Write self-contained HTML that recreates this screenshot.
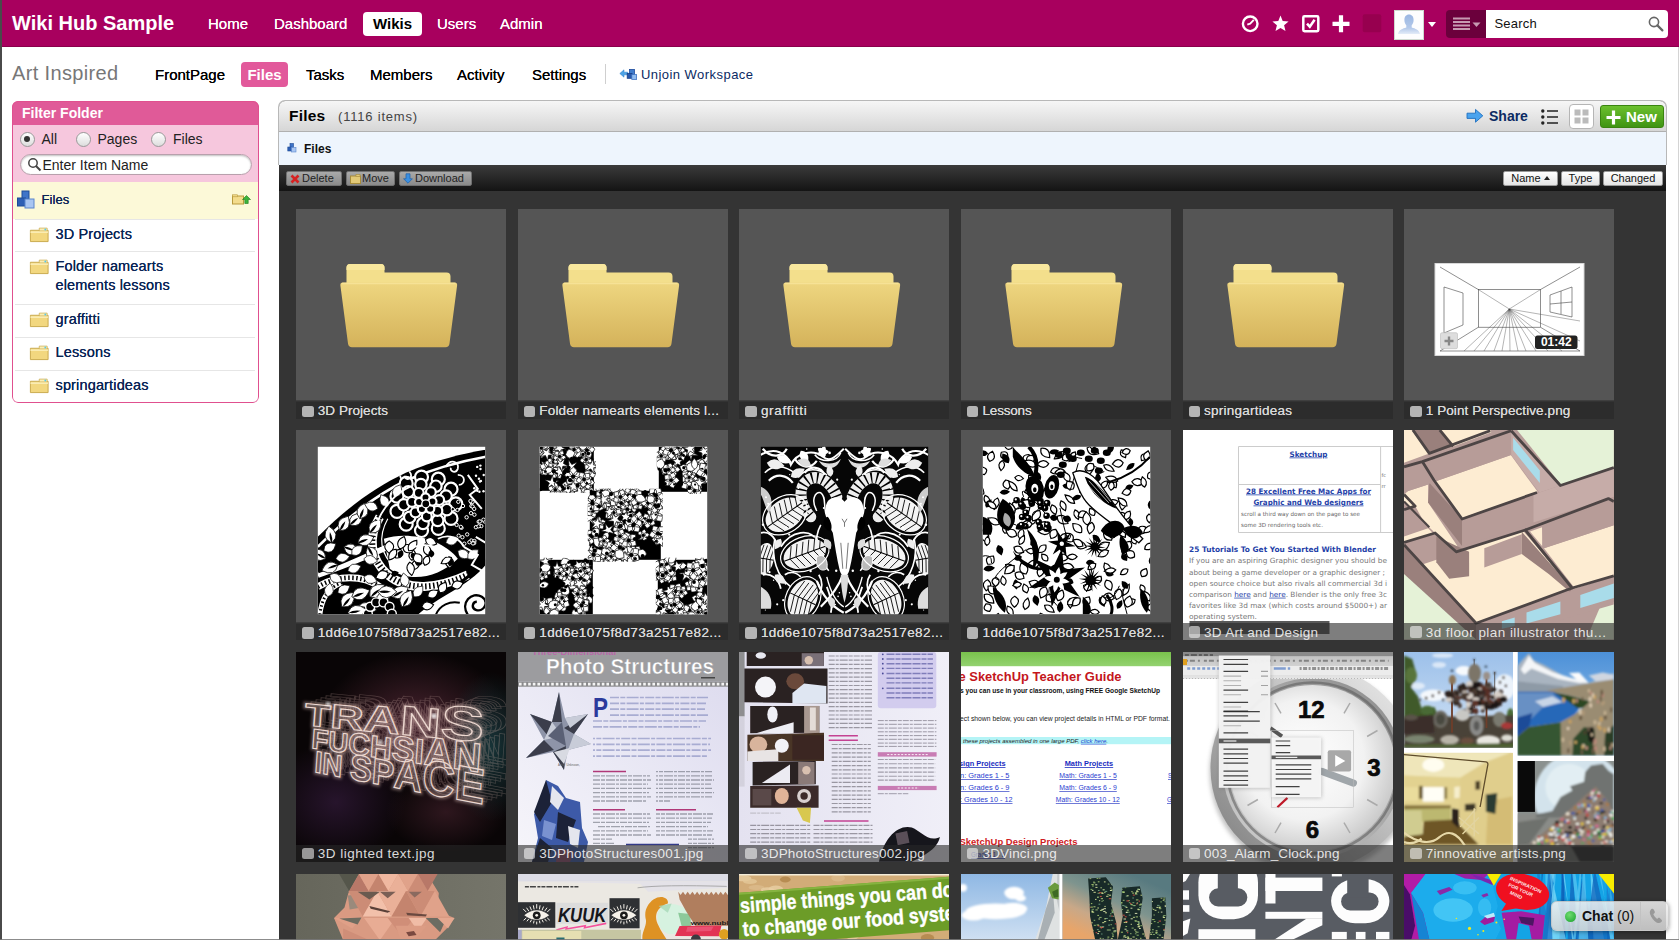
<!DOCTYPE html>
<html lang="en"><head><meta charset="utf-8"><title>Wiki Hub Sample - Files</title>
<style>
*{box-sizing:border-box;margin:0;padding:0}
html,body{width:1679px;height:940px;overflow:hidden;background:#fff}
body{font-family:"Liberation Sans",sans-serif;color:#000;position:relative}
.abs{position:absolute}
#edge{left:0;top:0;width:2px;height:940px;background:#4a4a4a;z-index:50}
#top{left:0;top:0;width:1679px;height:47px;background:#a8005e;border-bottom:1px solid #8a004c}
#brand{left:12px;top:11px;font-size:20px;font-weight:bold;color:#fff;line-height:24px;white-space:nowrap}
.tn{top:14px;font-size:15px;color:#fff;line-height:20px;white-space:nowrap;text-shadow:0 0 .4px #fff}
#wikis{left:363px;top:12px;width:59px;height:24px;background:#fff;border-radius:4px;color:#000;font-weight:bold;font-size:15px;line-height:24px;text-align:center}
#sub .sn{top:65px;font-size:15px;line-height:20px;color:#000;white-space:nowrap;text-shadow:0 0 .3px #000}
#ws{left:12px;top:61px;font-size:20px;line-height:24px;color:#777;white-space:nowrap;letter-spacing:.35px}
#filestab{left:241px;top:62px;width:47px;height:25px;background:#e2599b;border-radius:4px;color:#fff;font-weight:bold;font-size:15px;line-height:25px;text-align:center}
#sep{left:604.8px;top:64px;width:1.6px;height:20px;background:#cfcfcf}
#unjoin{left:641px;top:66px;font-size:13px;line-height:18px;color:#0b2a63;white-space:nowrap;letter-spacing:.45px}
/* sidebar */
#side{left:12px;top:101px;width:247px;height:302px;border-radius:6px;background:#fff;overflow:hidden}
#side:after{content:"";position:absolute;left:0;top:0;right:0;bottom:0;border:1.5px solid #e0508f;border-radius:6px}
#side .hd{left:0;top:0;width:248px;height:24px;background:#e05a98;color:#fff;font-weight:bold;font-size:14px;line-height:25.5px;padding-left:10px}
#side .flt{left:0;top:24px;width:248px;height:57px;background:#f6c7dd}
.radio{width:15px;height:15px;border-radius:50%;border:1px solid #999;background:linear-gradient(#fff,#ddd);top:30.5px}
.rl{top:29px;font-size:14px;line-height:18px;color:#222}
#fin{left:7.5px;top:52.5px;width:232px;height:21.5px;border:1px solid #b8a0ac;border-radius:12px;background:#fff;box-shadow:inset 0 1px 2px rgba(0,0,0,.25)}
#fin span{position:absolute;left:22px;top:1px;font-size:14px;line-height:18px;color:#222;white-space:nowrap}
#side .root{left:0;top:81px;width:248px;height:37px;background:#fcf9d8}
.fr{left:3px;width:240px;border-top:1px solid #e6e6e6}
.fr span{position:absolute;left:40.5px;font-size:14.5px;line-height:19.4px;color:#0a2455;white-space:nowrap;letter-spacing:.15px;text-shadow:0 0 .3px #0a2455}
.fi{position:absolute;left:14px}
/* main panel */
#panel{left:279px;top:101px;width:1387.3px;height:845px;border-radius:6px 6px 0 0;overflow:hidden;background:#343434}
#pbord{left:278px;top:100px;width:1389.3px;height:65px;border:1px solid #b8b8b8;border-bottom:none;border-radius:7px 7px 0 0;z-index:5;pointer-events:none}
#bedge{left:0;top:939px;width:1679px;height:1px;background:rgba(120,120,120,.85);z-index:60}
#redge{left:1678px;top:47px;width:1px;height:893px;background:#d4d4d4}
#ph{left:0;top:0;width:1389px;height:31px;background:linear-gradient(#f6f6f6,#d6d6d6);border-bottom:1px solid #b0b0b0}
#ph b{position:absolute;left:10px;top:5px;font-size:15.5px;letter-spacing:.2px;line-height:20px}
#ph i{position:absolute;left:59px;top:7px;font-style:normal;font-size:13px;line-height:18px;color:#444;letter-spacing:.8px}
#bc{left:0;top:31px;width:1389px;height:33px;background:#eef5fd}
#bc b{position:absolute;left:25px;top:8px;font-size:12px;line-height:18px;color:#111}
#tb{left:0;top:64px;width:1389px;height:26px;background:linear-gradient(#3b3b3b,#141414)}
.gb{position:absolute;top:6px;height:15px;border-radius:2px;background:linear-gradient(#aaa,#8a8a8a);border:1px solid #707070;color:#222;font-size:11px;line-height:13px;white-space:nowrap}
.wb{position:absolute;top:6px;height:15px;border-radius:2px;background:linear-gradient(#fff,#e4e4e4);border:1px solid #999;color:#111;font-size:11px;line-height:13px;text-align:center;white-space:nowrap}
.tile{position:absolute;width:210px;height:210px;background:#555;overflow:hidden}
.tile svg{position:absolute;left:0;top:0}
.lb{position:absolute;left:0;bottom:0;width:210px;height:16.5px;background:#2c2c2c;color:#d8d8d8;font-size:13.5px;line-height:16.5px;box-shadow:0 -1.6px 0 #333;white-space:nowrap;overflow:hidden;text-shadow:0 0 .3px #ddd}
.lb.ov{background:rgba(40,40,40,.6);color:rgba(255,255,255,.85);text-shadow:none;box-shadow:none;height:17.5px;line-height:17.5px}
.lb em{position:absolute;left:6px;top:3.5px;width:11.4px;height:11.4px;border-radius:2.5px;background:#b4b4b4}
.lb.ov em{background:rgba(255,255,255,.55)}
.lb span{position:absolute;left:21.5px;top:.8px}
#chat{left:1551px;top:901px;width:118px;height:29.5px;border-radius:6px;background:linear-gradient(rgba(240,240,240,.86),rgba(214,214,214,.86));border:1px solid rgba(190,190,190,.55);box-shadow:0 1px 4px rgba(0,0,0,.4);z-index:20}
</style></head><body>
<div id="edge" class="abs"></div>
<div id="top" class="abs">
 <div id="brand" class="abs">Wiki Hub Sample</div>
 <div class="tn abs" style="left:208px">Home</div>
 <div class="tn abs" style="left:274px">Dashboard</div>
 <div id="wikis" class="abs">Wikis</div>
 <div class="tn abs" style="left:437px">Users</div>
 <div class="tn abs" style="left:500px">Admin</div>
 <svg class="abs" style="left:1236px;top:8px" width="150" height="32" viewBox="0 0 150 32">
  <circle cx="14.200" cy="15.800" r="7.300" fill="none" stroke="#fff" stroke-width="2.400"/>
  <path d="M11.300 16.600L14.200 15.600L17.800 11.800" stroke="#fff" stroke-width="1.900" fill="none" stroke-linejoin="round"/>
  <path d="M44.500 7.600l2.200 5.500 5.900.4-4.500 3.800 1.400 5.700-5-3.100-5 3.100 1.400-5.700-4.500-3.800 5.900-.4z" fill="#fff"/>
  <rect x="67.300" y="8.300" width="15" height="15" rx="1.200" fill="none" stroke="#fff" stroke-width="2.500"/>
  <path d="M71 15.600l2.800 3.100 4.800-7" stroke="#fff" stroke-width="2.500" fill="none"/>
  <path d="M105 7.300v17M96.500 15.800h17" stroke="#fff" stroke-width="4.200" fill="none"/>
  <rect x="126.700" y="6.200" width="18.600" height="18" rx="2" fill="#97004f"/>
 </svg>
 <div class="abs" style="left:1393.5px;top:9.5px;width:30px;height:30px;background:#fff;border:1px solid #cfd8cf;overflow:hidden">
  <svg width="28" height="28" viewBox="0 0 28 28"><defs><linearGradient id="avg" x1="0" y1="0" x2="0" y2="1"><stop offset="0" stop-color="#9ab6e2"/><stop offset=".7" stop-color="#b4c9ea"/><stop offset="1" stop-color="#e4ecf8"/></linearGradient></defs><rect width="28" height="28" fill="#fdfdfe"/><path d="M14 3.500c3 0 4.600 2.300 4.600 5.500 0 2.300-.8 4.200-1.900 5.300v2.200c3.500 1 7.300 2.300 8.300 6.500H3c1-4.200 4.800-5.500 8.300-6.500v-2.200C10.200 13.200 9.400 11.300 9.400 9c0-3.200 1.600-5.500 4.600-5.500z" fill="url(#avg)"/></svg>
 </div>
 <div class="abs" style="left:1428px;top:22px;border-left:4.5px solid transparent;border-right:4.5px solid transparent;border-top:5px solid #fff"></div>
 <div class="abs" style="left:1446px;top:9.5px;width:40px;height:28px;background:#6b003c;border-radius:4px 0 0 4px">
  <svg width="40" height="28" viewBox="0 0 40 28"><path d="M7 8.5h17M7 12h17M7 15.5h17M7 19h17" stroke="#c79bb2" stroke-width="1.8"/><path d="M26.5 12.5h8l-4 4.4z" fill="#c79bb2"/></svg>
 </div>
 <div class="abs" style="left:1485.5px;top:9.5px;width:182px;height:28px;background:#fff;border-radius:0 4px 4px 0">
  <span class="abs" style="left:9px;top:5px;font-size:13px;line-height:18px;color:#111;letter-spacing:.2px">Search</span>
  <svg class="abs" style="left:161px;top:5px" width="18" height="18" viewBox="0 0 18 18"><circle cx="7" cy="7" r="4.6" fill="none" stroke="#666" stroke-width="1.6"/><path d="M10.4 10.4l5 5" stroke="#666" stroke-width="2.2" stroke-linecap="round"/></svg>
 </div>
</div>
<div id="sub">
 <div id="ws" class="abs">Art Inspired</div>
 <div class="sn abs" style="left:155px">FrontPage</div>
 <div id="filestab" class="abs">Files</div>
 <div class="sn abs" style="left:306px">Tasks</div>
 <div class="sn abs" style="left:370px">Members</div>
 <div class="sn abs" style="left:457px">Activity</div>
 <div class="sn abs" style="left:532px">Settings</div>
 <div id="sep" class="abs"></div>
 <svg class="abs" style="left:619px;top:67px" width="19" height="14" viewBox="0 0 19 14"><path d="M.8 6.500L5 2.800V5.200H8.800V7.800H5V10.200z" fill="#4ea4e6" stroke="#2a7cc8" stroke-width=".5"/><rect x="10.500" y="2.400" width="5" height="5" fill="#3f7ccc" stroke="#1f4c9c" stroke-width=".8"/><rect x="8.200" y="6.500" width="4.800" height="4.800" fill="#2558ac" stroke="#173f88" stroke-width=".8"/><rect x="12.800" y="7.600" width="4.800" height="4.800" fill="#8fbcf0" stroke="#3f74c4" stroke-width=".8"/></svg>
 <div id="unjoin" class="abs">Unjoin Workspace</div>
</div>
<div id="side" class="abs">
 <div class="hd abs">Filter Folder</div>
 <div class="flt abs"></div>
 <div class="radio abs" style="left:7.500px"><i style="position:absolute;left:3.5px;top:3.5px;width:6px;height:6px;border-radius:50%;background:#333"></i></div>
 <div class="rl abs" style="left:29.5px">All</div>
 <div class="radio abs" style="left:63.500px"></div>
 <div class="rl abs" style="left:85.500px">Pages</div>
 <div class="radio abs" style="left:139px"></div>
 <div class="rl abs" style="left:161px">Files</div>
 <div id="fin" class="abs"><svg style="position:absolute;left:6px;top:2.500px" width="15" height="15" viewBox="0 0 15 15"><circle cx="6" cy="6" r="4.2" fill="none" stroke="#444" stroke-width="1.5"/><path d="M9 9l4.5 4.5" stroke="#444" stroke-width="2"/></svg><span>Enter Item Name</span></div>
 <div class="root abs">
  <svg class="abs" style="left:4px;top:8px" width="20" height="20" viewBox="0 0 20 20"><rect x="6" y="1" width="7" height="8" fill="#3f74c8" stroke="#1e4c98"/><rect x="1.5" y="8" width="8" height="8" fill="#2d5fb4" stroke="#1e4c98"/><rect x="9" y="9" width="9" height="9" fill="#a9c6f2" stroke="#5a86cc"/></svg>
  <span class="abs" style="left:29.500px;top:8px;font-size:13px;line-height:20px;color:#0a2455;letter-spacing:.1px;text-shadow:0 0 .3px #0a2455">Files</span>
  <svg class="abs" style="left:220px;top:12px" width="19" height="12" viewBox="0 0 19 12"><rect x=".5" y="2" width="11" height="8" fill="#f3dc8c" stroke="#b89a3c"/><rect x=".5" y=".8" width="5" height="2" fill="#f3dc8c" stroke="#b89a3c" stroke-width=".6"/><path d="M14.5 1.5l4 4h-2.3v4h-3.4v-4h-2.3z" fill="#3cb43c" stroke="#1c7c1c" stroke-width=".6"/></svg>
 </div>
<div class="fr abs" style="top:118px;height:32.5px"><svg class="fi" style="top:6px" width="20.500" height="17" viewBox="0 0 22 18" preserveAspectRatio="none"><path d="M1.500 4.500h19v12h-19z" fill="#f2d77f" stroke="#c8a84a"/><path d="M11 2.200h8.500v3h-8.500z" fill="#fbeeb5" stroke="#c8a84a" stroke-width=".7"/><path d="M1.500 6.500h19" stroke="#fdf3c4" stroke-width="1.400"/><circle cx="17.500" cy="3.700" r="1" fill="#5ac8e8"/></svg><span style="top:5px">3D Projects</span></div>
<div class="fr abs" style="top:150px;height:53px"><svg class="fi" style="top:6px" width="20.500" height="17" viewBox="0 0 22 18" preserveAspectRatio="none"><path d="M1.500 4.500h19v12h-19z" fill="#f2d77f" stroke="#c8a84a"/><path d="M11 2.200h8.500v3h-8.500z" fill="#fbeeb5" stroke="#c8a84a" stroke-width=".7"/><path d="M1.500 6.500h19" stroke="#fdf3c4" stroke-width="1.400"/><circle cx="17.500" cy="3.700" r="1" fill="#5ac8e8"/></svg><span style="top:5px">Folder namearts<br>elements lessons</span></div>
<div class="fr abs" style="top:203px;height:33px"><svg class="fi" style="top:6px" width="20.500" height="17" viewBox="0 0 22 18" preserveAspectRatio="none"><path d="M1.500 4.500h19v12h-19z" fill="#f2d77f" stroke="#c8a84a"/><path d="M11 2.200h8.500v3h-8.500z" fill="#fbeeb5" stroke="#c8a84a" stroke-width=".7"/><path d="M1.500 6.500h19" stroke="#fdf3c4" stroke-width="1.400"/><circle cx="17.500" cy="3.700" r="1" fill="#5ac8e8"/></svg><span style="top:5px">graffitti</span></div>
<div class="fr abs" style="top:236px;height:32.5px"><svg class="fi" style="top:6px" width="20.500" height="17" viewBox="0 0 22 18" preserveAspectRatio="none"><path d="M1.500 4.500h19v12h-19z" fill="#f2d77f" stroke="#c8a84a"/><path d="M11 2.200h8.500v3h-8.500z" fill="#fbeeb5" stroke="#c8a84a" stroke-width=".7"/><path d="M1.500 6.500h19" stroke="#fdf3c4" stroke-width="1.400"/><circle cx="17.500" cy="3.700" r="1" fill="#5ac8e8"/></svg><span style="top:5px">Lessons</span></div>
<div class="fr abs" style="top:268.5px;height:33px"><svg class="fi" style="top:6px" width="20.500" height="17" viewBox="0 0 22 18" preserveAspectRatio="none"><path d="M1.500 4.500h19v12h-19z" fill="#f2d77f" stroke="#c8a84a"/><path d="M11 2.200h8.500v3h-8.500z" fill="#fbeeb5" stroke="#c8a84a" stroke-width=".7"/><path d="M1.500 6.500h19" stroke="#fdf3c4" stroke-width="1.400"/><circle cx="17.500" cy="3.700" r="1" fill="#5ac8e8"/></svg><span style="top:5px">springartideas</span></div>

</div>
<div id="pbord" class="abs"></div><div id="redge" class="abs"></div><div id="bedge" class="abs"></div>
<div id="panel" class="abs">
 <div id="ph" class="abs"><b>Files</b><i>(1116 items)</i>
  <svg class="abs" style="left:1187px;top:6px" width="18" height="18" viewBox="0 0 18 18"><path d="M1 6.2h8.5V2.4l7.3 6.4-7.3 6.4v-3.8H1z" fill="#4aa3ee" stroke="#1f6fc0" stroke-width=".9"/></svg>
  <span class="abs" style="left:1210px;top:5px;font-size:14px;font-weight:bold;line-height:20px;color:#0b2a63">Share</span>
  <svg class="abs" style="left:1261px;top:7px" width="20" height="18" viewBox="0 0 20 18"><circle cx="2.8" cy="3" r="1.7" fill="#222"/><circle cx="2.8" cy="9" r="1.7" fill="#222"/><circle cx="2.8" cy="15" r="1.7" fill="#222"/><path d="M7 3h11M7 9h11M7 15h11" stroke="#222" stroke-width="1.5"/></svg>
  <div class="abs" style="left:1290px;top:3px;width:25px;height:25px;border:1px solid #b5b5b5;border-radius:4px;background:#fff">
   <svg width="23" height="23" viewBox="0 0 23 23"><rect x="4.5" y="4.5" width="6" height="6" fill="#bbb"/><rect x="12.5" y="4.5" width="6" height="6" fill="#bbb"/><rect x="4.5" y="12.5" width="6" height="6" fill="#bbb"/><rect x="12.5" y="12.5" width="6" height="6" fill="#bbb"/></svg></div>
  <div class="abs" style="left:1321px;top:4px;width:64px;height:23px;border-radius:3px;background:linear-gradient(#6cc02e,#3f9412);border:1px solid #3a8410">
   <svg class="abs" style="left:4px;top:3px" width="17" height="17" viewBox="0 0 17 17"><path d="M8.5 1.5v14M1.5 8.5h14" stroke="#fff" stroke-width="3.2"/></svg>
   <span class="abs" style="left:25px;top:1px;font-size:15px;font-weight:bold;line-height:20px;color:#fff">New</span></div>
 </div>
 <div id="bc" class="abs">
  <svg class="abs" style="left:8px;top:11px" width="10" height="10" viewBox="0 0 10 10"><rect x="3" y=".5" width="3.5" height="4" fill="#3f74c8" stroke="#1e4c98" stroke-width=".6"/><rect x=".8" y="4" width="4" height="4" fill="#2d5fb4" stroke="#1e4c98" stroke-width=".6"/><rect x="4.5" y="4.5" width="4.5" height="4.5" fill="#a9c6f2" stroke="#5a86cc" stroke-width=".6"/></svg>
  <b>Files</b></div>
 <div id="tb" class="abs">
  <div class="gb" style="left:7px;width:56px"><svg style="position:absolute;left:3px;top:2px" width="10" height="10" viewBox="0 0 10 10"><path d="M1.5 1.5l7 7M8.500 1.5l-7 7" stroke="#d62222" stroke-width="2.6"/></svg><span style="position:absolute;left:15px;top:0">Delete</span></div>
  <div class="gb" style="left:67px;width:49px"><svg style="position:absolute;left:3px;top:2px" width="11" height="10" viewBox="0 0 11 10"><rect x=".5" y="2" width="10" height="7.500" fill="#e2c977" stroke="#a78c3a"/><rect x="6" y=".6" width="4" height="2" fill="#e2c977" stroke="#a78c3a" stroke-width=".6"/></svg><span style="position:absolute;left:15px;top:0">Move</span></div>
  <div class="gb" style="left:120px;width:73px"><svg style="position:absolute;left:3px;top:1px" width="10" height="11" viewBox="0 0 10 11"><path d="M3 .8h4v5h2.400L5 10.200.6 5.800H3z" fill="#3b8fe0" stroke="#1c5ea8" stroke-width=".7"/></svg><span style="position:absolute;left:15px;top:0">Download</span></div>
  <div class="wb" style="left:1224px;width:55px">Name <i style="display:inline-block;border-left:3.5px solid transparent;border-right:3.5px solid transparent;border-bottom:4.5px solid #222;margin-bottom:2px"></i></div>
  <div class="wb" style="left:1282px;width:39px">Type</div>
  <div class="wb" style="left:1324px;width:60px">Changed</div>
 </div>
<div class="tile" style="left:17.2px;top:107.8px"><svg width="210" height="191" viewBox="0 0 210 191"><defs><linearGradient id="fg0" x1="0" y1="0" x2="0" y2="1"><stop offset="0" stop-color="#eed680"/><stop offset="1" stop-color="#d4b25a"/></linearGradient></defs>
<path d="M50.500 58.500q0-3.500 3.500-3.500h31q3.500 0 3.500 3.500v5h62q4 0 4 4v12h-104z" fill="#f3df8c"/>
<path d="M50.500 59q0-4 3.500-4h31q3.500 0 3.500 4v2h-38z" fill="#f9e89e"/>
<path d="M47 73.500h111.500q3 0 2.600 3l-7.600 58q-.5 3.800-4 3.800h-93.500q-3.500 0-4-3.800l-7.600-58q-.4-3 2.600-3z" fill="url(#fg0)"/>
<path d="M46 74.500h113.500" stroke="#f6e296" stroke-width="1.600"/>
</svg>
<div class="lb"><em></em><span style="letter-spacing:0.06px">3D Projects</span></div></div>
<div class="tile" style="left:238.8px;top:107.8px"><svg width="210" height="191" viewBox="0 0 210 191"><defs><linearGradient id="fg1" x1="0" y1="0" x2="0" y2="1"><stop offset="0" stop-color="#eed680"/><stop offset="1" stop-color="#d4b25a"/></linearGradient></defs>
<path d="M50.500 58.500q0-3.500 3.500-3.500h31q3.500 0 3.500 3.500v5h62q4 0 4 4v12h-104z" fill="#f3df8c"/>
<path d="M50.500 59q0-4 3.500-4h31q3.500 0 3.500 4v2h-38z" fill="#f9e89e"/>
<path d="M47 73.500h111.500q3 0 2.600 3l-7.600 58q-.5 3.800-4 3.800h-93.500q-3.500 0-4-3.800l-7.600-58q-.4-3 2.600-3z" fill="url(#fg1)"/>
<path d="M46 74.500h113.500" stroke="#f6e296" stroke-width="1.600"/>
</svg>
<div class="lb"><em></em><span style="letter-spacing:0.17px">Folder namearts elements l...</span></div></div>
<div class="tile" style="left:460.4px;top:107.8px"><svg width="210" height="191" viewBox="0 0 210 191"><defs><linearGradient id="fg2" x1="0" y1="0" x2="0" y2="1"><stop offset="0" stop-color="#eed680"/><stop offset="1" stop-color="#d4b25a"/></linearGradient></defs>
<path d="M50.500 58.500q0-3.500 3.500-3.500h31q3.500 0 3.500 3.500v5h62q4 0 4 4v12h-104z" fill="#f3df8c"/>
<path d="M50.500 59q0-4 3.500-4h31q3.500 0 3.500 4v2h-38z" fill="#f9e89e"/>
<path d="M47 73.500h111.500q3 0 2.600 3l-7.600 58q-.5 3.800-4 3.800h-93.500q-3.500 0-4-3.800l-7.600-58q-.4-3 2.600-3z" fill="url(#fg2)"/>
<path d="M46 74.500h113.500" stroke="#f6e296" stroke-width="1.600"/>
</svg>
<div class="lb"><em></em><span style="letter-spacing:0.69px">graffitti</span></div></div>
<div class="tile" style="left:682.0px;top:107.8px"><svg width="210" height="191" viewBox="0 0 210 191"><defs><linearGradient id="fg3" x1="0" y1="0" x2="0" y2="1"><stop offset="0" stop-color="#eed680"/><stop offset="1" stop-color="#d4b25a"/></linearGradient></defs>
<path d="M50.500 58.500q0-3.500 3.500-3.500h31q3.500 0 3.500 3.500v5h62q4 0 4 4v12h-104z" fill="#f3df8c"/>
<path d="M50.500 59q0-4 3.500-4h31q3.500 0 3.500 4v2h-38z" fill="#f9e89e"/>
<path d="M47 73.500h111.500q3 0 2.600 3l-7.600 58q-.5 3.800-4 3.800h-93.500q-3.500 0-4-3.800l-7.600-58q-.4-3 2.600-3z" fill="url(#fg3)"/>
<path d="M46 74.500h113.500" stroke="#f6e296" stroke-width="1.600"/>
</svg>
<div class="lb"><em></em><span style="letter-spacing:-0.18px">Lessons</span></div></div>
<div class="tile" style="left:903.6px;top:107.8px"><svg width="210" height="191" viewBox="0 0 210 191"><defs><linearGradient id="fg4" x1="0" y1="0" x2="0" y2="1"><stop offset="0" stop-color="#eed680"/><stop offset="1" stop-color="#d4b25a"/></linearGradient></defs>
<path d="M50.500 58.500q0-3.500 3.500-3.500h31q3.500 0 3.500 3.500v5h62q4 0 4 4v12h-104z" fill="#f3df8c"/>
<path d="M50.500 59q0-4 3.500-4h31q3.500 0 3.500 4v2h-38z" fill="#f9e89e"/>
<path d="M47 73.500h111.500q3 0 2.600 3l-7.600 58q-.5 3.800-4 3.800h-93.500q-3.500 0-4-3.800l-7.600-58q-.4-3 2.600-3z" fill="url(#fg4)"/>
<path d="M46 74.500h113.500" stroke="#f6e296" stroke-width="1.600"/>
</svg>
<div class="lb"><em></em><span style="letter-spacing:0.24px">springartideas</span></div></div>
<div class="tile" style="left:1125.2px;top:107.8px"><svg width="210" height="191" viewBox="0 0 210 191">
<rect x="31" y="54.500" width="149" height="92" fill="#fff" stroke="#d8d8d8" stroke-width="1"/>
<g stroke="#444" stroke-width=".6" fill="none">
<rect x="74.400" y="80.600" width="62" height="37.600"/>
<path d="M36 58l38.400 22.600M176 58l-39.600 22.600M36 142h140M36 142l38.400-23.800M176 142l-39.600-23.800"/>
<path d="M105.300 100L60 142M105.300 100L70 142M105.300 100L80 142M105.300 100L90 142M105.300 100L98 142M105.300 100L106 142M105.300 100L114 142M105.300 100L122 142M105.300 100L132 142M105.300 100L144 142M105.300 100L158 142M105.300 100L176 132M105.300 100L74.400 80.600M105.300 100L136.400 80.600M105.300 100L176 112" stroke-width=".4"/>
<path d="M40 78v46l19 -8v-32zM146 86l22-8v30l-22-5zM157 82v23M146 95l22-2M148 128h20v10h-20z"/>
</g>
<rect x="36.500" y="123.700" width="17" height="16" rx="1.500" fill="#ddd" stroke="#bbb" stroke-width=".6"/>
<path d="M45 127.500v9M40.500 132h9" stroke="#888" stroke-width="2.400"/>
<rect x="131" y="126.600" width="42.500" height="13.400" rx="2.500" fill="#222"/>
<text x="152.300" y="137.400" font-family="Liberation Sans, sans-serif" font-size="12" font-weight="bold" fill="#fff" text-anchor="middle">01:42</text>
</svg>
<div class="lb"><em></em><span style="letter-spacing:0.09px">1 Point Perspective.png</span></div></div>
<div class="tile" style="left:17.2px;top:329.4px"><svg width="210" height="193" viewBox="0 0 210 193"><defs><clipPath id="bwa"><path d="M0 90C30 60 58 40 88 26C118 13 145 7 167.4 3V167.4H0z"/></clipPath><clipPath id="bwa0"><rect width="167.4" height="167.4"/></clipPath></defs><g transform="translate(21.8 16.8)"><rect width="167.4" height="167.4" fill="#fff"/><g clip-path="url(#bwa0)"><g clip-path="url(#bwa)"><rect width="168" height="168" fill="#000"/><path d="M0 100C32 68 60 47 90 33C120 20 146 14 168 10" fill="none" stroke="#fff" stroke-width="2.6"/><path d="M0 128C30 118 52 108 70 100" fill="none" stroke="#fff" stroke-width="6"/><path d="M0 124C30 113 52 102 68 95" fill="none" stroke="#000" stroke-width="5"/><circle cx="138" cy="57" r="6.5" fill="#000" stroke="#fff" stroke-width="2.2"/><circle cx="133.2" cy="71.6" r="6.5" fill="#000" stroke="#fff" stroke-width="2.2"/><circle cx="120.5" cy="81.6" r="6.5" fill="#000" stroke="#fff" stroke-width="2.2"/><circle cx="103.7" cy="83.7" r="6.5" fill="#000" stroke="#fff" stroke-width="2.2"/><circle cx="88.4" cy="77.4" r="6.5" fill="#000" stroke="#fff" stroke-width="2.2"/><circle cx="79.2" cy="64.6" r="6.5" fill="#000" stroke="#fff" stroke-width="2.2"/><circle cx="79.2" cy="49.4" r="6.5" fill="#000" stroke="#fff" stroke-width="2.2"/><circle cx="88.4" cy="36.6" r="6.5" fill="#000" stroke="#fff" stroke-width="2.2"/><circle cx="103.7" cy="30.3" r="6.5" fill="#000" stroke="#fff" stroke-width="2.2"/><circle cx="120.5" cy="32.4" r="6.5" fill="#000" stroke="#fff" stroke-width="2.2"/><circle cx="133.2" cy="42.4" r="6.5" fill="#000" stroke="#fff" stroke-width="2.2"/><circle cx="129" cy="62.9" r="5.7" fill="#000" stroke="#fff" stroke-width="2.2"/><circle cx="119.9" cy="73.6" r="5.7" fill="#000" stroke="#fff" stroke-width="2.2"/><circle cx="105.2" cy="76.6" r="5.7" fill="#000" stroke="#fff" stroke-width="2.2"/><circle cx="91.9" cy="70.5" r="5.7" fill="#000" stroke="#fff" stroke-width="2.2"/><circle cx="86" cy="58" r="5.7" fill="#000" stroke="#fff" stroke-width="2.2"/><circle cx="90.5" cy="45" r="5.7" fill="#000" stroke="#fff" stroke-width="2.2"/><circle cx="103.1" cy="37.7" r="5.7" fill="#000" stroke="#fff" stroke-width="2.2"/><circle cx="118.1" cy="39.4" r="5.7" fill="#000" stroke="#fff" stroke-width="2.2"/><circle cx="128.3" cy="49.3" r="5.7" fill="#000" stroke="#fff" stroke-width="2.2"/><circle cx="119.6" cy="64.1" r="4.9" fill="#000" stroke="#fff" stroke-width="2.2"/><circle cx="109" cy="69.6" r="4.9" fill="#000" stroke="#fff" stroke-width="2.2"/><circle cx="97.7" cy="65.6" r="4.9" fill="#000" stroke="#fff" stroke-width="2.2"/><circle cx="94.2" cy="55.1" r="4.9" fill="#000" stroke="#fff" stroke-width="2.2"/><circle cx="101" cy="46.1" r="4.9" fill="#000" stroke="#fff" stroke-width="2.2"/><circle cx="113.1" cy="45.3" r="4.9" fill="#000" stroke="#fff" stroke-width="2.2"/><circle cx="121.4" cy="53.3" r="4.9" fill="#000" stroke="#fff" stroke-width="2.2"/><circle cx="112.4" cy="61.9" r="4.1" fill="#000" stroke="#fff" stroke-width="2.2"/><circle cx="104.1" cy="62.2" r="4.1" fill="#000" stroke="#fff" stroke-width="2.2"/><circle cx="101.3" cy="55.3" r="4.1" fill="#000" stroke="#fff" stroke-width="2.2"/><circle cx="107.7" cy="50.7" r="4.1" fill="#000" stroke="#fff" stroke-width="2.2"/><circle cx="114.6" cy="54.8" r="4.1" fill="#000" stroke="#fff" stroke-width="2.2"/><circle cx="108" cy="57" r="4" fill="#000" stroke="#fff" stroke-width="1.3"/><path d="M84 33c-6-8 6-14 9-6c2 6-6 7-6 2" fill="none" stroke="#fff" stroke-width="1.8"/><path d="M128 20c4-8 14-6 12 2c-2 5-8 3-7-1M140 28c8 0 8 10 1 10" fill="none" stroke="#fff" stroke-width="1.8"/><circle cx="138.8" cy="78.1" r="1.7" fill="#000" stroke="#fff" stroke-width="1"/><circle cx="143.7" cy="81" r="1.7" fill="#000" stroke="#fff" stroke-width="1"/><circle cx="153.2" cy="55.1" r="1.7" fill="#000" stroke="#fff" stroke-width="1"/><circle cx="139.6" cy="63.2" r="1.7" fill="#000" stroke="#fff" stroke-width="1"/><circle cx="166.8" cy="74.6" r="1.7" fill="#000" stroke="#fff" stroke-width="1"/><circle cx="160.9" cy="74.9" r="1.7" fill="#000" stroke="#fff" stroke-width="1"/><circle cx="153.6" cy="59.2" r="1.7" fill="#000" stroke="#fff" stroke-width="1"/><circle cx="153.5" cy="93.7" r="1.7" fill="#000" stroke="#fff" stroke-width="1"/><circle cx="149.4" cy="87.6" r="1.7" fill="#000" stroke="#fff" stroke-width="1"/><circle cx="154.8" cy="55.1" r="1.7" fill="#000" stroke="#fff" stroke-width="1"/><circle cx="158.1" cy="80.4" r="1.7" fill="#000" stroke="#fff" stroke-width="1"/><circle cx="162" cy="74.7" r="1.7" fill="#000" stroke="#fff" stroke-width="1"/><circle cx="156.6" cy="94.2" r="1.7" fill="#000" stroke="#fff" stroke-width="1"/><circle cx="156.4" cy="96.2" r="1.7" fill="#000" stroke="#fff" stroke-width="1"/><circle cx="144.6" cy="90.4" r="1.7" fill="#000" stroke="#fff" stroke-width="1"/><circle cx="146.5" cy="96.9" r="1.7" fill="#000" stroke="#fff" stroke-width="1"/><circle cx="135" cy="62.4" r="1.7" fill="#000" stroke="#fff" stroke-width="1"/><circle cx="165.7" cy="72.9" r="1.7" fill="#000" stroke="#fff" stroke-width="1"/><circle cx="153.2" cy="66.4" r="1.7" fill="#000" stroke="#fff" stroke-width="1"/><circle cx="148.8" cy="70.5" r="1.7" fill="#000" stroke="#fff" stroke-width="1"/><circle cx="143" cy="80.1" r="1.7" fill="#000" stroke="#fff" stroke-width="1"/><circle cx="151.6" cy="95.4" r="1.7" fill="#000" stroke="#fff" stroke-width="1"/><circle cx="155.2" cy="96.6" r="1.7" fill="#000" stroke="#fff" stroke-width="1"/><circle cx="154.8" cy="59.8" r="1.7" fill="#000" stroke="#fff" stroke-width="1"/><circle cx="163.5" cy="79.3" r="1.7" fill="#000" stroke="#fff" stroke-width="1"/><circle cx="156.4" cy="62.1" r="1.7" fill="#000" stroke="#fff" stroke-width="1"/><circle cx="160.8" cy="79.5" r="1.7" fill="#000" stroke="#fff" stroke-width="1"/><circle cx="140.5" cy="55" r="1.7" fill="#000" stroke="#fff" stroke-width="1"/><circle cx="145.2" cy="59.2" r="1.7" fill="#000" stroke="#fff" stroke-width="1"/><circle cx="140.9" cy="88.9" r="1.7" fill="#000" stroke="#fff" stroke-width="1"/><circle cx="152.7" cy="54.2" r="1.7" fill="#000" stroke="#fff" stroke-width="1"/><circle cx="156.6" cy="67.9" r="1.7" fill="#000" stroke="#fff" stroke-width="1"/><circle cx="165.7" cy="44.5" r="1.2" fill="#fff"/><circle cx="161.6" cy="45" r="1.2" fill="#fff"/><circle cx="159.4" cy="20.1" r="1.2" fill="#fff"/><circle cx="162.6" cy="18.8" r="1.2" fill="#fff"/><circle cx="158.2" cy="29" r="1.2" fill="#fff"/><circle cx="162.7" cy="22.2" r="1.2" fill="#fff"/><circle cx="156.5" cy="41.4" r="1.2" fill="#fff"/><circle cx="159.5" cy="43.9" r="1.2" fill="#fff"/><circle cx="165.9" cy="28.2" r="1.2" fill="#fff"/><circle cx="161.1" cy="32" r="1.2" fill="#fff"/><circle cx="163.1" cy="34.1" r="1.2" fill="#fff"/><circle cx="162.2" cy="34.7" r="1.2" fill="#fff"/><path d="M62 70C50 90 52 112 70 128C90 145 120 142 150 128" fill="none" stroke="#fff" stroke-width="9"/><path d="M62 70C50 90 52 112 70 128C90 145 120 142 150 128" fill="none" stroke="#000" stroke-width="6" stroke-dasharray="1.5 2.5"/><path d="M70 72C60 90 62 108 78 121" fill="none" stroke="#fff" stroke-width="1.2"/><path d="M66 92C90 84 125 92 140 112C120 132 90 136 72 122z" fill="#fff"/><path d="M131.1 110.3Q123.4 115.3 132 121.4Q139.6 114.1 131.1 110.3z" fill="#fff" stroke="#000" stroke-width="1.1"/><path d="M134.1 112.3Q127.4 113.4 131.6 119.8Q138.8 117.2 134.1 112.3z" fill="#000"/><path d="M133.6 110.8Q126.4 107.9 123.4 116.7Q132.6 118.3 133.6 110.8z" fill="#fff" stroke="#000" stroke-width="1.1"/><path d="M107.7 92.7Q109.3 101.8 118.9 97.2Q115.1 87.2 107.7 92.7z" fill="#fff" stroke="#000" stroke-width="1.1"/><path d="M110.8 108.8Q116.3 102.1 107.5 96.8Q102.7 105.9 110.8 108.8z" fill="#fff" stroke="#000" stroke-width="1.1"/><path d="M113.8 110.8Q119.5 107.1 113.2 102.8Q107.6 108 113.8 110.8z" fill="#000"/><path d="M71.4 94.2Q62.5 99.1 71.4 106.6Q80.3 99.2 71.4 94.2z" fill="#fff" stroke="#000" stroke-width="1.1"/><path d="M99.7 113.3Q91.5 114.5 95.6 123.1Q104.6 120 99.7 113.3z" fill="#fff" stroke="#000" stroke-width="1.1"/><path d="M94 113.4Q101.6 110.3 95.5 103Q87.5 108.3 94 113.4z" fill="#fff" stroke="#000" stroke-width="1.1"/><path d="M97 115.4Q99.1 121.9 104.9 116.8Q101.2 110.1 97 115.4z" fill="#000"/><path d="M107 118.5Q114.7 116.7 110.5 108.5Q102.1 112.3 107 118.5z" fill="#fff" stroke="#000" stroke-width="1.1"/><path d="M85.5 98.7Q84.3 107.9 94.5 105.4Q93.9 94.9 85.5 98.7z" fill="#fff" stroke="#000" stroke-width="1.1"/><path d="M90.9 104Q99.9 104.4 99 93.6Q88.4 95.4 90.9 104z" fill="#fff" stroke="#000" stroke-width="1.1"/><path d="M93.9 106Q90.2 111.7 97.8 113Q100.7 105.9 93.9 106z" fill="#000"/><path d="M91.9 115.4Q85.5 121.9 94 128.7Q100 119.6 91.9 115.4z" fill="#fff" stroke="#000" stroke-width="1.1"/><path d="M77.9 111.1Q87.1 112.1 83.1 102.6Q72.8 103.2 77.9 111.1z" fill="#fff" stroke="#000" stroke-width="1.1"/><path d="M81.9 102Q91.2 99.9 86.4 89.8Q76.3 94.4 81.9 102z" fill="#fff" stroke="#000" stroke-width="1.1"/><path d="M84.9 104Q78.2 103.3 80.4 110.6Q88.1 110.1 84.9 104z" fill="#000"/><path d="M78.4 102.5Q69.9 102.9 71 113.2Q81.1 110.7 78.4 102.5z" fill="#fff" stroke="#000" stroke-width="1.1"/><path d="M97.1 107.1Q92.3 115.7 103.3 116.3Q106.8 105.9 97.1 107.1z" fill="#fff" stroke="#000" stroke-width="1.1"/><path d="M70.3 126Q61.8 119.9 58 131.3Q69 136.3 70.3 126z" fill="#fff" stroke="#000" stroke-width="1.1"/><path d="M73.3 128Q78.2 132.7 80.9 125.5Q74.5 121.3 73.3 128z" fill="#000"/><path d="M22 84Q34.9 83.6 30.5 69.3Q15.9 72.6 22 84z" fill="#fff" stroke="#000" stroke-width=".8"/><path d="M22 84Q26.3 81.4 27.5 74.5Q22.1 79 22 84z" fill="#000"/><path d="M32 78Q44.3 82.1 45 67.1Q30.1 65.2 32 78z" fill="#fff" stroke="#000" stroke-width=".8"/><path d="M32 78Q36.9 77 40.4 70.9Q33.8 73.3 32 78z" fill="#000"/><path d="M42 72Q54.7 69.4 47.8 56Q34 61.8 42 72z" fill="#fff" stroke="#000" stroke-width=".8"/><path d="M42 72Q45.8 68.7 45.8 61.7Q41.2 67 42 72z" fill="#000"/><path d="M14 96Q23.7 87.4 11 79.3Q2 91.2 14 96z" fill="#fff" stroke="#000" stroke-width=".8"/><path d="M14 96Q15.6 91.3 12.1 85.2Q10.9 92.1 14 96z" fill="#000"/><path d="M26 100Q28.6 112.7 42 105.8Q36.2 92 26 100z" fill="#fff" stroke="#000" stroke-width=".8"/><path d="M26 100Q29.3 103.8 36.3 103.8Q31 99.2 26 100z" fill="#000"/><path d="M40 96Q50.2 104 56 90.2Q42.6 83.3 40 96z" fill="#fff" stroke="#000" stroke-width=".8"/><path d="M40 96Q45 96.8 50.3 92.2Q43.3 92.2 40 96z" fill="#000"/><path d="M52 86Q64.8 87.9 62.9 73Q47.9 73.7 52 86z" fill="#fff" stroke="#000" stroke-width=".8"/><path d="M52 86Q56.7 84.2 59.1 77.6Q53 81.1 52 86z" fill="#000"/><path d="M8 112Q7.6 99.1 -6.7 103.5Q-3.4 118.1 8 112z" fill="#fff" stroke="#000" stroke-width=".8"/><path d="M8 112Q5.4 107.7 -1.5 106.5Q3 111.9 8 112z" fill="#000"/><path d="M20 118Q9.8 110 4 123.8Q17.4 130.7 20 118z" fill="#fff" stroke="#000" stroke-width=".8"/><path d="M20 118Q15 117.2 9.7 121.8Q16.7 121.8 20 118z" fill="#000"/><path d="M50 100Q43.9 111.4 58.5 114.7Q62.9 100.4 50 100z" fill="#fff" stroke="#000" stroke-width=".8"/><path d="M50 100Q50.1 105 55.5 109.5Q54.3 102.6 50 100z" fill="#000"/><path d="M0 140C20 128 45 128 62 140" fill="none" stroke="#fff" stroke-width="7"/><path d="M0 140C20 128 45 128 62 140" fill="none" stroke="#000" stroke-width="4.500" stroke-dasharray="1.5 2.5"/><path d="M2 168C4 150 12 140 24 136" fill="none" stroke="#fff" stroke-width="5"/><path d="M2 168C4 150 12 140 24 136" fill="none" stroke="#000" stroke-width="3" stroke-dasharray="1.5 2.5"/><path d="M24 160Q38.1 161.9 36.2 145.4Q19.7 146.5 24 160z" fill="#fff" stroke="#000" stroke-width=".8"/><path d="M25 160Q29.9 157.9 32.7 150.8Q26.2 154.8 25 160z" fill="#000"/><path d="M34 150Q45.2 158.7 51.9 143.5Q37 136.1 34 150z" fill="#fff" stroke="#000" stroke-width=".8"/><path d="M35 150Q40.3 150.6 46.3 145.9Q38.7 146.1 35 150z" fill="#000"/><path d="M40 160Q45.4 173.1 58.7 163.3Q49.6 149.5 40 160z" fill="#fff" stroke="#000" stroke-width=".8"/><path d="M41 160Q45.3 163.2 52.8 162.1Q46.1 158.5 41 160z" fill="#000"/><path d="M52 150Q65.5 154.3 66.6 137.8Q50.1 135.9 52 150z" fill="#fff" stroke="#000" stroke-width=".8"/><path d="M53 150Q58.2 148.8 62.2 142.3Q55.1 145.1 53 150z" fill="#000"/><path d="M62 160Q75.9 157 68.5 142.1Q53.3 148.8 62 160z" fill="#fff" stroke="#000" stroke-width=".8"/><path d="M63 160Q66.9 156.3 67.1 148.7Q62.4 154.7 63 160z" fill="#000"/><path d="M30 166Q39.6 176.5 48.7 162.7Q35.4 152.9 30 166z" fill="#fff" stroke="#000" stroke-width=".8"/><path d="M31 166Q36.1 167.5 42.8 163.9Q35.3 162.8 31 166z" fill="#000"/><path d="M74 150Q86.6 156.6 90.5 140.5Q74.6 135.8 74 150z" fill="#fff" stroke="#000" stroke-width=".8"/><path d="M75 150Q80.4 149.7 85.4 144Q78 145.5 75 150z" fill="#000"/><path d="M84 160Q98.2 159.4 93.5 143.5Q77.4 147.4 84 160z" fill="#fff" stroke="#000" stroke-width=".8"/><path d="M85 160Q89.5 157 91 149.6Q85.3 154.6 85 160z" fill="#000"/><path d="M60 145Q67.6 157 79 145Q67.6 133 60 145z" fill="#fff" stroke="#000" stroke-width=".8"/><path d="M61 145Q65.8 147.4 73 145Q65.8 142.6 61 145z" fill="#000"/><circle cx="50" cy="167" r="4.5" fill="#000" stroke="#fff" stroke-width="1.4"/><circle cx="52.3" cy="159.9" r="4.5" fill="#000" stroke="#fff" stroke-width="1.4"/><circle cx="58.3" cy="155.6" r="4.5" fill="#000" stroke="#fff" stroke-width="1.4"/><circle cx="65.7" cy="155.6" r="4.5" fill="#000" stroke="#fff" stroke-width="1.4"/><circle cx="71.7" cy="159.9" r="4.5" fill="#000" stroke="#fff" stroke-width="1.4"/><circle cx="74" cy="167" r="4.5" fill="#000" stroke="#fff" stroke-width="1.4"/><path d="M100 168C120 150 150 140 168 118V168z" fill="#fff"/><path d="M168 112C150 136 120 148 96 166" fill="none" stroke="#000" stroke-width="3"/><path d="M150 168c-8-12 4-24 14-18c8 5 2 16-6 13c-5-2-3-8 1-8" fill="none" stroke="#000" stroke-width="2.4"/><path d="M118 168c4-10 14-14 24-12" fill="none" stroke="#000" stroke-width="2"/><path d="M110 150Q118.2 154.5 120.4 144Q110.2 140.7 110 150z" fill="#fff" stroke="#000" stroke-width="1.1"/><path d="M122 146Q131.3 145.8 128 135.6Q117.5 137.8 122 146z" fill="#fff" stroke="#000" stroke-width="1.1"/><path d="M134 140Q141.2 145.9 145.3 135.9Q135.8 130.8 134 140z" fill="#fff" stroke="#000" stroke-width="1.1"/><path d="M104 160Q110.1 167 115.8 157.9Q107.3 151.3 104 160z" fill="#fff" stroke="#000" stroke-width="1.1"/><path d="M6 104Q15.3 109 18.1 97Q6.3 93.4 6 104z" fill="#fff" stroke="#000" stroke-width=".7"/><path d="M18 112Q25.1 119.9 31.8 109.6Q22 102.2 18 112z" fill="#fff" stroke="#000" stroke-width=".7"/><path d="M34 108Q44.1 111.3 44.7 99Q32.5 97.5 34 108z" fill="#fff" stroke="#000" stroke-width=".7"/><path d="M46 112Q50 121.8 59.8 114.4Q53.1 104.1 46 112z" fill="#fff" stroke="#000" stroke-width=".7"/><path d="M10 150Q19.8 146 12.4 136.2Q2.1 142.9 10 150z" fill="#fff" stroke="#000" stroke-width=".7"/><path d="M20 146Q29.3 151 32.1 139Q20.3 135.4 20 146z" fill="#fff" stroke="#000" stroke-width=".7"/><path d="M70 60Q75 50.7 63 47.9Q59.4 59.7 70 60z" fill="#fff" stroke="#000" stroke-width=".7"/><path d="M60 62Q57.8 51.6 46.8 57.2Q51.7 68.5 60 62z" fill="#fff" stroke="#000" stroke-width=".7"/><path d="M76 50Q86.6 49.7 83 37.9Q71 40.7 76 50z" fill="#fff" stroke="#000" stroke-width=".7"/><path d="M128 96Q136.3 102.5 141.2 91.2Q130.2 85.6 128 96z" fill="#fff" stroke="#000" stroke-width=".7"/><path d="M140 104Q140.3 114.6 152.1 111Q149.3 99 140 104z" fill="#fff" stroke="#000" stroke-width=".7"/><path d="M150 112Q160.1 115.3 160.7 103Q148.5 101.5 150 112z" fill="#fff" stroke="#000" stroke-width=".7"/><path d="M96 150Q106.5 151.5 105 139.3Q92.7 139.9 96 150z" fill="#fff" stroke="#000" stroke-width=".7"/><path d="M88 140Q95.9 132.9 85.6 126.2Q78.2 136 88 140z" fill="#fff" stroke="#000" stroke-width=".7"/><path d="M12 128Q12.3 138.6 24.1 135Q21.3 123 12 128z" fill="#fff" stroke="#000" stroke-width=".7"/><path d="M30 124Q38.3 130.5 43.2 119.2Q32.2 113.6 30 124z" fill="#fff" stroke="#000" stroke-width=".7"/><path d="M46 130Q48.2 140.4 59.2 134.8Q54.3 123.5 46 130z" fill="#fff" stroke="#000" stroke-width=".7"/><path d="M60 74C66 60 78 46 92 40M120 92C132 86 142 92 146 100M96 100C110 96 122 100 130 110" fill="none" stroke="#fff" stroke-width="1.800"/><path d="M146 100l14 8l-6 10l14 8M168 96l-10 -6" fill="none" stroke="#fff" stroke-width="2"/><path d="M150 28l10 14l-8 6l12 14" fill="none" stroke="#fff" stroke-width="2"/></g></g></g></svg><div class="lb"><em></em><span style="letter-spacing:0.39px">1dd6e1075f8d73a2517e82...</span></div></div>
<div class="tile" style="left:238.8px;top:329.4px"><svg width="210" height="193" viewBox="0 0 210 193"><defs><clipPath id="bwb0"><rect width="167.4" height="167.4"/></clipPath><clipPath id="bwb1"><rect x="-2" y="-2" width="58" height="48"/></clipPath><clipPath id="bwb2"><rect x="117" y="-2" width="52.4" height="49"/></clipPath><clipPath id="bwb3"><rect x="48" y="42" width="75" height="73"/></clipPath><clipPath id="bwb4"><rect x="-2" y="111" width="57" height="58.4"/></clipPath><clipPath id="bwb5"><rect x="116" y="111" width="53.4" height="58.4"/></clipPath></defs><g transform="translate(21.8 16.8)"><rect width="167.4" height="167.4" fill="#fff"/><g clip-path="url(#bwb0)"><g clip-path="url(#bwb1)"><rect x="0" y="0" width="54" height="44" fill="#000"/><path d="M17.5 6.6Q9.2 3.7 11.9 12.9Q21.3 14.5 17.5 6.6z" fill="#fff" stroke="#000" stroke-width=".7"/><path d="M3.1 22.3Q5.6 29.1 10.8 23Q6.8 16.1 3.1 22.3zM3.1 22.3Q-2.5 26.8 4.9 29.9Q10.2 23.9 3.1 22.3zM3.1 22.3Q-2.9 18.3 -3.5 26.3Q3.8 29.5 3.1 22.3zM3.1 22.3Q5.1 15.4 -2.7 17.2Q-3.5 25.2 3.1 22.3zM3.1 22.3Q10.3 22 6.2 15.2Q-1.6 16.9 3.1 22.3z" fill="#fff" stroke="#000" stroke-width=".7"/><circle cx="3.1" cy="22.3" r="1.7" fill="#000"/><path d="M10.1 20.2L6.4 20.7L5.1 24L3.5 20.7L-0.2 20.5L2.5 18L1.6 14.4L4.8 16.2L7.9 14.2L7.2 17.8z" fill="#fff" stroke="#000" stroke-width=".7"/><path d="M33.9 41.7Q34.8 52.3 43.4 44.6Q40.6 33.4 33.9 41.7z" fill="#fff" stroke="#000" stroke-width=".7"/><path d="M46.4 12.7Q46.7 18.8 52.3 15.2Q50.8 8.7 46.4 12.7zM46.4 12.7Q40.7 14.9 45.9 19.2Q51.6 15.7 46.4 12.7zM46.4 12.7Q42.5 8.1 40.1 14.3Q45.1 18.6 46.4 12.7zM46.4 12.7Q49.6 7.7 42.9 7.2Q40.4 13.4 46.4 12.7zM46.4 12.7Q52.2 14.3 50.5 7.8Q43.9 7.3 46.4 12.7z" fill="#fff" stroke="#000" stroke-width=".7"/><circle cx="46.4" cy="12.7" r="1.4" fill="#000"/><path d="M44.1 8Q42 -0.5 33.4 4.6Q37.6 13.8 44.1 8z" fill="#fff" stroke="#000" stroke-width=".7"/><path d="M3.4 2.6Q2.6 10.7 10.9 7.1Q10.1 -1.9 3.4 2.6zM3.4 2.6Q-4.5 4.4 1.5 11.1Q9.8 7.6 3.4 2.6zM3.4 2.6Q-0.7 -4.4 -5.3 3.4Q0.6 10.2 3.4 2.6zM3.4 2.6Q8.7 -3.5 -0 -5.4Q-4.7 2.3 3.4 2.6zM3.4 2.6Q10.8 5.8 10 -3.1Q1.2 -5.2 3.4 2.6z" fill="#fff" stroke="#000" stroke-width=".7"/><circle cx="3.4" cy="2.6" r="1.9" fill="#000"/><path d="M17 25.8Q13.4 31.5 20.9 31.8Q23.6 24.9 17 25.8zM17 25.8Q10.5 24.2 12.4 31.3Q19.8 31.8 17 25.8zM17 25.8Q16.5 19.1 10.3 23.2Q12.1 30.4 17 25.8zM17 25.8Q23.2 23.2 17.4 18.6Q11.1 22.6 17 25.8zM17 25.8Q21.3 30.9 23.9 23.9Q18.2 19.2 17 25.8z" fill="#fff" stroke="#000" stroke-width=".7"/><circle cx="17" cy="25.8" r="1.6" fill="#000"/><path d="M37.7 10.7Q46.6 5.3 36.4 0.2Q27.8 7.7 37.7 10.7z" fill="#fff" stroke="#000" stroke-width=".7"/><path d="M15.5 43.1Q12.1 49.4 20 49.4Q22.6 41.9 15.5 43.1zM15.5 43.1Q8.5 41.8 11 49.3Q18.9 49.4 15.5 43.1zM15.5 43.1Q14.7 36 8.3 40.7Q10.6 48.3 15.5 43.1zM15.5 43.1Q22 40.1 15.6 35.5Q9.1 40 15.5 43.1zM15.5 43.1Q20.4 48.4 22.9 40.8Q16.5 36.1 15.5 43.1z" fill="#fff" stroke="#000" stroke-width=".7"/><circle cx="15.5" cy="43.1" r="1.7" fill="#000"/><path d="M8.2 21.5Q4.2 28.5 13.2 28.6Q16.2 20.2 8.2 21.5zM8.2 21.5Q0.3 19.9 3 28.4Q11.9 28.7 8.2 21.5zM8.2 21.5Q7.3 13.5 0 18.7Q2.6 27.3 8.2 21.5zM8.2 21.5Q15.6 18.2 8.4 12.8Q1 17.9 8.2 21.5zM8.2 21.5Q13.6 27.5 16.5 19Q9.4 13.5 8.2 21.5z" fill="#fff" stroke="#000" stroke-width=".7"/><circle cx="8.2" cy="21.5" r="1.9" fill="#000"/><path d="M30.9 38.5Q28.5 46.3 37.4 44.5Q38.5 35.5 30.9 38.5zM30.9 38.5Q22.8 38.6 27.3 46.5Q36.2 44.8 30.9 38.5zM30.9 38.5Q28.3 30.8 22.2 37.5Q26.6 45.4 30.9 38.5zM30.9 38.5Q37.5 33.6 29.2 29.9Q23 36.5 30.9 38.5zM30.9 38.5Q37.6 43.2 38.6 34.2Q30.4 30.4 30.9 38.5z" fill="#fff" stroke="#000" stroke-width=".7"/><circle cx="30.9" cy="38.5" r="1.9" fill="#000"/><path d="M37.8 24.5L32.2 22.4L29.1 27.6L29.3 21.6L23.5 20.3L29.2 18.7L28.7 12.7L32 17.7L37.5 15.3L33.8 20z" fill="#fff" stroke="#000" stroke-width=".7"/><path d="M35.9 2.7Q46.8 3 40.8 -7.4Q28.9 -5.7 35.9 2.7z" fill="#fff" stroke="#000" stroke-width=".7"/><path d="M15.4 17Q10.1 23.7 19.4 24Q23.8 15.9 15.4 17z" fill="#fff" stroke="#000" stroke-width=".7"/><path d="M6.3 2.6Q-0.8 -0.6 -0.4 8.1Q8.1 10.2 6.3 2.6z" fill="#fff" stroke="#000" stroke-width=".7"/><path d="M47.1 3.5Q42.3 9.5 50.7 10.9Q54.7 3.4 47.1 3.5zM47.1 3.5Q39.9 0.9 41.2 9.3Q49.5 10.8 47.1 3.5zM47.1 3.5Q47.3 -4.1 39.8 -0.3Q41 8.1 47.1 3.5zM47.1 3.5Q54.4 1.5 48.4 -4.5Q40.8 -0.8 47.1 3.5zM47.1 3.5Q51.3 9.9 55.2 2.3Q49.3 -3.7 47.1 3.5z" fill="#fff" stroke="#000" stroke-width=".7"/><circle cx="47.1" cy="3.5" r="1.8" fill="#000"/><path d="M44.2 38Q44.2 45.1 51.1 41.4Q49.8 33.6 44.2 38zM44.2 38Q37.4 40.2 43.2 45.6Q50.2 41.9 44.2 38zM44.2 38Q40.1 32.2 36.7 39.4Q42.4 44.9 44.2 38zM44.2 38Q48.5 32.3 40.6 31.3Q37.1 38.4 44.2 38zM44.2 38Q51 40.3 49.5 32.5Q41.7 31.3 44.2 38z" fill="#fff" stroke="#000" stroke-width=".7"/><circle cx="44.2" cy="38" r="1.7" fill="#000"/><path d="M47.7 42.1Q48.7 48.3 54.2 44.1Q51.9 37.5 47.7 42.1zM47.7 42.1Q42.2 44.9 47.9 48.8Q53.4 44.7 47.7 42.1zM47.7 42.1Q43.4 37.7 41.4 44.4Q47.1 48.3 47.7 42.1zM47.7 42.1Q50.6 36.6 43.7 36.8Q41.6 43.4 47.7 42.1zM47.7 42.1Q53.9 43.1 51.6 36.6Q44.6 36.7 47.7 42.1z" fill="#fff" stroke="#000" stroke-width=".7"/><circle cx="47.7" cy="42.1" r="1.5" fill="#000"/><path d="M12.6 21.3Q6.4 17.9 4.5 25.9Q12.3 28.4 12.6 21.3z" fill="#fff" stroke="#000" stroke-width=".7"/><path d="M25.6 29.2L20.7 27.3L17.6 31.6L17.9 26.3L12.9 24.8L17.9 23.4L17.9 18.2L20.8 22.6L25.7 20.9L22.4 25z" fill="#fff" stroke="#000" stroke-width=".7"/><path d="M33.4 29.8Q28.8 37.4 38.7 37.7Q42.2 28.5 33.4 29.8zM33.4 29.8Q24.6 27.8 27.4 37.3Q37.3 37.8 33.4 29.8zM33.4 29.8Q32.5 20.9 24.3 26.4Q27 36 33.4 29.8zM33.4 29.8Q41.6 26.2 33.7 20.2Q25.4 25.6 33.4 29.8zM33.4 29.8Q39.2 36.5 42.6 27.1Q34.8 20.9 33.4 29.8z" fill="#fff" stroke="#000" stroke-width=".7"/><circle cx="33.4" cy="29.8" r="2.1" fill="#000"/><path d="M47.2 35.1Q49.4 41.8 54.8 36.1Q51.1 29.2 47.2 35.1zM47.2 35.1Q41.5 39.3 48.6 42.6Q54.1 36.9 47.2 35.1zM47.2 35.1Q41.5 31 40.6 38.7Q47.6 42.2 47.2 35.1zM47.2 35.1Q49.4 28.4 41.7 29.9Q40.6 37.6 47.2 35.1zM47.2 35.1Q54.3 35.1 50.5 28.2Q42.8 29.6 47.2 35.1z" fill="#fff" stroke="#000" stroke-width=".7"/><circle cx="47.2" cy="35.1" r="1.7" fill="#000"/><path d="M34.3 2.7Q35.8 8.9 40.9 4.1Q38.1 -2.3 34.3 2.7zM34.3 2.7Q28.8 6.1 35 9.5Q40.3 4.8 34.3 2.7zM34.3 2.7Q29.4 -1.4 28 5.6Q34.1 9.1 34.3 2.7zM34.3 2.7Q36.7 -3.1 29.7 -2.3Q28.2 4.6 34.3 2.7zM34.3 2.7Q40.6 3.2 37.6 -3.2Q30.6 -2.5 34.3 2.7z" fill="#fff" stroke="#000" stroke-width=".7"/><circle cx="34.3" cy="2.7" r="1.5" fill="#000"/><path d="M18.4 2.3Q20.3 8.2 24.9 3.2Q21.7 -2.9 18.4 2.3zM18.4 2.3Q13.4 5.9 19.6 8.8Q24.3 3.9 18.4 2.3zM18.4 2.3Q13.4 -1.3 12.6 5.5Q18.7 8.4 18.4 2.3zM18.4 2.3Q20.2 -3.5 13.6 -2.2Q12.6 4.5 18.4 2.3zM18.4 2.3Q24.5 2.3 21.2 -3.7Q14.5 -2.4 18.4 2.3z" fill="#fff" stroke="#000" stroke-width=".7"/><circle cx="18.4" cy="2.3" r="1.5" fill="#000"/><path d="M26.4 2.4L21.3 2.9L20.5 7.9L18.4 3.3L13.4 4L17.2 0.7L14.9 -3.9L19.3 -1.4L22.9 -4.9L21.9 0.1z" fill="#fff" stroke="#000" stroke-width=".7"/><path d="M13.6 15.3Q10.1 20.2 16.8 21Q19.7 14.9 13.6 15.3zM13.6 15.3Q7.9 13.5 9.2 20Q15.8 20.9 13.6 15.3zM13.6 15.3Q13.6 9.2 7.7 12.5Q9 19.1 13.6 15.3zM13.6 15.3Q19.4 13.4 14.4 8.8Q8.5 12 13.6 15.3zM13.6 15.3Q17.2 20.1 20 14.1Q15.1 9.4 13.6 15.3z" fill="#fff" stroke="#000" stroke-width=".7"/><circle cx="13.6" cy="15.3" r="1.4" fill="#000"/><path d="M53.6 20.5Q55.5 26.1 59.9 21.3Q56.8 15.5 53.6 20.5zM53.6 20.5Q48.9 24 54.8 26.7Q59.3 22 53.6 20.5zM53.6 20.5Q48.8 17 48.1 23.5Q54 26.4 53.6 20.5zM53.6 20.5Q55.4 14.9 49 16.1Q48.1 22.6 53.6 20.5zM53.6 20.5Q59.5 20.5 56.3 14.8Q49.9 15.9 53.6 20.5z" fill="#fff" stroke="#000" stroke-width=".7"/><circle cx="53.6" cy="20.5" r="1.4" fill="#000"/><path d="M24 11.8L20.5 13.2L20 16.9L17.7 14L14 14.7L16 11.6L14.2 8.3L17.8 9.3L20.3 6.5L20.6 10.2z" fill="#fff" stroke="#000" stroke-width=".7"/><path d="M51.4 23.2Q54.4 30.2 59.5 23.5Q54.9 16.5 51.4 23.2zM51.4 23.2Q45.7 28.3 53.6 31.1Q58.9 24.5 51.4 23.2zM51.4 23.2Q44.8 19.4 44.6 27.8Q52.5 30.8 51.4 23.2zM51.4 23.2Q53 15.8 44.9 18.2Q44.6 26.6 51.4 23.2zM51.4 23.2Q58.9 22.5 54.1 15.6Q46 17.8 51.4 23.2z" fill="#fff" stroke="#000" stroke-width=".7"/><circle cx="51.4" cy="23.2" r="1.8" fill="#000"/><path d="M35.2 45.3L30 45.1L28.4 50.1L27 45.1L21.7 45.2L26.2 42.2L24.4 37.3L28.6 40.6L32.8 37.4L30.9 42.3z" fill="#fff" stroke="#000" stroke-width=".7"/><path d="M19.8 7.3Q9.8 6.7 14.7 16.7Q25.8 15.5 19.8 7.3z" fill="#fff" stroke="#000" stroke-width=".7"/><path d="M16 42.1L11.9 38.2L7.2 41.5L9.6 36.3L5 32.9L10.7 33.6L12.6 28.2L13.7 33.8L19.4 33.9L14.4 36.6z" fill="#fff" stroke="#000" stroke-width=".7"/><path d="M44.2 32.6Q44.2 40.1 51.5 36Q50 27.8 44.2 32.6zM44.2 32.6Q37 34.9 43.1 40.6Q50.5 36.7 44.2 32.6zM44.2 32.6Q39.8 26.5 36.3 34Q42.2 39.8 44.2 32.6zM44.2 32.6Q48.6 26.5 40.4 25.5Q36.7 32.9 44.2 32.6zM44.2 32.6Q51.3 34.9 49.8 26.7Q41.5 25.5 44.2 32.6z" fill="#fff" stroke="#000" stroke-width=".7"/><circle cx="44.2" cy="32.6" r="1.8" fill="#000"/><path d="M1.6 1.2Q-1.1 7.2 6.1 6.6Q7.9 -0.4 1.6 1.2zM1.6 1.2Q-4.9 0.5 -2.1 7.2Q5.1 6.7 1.6 1.2zM1.6 1.2Q0.2 -5.2 -5.3 -0.5Q-2.6 6.3 1.6 1.2zM1.6 1.2Q7.3 -2 1.1 -5.8Q-4.5 -1.2 1.6 1.2zM1.6 1.2Q6.4 5.6 8.1 -1.4Q1.9 -5.3 1.6 1.2z" fill="#fff" stroke="#000" stroke-width=".7"/><circle cx="1.6" cy="1.2" r="1.5" fill="#000"/><path d="M54.5 27.1L51 22.1L45.5 24.7L49.2 19.8L45 15.4L50.7 17.3L53.7 12L53.6 18.1L59.6 19.2L53.8 21z" fill="#fff" stroke="#000" stroke-width=".7"/><path d="M19.7 9.7Q20.9 15.9 26.3 11.4Q23.8 4.9 19.7 9.7zM19.7 9.7Q14.2 12.7 20.1 16.5Q25.5 12.1 19.7 9.7zM19.7 9.7Q15.1 5.4 13.4 12.2Q19.2 16 19.7 9.7zM19.7 9.7Q22.4 4 15.4 4.4Q13.6 11.2 19.7 9.7zM19.7 9.7Q26 10.5 23.4 4Q16.4 4.3 19.7 9.7z" fill="#fff" stroke="#000" stroke-width=".7"/><circle cx="19.7" cy="9.7" r="1.5" fill="#000"/><path d="M38.1 44.3L34 42.1L30.6 45.2L31.4 40.7L27.4 38.4L32 37.8L32.9 33.2L34.9 37.4L39.5 36.9L36.2 40.1z" fill="#fff" stroke="#000" stroke-width=".7"/><path d="M43.2 3.7Q52.3 -1.3 43.2 -8.8Q34.1 -1.3 43.2 3.7z" fill="#fff" stroke="#000" stroke-width=".7"/><path d="M25.8 7.9Q31.2 16.2 35.3 6.1Q28 -1.9 25.8 7.9z" fill="#fff" stroke="#000" stroke-width=".7"/><path d="M28.4 19.2L23 19.5L22.1 24.8L20.1 19.8L14.8 20.6L18.9 17.1L16.6 12.3L21.1 15.2L25 11.5L23.7 16.7z" fill="#fff" stroke="#000" stroke-width=".7"/><path d="M14.2 8L8.6 8.5L7.8 14L5.7 8.8L0.2 9.8L4.4 6.2L1.8 1.3L6.5 4.2L10.4 0.1L9.1 5.6z" fill="#fff" stroke="#000" stroke-width=".7"/><path d="M44.6 43.1Q41.3 51.6 51.3 50.3Q53.3 40.4 44.6 43.1z" fill="#fff" stroke="#000" stroke-width=".7"/><circle cx="0.8" cy="42.7" r="1.8" fill="#000"/><circle cx="28.4" cy="41.1" r="1.5" fill="#000"/><circle cx="47.1" cy="36.4" r="1.3" fill="#000"/><circle cx="13.6" cy="12.9" r="1.3" fill="#000"/><circle cx="31.7" cy="11.4" r="1.5" fill="#000"/><circle cx="7.1" cy="40" r="1.4" fill="#000"/><circle cx="24.7" cy="25.7" r="2.1" fill="#000"/><circle cx="22.7" cy="40.4" r="1.6" fill="#000"/><circle cx="28.7" cy="23" r="1" fill="#000"/><circle cx="23.8" cy="8.1" r="1" fill="#000"/><circle cx="43.2" cy="7.6" r="1.6" fill="#000"/><circle cx="39.2" cy="24.5" r="1.4" fill="#000"/><circle cx="28" cy="24.4" r="1.9" fill="#000"/><circle cx="5.7" cy="24.7" r="1.3" fill="#000"/><circle cx="15" cy="34" r="1.6" fill="#000"/><circle cx="30.3" cy="33.4" r="2.1" fill="#000"/><circle cx="23.9" cy="27" r="1.6" fill="#000"/><circle cx="27.7" cy="30.5" r="1.5" fill="#000"/><circle cx="28.8" cy="21" r="2.1" fill="#000"/><circle cx="37.8" cy="38.6" r="2.1" fill="#000"/><circle cx="14" cy="24.6" r="2.1" fill="#000"/><circle cx="45.4" cy="6" r="1.1" fill="#000"/><circle cx="23.9" cy="3.2" r="1.3" fill="#000"/><circle cx="3.9" cy="29.5" r="1.9" fill="#000"/><circle cx="48.4" cy="6.8" r="1.9" fill="#000"/></g><g clip-path="url(#bwb2)"><rect x="119" y="0" width="48.4" height="45" fill="#000"/><path d="M158.6 8.6L152.5 8.4L151.3 14.3L149.6 8.5L143.5 9.2L148.6 5.8L146.1 0.2L150.9 3.9L155.4 -0.1L153.3 5.6z" fill="#fff" stroke="#000" stroke-width=".7"/><path d="M165.1 17.9Q159.9 25.6 170.1 26.5Q174.3 17.2 165.1 17.9zM165.1 17.9Q156.2 15.3 158.4 25.3Q168.7 26.5 165.1 17.9zM165.1 17.9Q164.9 8.7 156 13.9Q158.1 24 165.1 17.9zM165.1 17.9Q173.8 14.8 166.1 8Q157.2 13.1 165.1 17.9zM165.1 17.9Q170.7 25.3 174.8 15.8Q167.2 8.9 165.1 17.9z" fill="#fff" stroke="#000" stroke-width=".7"/><circle cx="165.1" cy="17.9" r="2.2" fill="#000"/><path d="M126.8 19.4Q119 20.1 122.8 28.2Q131.4 25.8 126.8 19.4z" fill="#fff" stroke="#000" stroke-width=".7"/><path d="M154 0.9Q146.7 1.5 149 9.8Q157.2 7.4 154 0.9z" fill="#fff" stroke="#000" stroke-width=".7"/><path d="M149.2 23.1Q144.4 31 154.6 31.4Q158.4 21.8 149.2 23.1zM149.2 23.1Q140.2 20.9 143 30.8Q153.2 31.4 149.2 23.1zM149.2 23.1Q148.4 13.8 139.9 19.5Q142.5 29.4 149.2 23.1zM149.2 23.1Q157.7 19.5 149.7 13.1Q141 18.7 149.2 23.1zM149.2 23.1Q155.2 30.1 158.8 20.4Q150.8 14 149.2 23.1z" fill="#fff" stroke="#000" stroke-width=".7"/><circle cx="149.2" cy="23.1" r="2.2" fill="#000"/><path d="M166 4.7Q163.1 9.6 169.5 9.8Q171.7 3.9 166 4.7zM166 4.7Q160.4 3.5 162.2 9.6Q168.6 9.8 166 4.7zM166 4.7Q165.5 -1 160.2 2.6Q161.9 8.7 166 4.7zM166 4.7Q171.3 2.4 166.3 -1.4Q161 2.1 166 4.7zM166 4.7Q169.8 9 172 3Q167 -0.9 166 4.7z" fill="#fff" stroke="#000" stroke-width=".7"/><circle cx="166" cy="4.7" r="1.4" fill="#000"/><path d="M132.1 5.8Q127.1 13.3 137.1 14.1Q141 5 132.1 5.8zM132.1 5.8Q123.4 3.4 125.8 13.1Q135.7 14.1 132.1 5.8zM132.1 5.8Q131.7 -3.1 123.2 2.1Q125.4 11.8 132.1 5.8zM132.1 5.8Q140.5 2.7 132.9 -3.8Q124.4 1.3 132.1 5.8zM132.1 5.8Q137.7 12.9 141.5 3.7Q134 -2.9 132.1 5.8z" fill="#fff" stroke="#000" stroke-width=".7"/><circle cx="132.1" cy="5.8" r="2.1" fill="#000"/><path d="M135.8 11.9L131.7 9.2L127.9 12.4L129.2 7.6L125 5L129.9 4.8L131.1 0L132.9 4.6L137.8 4.3L133.9 7.3z" fill="#fff" stroke="#000" stroke-width=".7"/><path d="M123.3 2.6Q129.5 6.9 132.7 -1.2Q124.7 -4.8 123.3 2.6z" fill="#fff" stroke="#000" stroke-width=".7"/><path d="M149.7 36.1Q152.8 44.3 159.1 36.9Q154.1 28.5 149.7 36.1zM149.7 36.1Q142.9 41.6 151.9 45.2Q158.3 37.9 149.7 36.1zM149.7 36.1Q142.4 31.3 141.6 41Q150.6 44.8 149.7 36.1zM149.7 36.1Q152 27.6 142.6 29.9Q141.7 39.6 149.7 36.1zM149.7 36.1Q158.5 35.7 153.4 27.4Q143.9 29.5 149.7 36.1z" fill="#fff" stroke="#000" stroke-width=".7"/><circle cx="149.7" cy="36.1" r="2.1" fill="#000"/><path d="M160.8 20.4Q155.7 26.2 164 28Q168.4 20.7 160.8 20.4zM160.8 20.4Q153.7 17.4 154.6 25.8Q162.8 27.8 160.8 20.4zM160.8 20.4Q161.5 12.8 153.7 16.2Q154.4 24.7 160.8 20.4zM160.8 20.4Q168.2 18.7 162.6 12.4Q154.8 15.7 160.8 20.4zM160.8 20.4Q164.7 27 168.9 19.7Q163.4 13.2 160.8 20.4z" fill="#fff" stroke="#000" stroke-width=".7"/><circle cx="160.8" cy="20.4" r="1.8" fill="#000"/><path d="M132 5.8Q128.4 12.3 136.8 13.6Q139.4 5.5 132 5.8z" fill="#fff" stroke="#000" stroke-width=".7"/><path d="M121.4 9.1Q118.2 14.9 125.6 15Q128.1 7.9 121.4 9.1zM121.4 9.1Q114.8 7.8 117.1 14.9Q124.6 15 121.4 9.1zM121.4 9.1Q120.6 2.4 114.6 6.8Q116.8 13.9 121.4 9.1zM121.4 9.1Q127.5 6.3 121.5 1.9Q115.4 6.1 121.4 9.1zM121.4 9.1Q126 14 128.3 6.9Q122.4 2.4 121.4 9.1z" fill="#fff" stroke="#000" stroke-width=".7"/><circle cx="121.4" cy="9.1" r="1.6" fill="#000"/><path d="M133 22.5Q135.8 28.8 140.4 22.7Q136.1 16.4 133 22.5zM133 22.5Q127.9 27.1 135.2 29.6Q139.8 23.6 133 22.5zM133 22.5Q127.1 19.1 127 26.7Q134.1 29.3 133 22.5zM133 22.5Q134.4 15.8 127.2 18Q126.9 25.6 133 22.5zM133 22.5Q139.9 21.8 135.5 15.5Q128.2 17.7 133 22.5z" fill="#fff" stroke="#000" stroke-width=".7"/><circle cx="133" cy="22.5" r="1.6" fill="#000"/><path d="M131.1 0.7Q125.8 -5.3 120.5 2.4Q127.9 8 131.1 0.7z" fill="#fff" stroke="#000" stroke-width=".7"/><path d="M169.4 8.5L165 7.2L162.3 10.8L162.2 6.3L157.9 4.8L162.2 3.3L162.3 -1.2L165 2.4L169.3 1L166.7 4.8z" fill="#fff" stroke="#000" stroke-width=".7"/><path d="M159.4 17.7Q148.6 16 153.1 27.2Q165.2 27 159.4 17.7z" fill="#fff" stroke="#000" stroke-width=".7"/><path d="M159.3 31.8Q160.6 40.1 168.7 35.2Q165.5 26.2 159.3 31.8z" fill="#fff" stroke="#000" stroke-width=".7"/><path d="M125.3 3.2Q125.1 10.8 133.3 7.9Q131.9 -0.7 125.3 3.2z" fill="#fff" stroke="#000" stroke-width=".7"/><path d="M159.7 39.2Q152 40.9 157.2 48.2Q165.4 44.7 159.7 39.2z" fill="#fff" stroke="#000" stroke-width=".7"/><path d="M141.2 7.1Q136.7 11.8 143.7 13.7Q147.8 7.6 141.2 7.1zM141.2 7.1Q135.3 4.2 135.7 11.5Q142.7 13.5 141.2 7.1zM141.2 7.1Q142.1 0.6 135.3 3.2Q135.6 10.5 141.2 7.1zM141.2 7.1Q147.7 5.9 143.1 0.3Q136.3 2.8 141.2 7.1zM141.2 7.1Q144.3 12.9 148.3 6.8Q143.8 1 141.2 7.1z" fill="#fff" stroke="#000" stroke-width=".7"/><circle cx="141.2" cy="7.1" r="1.6" fill="#000"/><path d="M166.1 24.6Q166.6 33.8 175.2 28.4Q172.9 18.4 166.1 24.6zM166.1 24.6Q157.5 27.9 165.3 34.5Q174 29.2 166.1 24.6zM166.1 24.6Q160.3 17.5 156.5 27Q164.2 33.6 166.1 24.6zM166.1 24.6Q171 16.9 160.9 16.2Q157 25.6 166.1 24.6zM166.1 24.6Q174.9 27 172.5 17.1Q162.3 16.3 166.1 24.6z" fill="#fff" stroke="#000" stroke-width=".7"/><circle cx="166.1" cy="24.6" r="2.2" fill="#000"/><path d="M136.3 0Q134.9 7.3 142.6 4.7Q142.7 -3.4 136.3 0zM136.3 0Q129 1 133.8 7.6Q141.6 5.1 136.3 0zM136.3 0Q133.1 -6.6 128.4 0Q133.1 6.7 136.3 0zM136.3 0Q141.6 -5 133.8 -7.5Q129 -0.9 136.3 0zM136.3 0Q142.7 3.6 142.7 -4.6Q134.9 -7.2 136.3 0z" fill="#fff" stroke="#000" stroke-width=".7"/><circle cx="136.3" cy="0" r="1.7" fill="#000"/><path d="M128.7 22.7Q130.9 28.9 135.7 23.5Q132.2 17.1 128.7 22.7zM128.7 22.7Q123.5 26.7 130.1 29.6Q135.1 24.3 128.7 22.7zM128.7 22.7Q123.3 18.9 122.6 26.2Q129.2 29.3 128.7 22.7zM128.7 22.7Q130.6 16.4 123.5 17.9Q122.6 25.2 128.7 22.7zM128.7 22.7Q135.3 22.6 131.6 16.3Q124.5 17.7 128.7 22.7z" fill="#fff" stroke="#000" stroke-width=".7"/><circle cx="128.7" cy="22.7" r="1.6" fill="#000"/><path d="M138.3 1.9Q139.4 8.5 145.2 4Q142.8 -3.1 138.3 1.9zM138.3 1.9Q132.3 4.9 138.5 9.1Q144.5 4.6 138.3 1.9zM138.3 1.9Q133.6 -2.9 131.5 4.3Q137.6 8.5 138.3 1.9zM138.3 1.9Q141.4 -4.1 134 -3.9Q131.8 3.2 138.3 1.9zM138.3 1.9Q145 3 142.5 -4.1Q135 -4 138.3 1.9z" fill="#fff" stroke="#000" stroke-width=".7"/><circle cx="138.3" cy="1.9" r="1.6" fill="#000"/><path d="M147.3 23.8Q156.7 27.1 155.5 16Q144.5 14.3 147.3 23.8z" fill="#fff" stroke="#000" stroke-width=".7"/><path d="M141.2 19L137.9 17.2L134.8 19.2L135.5 15.5L132.6 13.2L136.3 12.7L137.7 9.2L139.3 12.6L143 12.8L140.3 15.4z" fill="#fff" stroke="#000" stroke-width=".7"/><path d="M155.5 7.4L150.5 4.4L146.6 8.8L147.9 3.1L142.6 0.7L148.4 0.2L149 -5.6L151.3 -0.3L157 -1.5L152.6 2.4z" fill="#fff" stroke="#000" stroke-width=".7"/><path d="M154.5 36.5Q153.1 43.9 161 41.3Q161.2 33 154.5 36.5zM154.5 36.5Q147 37.5 152 44.2Q160 41.8 154.5 36.5zM154.5 36.5Q151.3 29.7 146.4 36.5Q151.2 43.3 154.5 36.5zM154.5 36.5Q160 31.4 152.1 28.8Q147.1 35.5 154.5 36.5zM154.5 36.5Q161.1 40.2 161.1 31.8Q153.2 29.1 154.5 36.5z" fill="#fff" stroke="#000" stroke-width=".7"/><circle cx="154.5" cy="36.5" r="1.8" fill="#000"/><path d="M162.3 42.3L159 38.7L154.5 40.9L156.9 36.5L153.5 33L158.3 34L160.6 29.6L161.2 34.5L166.1 35.3L161.6 37.4z" fill="#fff" stroke="#000" stroke-width=".7"/><path d="M152.1 31.2Q153.6 36.7 158.1 32.2Q155.3 26.5 152.1 31.2zM152.1 31.2Q147.3 34.4 152.9 37.3Q157.5 32.9 152.1 31.2zM152.1 31.2Q147.6 27.7 146.6 33.9Q152.1 36.9 152.1 31.2zM152.1 31.2Q154 25.8 147.8 26.8Q146.7 33.1 152.1 31.2zM152.1 31.2Q157.7 31.4 154.9 25.8Q148.6 26.6 152.1 31.2z" fill="#fff" stroke="#000" stroke-width=".7"/><circle cx="152.1" cy="31.2" r="1.3" fill="#000"/><path d="M141.2 9.5L136.8 7.2L133.4 10.7L134.2 5.8L129.9 3.7L134.7 2.9L135.4 -1.9L137.6 2.5L142.4 1.7L138.9 5.1z" fill="#fff" stroke="#000" stroke-width=".7"/><path d="M149.3 30.6Q146.3 35.4 152.5 35.7Q154.9 29.9 149.3 30.6zM149.3 30.6Q143.9 29.3 145.5 35.3Q151.7 35.7 149.3 30.6zM149.3 30.6Q148.9 25 143.7 28.4Q145.2 34.5 149.3 30.6zM149.3 30.6Q154.5 28.5 149.7 24.6Q144.4 27.9 149.3 30.6zM149.3 30.6Q152.9 34.9 155.1 29.1Q150.4 25.1 149.3 30.6z" fill="#fff" stroke="#000" stroke-width=".7"/><circle cx="149.3" cy="30.6" r="1.3" fill="#000"/><path d="M155.2 22.6Q161.1 17.6 154.3 11.4Q148.6 18.7 155.2 22.6z" fill="#fff" stroke="#000" stroke-width=".7"/><path d="M131.2 3.4Q132.7 11.5 139.8 5.6Q136.6 -3 131.2 3.4zM131.2 3.4Q123.9 7.3 131.7 12.3Q138.9 6.5 131.2 3.4zM131.2 3.4Q125.2 -2.3 122.9 6.6Q130.6 11.6 131.2 3.4zM131.2 3.4Q134.8 -4.1 125.6 -3.6Q123.1 5.3 131.2 3.4zM131.2 3.4Q139.4 4.4 136 -4.1Q126.8 -3.7 131.2 3.4z" fill="#fff" stroke="#000" stroke-width=".7"/><circle cx="131.2" cy="3.4" r="2" fill="#000"/><path d="M154.8 43.9Q153.7 50.8 161 48.2Q160.9 40.4 154.8 43.9zM154.8 43.9Q147.9 45 152.7 51.1Q160 48.6 154.8 43.9zM154.8 43.9Q151.6 37.7 147.3 44.1Q152 50.3 154.8 43.9zM154.8 43.9Q159.8 39 152.3 36.8Q147.8 43.2 154.8 43.9zM154.8 43.9Q161 47.1 160.8 39.3Q153.3 37.1 154.8 43.9z" fill="#fff" stroke="#000" stroke-width=".7"/><circle cx="154.8" cy="43.9" r="1.7" fill="#000"/><path d="M152.1 34.5Q149.7 41.9 158.8 43.5Q159.8 34.3 152.1 34.5z" fill="#fff" stroke="#000" stroke-width=".7"/><path d="M131.3 33.4Q134.5 40.4 139.6 33.6Q134.7 26.5 131.3 33.4zM131.3 33.4Q125.6 38.7 133.7 41.4Q138.9 34.6 131.3 33.4zM131.3 33.4Q124.6 29.7 124.5 38.2Q132.6 41 131.3 33.4zM131.3 33.4Q132.8 25.9 124.7 28.5Q124.5 37 131.3 33.4zM131.3 33.4Q138.9 32.6 134 25.6Q125.8 28.1 131.3 33.4z" fill="#fff" stroke="#000" stroke-width=".7"/><circle cx="131.3" cy="33.4" r="1.8" fill="#000"/><path d="M121.9 12.1Q112.4 14.3 119 23.2Q129.2 18.7 121.9 12.1z" fill="#fff" stroke="#000" stroke-width=".7"/><circle cx="144" cy="20.9" r="1.6" fill="#000"/><circle cx="124.7" cy="40.2" r="1.2" fill="#000"/><circle cx="166.3" cy="42.1" r="1" fill="#000"/><circle cx="141.2" cy="36.9" r="2.2" fill="#000"/><circle cx="140.8" cy="12.1" r="1.3" fill="#000"/><circle cx="164.8" cy="9.5" r="1.7" fill="#000"/><circle cx="125.9" cy="23.6" r="2.1" fill="#000"/><circle cx="125.4" cy="36.9" r="1.6" fill="#000"/><circle cx="161.9" cy="31.7" r="1.3" fill="#000"/><circle cx="162.4" cy="21.9" r="1" fill="#000"/><circle cx="119.2" cy="22.1" r="1.5" fill="#000"/><circle cx="133.6" cy="6.3" r="1.4" fill="#000"/><circle cx="134.3" cy="37.8" r="1" fill="#000"/><circle cx="155.3" cy="37.8" r="1.1" fill="#000"/><circle cx="163.8" cy="32.1" r="2.1" fill="#000"/><circle cx="133" cy="16.7" r="1.5" fill="#000"/><circle cx="167.3" cy="26.5" r="1.4" fill="#000"/><circle cx="139.7" cy="12.4" r="1.1" fill="#000"/><circle cx="123.9" cy="37.6" r="1.3" fill="#000"/><circle cx="164.3" cy="11.2" r="1.3" fill="#000"/><circle cx="143.7" cy="8.5" r="1.4" fill="#000"/><circle cx="165.3" cy="39.8" r="2" fill="#000"/><circle cx="149.5" cy="41.1" r="2.1" fill="#000"/></g><g clip-path="url(#bwb3)"><rect x="50" y="44" width="71" height="69" fill="#000"/><path d="M89 93.7Q88 101.9 96.5 98.4Q96 89.2 89 93.7zM89 93.7Q80.8 95.2 86.8 102.3Q95.4 99 89 93.7zM89 93.7Q85 86.4 80.1 94.2Q85.9 101.4 89 93.7zM89 93.7Q94.7 87.6 85.7 85.3Q80.7 93.1 89 93.7zM89 93.7Q96.5 97.2 95.9 88Q87 85.6 89 93.7z" fill="#fff" stroke="#000" stroke-width=".7"/><circle cx="89" cy="93.7" r="2" fill="#000"/><path d="M103.4 88.5Q99.6 92.8 105.9 94.2Q109.2 88.7 103.4 88.5zM103.4 88.5Q98.1 86.2 98.8 92.6Q105 94 103.4 88.5zM103.4 88.5Q104 82.7 98.1 85.3Q98.6 91.7 103.4 88.5zM103.4 88.5Q109.1 87.2 104.8 82.4Q98.9 84.9 103.4 88.5zM103.4 88.5Q106.4 93.4 109.6 87.9Q105.4 83.1 103.4 88.5z" fill="#fff" stroke="#000" stroke-width=".7"/><circle cx="103.4" cy="88.5" r="1.4" fill="#000"/><path d="M59 76.6Q55.9 82.5 63.3 82.3Q65.6 75.3 59 76.6zM59 76.6Q52.4 75.4 54.9 82.5Q62.3 82.4 59 76.6zM59 76.6Q58.1 70 52.2 74.5Q54.5 81.5 59 76.6zM59 76.6Q65 73.6 58.9 69.4Q53 73.8 59 76.6zM59 76.6Q63.7 81.4 65.8 74.3Q59.8 69.9 59 76.6z" fill="#fff" stroke="#000" stroke-width=".7"/><circle cx="59" cy="76.6" r="1.6" fill="#000"/><path d="M119.3 62Q111.3 57.8 111.8 67.8Q121.4 70.8 119.3 62z" fill="#fff" stroke="#000" stroke-width=".7"/><path d="M61.9 55.2Q60.3 64 69.7 60.8Q69.7 50.8 61.9 55.2zM61.9 55.2Q53 56.3 58.9 64.3Q68.4 61.3 61.9 55.2zM61.9 55.2Q58 47.1 52.3 55.2Q58.1 63.3 61.9 55.2zM61.9 55.2Q68.4 49 58.9 46Q53 54 61.9 55.2zM61.9 55.2Q69.8 59.4 69.6 49.5Q60.2 46.4 61.9 55.2z" fill="#fff" stroke="#000" stroke-width=".7"/><circle cx="61.9" cy="55.2" r="2.1" fill="#000"/><path d="M71.9 107.6L67.4 108.3L66.5 112.8L64.4 108.7L59.9 109.3L63.2 106.1L61.2 102L65.3 104.1L68.6 100.9L67.9 105.4z" fill="#fff" stroke="#000" stroke-width=".7"/><path d="M63.7 50.3Q64.5 56.1 69.7 52.1Q67.7 45.9 63.7 50.3zM63.7 50.3Q58.4 52.9 63.7 56.6Q69 52.7 63.7 50.3zM63.7 50.3Q59.5 46 57.6 52.3Q63 56.1 63.7 50.3zM63.7 50.3Q66.4 45 59.9 45.2Q57.9 51.4 63.7 50.3zM63.7 50.3Q69.5 51.3 67.3 45.1Q60.8 45.1 63.7 50.3z" fill="#fff" stroke="#000" stroke-width=".7"/><circle cx="63.7" cy="50.3" r="1.4" fill="#000"/><path d="M74.6 86.9L69.4 85.6L66.9 90.4L66.5 85L61.1 84.1L66.2 82.1L65.4 76.7L68.9 80.9L73.7 78.4L70.8 83z" fill="#fff" stroke="#000" stroke-width=".7"/><path d="M79.4 80.2Q81.8 86.6 86.7 80.7Q82.8 74.2 79.4 80.2zM79.4 80.2Q74.1 84.5 81.1 87.3Q86.1 81.6 79.4 80.2zM79.4 80.2Q73.6 76.4 73.1 84Q80.1 87 79.4 80.2zM79.4 80.2Q81.2 73.6 73.8 75.4Q73.1 83 79.4 80.2zM79.4 80.2Q86.2 79.8 82.2 73.4Q74.8 75.1 79.4 80.2z" fill="#fff" stroke="#000" stroke-width=".7"/><circle cx="79.4" cy="80.2" r="1.6" fill="#000"/><path d="M69.7 110.8Q67.2 117.8 75.3 116.5Q76.7 108.3 69.7 110.8zM69.7 110.8Q62.3 110.5 66 117.9Q74.2 116.7 69.7 110.8zM69.7 110.8Q67.6 103.6 61.8 109.5Q65.4 116.9 69.7 110.8zM69.7 110.8Q75.9 106.6 68.5 102.8Q62.6 108.6 69.7 110.8zM69.7 110.8Q75.6 115.3 76.9 107.2Q69.5 103.3 69.7 110.8z" fill="#fff" stroke="#000" stroke-width=".7"/><circle cx="69.7" cy="110.8" r="1.8" fill="#000"/><path d="M111.3 58.9Q110.9 65.4 117.4 62.3Q116.5 55.1 111.3 58.9zM111.3 58.9Q105 60.6 110 65.8Q116.5 62.7 111.3 58.9zM111.3 58.9Q107.7 53.4 104.3 59.8Q109.2 65.1 111.3 58.9zM111.3 58.9Q115.4 53.9 108.3 52.6Q104.8 58.9 111.3 58.9zM111.3 58.9Q117.3 61.3 116.4 54.1Q109.3 52.7 111.3 58.9z" fill="#fff" stroke="#000" stroke-width=".7"/><circle cx="111.3" cy="58.9" r="1.5" fill="#000"/><path d="M89.3 110L83.6 111.3L83.8 117.1L80.8 112.2L75.4 114.1L79.2 109.8L75.6 105.2L80.9 107.4L84.2 102.6L83.7 108.4z" fill="#fff" stroke="#000" stroke-width=".7"/><path d="M57 97.3L52.8 95.4L49.6 98.8L50.1 94.2L45.9 92.3L50.4 91.3L51 86.7L53.3 90.7L57.9 89.8L54.8 93.2z" fill="#fff" stroke="#000" stroke-width=".7"/><path d="M53.6 77.6L49.7 73.5L44.9 76.4L47.6 71.5L43.3 67.8L48.8 68.8L51 63.6L51.7 69.2L57.4 69.7L52.3 72.1z" fill="#fff" stroke="#000" stroke-width=".7"/><path d="M119 61.1Q117.7 67.2 124.3 65.2Q124.5 58.4 119 61.1zM119 61.1Q112.9 61.8 116.8 67.4Q123.4 65.5 119 61.1zM119 61.1Q116.5 55.5 112.4 61Q116.2 66.6 119 61.1zM119 61.1Q123.6 57 117.2 54.8Q112.9 60.2 119 61.1zM119 61.1Q124.4 64.2 124.5 57.4Q118.1 55.1 119 61.1z" fill="#fff" stroke="#000" stroke-width=".7"/><circle cx="119" cy="61.1" r="1.5" fill="#000"/><path d="M98.4 109Q91.7 101.4 87.6 111.9Q96.5 118.9 98.4 109z" fill="#fff" stroke="#000" stroke-width=".7"/><path d="M89.2 46.7Q94.6 37.9 83.6 39.5Q79.3 49.7 89.2 46.7z" fill="#fff" stroke="#000" stroke-width=".7"/><path d="M71.6 52.8Q68.2 60 77 59.4Q79.3 50.9 71.6 52.8zM71.6 52.8Q63.7 51.9 67 60.1Q75.8 59.6 71.6 52.8zM71.6 52.8Q70 45 63.3 50.7Q66.5 58.9 71.6 52.8zM71.6 52.8Q78.5 49 71 44.3Q64.2 49.9 71.6 52.8zM71.6 52.8Q77.4 58.2 79.5 49.7Q72.1 44.9 71.6 52.8z" fill="#fff" stroke="#000" stroke-width=".7"/><circle cx="71.6" cy="52.8" r="1.9" fill="#000"/><path d="M58 48.9Q51.2 54.4 59.8 59.6Q66.1 51.9 58 48.9z" fill="#fff" stroke="#000" stroke-width=".7"/><path d="M92.7 44.7Q87.6 50 95.5 52Q99.9 45.3 92.7 44.7zM92.7 44.7Q86.1 41.6 86.6 49.7Q94.4 51.8 92.7 44.7zM92.7 44.7Q93.6 37.5 86.1 40.4Q86.5 48.5 92.7 44.7zM92.7 44.7Q99.9 43.4 94.7 37.1Q87.1 40 92.7 44.7zM92.7 44.7Q96.1 51.1 100.5 44.3Q95.5 38 92.7 44.7z" fill="#fff" stroke="#000" stroke-width=".7"/><circle cx="92.7" cy="44.7" r="1.7" fill="#000"/><path d="M95.8 105Q96.6 111.4 102.4 107.1Q100.2 100.3 95.8 105zM95.8 105Q89.9 107.8 95.8 111.9Q101.6 107.7 95.8 105zM95.8 105Q91.3 100.3 89.2 107.1Q94.9 111.4 95.8 105zM95.8 105Q98.8 99.3 91.7 99.4Q89.4 106.2 95.8 105zM95.8 105Q102.1 106.1 99.8 99.4Q92.7 99.3 95.8 105z" fill="#fff" stroke="#000" stroke-width=".7"/><circle cx="95.8" cy="105" r="1.5" fill="#000"/><path d="M118.2 92.6Q117.2 98.2 123.1 96.2Q123.2 89.9 118.2 92.6zM118.2 92.6Q112.6 93.4 116.3 98.4Q122.3 96.5 118.2 92.6zM118.2 92.6Q115.8 87.5 112.1 92.6Q115.8 97.7 118.2 92.6zM118.2 92.6Q122.3 88.7 116.3 86.8Q112.6 91.9 118.2 92.6zM118.2 92.6Q123.2 95.3 123.1 89Q117.2 87.1 118.2 92.6z" fill="#fff" stroke="#000" stroke-width=".7"/><circle cx="118.2" cy="92.6" r="1.3" fill="#000"/><path d="M97.9 73Q92.6 79.1 101.3 80.9Q105.9 73.3 97.9 73zM97.9 73Q90.5 69.8 91.4 78.7Q100.1 80.7 97.9 73zM97.9 73Q98.6 64.9 90.4 68.6Q91.2 77.5 97.9 73zM97.9 73Q105.8 71.2 99.8 64.5Q91.5 68 97.9 73zM97.9 73Q102 79.9 106.5 72.2Q100.7 65.4 97.9 73z" fill="#fff" stroke="#000" stroke-width=".7"/><circle cx="97.9" cy="73" r="1.9" fill="#000"/><path d="M66.1 46.4Q63.2 52.9 71.1 52.2Q73 44.5 66.1 46.4zM66.1 46.4Q59 45.6 62.1 52.9Q70 52.3 66.1 46.4zM66.1 46.4Q64.6 39.4 58.6 44.6Q61.6 51.9 66.1 46.4zM66.1 46.4Q72.3 42.7 65.5 38.7Q59.4 43.8 66.1 46.4zM66.1 46.4Q71.4 51.1 73.2 43.4Q66.4 39.2 66.1 46.4z" fill="#fff" stroke="#000" stroke-width=".7"/><circle cx="66.1" cy="46.4" r="1.7" fill="#000"/><path d="M64.1 99Q69.5 104.9 74.4 97Q66.9 91.5 64.1 99z" fill="#fff" stroke="#000" stroke-width=".7"/><path d="M72.1 100.6Q69 106.2 76.1 106.2Q78.4 99.5 72.1 100.6zM72.1 100.6Q65.8 99.3 68 106.1Q75.1 106.2 72.1 100.6zM72.1 100.6Q71.4 94.2 65.6 98.4Q67.7 105.2 72.1 100.6zM72.1 100.6Q78 97.9 72.2 93.7Q66.4 97.8 72.1 100.6zM72.1 100.6Q76.5 105.3 78.7 98.5Q73 94.2 72.1 100.6z" fill="#fff" stroke="#000" stroke-width=".7"/><circle cx="72.1" cy="100.6" r="1.5" fill="#000"/><path d="M70.9 109.7Q72 115.9 77.4 111.6Q75.1 105 70.9 109.7zM70.9 109.7Q65.4 112.6 71.2 116.4Q76.7 112.2 70.9 109.7zM70.9 109.7Q66.5 105.3 64.6 112Q70.3 115.9 70.9 109.7zM70.9 109.7Q73.8 104.1 66.8 104.4Q64.8 111 70.9 109.7zM70.9 109.7Q77.1 110.6 74.7 104.1Q67.8 104.3 70.9 109.7z" fill="#fff" stroke="#000" stroke-width=".7"/><circle cx="70.9" cy="109.7" r="1.5" fill="#000"/><path d="M84.4 92.5L80.7 92.2L78.6 95.3L77.8 91.6L74.2 90.6L77.4 88.7L77.3 85L80.1 87.4L83.5 86.1L82.1 89.6z" fill="#fff" stroke="#000" stroke-width=".7"/><path d="M65.1 111.2Q67.2 116.6 71.3 111.7Q68 106.2 65.1 111.2zM65.1 111.2Q60.6 114.9 66.6 117.2Q70.8 112.4 65.1 111.2zM65.1 111.2Q60.3 108.1 59.8 114.5Q65.7 117 65.1 111.2zM65.1 111.2Q66.6 105.6 60.4 107.2Q59.9 113.6 65.1 111.2zM65.1 111.2Q70.9 110.9 67.5 105.5Q61.2 106.9 65.1 111.2z" fill="#fff" stroke="#000" stroke-width=".7"/><circle cx="65.1" cy="111.2" r="1.4" fill="#000"/><path d="M80.2 112.8L77.2 108.4L72.1 110.2L75.4 106L72.1 101.8L77.1 103.6L80.1 99.1L79.9 104.5L85.1 106L80 107.4z" fill="#fff" stroke="#000" stroke-width=".7"/><path d="M116.1 66.7Q111.8 74.7 121.9 74.6Q125 65 116.1 66.7zM116.1 66.7Q107.2 65.1 110.5 74.6Q120.5 74.7 116.1 66.7zM116.1 66.7Q114.9 57.7 106.9 63.7Q109.9 73.3 116.1 66.7zM116.1 66.7Q124.3 62.8 116.1 57Q107.9 62.9 116.1 66.7zM116.1 66.7Q122.4 73.3 125.4 63.7Q117.3 57.7 116.1 66.7z" fill="#fff" stroke="#000" stroke-width=".7"/><circle cx="116.1" cy="66.7" r="2.1" fill="#000"/><path d="M52.3 89.8Q52.5 96.8 59.1 92.9Q57.6 85.3 52.3 89.8zM52.3 89.8Q45.7 92.2 51.5 97.3Q58.2 93.5 52.3 89.8zM52.3 89.8Q48 84.3 44.9 91.4Q50.7 96.6 52.3 89.8zM52.3 89.8Q56.2 84.1 48.5 83.4Q45.3 90.4 52.3 89.8zM52.3 89.8Q59 91.8 57.3 84.3Q49.6 83.4 52.3 89.8z" fill="#fff" stroke="#000" stroke-width=".7"/><circle cx="52.3" cy="89.8" r="1.6" fill="#000"/><path d="M62 44.2Q57.3 49.2 64.7 51.1Q68.9 44.7 62 44.2zM62 44.2Q55.8 41.2 56.3 48.9Q63.7 50.9 62 44.2zM62 44.2Q62.9 37.4 55.8 40.2Q56.2 47.8 62 44.2zM62 44.2Q68.8 42.9 63.9 37Q56.8 39.7 62 44.2zM62 44.2Q65.3 50.2 69.4 43.8Q64.6 37.8 62 44.2z" fill="#fff" stroke="#000" stroke-width=".7"/><circle cx="62" cy="44.2" r="1.6" fill="#000"/><path d="M58.8 110.5Q55 116.3 62.6 116.9Q65.7 109.9 58.8 110.5zM58.8 110.5Q52.1 108.7 53.9 116.1Q61.5 116.9 58.8 110.5zM58.8 110.5Q58.5 103.6 52 107.6Q53.6 115.1 58.8 110.5zM58.8 110.5Q65.3 108.1 59.5 103.1Q52.8 107 58.8 110.5zM58.8 110.5Q63.1 116 66 108.9Q60.3 103.8 58.8 110.5z" fill="#fff" stroke="#000" stroke-width=".7"/><circle cx="58.8" cy="110.5" r="1.6" fill="#000"/><path d="M108.4 73.8Q108.2 81.2 115.4 77.4Q114.2 69.3 108.4 73.8zM108.4 73.8Q101.3 75.9 107.2 81.6Q114.4 78 108.4 73.8zM108.4 73.8Q104.2 67.8 100.6 75.1Q106.3 80.9 108.4 73.8zM108.4 73.8Q112.8 68 104.8 66.8Q101 74.1 108.4 73.8zM108.4 73.8Q115.3 76.3 113.9 68.2Q105.9 66.9 108.4 73.8z" fill="#fff" stroke="#000" stroke-width=".7"/><circle cx="108.4" cy="73.8" r="1.7" fill="#000"/><path d="M115.3 57.3Q118.8 65.5 124.9 57.7Q119.4 49.4 115.3 57.3zM115.3 57.3Q108.6 63.2 117.9 66.5Q124.1 58.8 115.3 57.3zM115.3 57.3Q107.6 52.8 107.3 62.7Q116.6 66.1 115.3 57.3zM115.3 57.3Q117.2 48.6 107.7 51.4Q107.3 61.3 115.3 57.3zM115.3 57.3Q124.2 56.5 118.6 48.3Q109 50.9 115.3 57.3z" fill="#fff" stroke="#000" stroke-width=".7"/><circle cx="115.3" cy="57.3" r="2.1" fill="#000"/><path d="M79.2 100Q79.8 106.9 86.7 103.2Q84.6 95.6 79.2 100z" fill="#fff" stroke="#000" stroke-width=".7"/><path d="M115.3 61.7Q107.3 65.7 113.6 74.1Q121.9 67.7 115.3 61.7z" fill="#fff" stroke="#000" stroke-width=".7"/><path d="M118 86.6Q118.4 94.8 126.2 90Q124.2 81.1 118 86.6zM118 86.6Q110.3 89.5 117.3 95.4Q125.1 90.7 118 86.6zM118 86.6Q112.8 80.1 109.4 88.6Q116.2 94.6 118 86.6zM118 86.6Q122.5 79.7 113.4 79Q109.8 87.4 118 86.6zM118 86.6Q126 88.8 123.8 79.9Q114.7 79 118 86.6z" fill="#fff" stroke="#000" stroke-width=".7"/><circle cx="118" cy="86.6" r="2" fill="#000"/><path d="M69.6 44.3Q77.3 50.5 81.4 39.9Q71.3 34.5 69.6 44.3z" fill="#fff" stroke="#000" stroke-width=".7"/><path d="M51.7 60.1Q45.5 66.8 55.3 69.3Q60.8 60.8 51.7 60.1zM51.7 60.1Q43.5 56.2 44.1 66.4Q53.9 69 51.7 60.1zM51.7 60.1Q52.9 51.1 43.5 54.8Q44 65 51.7 60.1zM51.7 60.1Q60.7 58.4 54.2 50.6Q44.7 54.2 51.7 60.1zM51.7 60.1Q56.1 68.2 61.5 59.6Q55.2 51.7 51.7 60.1z" fill="#fff" stroke="#000" stroke-width=".7"/><circle cx="51.7" cy="60.1" r="2.2" fill="#000"/><path d="M77.4 61.3Q72.5 66.9 80.6 68.7Q84.9 61.6 77.4 61.3zM77.4 61.3Q70.6 58.4 71.4 66.6Q79.5 68.5 77.4 61.3zM77.4 61.3Q78.1 53.9 70.6 57.2Q71.3 65.4 77.4 61.3zM77.4 61.3Q84.7 59.7 79.2 53.5Q71.6 56.7 77.4 61.3zM77.4 61.3Q81.2 67.7 85.4 60.6Q80 54.4 77.4 61.3z" fill="#fff" stroke="#000" stroke-width=".7"/><circle cx="77.4" cy="61.3" r="1.8" fill="#000"/><path d="M63 99.4Q64.9 89.2 53.5 91.8Q53.5 103.5 63 99.4z" fill="#fff" stroke="#000" stroke-width=".7"/><path d="M73.3 66Q76.1 74 82.4 67Q77.7 58.8 73.3 66zM73.3 66Q66.6 71.3 75.2 75Q81.5 68 73.3 66zM73.3 66Q66.3 61.3 65.4 70.7Q74 74.5 73.3 66zM73.3 66Q75.6 57.9 66.5 60Q65.4 69.3 73.3 66zM73.3 66Q81.8 65.8 76.9 57.7Q67.7 59.6 73.3 66z" fill="#fff" stroke="#000" stroke-width=".7"/><circle cx="73.3" cy="66" r="2" fill="#000"/><path d="M64 95.9Q66.3 101.3 70.3 96.2Q66.7 90.8 64 95.9zM64 95.9Q59.6 99.8 65.7 102Q69.7 97 64 95.9zM64 95.9Q59 93 58.8 99.4Q64.8 101.7 64 95.9zM64 95.9Q65.3 90.3 59.1 92.1Q58.8 98.5 64 95.9zM64 95.9Q69.8 95.4 66.2 90.1Q60 91.8 64 95.9z" fill="#fff" stroke="#000" stroke-width=".7"/><circle cx="64" cy="95.9" r="1.4" fill="#000"/><path d="M91.7 73.7L88.5 68.9L83.1 71.1L86.7 66.5L83 62.1L88.4 64.1L91.5 59.2L91.2 65L96.9 66.4L91.3 67.9z" fill="#fff" stroke="#000" stroke-width=".7"/><path d="M68.8 49.8Q65.6 56.5 73.8 56Q76 48.1 68.8 49.8zM68.8 49.8Q61.4 48.8 64.4 56.5Q72.7 56.1 68.8 49.8zM68.8 49.8Q67.5 42.5 61.1 47.7Q64 55.5 68.8 49.8zM68.8 49.8Q75.4 46.3 68.4 41.8Q61.9 46.9 68.8 49.8zM68.8 49.8Q74.2 54.9 76.3 47Q69.4 42.4 68.8 49.8z" fill="#fff" stroke="#000" stroke-width=".7"/><circle cx="68.8" cy="49.8" r="1.8" fill="#000"/><path d="M81.7 60.2Q78.6 67.4 87.4 66.5Q89.3 58 81.7 60.2zM81.7 60.2Q73.9 59.5 77.4 67.5Q86.1 66.7 81.7 60.2zM81.7 60.2Q80 52.5 73.5 58.3Q76.9 66.4 81.7 60.2zM81.7 60.2Q88.5 56.1 80.9 51.7Q74.3 57.5 81.7 60.2zM81.7 60.2Q87.7 65.3 89.5 56.8Q82 52.3 81.7 60.2z" fill="#fff" stroke="#000" stroke-width=".7"/><circle cx="81.7" cy="60.2" r="1.9" fill="#000"/><path d="M103.1 102.4Q93.2 103.2 100.8 110.7Q111.2 108.3 103.1 102.4z" fill="#fff" stroke="#000" stroke-width=".7"/><path d="M90.2 69.7Q83.4 73.5 90.5 78.7Q97.3 73.1 90.2 69.7z" fill="#fff" stroke="#000" stroke-width=".7"/><path d="M60.9 105Q65.1 112.4 70.5 104.6Q64.4 97.2 60.9 105z" fill="#fff" stroke="#000" stroke-width=".7"/><path d="M88.2 66.6L85.3 62.4L80.4 64.1L83.5 60L80.3 55.9L85.2 57.6L88.1 53.3L88 58.5L93 59.9L88.1 61.4z" fill="#fff" stroke="#000" stroke-width=".7"/><path d="M60.3 83.6L56.8 79.2L51.7 81.8L54.8 77L50.7 73L56.2 74.5L58.8 69.4L59.1 75.1L64.7 76L59.4 78z" fill="#fff" stroke="#000" stroke-width=".7"/><path d="M52.9 64.3Q48.5 68.7 55.2 70.6Q59.1 64.9 52.9 64.3zM52.9 64.3Q47.2 61.4 47.5 68.4Q54.2 70.4 52.9 64.3zM52.9 64.3Q53.8 58 47.3 60.5Q47.4 67.5 52.9 64.3zM52.9 64.3Q59.1 63.2 54.7 57.8Q48.2 60.1 52.9 64.3zM52.9 64.3Q55.8 69.8 59.6 64Q55.4 58.5 52.9 64.3z" fill="#fff" stroke="#000" stroke-width=".7"/><circle cx="52.9" cy="64.3" r="1.5" fill="#000"/><path d="M91.4 108.2Q90.4 116.9 99.4 113.2Q98.9 103.5 91.4 108.2zM91.4 108.2Q82.8 109.9 89.1 117.4Q98.2 113.8 91.4 108.2zM91.4 108.2Q87.1 100.5 82 108.8Q88.1 116.4 91.4 108.2zM91.4 108.2Q97.4 101.7 87.9 99.4Q82.6 107.6 91.4 108.2zM91.4 108.2Q99.4 111.9 98.7 102.1Q89.2 99.6 91.4 108.2z" fill="#fff" stroke="#000" stroke-width=".7"/><circle cx="91.4" cy="108.2" r="2.1" fill="#000"/><path d="M72.4 101.3L68.9 100.1L66.2 102.5L66.3 98.9L63.2 97L66.6 96L67.4 92.4L69.5 95.4L73.1 95.1L70.9 98z" fill="#fff" stroke="#000" stroke-width=".7"/><path d="M94 59Q95.2 65 100.4 60.7Q98 54.3 94 59zM94 59Q88.7 62 94.4 65.6Q99.7 61.3 94 59zM94 59Q89.6 54.8 87.9 61.4Q93.6 65.1 94 59zM94 59Q96.6 53.5 89.9 53.9Q88.1 60.5 94 59zM94 59Q100.1 59.8 97.6 53.5Q90.8 53.8 94 59z" fill="#fff" stroke="#000" stroke-width=".7"/><circle cx="94" cy="59" r="1.4" fill="#000"/><path d="M68.1 85.4Q61.1 85.7 63.9 93.3Q71.8 91.4 68.1 85.4z" fill="#fff" stroke="#000" stroke-width=".7"/><path d="M98.2 56.8Q94.8 62.2 101.8 62.5Q104.4 56 98.2 56.8zM98.2 56.8Q92 55.3 93.8 62.1Q100.9 62.5 98.2 56.8zM98.2 56.8Q97.7 50.5 91.8 54.3Q93.5 61.1 98.2 56.8zM98.2 56.8Q104 54.4 98.5 50Q92.6 53.7 98.2 56.8zM98.2 56.8Q102.3 61.6 104.8 55Q99.3 50.5 98.2 56.8z" fill="#fff" stroke="#000" stroke-width=".7"/><circle cx="98.2" cy="56.8" r="1.5" fill="#000"/><path d="M88.9 48.4Q87.2 55.2 94.8 53.2Q95.3 45.4 88.9 48.4zM88.9 48.4Q81.9 48.8 86.1 55.4Q93.7 53.5 88.9 48.4zM88.9 48.4Q86.3 41.8 81.3 47.9Q85.5 54.5 88.9 48.4zM88.9 48.4Q94.3 43.8 87 41Q82 47 88.9 48.4zM88.9 48.4Q94.9 52.1 95.3 44.3Q88.1 41.4 88.9 48.4z" fill="#fff" stroke="#000" stroke-width=".7"/><circle cx="88.9" cy="48.4" r="1.7" fill="#000"/><path d="M95.4 50.3Q94.8 58.4 103 54.6Q102.1 45.6 95.4 50.3zM95.4 50.3Q87.5 52.3 93.6 58.9Q101.9 55.2 95.4 50.3zM95.4 50.3Q91.1 43.4 86.7 51.3Q92.7 58 95.4 50.3zM95.4 50.3Q100.6 44 91.7 42.3Q87.2 50.2 95.4 50.3zM95.4 50.3Q103 53.4 101.9 44.4Q93 42.5 95.4 50.3z" fill="#fff" stroke="#000" stroke-width=".7"/><circle cx="95.4" cy="50.3" r="1.9" fill="#000"/><path d="M74.6 69.1L70.7 67.7L67.8 70.7L68 66.5L64.2 64.7L68.2 63.6L68.8 59.4L71.1 62.9L75.2 62.1L72.6 65.4z" fill="#fff" stroke="#000" stroke-width=".7"/><path d="M82.5 76.3L76.5 74.9L74.2 80.6L73.6 74.5L67.5 74.1L73.1 71.6L71.6 65.7L75.7 70.3L80.9 67L77.8 72.3z" fill="#fff" stroke="#000" stroke-width=".7"/><path d="M64 94.2Q60.4 98.6 66.6 99.7Q69.6 94.3 64 94.2zM64 94.2Q58.8 92.2 59.6 98.3Q65.7 99.6 64 94.2zM64 94.2Q64.3 88.6 58.7 91.3Q59.4 97.5 64 94.2zM64 94.2Q69.4 92.8 65.1 88.3Q59.5 90.9 64 94.2zM64 94.2Q67 99 70 93.5Q65.8 88.9 64 94.2z" fill="#fff" stroke="#000" stroke-width=".7"/><circle cx="64" cy="94.2" r="1.3" fill="#000"/><path d="M80.1 100.6Q78.9 109.4 88.1 105.8Q87.7 96 80.1 100.6zM80.1 100.6Q71.4 102.2 77.6 109.8Q86.8 106.4 80.1 100.6zM80.1 100.6Q75.9 92.8 70.6 101.1Q76.7 108.8 80.1 100.6zM80.1 100.6Q86.2 94.2 76.7 91.7Q71.2 99.9 80.1 100.6zM80.1 100.6Q88.1 104.5 87.5 94.6Q78 92 80.1 100.6z" fill="#fff" stroke="#000" stroke-width=".7"/><circle cx="80.1" cy="100.6" r="2.1" fill="#000"/><path d="M61.5 45Q60.2 55.6 71 51Q70.5 39.2 61.5 45z" fill="#fff" stroke="#000" stroke-width=".7"/><path d="M94.2 69.6Q91.7 62.1 85.5 68.4Q89.8 76.2 94.2 69.6z" fill="#fff" stroke="#000" stroke-width=".7"/><path d="M115.7 51.5Q109.7 57.7 118.9 60.1Q124.3 52.3 115.7 51.5zM115.7 51.5Q108 47.7 108.5 57.2Q117.6 59.9 115.7 51.5zM115.7 51.5Q116.9 43 108 46.4Q108.4 55.9 115.7 51.5zM115.7 51.5Q124.2 50 118.2 42.6Q109.2 45.9 115.7 51.5zM115.7 51.5Q119.7 59.1 124.9 51.1Q119.1 43.6 115.7 51.5z" fill="#fff" stroke="#000" stroke-width=".7"/><circle cx="115.7" cy="51.5" r="2" fill="#000"/><path d="M70.5 57.3L64.8 55.1L61.7 60.3L62 54.3L56.1 52.9L62 51.3L61.4 45.3L64.7 50.3L70.3 47.9L66.5 52.7z" fill="#fff" stroke="#000" stroke-width=".7"/><path d="M53.8 107.9Q50.8 116.4 60.6 114.7Q62.2 104.9 53.8 107.9zM53.8 107.9Q44.8 107.7 49.5 116.5Q59.3 115 53.8 107.9zM53.8 107.9Q51.2 99.3 44.3 106.5Q48.8 115.3 53.8 107.9zM53.8 107.9Q61.1 102.8 52.2 98.4Q45.2 105.4 53.8 107.9zM53.8 107.9Q60.9 113.3 62.3 103.5Q53.5 99 53.8 107.9z" fill="#fff" stroke="#000" stroke-width=".7"/><circle cx="53.8" cy="107.9" r="2.1" fill="#000"/><path d="M108.5 55.1Q116.9 56.4 113.7 47.6Q104.4 47.7 108.5 55.1z" fill="#fff" stroke="#000" stroke-width=".7"/><path d="M108.9 56.6Q107.4 63.5 114.9 61.2Q115.2 53.4 108.9 56.6zM108.9 56.6Q101.8 57.4 106.4 63.8Q113.9 61.6 108.9 56.6zM108.9 56.6Q106 50.2 101.3 56.5Q105.7 62.9 108.9 56.6zM108.9 56.6Q114.1 51.9 106.7 49.3Q101.9 55.5 108.9 56.6zM108.9 56.6Q115 60.1 115.1 52.3Q107.7 49.6 108.9 56.6z" fill="#fff" stroke="#000" stroke-width=".7"/><circle cx="108.9" cy="56.6" r="1.7" fill="#000"/><path d="M77.2 52.5Q72 58.9 81.1 60.5Q85.5 52.5 77.2 52.5zM77.2 52.5Q69.5 49.5 70.8 58.6Q79.8 60.4 77.2 52.5zM77.2 52.5Q77.7 44.2 69.4 48.2Q70.5 57.3 77.2 52.5zM77.2 52.5Q85.2 50.4 78.9 43.7Q70.5 47.6 77.2 52.5zM77.2 52.5Q81.7 59.4 86.1 51.3Q79.8 44.6 77.2 52.5z" fill="#fff" stroke="#000" stroke-width=".7"/><circle cx="77.2" cy="52.5" r="2" fill="#000"/><path d="M52.9 82.8Q49 91.9 59 88.3Q61.6 78.1 52.9 82.8z" fill="#fff" stroke="#000" stroke-width=".7"/><path d="M92.6 82Q93.1 73.4 84.3 77.2Q85.4 86.7 92.6 82z" fill="#fff" stroke="#000" stroke-width=".7"/><path d="M80.2 89.5Q83.1 96.1 88 89.7Q83.5 83 80.2 89.5zM80.2 89.5Q74.8 94.3 82.4 96.9Q87.3 90.6 80.2 89.5zM80.2 89.5Q74 85.8 73.8 93.8Q81.3 96.6 80.2 89.5zM80.2 89.5Q81.8 82.4 74.1 84.7Q73.8 92.7 80.2 89.5zM80.2 89.5Q87.4 88.7 82.8 82.2Q75.1 84.3 80.2 89.5z" fill="#fff" stroke="#000" stroke-width=".7"/><circle cx="80.2" cy="89.5" r="1.7" fill="#000"/><path d="M93.9 77.8Q89.6 85 99 85.3Q102.3 76.5 93.9 77.8zM93.9 77.8Q85.7 75.9 88.3 84.9Q97.7 85.3 93.9 77.8zM93.9 77.8Q93.2 69.4 85.4 74.7Q87.9 83.7 93.9 77.8zM93.9 77.8Q101.7 74.4 94.3 68.7Q86.5 73.9 93.9 77.8zM93.9 77.8Q99.5 84.1 102.7 75.3Q95.3 69.5 93.9 77.8z" fill="#fff" stroke="#000" stroke-width=".7"/><circle cx="93.9" cy="77.8" r="2" fill="#000"/><path d="M82.5 56.4Q84.2 62.1 88.9 57.4Q85.9 51.5 82.5 56.4zM82.5 56.4Q77.6 59.8 83.5 62.7Q88.3 58.1 82.5 56.4zM82.5 56.4Q77.8 52.7 76.8 59.3Q82.7 62.4 82.5 56.4zM82.5 56.4Q84.6 50.8 78 51.8Q76.9 58.4 82.5 56.4zM82.5 56.4Q88.5 56.6 85.5 50.7Q78.9 51.6 82.5 56.4z" fill="#fff" stroke="#000" stroke-width=".7"/><circle cx="82.5" cy="56.4" r="1.4" fill="#000"/><path d="M80.6 50.3Q83.4 57.2 88.6 50.7Q84.1 43.7 80.6 50.3zM80.6 50.3Q74.9 55.2 82.7 58.1Q87.9 51.7 80.6 50.3zM80.6 50.3Q74.2 46.4 73.8 54.7Q81.6 57.7 80.6 50.3zM80.6 50.3Q82.3 43.1 74.3 45.3Q73.8 53.6 80.6 50.3zM80.6 50.3Q88 49.7 83.4 42.8Q75.4 44.9 80.6 50.3z" fill="#fff" stroke="#000" stroke-width=".7"/><circle cx="80.6" cy="50.3" r="1.8" fill="#000"/><path d="M95.2 49.7Q97 58.8 106.4 53.6Q102.4 43.7 95.2 49.7z" fill="#fff" stroke="#000" stroke-width=".7"/><path d="M88.3 74.8L85.4 72.5L82 74L83.3 70.5L80.9 67.7L84.6 67.9L86.5 64.7L87.5 68.3L91.1 69.1L88 71.2z" fill="#fff" stroke="#000" stroke-width=".7"/><path d="M122.6 99.8L120 96.9L116.3 97.9L118.2 94.6L116.1 91.3L119.9 92.2L122.3 89.2L122.7 93L126.3 94.4L122.8 95.9z" fill="#fff" stroke="#000" stroke-width=".7"/><path d="M87.9 114.6L84.8 112.5L81.5 114.3L82.5 110.7L79.8 108.1L83.6 107.9L85.2 104.5L86.5 108.1L90.2 108.6L87.3 110.9z" fill="#fff" stroke="#000" stroke-width=".7"/><path d="M116.1 48.5Q118.1 56.7 124.9 50.3Q121.1 41.8 116.1 48.5zM116.1 48.5Q109 53 117.1 57.5Q124 51.2 116.1 48.5zM116.1 48.5Q109.6 43.1 107.9 52.3Q115.9 56.9 116.1 48.5zM116.1 48.5Q119.2 40.7 110 41.9Q108 51 116.1 48.5zM116.1 48.5Q124.4 49.1 120.5 40.7Q111.2 41.7 116.1 48.5z" fill="#fff" stroke="#000" stroke-width=".7"/><circle cx="116.1" cy="48.5" r="2" fill="#000"/><path d="M118 66.2L114.4 65.4L112 68.1L111.6 64.4L108.2 63L111.6 61.5L112 57.8L114.4 60.6L118.1 59.8L116.2 63z" fill="#fff" stroke="#000" stroke-width=".7"/><path d="M115.3 58.4Q115.6 65.8 122.7 61.5Q120.9 53.4 115.3 58.4zM115.3 58.4Q108.3 61 114.6 66.4Q121.7 62.2 115.3 58.4zM115.3 58.4Q110.7 52.5 107.5 60.2Q113.7 65.7 115.3 58.4zM115.3 58.4Q119.4 52.1 111.2 51.5Q107.9 59.1 115.3 58.4zM115.3 58.4Q122.5 60.4 120.6 52.3Q112.3 51.5 115.3 58.4z" fill="#fff" stroke="#000" stroke-width=".7"/><circle cx="115.3" cy="58.4" r="1.8" fill="#000"/><path d="M52.6 56.6Q49 64.9 59 63.9Q61.3 54.1 52.6 56.6zM52.6 56.6Q43.6 55.7 47.6 64.9Q57.6 64.1 52.6 56.6zM52.6 56.6Q50.6 47.7 43.1 54.4Q47 63.7 52.6 56.6zM52.6 56.6Q60.4 52 51.8 46.9Q44.1 53.4 52.6 56.6zM52.6 56.6Q59.4 62.6 61.6 52.7Q53 47.5 52.6 56.6z" fill="#fff" stroke="#000" stroke-width=".7"/><circle cx="52.6" cy="56.6" r="2.1" fill="#000"/><path d="M113.6 55.6Q117.5 47.7 108 49.2Q105.2 58.4 113.6 55.6z" fill="#fff" stroke="#000" stroke-width=".7"/><path d="M75.5 104.2Q73.2 114.4 84.2 110.9Q84.8 99.4 75.5 104.2z" fill="#fff" stroke="#000" stroke-width=".7"/><circle cx="120.5" cy="87.5" r="1.5" fill="#000"/><circle cx="106.6" cy="62.3" r="2.2" fill="#000"/><circle cx="91" cy="68.9" r="1.9" fill="#000"/><circle cx="81.4" cy="56.2" r="1.9" fill="#000"/><circle cx="53.4" cy="100.6" r="1.3" fill="#000"/><circle cx="95.4" cy="111.9" r="1.7" fill="#000"/><circle cx="97.1" cy="65.6" r="1" fill="#000"/><circle cx="52.4" cy="54.3" r="1.7" fill="#000"/><circle cx="80.7" cy="79.4" r="2.1" fill="#000"/><circle cx="59.4" cy="59.7" r="1.8" fill="#000"/><circle cx="51.6" cy="44.2" r="1.4" fill="#000"/><circle cx="57.6" cy="68.6" r="1.3" fill="#000"/><circle cx="91.4" cy="84.6" r="1.2" fill="#000"/><circle cx="94.3" cy="76.8" r="1.2" fill="#000"/><circle cx="116.5" cy="60.8" r="1.2" fill="#000"/><circle cx="56.8" cy="88" r="2" fill="#000"/><circle cx="105.5" cy="71.7" r="1.3" fill="#000"/><circle cx="50.8" cy="88.5" r="1.7" fill="#000"/><circle cx="74.9" cy="88.5" r="1.5" fill="#000"/><circle cx="116.5" cy="94.6" r="1.3" fill="#000"/><circle cx="114.1" cy="47" r="1.6" fill="#000"/><circle cx="78.8" cy="60.4" r="1.1" fill="#000"/><circle cx="105.3" cy="44.9" r="1.7" fill="#000"/><circle cx="116.8" cy="53.8" r="1.2" fill="#000"/><circle cx="93.2" cy="79" r="1.8" fill="#000"/><circle cx="107.8" cy="56.1" r="1.4" fill="#000"/><circle cx="71.3" cy="47.3" r="2.1" fill="#000"/><circle cx="105.6" cy="93.4" r="1" fill="#000"/><circle cx="110" cy="95.4" r="1.6" fill="#000"/><circle cx="102.7" cy="75.2" r="1.3" fill="#000"/><circle cx="57.5" cy="60" r="1" fill="#000"/><circle cx="73.8" cy="95.7" r="1.8" fill="#000"/><circle cx="110" cy="93.1" r="1.3" fill="#000"/><circle cx="89.3" cy="74.1" r="1.9" fill="#000"/><circle cx="87.2" cy="62.3" r="1.8" fill="#000"/><circle cx="118.5" cy="59" r="2.1" fill="#000"/><circle cx="51.1" cy="62" r="1.3" fill="#000"/><circle cx="102.8" cy="109.2" r="1.9" fill="#000"/><circle cx="73.2" cy="104.7" r="1.4" fill="#000"/><circle cx="67" cy="106.6" r="1.8" fill="#000"/><circle cx="99.2" cy="89.9" r="2.2" fill="#000"/><circle cx="83.3" cy="101.9" r="1.8" fill="#000"/><circle cx="110.9" cy="74.2" r="1.9" fill="#000"/><circle cx="90.5" cy="65.2" r="1.3" fill="#000"/><circle cx="94.2" cy="49.4" r="2.1" fill="#000"/><circle cx="60.3" cy="45.9" r="1.1" fill="#000"/><circle cx="116" cy="67.8" r="1.2" fill="#000"/><circle cx="52" cy="46.9" r="1.8" fill="#000"/><circle cx="95" cy="92.1" r="1.9" fill="#000"/><circle cx="54.7" cy="84.7" r="1.4" fill="#000"/><circle cx="108" cy="100.5" r="2.1" fill="#000"/><circle cx="54.7" cy="103.9" r="2.1" fill="#000"/><circle cx="117" cy="51.4" r="1.2" fill="#000"/></g><g clip-path="url(#bwb4)"><rect x="0" y="113" width="53" height="54.4" fill="#000"/><path d="M11.1 120.2L6.3 117.3L2.5 121.5L3.7 116L-1.4 113.6L4.2 113.1L4.9 107.5L7.1 112.7L12.6 111.6L8.4 115.3z" fill="#fff" stroke="#000" stroke-width=".7"/><path d="M43.7 147.4Q45.6 153 50.1 148.1Q46.9 142.3 43.7 147.4zM43.7 147.4Q38.9 150.9 44.9 153.6Q49.5 148.8 43.7 147.4zM43.7 147.4Q38.9 143.9 38.1 150.5Q44.1 153.3 43.7 147.4zM43.7 147.4Q45.5 141.7 39.1 143Q38.2 149.5 43.7 147.4zM43.7 147.4Q49.7 147.3 46.4 141.6Q39.9 142.8 43.7 147.4z" fill="#fff" stroke="#000" stroke-width=".7"/><circle cx="43.7" cy="147.4" r="1.4" fill="#000"/><path d="M40.1 124.2Q43 130.7 47.8 124.4Q43.4 117.8 40.1 124.2zM40.1 124.2Q34.8 128.9 42.3 131.5Q47.2 125.3 40.1 124.2zM40.1 124.2Q33.9 120.6 33.8 128.5Q41.3 131.2 40.1 124.2zM40.1 124.2Q41.6 117.1 34 119.5Q33.8 127.4 40.1 124.2zM40.1 124.2Q47.3 123.4 42.7 116.9Q35.1 119.1 40.1 124.2z" fill="#fff" stroke="#000" stroke-width=".7"/><circle cx="40.1" cy="124.2" r="1.7" fill="#000"/><path d="M13.6 128.4Q19.1 134.6 23.2 126.2Q15.8 120.4 13.6 128.4z" fill="#fff" stroke="#000" stroke-width=".7"/><path d="M26.7 159.3Q20.7 153.5 19.2 162.5Q26.7 167.6 26.7 159.3z" fill="#fff" stroke="#000" stroke-width=".7"/><path d="M41 131.9Q49 133.1 47.9 123.7Q38.5 124.2 41 131.9z" fill="#fff" stroke="#000" stroke-width=".7"/><path d="M4.8 157.6Q5.9 163.1 10.6 159.1Q8.4 153.3 4.8 157.6zM4.8 157.6Q-0.1 160.3 5.2 163.6Q10 159.7 4.8 157.6zM4.8 157.6Q0.7 153.8 -0.8 159.8Q4.4 163.2 4.8 157.6zM4.8 157.6Q7.2 152.5 1 153Q-0.6 158.9 4.8 157.6zM4.8 157.6Q10.4 158.3 8 152.5Q1.9 152.9 4.8 157.6z" fill="#fff" stroke="#000" stroke-width=".7"/><circle cx="4.8" cy="157.6" r="1.3" fill="#000"/><path d="M40.4 166.2Q39.1 173.5 46.9 170.8Q46.9 162.6 40.4 166.2zM40.4 166.2Q33.1 167.2 38 173.8Q45.8 171.2 40.4 166.2zM40.4 166.2Q37.1 159.5 32.4 166.3Q37.3 172.9 40.4 166.2zM40.4 166.2Q45.7 161 37.9 158.6Q33 165.3 40.4 166.2zM40.4 166.2Q46.9 169.7 46.8 161.4Q39 158.9 40.4 166.2z" fill="#fff" stroke="#000" stroke-width=".7"/><circle cx="40.4" cy="166.2" r="1.8" fill="#000"/><path d="M42.2 123Q38.3 128.7 45.9 129.4Q49.1 122.5 42.2 123zM42.2 123Q35.6 121.1 37.3 128.5Q44.9 129.4 42.2 123zM42.2 123Q42 116.2 35.5 120Q37 127.5 42.2 123zM42.2 123Q48.7 120.7 43 115.7Q36.4 119.5 42.2 123zM42.2 123Q46.4 128.5 49.5 121.5Q43.8 116.3 42.2 123z" fill="#fff" stroke="#000" stroke-width=".7"/><circle cx="42.2" cy="123" r="1.6" fill="#000"/><path d="M13.8 164.3Q11.1 170.1 18.2 169.6Q20 162.8 13.8 164.3zM13.8 164.3Q7.5 163.6 10.1 170.1Q17.2 169.7 13.8 164.3zM13.8 164.3Q12.6 158.1 7.2 162.6Q9.7 169.2 13.8 164.3zM13.8 164.3Q19.4 161.2 13.4 157.5Q7.9 162 13.8 164.3zM13.8 164.3Q18.5 168.7 20.2 161.8Q14.2 158 13.8 164.3z" fill="#fff" stroke="#000" stroke-width=".7"/><circle cx="13.8" cy="164.3" r="1.5" fill="#000"/><path d="M26.4 119Q34 112.8 23.7 111Q16.7 118.8 26.4 119z" fill="#fff" stroke="#000" stroke-width=".7"/><path d="M41.7 147.2Q41.3 154.2 48.4 150.8Q47.4 143 41.7 147.2zM41.7 147.2Q34.9 149 40.3 154.6Q47.4 151.3 41.7 147.2zM41.7 147.2Q37.8 141.2 34.2 148.2Q39.5 153.9 41.7 147.2zM41.7 147.2Q46.2 141.7 38.4 140.3Q34.6 147.2 41.7 147.2zM41.7 147.2Q48.3 149.7 47.2 141.9Q39.5 140.4 41.7 147.2z" fill="#fff" stroke="#000" stroke-width=".7"/><circle cx="41.7" cy="147.2" r="1.7" fill="#000"/><path d="M52.1 119L48.8 119.6L47.5 122.8L45.8 119.8L42.5 119.5L44.8 117L44 113.8L47.1 115.2L49.9 113.4L49.5 116.8z" fill="#fff" stroke="#000" stroke-width=".7"/><path d="M13.9 162Q4.9 166.9 15 171.9Q23.8 165 13.9 162z" fill="#fff" stroke="#000" stroke-width=".7"/><path d="M24.4 141.9Q14.7 140.8 17.6 151.5Q28.7 150.7 24.4 141.9z" fill="#fff" stroke="#000" stroke-width=".7"/><path d="M21.5 127.1L17.3 123.9L13.3 127.1L14.9 122.2L10.6 119.4L15.8 119.4L17.2 114.5L18.8 119.4L23.9 119.2L19.7 122.2z" fill="#fff" stroke="#000" stroke-width=".7"/><path d="M9 136.9Q3.2 131.6 -1.6 139.4Q6.3 144.2 9 136.9z" fill="#fff" stroke="#000" stroke-width=".7"/><path d="M46.9 125.9Q44.1 132 51.5 131.5Q53.4 124.3 46.9 125.9zM46.9 125.9Q40.3 125.1 43 132Q50.5 131.6 46.9 125.9zM46.9 125.9Q45.7 119.4 39.9 124.1Q42.6 131.1 46.9 125.9zM46.9 125.9Q52.8 122.7 46.5 118.8Q40.7 123.4 46.9 125.9zM46.9 125.9Q51.8 130.5 53.6 123.3Q47.4 119.3 46.9 125.9z" fill="#fff" stroke="#000" stroke-width=".7"/><circle cx="46.9" cy="125.9" r="1.6" fill="#000"/><path d="M44.7 121.4Q44.9 127.9 51.1 124.2Q49.6 117.1 44.7 121.4zM44.7 121.4Q38.6 123.6 44 128.4Q50.3 124.8 44.7 121.4zM44.7 121.4Q40.7 116.3 37.9 122.9Q43.3 127.7 44.7 121.4zM44.7 121.4Q48.4 116 41.2 115.4Q38.2 122 44.7 121.4zM44.7 121.4Q51 123.2 49.3 116.2Q42.2 115.4 44.7 121.4z" fill="#fff" stroke="#000" stroke-width=".7"/><circle cx="44.7" cy="121.4" r="1.5" fill="#000"/><path d="M27.7 121.8Q23.2 126.2 30 128.1Q33.9 122.4 27.7 121.8zM27.7 121.8Q22.1 118.9 22.3 125.9Q29 127.9 27.7 121.8zM27.7 121.8Q28.6 115.5 22.1 118Q22.2 124.9 27.7 121.8zM27.7 121.8Q33.9 120.7 29.6 115.3Q23 117.6 27.7 121.8zM27.7 121.8Q30.6 127.3 34.4 121.5Q30.2 116 27.7 121.8z" fill="#fff" stroke="#000" stroke-width=".7"/><circle cx="27.7" cy="121.8" r="1.5" fill="#000"/><path d="M43.3 121L39.7 120.8L37.7 123.8L36.8 120.3L33.4 119.3L36.4 117.4L36.3 113.8L39 116.1L42.4 114.8L41.1 118.2z" fill="#fff" stroke="#000" stroke-width=".7"/><path d="M52.1 156.2Q54.7 148.7 45.6 148.5Q44.3 157.5 52.1 156.2z" fill="#fff" stroke="#000" stroke-width=".7"/><path d="M5.7 124.2Q5.3 129.9 11 127.2Q10.3 120.9 5.7 124.2zM5.7 124.2Q0.1 125.7 4.5 130.3Q10.3 127.6 5.7 124.2zM5.7 124.2Q2.6 119.4 -0.4 125Q3.9 129.7 5.7 124.2zM5.7 124.2Q9.3 119.8 3 118.7Q-0 124.2 5.7 124.2zM5.7 124.2Q11 126.3 10.1 120Q3.9 118.8 5.7 124.2z" fill="#fff" stroke="#000" stroke-width=".7"/><circle cx="5.7" cy="124.2" r="1.3" fill="#000"/><path d="M41.9 150.7Q38.6 159.1 48.9 159.4Q50.8 149.3 41.9 150.7z" fill="#fff" stroke="#000" stroke-width=".7"/><path d="M32 135Q31 125.9 20.8 129.4Q24.1 139.7 32 135z" fill="#fff" stroke="#000" stroke-width=".7"/><path d="M39.7 135.9Q34.6 142.4 43.7 143.9Q48 135.7 39.7 135.9zM39.7 135.9Q31.9 133.1 33.4 142.2Q42.4 143.7 39.7 135.9zM39.7 135.9Q40 127.6 31.8 131.8Q33.1 140.9 39.7 135.9zM39.7 135.9Q47.6 133.6 41.1 127.1Q32.9 131.2 39.7 135.9zM39.7 135.9Q44.3 142.8 48.5 134.6Q42.1 128 39.7 135.9z" fill="#fff" stroke="#000" stroke-width=".7"/><circle cx="39.7" cy="135.9" r="2" fill="#000"/><path d="M45.9 156.2L41.4 153.6L37.7 157.3L38.8 152.2L34.1 149.8L39.3 149.3L40.1 144.1L42.2 148.9L47.4 148L43.5 151.5z" fill="#fff" stroke="#000" stroke-width=".7"/><path d="M24.1 130Q32.3 128.3 25.8 121.7Q17.2 125.2 24.1 130z" fill="#fff" stroke="#000" stroke-width=".7"/><path d="M37.8 147.3Q36.9 154.4 44.3 151.4Q43.9 143.5 37.8 147.3zM37.8 147.3Q30.8 148.6 35.8 154.7Q43.3 151.9 37.8 147.3zM37.8 147.3Q34.4 141 30.1 147.7Q35.1 153.9 37.8 147.3zM37.8 147.3Q42.7 142 35 140.1Q30.7 146.7 37.8 147.3zM37.8 147.3Q44.3 150.3 43.8 142.4Q36.1 140.3 37.8 147.3z" fill="#fff" stroke="#000" stroke-width=".7"/><circle cx="37.8" cy="147.3" r="1.7" fill="#000"/><path d="M32.9 135.3Q35.6 127.3 25.8 124.8Q24.5 134.9 32.9 135.3z" fill="#fff" stroke="#000" stroke-width=".7"/><path d="M41.2 134.1Q44.8 142.6 51.1 134.6Q45.6 126 41.2 134.1zM41.2 134.1Q34.3 140.2 43.8 143.7Q50.3 135.8 41.2 134.1zM41.2 134.1Q33.4 129.4 33 139.6Q42.5 143.3 41.2 134.1zM41.2 134.1Q43.4 125.2 33.5 128Q33 138.2 41.2 134.1zM41.2 134.1Q50.4 133.4 44.7 124.9Q34.9 127.5 41.2 134.1z" fill="#fff" stroke="#000" stroke-width=".7"/><circle cx="41.2" cy="134.1" r="2.2" fill="#000"/><path d="M28.8 121.7Q28.1 131.3 39 129.3Q37.7 118.3 28.8 121.7z" fill="#fff" stroke="#000" stroke-width=".7"/><path d="M30.5 142.4Q40 142.8 35.5 133.1Q24.9 134.6 30.5 142.4z" fill="#fff" stroke="#000" stroke-width=".7"/><path d="M31.3 139.6L27.9 137.8L24.7 140.1L25.3 136.3L22.2 134L26 133.4L27.2 129.7L28.9 133.2L32.8 133.1L30.1 135.9z" fill="#fff" stroke="#000" stroke-width=".7"/><path d="M20.8 154.5Q20.8 163.7 29.8 158.8Q28 148.7 20.8 154.5zM20.8 154.5Q12 157.3 19.5 164.3Q28.6 159.5 20.8 154.5zM20.8 154.5Q15.4 147 11 156.3Q18.4 163.4 20.8 154.5zM20.8 154.5Q26.3 147 16.1 145.7Q11.6 155 20.8 154.5zM20.8 154.5Q29.6 157.4 27.7 147.3Q17.5 145.9 20.8 154.5z" fill="#fff" stroke="#000" stroke-width=".7"/><circle cx="20.8" cy="154.5" r="2.2" fill="#000"/><path d="M3 127.9Q2.5 133.5 8.2 131Q7.6 124.7 3 127.9zM3 127.9Q-2.5 129.2 1.7 133.8Q7.5 131.4 3 127.9zM3 127.9Q0.1 123.1 -3 128.5Q1.1 133.2 3 127.9zM3 127.9Q6.7 123.7 0.6 122.4Q-2.6 127.8 3 127.9zM3 127.9Q8.2 130.1 7.5 123.9Q1.4 122.5 3 127.9z" fill="#fff" stroke="#000" stroke-width=".7"/><circle cx="3" cy="127.9" r="1.3" fill="#000"/><path d="M22.3 151Q23.4 157.5 29.1 152.9Q26.7 146.1 22.3 151zM22.3 151Q16.5 154 22.5 158Q28.3 153.6 22.3 151zM22.3 151Q17.6 146.4 15.6 153.4Q21.6 157.5 22.3 151zM22.3 151Q25.2 145.1 18 145.4Q15.9 152.4 22.3 151zM22.3 151Q28.8 152 26.3 145.1Q19 145.3 22.3 151z" fill="#fff" stroke="#000" stroke-width=".7"/><circle cx="22.3" cy="151" r="1.6" fill="#000"/><path d="M39.3 164.1Q30.7 159.3 32.2 169.8Q42.2 173.6 39.3 164.1z" fill="#fff" stroke="#000" stroke-width=".7"/><path d="M11.2 120Q4.9 112.6 -0.6 122.4Q8.2 129.3 11.2 120z" fill="#fff" stroke="#000" stroke-width=".7"/><path d="M34 129.7L30.1 127.8L26.9 130.6L27.5 126.4L23.8 124.2L28.1 123.5L28.9 119.3L31 123.1L35.2 122.6L32.3 125.7z" fill="#fff" stroke="#000" stroke-width=".7"/><path d="M43.4 157.4Q41.8 163.9 48.9 162Q49.4 154.6 43.4 157.4zM43.4 157.4Q36.7 157.9 40.8 164.1Q48 162.3 43.4 157.4zM43.4 157.4Q40.9 151.2 36.2 157Q40.2 163.2 43.4 157.4zM43.4 157.4Q48.5 153.1 41.6 150.5Q36.8 156.1 43.4 157.4zM43.4 157.4Q49.1 160.9 49.4 153.5Q42.6 150.8 43.4 157.4z" fill="#fff" stroke="#000" stroke-width=".7"/><circle cx="43.4" cy="157.4" r="1.6" fill="#000"/><path d="M6.6 158.4Q7.6 167.1 15.5 161.5Q12.8 152.1 6.6 158.4zM6.6 158.4Q-1.3 161.9 6.4 167.8Q14.4 162.3 6.6 158.4zM6.6 158.4Q0.8 151.9 -2.4 161.1Q5.3 167 6.6 158.4zM6.6 158.4Q11 150.8 1.3 150.6Q-2 159.8 6.6 158.4zM6.6 158.4Q15.2 160.1 12.3 150.9Q2.6 150.6 6.6 158.4z" fill="#fff" stroke="#000" stroke-width=".7"/><circle cx="6.6" cy="158.4" r="2.1" fill="#000"/><path d="M19.9 126.8Q22.6 132.5 26.7 126.8Q22.7 121.1 19.9 126.8zM19.9 126.8Q15.4 131.1 22 133.2Q26.2 127.6 19.9 126.8zM19.9 126.8Q14.4 123.8 14.5 130.7Q21.1 133 19.9 126.8zM19.9 126.8Q21.1 120.6 14.5 122.8Q14.4 129.8 19.9 126.8zM19.9 126.8Q26.2 126 22 120.4Q15.4 122.5 19.9 126.8z" fill="#fff" stroke="#000" stroke-width=".7"/><circle cx="19.9" cy="126.8" r="1.5" fill="#000"/><path d="M38.3 128.3Q37.2 134.9 44.2 132.4Q44.1 124.9 38.3 128.3zM38.3 128.3Q31.6 129.3 36.2 135.2Q43.2 132.8 38.3 128.3zM38.3 128.3Q35.2 122.3 31 128.5Q35.5 134.4 38.3 128.3zM38.3 128.3Q43 123.6 35.9 121.5Q31.6 127.6 38.3 128.3zM38.3 128.3Q44.2 131.3 44 123.9Q36.9 121.7 38.3 128.3z" fill="#fff" stroke="#000" stroke-width=".7"/><circle cx="38.3" cy="128.3" r="1.6" fill="#000"/><path d="M22.7 147.7Q32.8 150.5 28.7 139.9Q17.4 138.6 22.7 147.7z" fill="#fff" stroke="#000" stroke-width=".7"/><path d="M10.3 159.3L4.8 159.8L4 165.3L1.8 160.2L-3.6 161.2L0.6 157.6L-2.1 152.7L2.7 155.6L6.5 151.6L5.3 156.9z" fill="#fff" stroke="#000" stroke-width=".7"/><path d="M44.1 147.4Q40.2 151.6 46.3 153.1Q49.7 147.8 44.1 147.4zM44.1 147.4Q39 145.1 39.4 151.3Q45.4 152.9 44.1 147.4zM44.1 147.4Q44.8 141.9 39 144.2Q39.3 150.4 44.1 147.4zM44.1 147.4Q49.6 146.4 45.6 141.6Q39.8 143.8 44.1 147.4zM44.1 147.4Q46.8 152.4 50.1 147.1Q46.2 142.2 44.1 147.4z" fill="#fff" stroke="#000" stroke-width=".7"/><circle cx="44.1" cy="147.4" r="1.3" fill="#000"/><path d="M34.8 126.6Q35.7 132.6 41.1 128.5Q38.9 122.1 34.8 126.6zM34.8 126.6Q29.3 129.3 34.9 133.2Q40.3 129.1 34.8 126.6zM34.8 126.6Q30.5 122.3 28.6 128.8Q34.1 132.7 34.8 126.6zM34.8 126.6Q37.6 121.2 30.8 121.4Q28.8 127.8 34.8 126.6zM34.8 126.6Q40.8 127.6 38.5 121.2Q31.7 121.3 34.8 126.6z" fill="#fff" stroke="#000" stroke-width=".7"/><circle cx="34.8" cy="126.6" r="1.4" fill="#000"/><path d="M41.1 131.8Q36.5 139.5 46.4 139.9Q50 130.7 41.1 131.8zM41.1 131.8Q32.4 129.8 35.1 139.3Q45 139.9 41.1 131.8zM41.1 131.8Q40.4 122.9 32.2 128.4Q34.7 138 41.1 131.8zM41.1 131.8Q49.4 128.4 41.6 122.2Q33.3 127.6 41.1 131.8zM41.1 131.8Q47 138.7 50.4 129.4Q42.8 123 41.1 131.8z" fill="#fff" stroke="#000" stroke-width=".7"/><circle cx="41.1" cy="131.8" r="2.1" fill="#000"/><path d="M8.9 161.5Q18 165.4 18.3 154.1Q7.3 151.7 8.9 161.5z" fill="#fff" stroke="#000" stroke-width=".7"/><path d="M41.8 158.6Q40 166.6 48.7 164.1Q49.1 155 41.8 158.6zM41.8 158.6Q33.6 159.4 38.7 166.9Q47.5 164.5 41.8 158.6zM41.8 158.6Q38.5 151.1 33 158.3Q38 165.9 41.8 158.6zM41.8 158.6Q47.9 153.3 39.4 150.2Q33.7 157.3 41.8 158.6zM41.8 158.6Q48.8 162.8 49.1 153.8Q40.6 150.6 41.8 158.6z" fill="#fff" stroke="#000" stroke-width=".7"/><circle cx="41.8" cy="158.6" r="1.9" fill="#000"/><path d="M45.6 139L40.8 138.9L39.2 143.5L37.8 138.9L32.9 138.8L37 136L35.5 131.4L39.4 134.4L43.3 131.5L41.7 136.1z" fill="#fff" stroke="#000" stroke-width=".7"/><circle cx="12.4" cy="120.6" r="1.6" fill="#000"/><circle cx="3.1" cy="138.4" r="1.2" fill="#000"/><circle cx="26" cy="140.1" r="1.6" fill="#000"/><circle cx="45.7" cy="113.4" r="2" fill="#000"/><circle cx="24.8" cy="143.6" r="1.8" fill="#000"/><circle cx="44.5" cy="133.4" r="1.5" fill="#000"/><circle cx="50.9" cy="117.1" r="1.8" fill="#000"/><circle cx="33.7" cy="114.6" r="1.7" fill="#000"/><circle cx="36.2" cy="163.7" r="1.4" fill="#000"/><circle cx="52" cy="140.8" r="1.6" fill="#000"/><circle cx="47.6" cy="114.8" r="1.9" fill="#000"/><circle cx="33.1" cy="131.4" r="2" fill="#000"/><circle cx="19.4" cy="138.8" r="1.6" fill="#000"/><circle cx="40.8" cy="124.5" r="1.5" fill="#000"/><circle cx="22.4" cy="143.1" r="2" fill="#000"/><circle cx="15.5" cy="158" r="1.5" fill="#000"/><circle cx="26.7" cy="127.8" r="1.6" fill="#000"/><circle cx="51.7" cy="148.6" r="2" fill="#000"/><circle cx="17.5" cy="130.2" r="1.4" fill="#000"/><circle cx="31.1" cy="147.5" r="1.9" fill="#000"/><circle cx="2.1" cy="152.3" r="2.1" fill="#000"/><circle cx="28.9" cy="115.7" r="1.4" fill="#000"/><circle cx="0.3" cy="123.3" r="2.1" fill="#000"/><circle cx="32.3" cy="148.8" r="1.9" fill="#000"/><circle cx="48.2" cy="146.3" r="1.7" fill="#000"/><circle cx="33.2" cy="150.9" r="1.7" fill="#000"/><circle cx="36.1" cy="124.6" r="1.8" fill="#000"/><circle cx="24.3" cy="154.5" r="1.1" fill="#000"/><circle cx="9.6" cy="115" r="1.9" fill="#000"/><circle cx="48.4" cy="148.7" r="1.4" fill="#000"/><circle cx="43.6" cy="155.8" r="1.7" fill="#000"/></g><g clip-path="url(#bwb5)"><rect x="118" y="113" width="49.4" height="54.4" fill="#000"/><path d="M130.7 129.4Q130.1 136.2 137 133.2Q136.4 125.7 130.7 129.4zM130.7 129.4Q124.1 130.9 129.1 136.5Q136 133.6 130.7 129.4zM130.7 129.4Q127.3 123.6 123.5 130.1Q128.4 135.8 130.7 129.4zM130.7 129.4Q135.2 124.4 127.9 122.7Q124 129.1 130.7 129.4zM130.7 129.4Q136.9 132.1 136.2 124.7Q128.9 122.9 130.7 129.4z" fill="#fff" stroke="#000" stroke-width=".7"/><circle cx="130.7" cy="129.4" r="1.6" fill="#000"/><path d="M149.7 163.8Q152.7 170.9 158 164.2Q153.4 157 149.7 163.8zM149.7 163.8Q143.9 168.8 151.9 171.8Q157.3 165.2 149.7 163.8zM149.7 163.8Q143.1 159.8 142.8 168.3Q150.7 171.4 149.7 163.8zM149.7 163.8Q151.5 156.3 143.3 158.6Q142.8 167.1 149.7 163.8zM149.7 163.8Q157.4 163.2 152.6 156.1Q144.4 158.2 149.7 163.8z" fill="#fff" stroke="#000" stroke-width=".7"/><circle cx="149.7" cy="163.8" r="1.8" fill="#000"/><path d="M123.9 157.1Q128.2 165.3 136.4 158.2Q129.6 149.8 123.9 157.1z" fill="#fff" stroke="#000" stroke-width=".7"/><path d="M143.7 149.7L138 147.6L134.9 152.8L135.1 146.7L129.2 145.4L135.1 143.8L134.4 137.7L137.8 142.8L143.4 140.3L139.6 145.1z" fill="#fff" stroke="#000" stroke-width=".7"/><path d="M138.4 118.6Q141.3 125.5 147.4 119.4Q142.6 112.3 138.4 118.6z" fill="#fff" stroke="#000" stroke-width=".7"/><path d="M118.2 150.2Q121.2 158.9 128 151.3Q123.1 142.4 118.2 150.2zM118.2 150.2Q110.9 155.7 120.2 159.9Q127.1 152.4 118.2 150.2zM118.2 150.2Q110.7 144.9 109.7 155.1Q118.9 159.4 118.2 150.2zM118.2 150.2Q120.9 141.4 110.9 143.6Q109.7 153.7 118.2 150.2zM118.2 150.2Q127.4 150 122.3 141.2Q112.3 143.2 118.2 150.2z" fill="#fff" stroke="#000" stroke-width=".7"/><circle cx="118.2" cy="150.2" r="2.2" fill="#000"/><path d="M161 120Q162.1 128.2 169.4 122.7Q166.6 114 161 120zM161 120Q153.5 123.6 161 128.9Q168.4 123.5 161 120zM161 120Q155.2 114.1 152.5 122.8Q160 128.2 161 120zM161 120Q164.8 112.7 155.7 112.9Q152.9 121.6 161 120zM161 120Q169.1 121.4 166.1 112.8Q156.9 112.8 161 120z" fill="#fff" stroke="#000" stroke-width=".7"/><circle cx="161" cy="120" r="2" fill="#000"/><path d="M154.2 123.2Q150.5 130.8 159.9 130.3Q162.5 121.3 154.2 123.2zM154.2 123.2Q145.9 122 149.2 130.8Q158.6 130.4 154.2 123.2zM154.2 123.2Q152.8 114.9 145.5 120.8Q148.7 129.6 154.2 123.2zM154.2 123.2Q161.7 119.2 153.8 114.1Q146.4 119.9 154.2 123.2zM154.2 123.2Q160.3 129.1 162.8 120Q155 114.8 154.2 123.2z" fill="#fff" stroke="#000" stroke-width=".7"/><circle cx="154.2" cy="123.2" r="2" fill="#000"/><path d="M160.3 152.7Q156.8 159.8 165.6 159.3Q168 150.9 160.3 152.7zM160.3 152.7Q152.4 151.6 155.6 159.8Q164.4 159.5 160.3 152.7zM160.3 152.7Q158.8 144.9 152 150.5Q155.1 158.7 160.3 152.7zM160.3 152.7Q167.2 148.9 159.8 144.2Q152.9 149.7 160.3 152.7zM160.3 152.7Q166 158.2 168.2 149.7Q160.9 144.8 160.3 152.7z" fill="#fff" stroke="#000" stroke-width=".7"/><circle cx="160.3" cy="152.7" r="1.9" fill="#000"/><path d="M140.8 163.7Q136.7 172 146.9 171.4Q149.7 161.7 140.8 163.7zM140.8 163.7Q131.7 162.4 135.3 171.9Q145.5 171.6 140.8 163.7zM140.8 163.7Q139.2 154.7 131.3 161.1Q134.7 170.6 140.8 163.7zM140.8 163.7Q148.9 159.4 140.3 153.9Q132.3 160.1 140.8 163.7zM140.8 163.7Q147.3 170.1 150 160.3Q141.6 154.6 140.8 163.7z" fill="#fff" stroke="#000" stroke-width=".7"/><circle cx="140.8" cy="163.7" r="2.2" fill="#000"/><path d="M118.6 113.8Q110.9 115.9 114 125Q122.6 120.6 118.6 113.8z" fill="#fff" stroke="#000" stroke-width=".7"/><path d="M160.5 122.5L155.9 123.6L155.6 128.3L153.1 124.3L148.5 125.4L151.5 121.8L149.1 117.9L153.4 119.6L156.5 116.1L156.2 120.7z" fill="#fff" stroke="#000" stroke-width=".7"/><path d="M136.2 144.3Q138.3 152.1 144.7 145.9Q140.9 137.7 136.2 144.3zM136.2 144.3Q129.4 148.7 137.3 152.9Q143.9 146.8 136.2 144.3zM136.2 144.3Q129.9 139.2 128.3 148Q136.2 152.4 136.2 144.3zM136.2 144.3Q139.1 136.7 130.2 138Q128.5 146.8 136.2 144.3zM136.2 144.3Q144.2 144.7 140.3 136.6Q131.4 137.7 136.2 144.3z" fill="#fff" stroke="#000" stroke-width=".7"/><circle cx="136.2" cy="144.3" r="1.9" fill="#000"/><path d="M157.4 132.8Q149 129.9 149 140.1Q159.1 141.5 157.4 132.8z" fill="#fff" stroke="#000" stroke-width=".7"/><path d="M156.8 164.4Q158.2 172.7 166.9 168.4Q163.5 159.4 156.8 164.4z" fill="#fff" stroke="#000" stroke-width=".7"/><path d="M170.5 155.4L166.6 153.7L163.5 156.7L163.9 152.4L160.2 150.5L164.3 149.5L165 145.4L167.2 149L171.4 148.4L168.6 151.6z" fill="#fff" stroke="#000" stroke-width=".7"/><path d="M166.3 158.2Q174.2 161.6 173.6 152.1Q164.2 149.9 166.3 158.2z" fill="#fff" stroke="#000" stroke-width=".7"/><path d="M136.6 150.3Q126.5 153.2 134 162.5Q144.6 157.1 136.6 150.3z" fill="#fff" stroke="#000" stroke-width=".7"/><path d="M118.1 127.3Q113.8 133.8 122.4 134.4Q125.8 126.5 118.1 127.3zM118.1 127.3Q110.6 125.3 112.6 133.6Q121.2 134.4 118.1 127.3zM118.1 127.3Q117.7 119.6 110.4 124.1Q112.3 132.5 118.1 127.3zM118.1 127.3Q125.3 124.6 118.8 119Q111.4 123.4 118.1 127.3zM118.1 127.3Q122.9 133.4 126.2 125.4Q119.7 119.7 118.1 127.3z" fill="#fff" stroke="#000" stroke-width=".7"/><circle cx="118.1" cy="127.3" r="1.8" fill="#000"/><path d="M165.3 121.9L161.5 117.8L156.6 120.6L159.4 115.7L155.2 112L160.7 113.1L162.9 107.9L163.6 113.5L169.2 114.1L164.1 116.4z" fill="#fff" stroke="#000" stroke-width=".7"/><path d="M151.1 133.5L146.5 130.4L142.4 134.2L143.9 128.9L139 126.2L144.6 126L145.6 120.5L147.6 125.8L153.1 125L148.7 128.5z" fill="#fff" stroke="#000" stroke-width=".7"/><path d="M163.1 131.9Q159.1 138.4 167.6 138.8Q170.7 130.9 163.1 131.9zM163.1 131.9Q155.7 130 157.9 138.2Q166.4 138.8 163.1 131.9zM163.1 131.9Q162.6 124.2 155.5 128.9Q157.6 137.1 163.1 131.9zM163.1 131.9Q170.2 129 163.6 123.7Q156.4 128.2 163.1 131.9zM163.1 131.9Q168.1 137.7 171.1 129.8Q164.6 124.4 163.1 131.9z" fill="#fff" stroke="#000" stroke-width=".7"/><circle cx="163.1" cy="131.9" r="1.8" fill="#000"/><path d="M132 157.7L128.3 156.3L125.4 158.9L125.7 155L122.3 153L126.1 152.1L126.9 148.2L129 151.6L132.9 151.1L130.4 154.1z" fill="#fff" stroke="#000" stroke-width=".7"/><path d="M151.5 138.3Q148.3 144 155.6 144Q157.9 137.1 151.5 138.3zM151.5 138.3Q145.1 137.1 147.3 144Q154.6 144.1 151.5 138.3zM151.5 138.3Q150.6 131.8 144.8 136.1Q147 143 151.5 138.3zM151.5 138.3Q157.4 135.5 151.5 131.3Q145.6 135.5 151.5 138.3zM151.5 138.3Q156 143.1 158.2 136.2Q152.3 131.8 151.5 138.3z" fill="#fff" stroke="#000" stroke-width=".7"/><circle cx="151.5" cy="138.3" r="1.5" fill="#000"/><path d="M157.1 138Q152.8 145.4 162.3 145.6Q165.6 136.7 157.1 138zM157.1 138Q148.7 136.2 151.5 145.3Q161 145.7 157.1 138zM157.1 138Q156.2 129.5 148.4 134.9Q151 144.1 157.1 138zM157.1 138Q165 134.5 157.4 128.8Q149.5 134.1 157.1 138zM157.1 138Q162.8 144.4 166 135.4Q158.5 129.5 157.1 138z" fill="#fff" stroke="#000" stroke-width=".7"/><circle cx="157.1" cy="138" r="2" fill="#000"/><path d="M135.6 149.2L130.2 146.9L126.9 151.7L127.4 145.9L121.9 144.3L127.5 143L127.3 137.2L130.3 142.2L135.8 140.2L132 144.6z" fill="#fff" stroke="#000" stroke-width=".7"/><path d="M141.5 145.1Q142.9 151.2 148.1 146.6Q145.5 140.1 141.5 145.1zM141.5 145.1Q136.1 148.3 142.1 151.8Q147.4 147.3 141.5 145.1zM141.5 145.1Q136.8 140.9 135.3 147.7Q141.3 151.4 141.5 145.1zM141.5 145.1Q144.1 139.3 137.1 139.9Q135.5 146.7 141.5 145.1zM141.5 145.1Q147.8 145.7 145 139.3Q138.1 139.8 141.5 145.1z" fill="#fff" stroke="#000" stroke-width=".7"/><circle cx="141.5" cy="145.1" r="1.5" fill="#000"/><path d="M152.6 132.7Q148.5 140.7 158.6 140.8Q161.5 131.2 152.6 132.7z" fill="#fff" stroke="#000" stroke-width=".7"/><path d="M120.2 167.2Q118.1 172.9 124.7 171.8Q125.9 165.3 120.2 167.2zM120.2 167.2Q114.2 167 117.2 172.9Q123.8 172 120.2 167.2zM120.2 167.2Q118.6 161.5 113.9 166.2Q116.8 172.1 120.2 167.2zM120.2 167.2Q125.2 163.9 119.3 160.9Q114.5 165.5 120.2 167.2zM120.2 167.2Q124.9 170.9 126 164.4Q120.1 161.3 120.2 167.2z" fill="#fff" stroke="#000" stroke-width=".7"/><circle cx="120.2" cy="167.2" r="1.4" fill="#000"/><path d="M156.9 121.5Q159.7 130 166.5 122.7Q161.8 114 156.9 121.5z" fill="#fff" stroke="#000" stroke-width=".7"/><path d="M124.5 171.1L120.2 169.3L117.2 172.8L117.5 168.2L113.2 166.3L117.8 165.2L118.2 160.6L120.6 164.6L125.2 163.5L122.1 167.1z" fill="#fff" stroke="#000" stroke-width=".7"/><path d="M130.9 155.4Q126.4 163.3 136.5 163.4Q139.9 153.9 130.9 155.4zM130.9 155.4Q122 153.5 125 163.2Q135.1 163.5 130.9 155.4zM130.9 155.4Q129.9 146.3 121.7 152.2Q124.5 161.9 130.9 155.4zM130.9 155.4Q139.2 151.7 131.1 145.6Q122.8 151.3 130.9 155.4zM130.9 155.4Q137 162.1 140.3 152.6Q132.3 146.4 130.9 155.4z" fill="#fff" stroke="#000" stroke-width=".7"/><circle cx="130.9" cy="155.4" r="2.2" fill="#000"/><path d="M158.5 165.4Q159.5 171 164.4 166.9Q162.1 161 158.5 165.4zM158.5 165.4Q153.4 168.2 158.8 171.6Q163.8 167.6 158.5 165.4zM158.5 165.4Q154.3 161.5 152.7 167.7Q158.1 171.1 158.5 165.4zM158.5 165.4Q160.9 160.2 154.5 160.7Q152.9 166.8 158.5 165.4zM158.5 165.4Q164.1 166.1 161.8 160.2Q155.4 160.6 158.5 165.4z" fill="#fff" stroke="#000" stroke-width=".7"/><circle cx="158.5" cy="165.4" r="1.4" fill="#000"/><path d="M126.9 117.6Q122.3 123.6 130.7 124.9Q134.6 117.3 126.9 117.6zM126.9 117.6Q119.7 115 121.1 123.4Q129.5 124.8 126.9 117.6zM126.9 117.6Q127.1 109.9 119.6 113.9Q120.9 122.2 126.9 117.6zM126.9 117.6Q134.3 115.3 128.2 109.4Q120.6 113.3 126.9 117.6zM126.9 117.6Q131.3 123.8 135 116.2Q129.1 110.2 126.9 117.6z" fill="#fff" stroke="#000" stroke-width=".7"/><circle cx="126.9" cy="117.6" r="1.8" fill="#000"/><path d="M144.4 168.1L141.1 167L138.4 169.2L138.5 165.7L135.5 163.9L138.8 162.8L139.7 159.4L141.7 162.3L145.2 162L143.1 164.8z" fill="#fff" stroke="#000" stroke-width=".7"/><path d="M142 123.3L138.2 122L135.4 124.9L135.5 120.8L131.9 119.1L135.7 117.9L136.3 113.9L138.6 117.2L142.6 116.5L140.1 119.7z" fill="#fff" stroke="#000" stroke-width=".7"/><path d="M149.6 165Q145.2 172.6 155 173.4Q158.4 164.2 149.6 165z" fill="#fff" stroke="#000" stroke-width=".7"/><path d="M165.7 166.9Q166.4 172.6 171.5 168.9Q169.7 162.8 165.7 166.9zM165.7 166.9Q160.5 169.4 165.7 173.1Q170.9 169.4 165.7 166.9zM165.7 166.9Q161.8 162.8 159.8 168.8Q164.9 172.6 165.7 166.9zM165.7 166.9Q168.5 161.9 162.1 161.9Q160.1 168 165.7 166.9zM165.7 166.9Q171.3 168 169.4 162Q163 161.9 165.7 166.9z" fill="#fff" stroke="#000" stroke-width=".7"/><circle cx="165.7" cy="166.9" r="1.4" fill="#000"/><path d="M142.9 162.6L137.3 163.7L137.3 169.4L134.5 164.4L129.1 166.2L132.9 162L129.6 157.3L134.8 159.7L138.1 155.1L137.5 160.8z" fill="#fff" stroke="#000" stroke-width=".7"/><path d="M156.8 151.6Q155.1 159.5 164.8 161.8Q164.9 151.9 156.8 151.6z" fill="#fff" stroke="#000" stroke-width=".7"/><path d="M155.3 164.1Q163.8 160.7 155.8 154.6Q147.1 159.9 155.3 164.1z" fill="#fff" stroke="#000" stroke-width=".7"/><path d="M123.2 130.6Q122.2 136.6 128.6 134.3Q128.4 127.6 123.2 130.6zM123.2 130.6Q117.2 131.5 121.3 136.8Q127.7 134.7 123.2 130.6zM123.2 130.6Q120.5 125.2 116.7 130.8Q120.7 136.1 123.2 130.6zM123.2 130.6Q127.5 126.4 121.1 124.5Q117.2 130 123.2 130.6zM123.2 130.6Q128.6 133.4 128.4 126.7Q122 124.7 123.2 130.6z" fill="#fff" stroke="#000" stroke-width=".7"/><circle cx="123.2" cy="130.6" r="1.4" fill="#000"/><path d="M126.3 126Q129.7 133.3 135 126.1Q129.9 118.7 126.3 126zM126.3 126Q120.4 131.5 128.9 134.3Q134.3 127.2 126.3 126zM126.3 126Q119.3 122 119.2 131Q127.7 134 126.3 126zM126.3 126Q127.9 118 119.4 120.7Q119.1 129.7 126.3 126zM126.3 126Q134.4 125 129.2 117.7Q120.5 120.3 126.3 126z" fill="#fff" stroke="#000" stroke-width=".7"/><circle cx="126.3" cy="126" r="1.9" fill="#000"/><path d="M153.4 123.6Q154.9 132.5 162.8 126.3Q159.4 116.8 153.4 123.6zM153.4 123.6Q145.4 127.8 153.8 133.3Q161.7 127.2 153.4 123.6zM153.4 123.6Q147 117.3 144.3 127Q152.6 132.6 153.4 123.6zM153.4 123.6Q157.5 115.5 147.4 116Q144.6 125.6 153.4 123.6zM153.4 123.6Q162.4 124.9 158.8 115.6Q148.8 115.8 153.4 123.6z" fill="#fff" stroke="#000" stroke-width=".7"/><circle cx="153.4" cy="123.6" r="2.1" fill="#000"/><path d="M168.7 163L165.1 162.5L162.8 165.4L162.2 161.8L158.7 160.5L162 158.8L162.1 155.1L164.8 157.7L168.3 156.7L166.6 160z" fill="#fff" stroke="#000" stroke-width=".7"/><path d="M128.6 167.2L123.7 165.9L121.1 170.2L120.9 165.1L115.9 163.9L120.7 162.2L120.3 157.1L123.4 161.1L128.1 159.2L125.3 163.4z" fill="#fff" stroke="#000" stroke-width=".7"/><path d="M134.8 157.8Q136.9 165.4 143.2 159.3Q139.4 151.3 134.8 157.8zM134.8 157.8Q128.2 162.1 135.9 166.2Q142.3 160.2 134.8 157.8zM134.8 157.8Q128.6 152.8 127.1 161.5Q134.8 165.7 134.8 157.8zM134.8 157.8Q137.6 150.4 128.9 151.6Q127.3 160.3 134.8 157.8zM134.8 157.8Q142.7 158.2 138.8 150.3Q130.1 151.4 134.8 157.8z" fill="#fff" stroke="#000" stroke-width=".7"/><circle cx="134.8" cy="157.8" r="1.9" fill="#000"/><path d="M128.9 116.1Q136.7 117.5 136.4 108.3Q127.1 108.4 128.9 116.1z" fill="#fff" stroke="#000" stroke-width=".7"/><circle cx="131.2" cy="135.4" r="1.2" fill="#000"/><circle cx="131.4" cy="158.7" r="1.4" fill="#000"/><circle cx="126.3" cy="139.7" r="1.4" fill="#000"/><circle cx="162.6" cy="119.2" r="2.2" fill="#000"/><circle cx="120.8" cy="161.7" r="1.8" fill="#000"/><circle cx="128.4" cy="139" r="1.3" fill="#000"/><circle cx="130.7" cy="124" r="1.4" fill="#000"/><circle cx="167" cy="167.3" r="2.1" fill="#000"/><circle cx="122.8" cy="128.7" r="2.1" fill="#000"/><circle cx="120.8" cy="152.5" r="1.4" fill="#000"/><circle cx="166.3" cy="113.9" r="2" fill="#000"/><circle cx="134.8" cy="120.6" r="1" fill="#000"/><circle cx="159.1" cy="141.6" r="1.2" fill="#000"/><circle cx="139.5" cy="162.6" r="1.3" fill="#000"/><circle cx="146.2" cy="120.5" r="1.2" fill="#000"/><circle cx="156.1" cy="151.7" r="1.2" fill="#000"/><circle cx="121.9" cy="117.8" r="1.7" fill="#000"/><circle cx="142.5" cy="127.9" r="1.2" fill="#000"/><circle cx="148.3" cy="151.5" r="2" fill="#000"/><circle cx="146.8" cy="124" r="1.1" fill="#000"/><circle cx="154.2" cy="135.2" r="1.9" fill="#000"/><circle cx="120.7" cy="157.1" r="1.4" fill="#000"/><circle cx="159.6" cy="160" r="1.6" fill="#000"/><circle cx="118.8" cy="162.5" r="1.6" fill="#000"/><circle cx="161.1" cy="127.5" r="1.2" fill="#000"/><circle cx="159.1" cy="133" r="1.2" fill="#000"/><circle cx="136.3" cy="145.4" r="1" fill="#000"/><circle cx="143.7" cy="137.2" r="1.6" fill="#000"/></g></g></g></svg><div class="lb"><em></em><span style="letter-spacing:0.39px">1dd6e1075f8d73a2517e82...</span></div></div>
<div class="tile" style="left:460.4px;top:329.4px"><svg width="210" height="193" viewBox="0 0 210 193"><defs><clipPath id="bwc0"><rect width="167.4" height="167.4"/></clipPath></defs><g transform="translate(21.8 16.8)"><rect width="167.4" height="167.4" fill="#060606"/><g clip-path="url(#bwc0)"><path d="M0 8C14 0 26 6 30 18C36 6 52 2 62 10C70 16 74 10 83 2" fill="none" stroke="#fff" stroke-width="2"/><path d="M4 26C16 14 30 22 38 30C46 20 58 22 66 28" fill="none" stroke="#fff" stroke-width="1.600"/><path d="M16 10Q19.3 19.7 31 15.5Q24.8 4.7 16 10z" fill="#fff"/><path d="M40 4Q35.9 12.8 47 16.1Q49.7 4.8 40 4z" fill="#fff"/><path d="M58 14C64 24 76 24 80 12C74 18 66 18 58 14z" fill="#ddd"/><path d="M54 8c6 8 22 8 26-2" fill="none" stroke="#fff" stroke-width="1.500"/><path d="M62 5Q64.4 9.8 68 5Q64.4 0.2 62 5zM62 5Q58.2 8.8 63.9 10.7Q67.3 5.8 62 5zM62 5Q57.2 2.5 57.1 8.5Q62.9 10.3 62 5zM62 5Q62.9 -0.3 57.1 1.5Q57.2 7.5 62 5zM62 5Q67.3 4.2 63.9 -0.7Q58.2 1.2 62 5z" fill="#fff"/><path d="M76 50C70 34 56 26 46 34C36 42 40 60 50 70" fill="none" stroke="#eee" stroke-width="11" stroke-linecap="round"/><path d="M76 50C70 34 56 26 46 34C36 42 40 60 50 70" fill="none" stroke="#000" stroke-width="11" stroke-dasharray="1.5 4"/><path d="M56 64C50 54 54 44 60 46C66 50 62 60 66 70" fill="none" stroke="#fff" stroke-width="1.500"/><g transform="rotate(-35 24 68)"><ellipse cx="24" cy="68" rx="21" ry="15" fill="#f4f4f4"/><path d="M3 68H45" stroke="#000" stroke-width="1"/><path d="M9 68l5.2 -12.8M9 68l5.2 12.8" stroke="#000" stroke-width=".8" fill="none"/><path d="M15 68l5.2 -12.8M15 68l5.2 12.8" stroke="#000" stroke-width=".8" fill="none"/><path d="M21 68l5.2 -12.8M21 68l5.2 12.8" stroke="#000" stroke-width=".8" fill="none"/><path d="M27 68l5.2 -12.8M27 68l5.2 12.8" stroke="#000" stroke-width=".8" fill="none"/><path d="M33 68l5.2 -12.8M33 68l5.2 12.8" stroke="#000" stroke-width=".8" fill="none"/><path d="M39 68l5.2 -12.8M39 68l5.2 12.8" stroke="#000" stroke-width=".8" fill="none"/></g><path d="M0 40C10 44 14 56 8 66C4 60 2 50 0 48z" fill="#ccc"/><g transform="rotate(10 4 112)"><ellipse cx="4" cy="112" rx="9" ry="16" fill="#f4f4f4"/><path d="M-5 112H13" stroke="#000" stroke-width="1"/><path d="M-1.4 112l2.2 -13.6M-1.4 112l2.2 13.6" stroke="#000" stroke-width=".8" fill="none"/><path d="M2.2 112l2.2 -13.6M2.2 112l2.2 13.6" stroke="#000" stroke-width=".8" fill="none"/><path d="M5.8 112l2.2 -13.6M5.8 112l2.2 13.6" stroke="#000" stroke-width=".8" fill="none"/><path d="M9.4 112l2.2 -13.6M9.4 112l2.2 13.6" stroke="#000" stroke-width=".8" fill="none"/></g><path d="M0 140C8 144 12 152 10 162H0z" fill="#ddd"/><path d="M20 100C30 84 50 80 58 96C62 108 50 118 40 112" fill="none" stroke="#fff" stroke-width="1.800"/><path d="M14 92C10 110 16 130 30 140" fill="none" stroke="#fff" stroke-width="1.600"/><path d="M60 78C52 92 56 110 68 124" fill="none" stroke="#fff" stroke-width="1.600"/><g transform="rotate(-20 44 107)"><ellipse cx="44" cy="107" rx="22" ry="14" fill="#f4f4f4"/><path d="M22 107H66" stroke="#000" stroke-width="1"/><path d="M28.3 107l5.5 -11.9M28.3 107l5.5 11.9" stroke="#000" stroke-width=".8" fill="none"/><path d="M34.6 107l5.5 -11.9M34.6 107l5.5 11.9" stroke="#000" stroke-width=".8" fill="none"/><path d="M40.9 107l5.5 -11.9M40.9 107l5.5 11.9" stroke="#000" stroke-width=".8" fill="none"/><path d="M47.1 107l5.5 -11.9M47.1 107l5.5 11.9" stroke="#000" stroke-width=".8" fill="none"/><path d="M53.4 107l5.5 -11.9M53.4 107l5.5 11.9" stroke="#000" stroke-width=".8" fill="none"/><path d="M59.7 107l5.5 -11.9M59.7 107l5.5 11.9" stroke="#000" stroke-width=".8" fill="none"/></g><path d="M56 110C62 106 68 112 66 122C60 126 54 120 56 110z" fill="#bbb" stroke="#fff" stroke-width="1"/><g transform="rotate(25 42 152)"><ellipse cx="42" cy="152" rx="14" ry="20" fill="#f4f4f4"/><path d="M28 152H56" stroke="#000" stroke-width="1"/><path d="M32.7 152l3.5 -17M32.7 152l3.5 17" stroke="#000" stroke-width=".8" fill="none"/><path d="M37.3 152l3.5 -17M37.3 152l3.5 17" stroke="#000" stroke-width=".8" fill="none"/><path d="M42 152l3.5 -17M42 152l3.5 17" stroke="#000" stroke-width=".8" fill="none"/><path d="M46.7 152l3.5 -17M46.7 152l3.5 17" stroke="#000" stroke-width=".8" fill="none"/><path d="M51.3 152l3.5 -17M51.3 152l3.5 17" stroke="#000" stroke-width=".8" fill="none"/></g><path d="M56 134C62 150 72 160 83 166M60 160C70 150 78 140 82 128" fill="none" stroke="#fff" stroke-width="2.200"/><path d="M66 130C70 146 76 156 83 160" fill="none" stroke="#fff" stroke-width="1.400"/><path d="M2 2C10 12 22 10 26 2M34 12C40 22 50 22 56 14M8 34C16 26 26 28 32 36M44 26C50 18 60 20 64 28" fill="none" stroke="#fff" stroke-width="2.200"/><path d="M6 16Q11.4 27.1 23.7 19.1Q14.8 7.4 6 16z" fill="#eee"/><path d="M30 30Q40 34.6 43.9 22Q31 19 30 30z" fill="#eee"/><path d="M50 18Q47.5 8.6 36.8 13.2Q42 23.6 50 18z" fill="#ddd"/><path d="M70 30Q76.1 24.1 67.9 18.2Q62.3 26.5 70 30z" fill="#eee"/><ellipse cx="24" cy="68" rx="24" ry="18" fill="none" stroke="#fff" stroke-width="1.200" transform="rotate(-35 24 68)"/><ellipse cx="44" cy="107" rx="25" ry="17" fill="none" stroke="#fff" stroke-width="1.200" transform="rotate(-20 44 107)"/><ellipse cx="42" cy="152" rx="17" ry="23" fill="none" stroke="#fff" stroke-width="1.200" transform="rotate(25 42 152)"/><path d="M0 86C8 84 14 90 16 98M2 128C10 126 18 132 20 142M66 140C70 150 72 158 70 166M24 128C30 124 36 126 40 130M58 128C62 134 62 142 58 148" fill="none" stroke="#fff" stroke-width="1.800"/><path d="M14 128Q13.1 137.7 24.7 137Q23.4 125.5 14 128z" fill="#eee"/><path d="M70 150Q63.9 155.9 72.1 161.8Q77.7 153.5 70 150z" fill="#ddd"/><path d="M20 92Q11.5 92.7 14 102.4Q23.7 99.7 20 92z" fill="#eee"/><path d="M64 92Q60.3 99.7 70 102.4Q72.5 92.7 64 92z" fill="#ddd"/><circle cx="49.8" cy="124.2" r="1.2" fill="#fff"/><circle cx="75.4" cy="123.9" r="1.2" fill="#fff"/><circle cx="2.3" cy="77.9" r="1.3" fill="#fff"/><circle cx="51.9" cy="150.8" r="0.7" fill="#fff"/><circle cx="37.5" cy="41.3" r="1" fill="#fff"/><circle cx="45.9" cy="2.2" r="0.8" fill="#fff"/><circle cx="22.4" cy="153.4" r="1.1" fill="#fff"/><circle cx="12.8" cy="133.4" r="0.7" fill="#fff"/><circle cx="49.4" cy="21.2" r="0.6" fill="#fff"/><circle cx="69.7" cy="35.1" r="0.8" fill="#fff"/><circle cx="78.6" cy="146" r="0.8" fill="#fff"/><circle cx="76.9" cy="90.3" r="1.1" fill="#fff"/><circle cx="16.4" cy="157.5" r="1.1" fill="#fff"/><circle cx="77.3" cy="149.6" r="0.8" fill="#fff"/><circle cx="28.9" cy="27.8" r="0.7" fill="#fff"/><circle cx="5.2" cy="50.4" r="1" fill="#fff"/><circle cx="0.3" cy="113.5" r="0.8" fill="#fff"/><circle cx="24.8" cy="137" r="0.9" fill="#fff"/><circle cx="25.3" cy="80.6" r="1.1" fill="#fff"/><circle cx="4.6" cy="163.2" r="0.6" fill="#fff"/><circle cx="60" cy="141.4" r="0.6" fill="#fff"/><circle cx="63" cy="61.3" r="1" fill="#fff"/><circle cx="0.7" cy="7.8" r="0.7" fill="#fff"/><circle cx="76.4" cy="32.9" r="1.1" fill="#fff"/><circle cx="74.4" cy="157.7" r="0.8" fill="#fff"/><circle cx="28.4" cy="87.8" r="1.1" fill="#fff"/><circle cx="8.6" cy="125.3" r="1.2" fill="#fff"/><circle cx="68.8" cy="6.1" r="1.3" fill="#fff"/><circle cx="7.3" cy="57" r="1" fill="#fff"/><circle cx="73.4" cy="56.9" r="1.2" fill="#fff"/><g transform="translate(167.4 0) scale(-1 1)"><path d="M0 8C14 0 26 6 30 18C36 6 52 2 62 10C70 16 74 10 83 2" fill="none" stroke="#fff" stroke-width="2"/><path d="M4 26C16 14 30 22 38 30C46 20 58 22 66 28" fill="none" stroke="#fff" stroke-width="1.600"/><path d="M16 10Q19.3 19.7 31 15.5Q24.8 4.7 16 10z" fill="#fff"/><path d="M40 4Q35.9 12.8 47 16.1Q49.7 4.8 40 4z" fill="#fff"/><path d="M58 14C64 24 76 24 80 12C74 18 66 18 58 14z" fill="#ddd"/><path d="M54 8c6 8 22 8 26-2" fill="none" stroke="#fff" stroke-width="1.500"/><path d="M62 5Q64.4 9.8 68 5Q64.4 0.2 62 5zM62 5Q58.2 8.8 63.9 10.7Q67.3 5.8 62 5zM62 5Q57.2 2.5 57.1 8.5Q62.9 10.3 62 5zM62 5Q62.9 -0.3 57.1 1.5Q57.2 7.5 62 5zM62 5Q67.3 4.2 63.9 -0.7Q58.2 1.2 62 5z" fill="#fff"/><path d="M76 50C70 34 56 26 46 34C36 42 40 60 50 70" fill="none" stroke="#eee" stroke-width="11" stroke-linecap="round"/><path d="M76 50C70 34 56 26 46 34C36 42 40 60 50 70" fill="none" stroke="#000" stroke-width="11" stroke-dasharray="1.5 4"/><path d="M56 64C50 54 54 44 60 46C66 50 62 60 66 70" fill="none" stroke="#fff" stroke-width="1.500"/><g transform="rotate(-35 24 68)"><ellipse cx="24" cy="68" rx="21" ry="15" fill="#f4f4f4"/><path d="M3 68H45" stroke="#000" stroke-width="1"/><path d="M9 68l5.2 -12.8M9 68l5.2 12.8" stroke="#000" stroke-width=".8" fill="none"/><path d="M15 68l5.2 -12.8M15 68l5.2 12.8" stroke="#000" stroke-width=".8" fill="none"/><path d="M21 68l5.2 -12.8M21 68l5.2 12.8" stroke="#000" stroke-width=".8" fill="none"/><path d="M27 68l5.2 -12.8M27 68l5.2 12.8" stroke="#000" stroke-width=".8" fill="none"/><path d="M33 68l5.2 -12.8M33 68l5.2 12.8" stroke="#000" stroke-width=".8" fill="none"/><path d="M39 68l5.2 -12.8M39 68l5.2 12.8" stroke="#000" stroke-width=".8" fill="none"/></g><path d="M0 40C10 44 14 56 8 66C4 60 2 50 0 48z" fill="#ccc"/><g transform="rotate(10 4 112)"><ellipse cx="4" cy="112" rx="9" ry="16" fill="#f4f4f4"/><path d="M-5 112H13" stroke="#000" stroke-width="1"/><path d="M-1.4 112l2.2 -13.6M-1.4 112l2.2 13.6" stroke="#000" stroke-width=".8" fill="none"/><path d="M2.2 112l2.2 -13.6M2.2 112l2.2 13.6" stroke="#000" stroke-width=".8" fill="none"/><path d="M5.8 112l2.2 -13.6M5.8 112l2.2 13.6" stroke="#000" stroke-width=".8" fill="none"/><path d="M9.4 112l2.2 -13.6M9.4 112l2.2 13.6" stroke="#000" stroke-width=".8" fill="none"/></g><path d="M0 140C8 144 12 152 10 162H0z" fill="#ddd"/><path d="M20 100C30 84 50 80 58 96C62 108 50 118 40 112" fill="none" stroke="#fff" stroke-width="1.800"/><path d="M14 92C10 110 16 130 30 140" fill="none" stroke="#fff" stroke-width="1.600"/><path d="M60 78C52 92 56 110 68 124" fill="none" stroke="#fff" stroke-width="1.600"/><g transform="rotate(-20 44 107)"><ellipse cx="44" cy="107" rx="22" ry="14" fill="#f4f4f4"/><path d="M22 107H66" stroke="#000" stroke-width="1"/><path d="M28.3 107l5.5 -11.9M28.3 107l5.5 11.9" stroke="#000" stroke-width=".8" fill="none"/><path d="M34.6 107l5.5 -11.9M34.6 107l5.5 11.9" stroke="#000" stroke-width=".8" fill="none"/><path d="M40.9 107l5.5 -11.9M40.9 107l5.5 11.9" stroke="#000" stroke-width=".8" fill="none"/><path d="M47.1 107l5.5 -11.9M47.1 107l5.5 11.9" stroke="#000" stroke-width=".8" fill="none"/><path d="M53.4 107l5.5 -11.9M53.4 107l5.5 11.9" stroke="#000" stroke-width=".8" fill="none"/><path d="M59.7 107l5.5 -11.9M59.7 107l5.5 11.9" stroke="#000" stroke-width=".8" fill="none"/></g><path d="M56 110C62 106 68 112 66 122C60 126 54 120 56 110z" fill="#bbb" stroke="#fff" stroke-width="1"/><g transform="rotate(25 42 152)"><ellipse cx="42" cy="152" rx="14" ry="20" fill="#f4f4f4"/><path d="M28 152H56" stroke="#000" stroke-width="1"/><path d="M32.7 152l3.5 -17M32.7 152l3.5 17" stroke="#000" stroke-width=".8" fill="none"/><path d="M37.3 152l3.5 -17M37.3 152l3.5 17" stroke="#000" stroke-width=".8" fill="none"/><path d="M42 152l3.5 -17M42 152l3.5 17" stroke="#000" stroke-width=".8" fill="none"/><path d="M46.7 152l3.5 -17M46.7 152l3.5 17" stroke="#000" stroke-width=".8" fill="none"/><path d="M51.3 152l3.5 -17M51.3 152l3.5 17" stroke="#000" stroke-width=".8" fill="none"/></g><path d="M56 134C62 150 72 160 83 166M60 160C70 150 78 140 82 128" fill="none" stroke="#fff" stroke-width="2.200"/><path d="M66 130C70 146 76 156 83 160" fill="none" stroke="#fff" stroke-width="1.400"/><path d="M2 2C10 12 22 10 26 2M34 12C40 22 50 22 56 14M8 34C16 26 26 28 32 36M44 26C50 18 60 20 64 28" fill="none" stroke="#fff" stroke-width="2.200"/><path d="M6 16Q11.4 27.1 23.7 19.1Q14.8 7.4 6 16z" fill="#eee"/><path d="M30 30Q40 34.6 43.9 22Q31 19 30 30z" fill="#eee"/><path d="M50 18Q47.5 8.6 36.8 13.2Q42 23.6 50 18z" fill="#ddd"/><path d="M70 30Q76.1 24.1 67.9 18.2Q62.3 26.5 70 30z" fill="#eee"/><ellipse cx="24" cy="68" rx="24" ry="18" fill="none" stroke="#fff" stroke-width="1.200" transform="rotate(-35 24 68)"/><ellipse cx="44" cy="107" rx="25" ry="17" fill="none" stroke="#fff" stroke-width="1.200" transform="rotate(-20 44 107)"/><ellipse cx="42" cy="152" rx="17" ry="23" fill="none" stroke="#fff" stroke-width="1.200" transform="rotate(25 42 152)"/><path d="M0 86C8 84 14 90 16 98M2 128C10 126 18 132 20 142M66 140C70 150 72 158 70 166M24 128C30 124 36 126 40 130M58 128C62 134 62 142 58 148" fill="none" stroke="#fff" stroke-width="1.800"/><path d="M14 128Q13.1 137.7 24.7 137Q23.4 125.5 14 128z" fill="#eee"/><path d="M70 150Q63.9 155.9 72.1 161.8Q77.7 153.5 70 150z" fill="#ddd"/><path d="M20 92Q11.5 92.7 14 102.4Q23.7 99.7 20 92z" fill="#eee"/><path d="M64 92Q60.3 99.7 70 102.4Q72.5 92.7 64 92z" fill="#ddd"/><circle cx="49.8" cy="124.2" r="1.2" fill="#fff"/><circle cx="75.4" cy="123.9" r="1.2" fill="#fff"/><circle cx="2.3" cy="77.9" r="1.3" fill="#fff"/><circle cx="51.9" cy="150.8" r="0.7" fill="#fff"/><circle cx="37.5" cy="41.3" r="1" fill="#fff"/><circle cx="45.9" cy="2.2" r="0.8" fill="#fff"/><circle cx="22.4" cy="153.4" r="1.1" fill="#fff"/><circle cx="12.8" cy="133.4" r="0.7" fill="#fff"/><circle cx="49.4" cy="21.2" r="0.6" fill="#fff"/><circle cx="69.7" cy="35.1" r="0.8" fill="#fff"/><circle cx="78.6" cy="146" r="0.8" fill="#fff"/><circle cx="76.9" cy="90.3" r="1.1" fill="#fff"/><circle cx="16.4" cy="157.5" r="1.1" fill="#fff"/><circle cx="77.3" cy="149.6" r="0.8" fill="#fff"/><circle cx="28.9" cy="27.8" r="0.7" fill="#fff"/><circle cx="5.2" cy="50.4" r="1" fill="#fff"/><circle cx="0.3" cy="113.5" r="0.8" fill="#fff"/><circle cx="24.8" cy="137" r="0.9" fill="#fff"/><circle cx="25.3" cy="80.6" r="1.1" fill="#fff"/><circle cx="4.6" cy="163.2" r="0.6" fill="#fff"/><circle cx="60" cy="141.4" r="0.6" fill="#fff"/><circle cx="63" cy="61.3" r="1" fill="#fff"/><circle cx="0.7" cy="7.8" r="0.7" fill="#fff"/><circle cx="76.4" cy="32.9" r="1.1" fill="#fff"/><circle cx="74.4" cy="157.7" r="0.8" fill="#fff"/><circle cx="28.4" cy="87.8" r="1.1" fill="#fff"/><circle cx="8.6" cy="125.3" r="1.2" fill="#fff"/><circle cx="68.8" cy="6.1" r="1.3" fill="#fff"/><circle cx="7.3" cy="57" r="1" fill="#fff"/><circle cx="73.4" cy="56.9" r="1.2" fill="#fff"/></g><path d="M83.700 55C78 47 66 50 65 60C64 70 68 78 72 86C74 98 76 112 79 124C81 131 86.400 131 88.400 124C91.400 112 93.400 98 95.400 86C99.400 78 103.400 70 102.400 60C101.400 50 89.400 47 83.700 55z" fill="#fff"/><path d="M67 70C60 72 62 84 70 84C72 80 70 74 67 70zM100.400 70C107.400 72 105.400 84 97.400 84C95.400 80 97.400 74 100.400 70z" fill="#000"/><path d="M83.700 76l-2.500-4M83.700 76l2.500-4M83.700 76v4M80 96L82 122M87.400 96L85.400 122" stroke="#555" stroke-width=".8" fill="none"/><path d="M80 128C80 140 82 150 83.700 156C85.400 150 87.400 140 87.400 128z" fill="#ddd"/></g></g></svg><div class="lb"><em></em><span style="letter-spacing:0.39px">1dd6e1075f8d73a2517e82...</span></div></div>
<div class="tile" style="left:682.0px;top:329.4px"><svg width="210" height="193" viewBox="0 0 210 193"><defs><clipPath id="bwd0"><rect width="167.4" height="167.4"/></clipPath></defs><g transform="translate(21.8 16.8)"><rect width="167.4" height="167.4" fill="#fff"/><g clip-path="url(#bwd0)"><path d="M5.5 6.6Q1.1 0.5 -6.2 6Q0.5 12.3 5.5 6.6z" fill="#000"/><path d="M6.9 14.5Q14.7 12.3 9.7 4.4Q1.4 8.6 6.9 14.5z" fill="#fff" stroke="#000" stroke-width="1.2"/><path d="M1.6 27.8Q7.4 22 -1.3 19.9Q-6.5 27.2 1.6 27.8z" fill="#fff" stroke="#000" stroke-width="1.2"/><path d="M1 47Q1.8 38.4 -8.5 38.5Q-7.4 48.8 1 47z" fill="#fff" stroke="#000" stroke-width="1.2"/><path d="M2.3 48.6Q-1 54.4 6.2 58.5Q8.7 50.6 2.3 48.6z" fill="#fff" stroke="#000" stroke-width="1.2"/><path d="M3.2 60.7Q10.3 60.6 8.6 52.5Q0.4 54.2 3.2 60.7z" fill="#000"/><path d="M6.2 79.2Q0.3 73.6 -3.9 82Q4 87.1 6.2 79.2z" fill="#fff" stroke="#000" stroke-width="1.2"/><path d="M3.6 95Q9.5 88.1 0.2 82.5Q-5 92 3.6 95z" fill="#fff" stroke="#000" stroke-width="1.2"/><path d="M4 98.7Q9.6 95.5 5 89.3Q-0.8 94.4 4 98.7z" fill="#fff" stroke="#000" stroke-width="1.2"/><path d="M4.9 117.3Q13.6 118.6 10.6 109.2Q0.7 109.5 4.9 117.3z" fill="#fff" stroke="#000" stroke-width="1.2"/><path d="M0.6 122.4Q6 127.7 12.2 121Q4.5 116 0.6 122.4z" fill="#000"/><path d="M4.9 132.9Q-3 136.4 3.5 144Q11.6 138.2 4.9 132.9z" fill="#fff" stroke="#000" stroke-width="1.2"/><path d="M1.5 147.7Q0.4 156.5 11 156.3Q10.2 145.8 1.5 147.7z" fill="#fff" stroke="#000" stroke-width="1.2"/><path d="M3.2 157.1Q-1.9 163.4 6.9 164.6Q11.3 156.9 3.2 157.1z" fill="#fff" stroke="#000" stroke-width="1.2"/><path d="M18.6 5.4Q15.7 12.9 24.7 12Q26.3 3.1 18.6 5.4z" fill="#fff" stroke="#000" stroke-width="1.2"/><path d="M19.5 13.8Q13.4 17.1 18.2 23.8Q24.6 18.5 19.5 13.8z" fill="#fff" stroke="#000" stroke-width="1.2"/><path d="M23 33.2Q16.5 38.7 25.3 42.4Q31.4 35 23 33.2z" fill="#fff" stroke="#000" stroke-width="1.2"/><path d="M16.8 45.7Q21.4 50.6 27.3 45Q20.7 40.2 16.8 45.7z" fill="#000"/><path d="M14.8 51.2Q7.8 54 11.4 62.6Q19.2 57.5 14.8 51.2z" fill="#fff" stroke="#000" stroke-width="1.2"/><path d="M13.3 61.4Q13.2 54.2 4.6 54.9Q6.4 63.4 13.3 61.4z" fill="#fff" stroke="#000" stroke-width="1.2"/><path d="M16.6 77.2Q14.9 69.2 5.1 71.4Q9.1 80.7 16.6 77.2z" fill="#fff" stroke="#000" stroke-width="1.2"/><path d="M21.9 86.3Q30.4 86.3 25.5 78.3Q16.3 79.9 21.9 86.3z" fill="#fff" stroke="#000" stroke-width="1.2"/><path d="M15.2 98.3Q10.2 104.7 18.8 108.6Q23.2 100.2 15.2 98.3z" fill="#000"/><path d="M22.8 117.7Q22.5 125.4 31.5 124.4Q30.1 115.4 22.8 117.7z" fill="#fff" stroke="#000" stroke-width="1.2"/><path d="M13 130.5Q5.7 133.9 12.6 139.7Q19.9 134.5 13 130.5z" fill="#fff" stroke="#000" stroke-width="1.2"/><path d="M21.4 138.5Q26.1 133.8 19.7 129.2Q15.3 135.8 21.4 138.5z" fill="#fff" stroke="#000" stroke-width="1.2"/><path d="M13.3 146.5Q15 138 5.2 139.4Q5.1 149.4 13.3 146.5z" fill="#fff" stroke="#000" stroke-width="1.2"/><path d="M15.6 165.9Q10.1 168.8 14.5 174.7Q20.1 170 15.6 165.9z" fill="#000"/><path d="M29.3 1.2Q28.8 -5.8 21.3 -2.6Q23.4 5.2 29.3 1.2z" fill="#fff" stroke="#000" stroke-width="1.2"/><path d="M25.9 16.5Q29.2 8.8 19.5 6.8Q17.6 16.4 25.9 16.5z" fill="#000"/><path d="M32 30.8Q34.8 36.3 40.6 31.8Q36 26.1 32 30.8z" fill="#fff" stroke="#000" stroke-width="1.2"/><path d="M34.3 44Q34.8 36.8 25.9 34.3Q27.1 43.5 34.3 44z" fill="#fff" stroke="#000" stroke-width="1.2"/><path d="M29.7 56.3Q29.5 65.2 38.2 60.7Q36.8 50.9 29.7 56.3z" fill="#fff" stroke="#000" stroke-width="1.2"/><path d="M30.4 68.3Q35.9 61.5 26.8 56.3Q22 65.6 30.4 68.3z" fill="#fff" stroke="#000" stroke-width="1.2"/><path d="M33 82.2Q39.8 85.2 40.7 76.7Q32.4 74.8 33 82.2z" fill="#000"/><path d="M33.9 88.8Q32.9 79.9 23.2 83.5Q26.2 93.5 33.9 88.8z" fill="#fff" stroke="#000" stroke-width="1.2"/><path d="M31.2 100.4Q31.8 108.5 40.8 105.6Q38.4 96.5 31.2 100.4z" fill="#fff" stroke="#000" stroke-width="1.2"/><path d="M31.4 118.9Q23 116.6 21.9 126.9Q32.2 127.6 31.4 118.9z" fill="#fff" stroke="#000" stroke-width="1.2"/><path d="M32.4 126.4Q32.2 135 41.2 131.5Q39.7 122 32.4 126.4z" fill="#fff" stroke="#000" stroke-width="1.2"/><path d="M32.6 132.4Q27.2 137.3 33.9 142.8Q39 135.8 32.6 132.4z" fill="#000"/><path d="M32 149.4Q24.1 153.6 31.6 160.5Q39.6 154.1 32 149.4z" fill="#fff" stroke="#000" stroke-width="1.2"/><path d="M24.6 159.3Q21.9 166 30.1 169.2Q31.7 160.6 24.6 159.3z" fill="#fff" stroke="#000" stroke-width="1.2"/><path d="M46.2 7.7Q37.5 7.7 41.5 16.7Q51.1 14.9 46.2 7.7z" fill="#fff" stroke="#000" stroke-width="1.2"/><path d="M43.6 14.7Q50.9 19 52.4 9.5Q43.3 6.2 43.6 14.7z" fill="#fff" stroke="#000" stroke-width="1.2"/><path d="M45.9 28.6Q44.3 35.8 53.1 36.9Q53.3 28 45.9 28.6z" fill="#fff" stroke="#000" stroke-width="1.2"/><path d="M41.8 45.5Q48.7 50.7 53.5 41.7Q44.3 37.2 41.8 45.5z" fill="#fff" stroke="#000" stroke-width="1.2"/><path d="M39.4 50.2Q34.9 55.3 41.6 59.8Q45.7 52.8 39.4 50.2z" fill="#000"/><path d="M40.9 67.1Q48.2 66.7 46.5 58.2Q38.1 60.4 40.9 67.1z" fill="#fff" stroke="#000" stroke-width="1.2"/><path d="M47 77.2Q53 78.4 52.9 71.2Q45.7 71.3 47 77.2z" fill="#fff" stroke="#000" stroke-width="1.2"/><path d="M36.9 91.9Q43.8 89.3 39.7 81.4Q32.3 86.2 36.9 91.9z" fill="#fff" stroke="#000" stroke-width="1.2"/><path d="M36.7 97.7Q43.1 96.5 41.6 88.7Q34.2 91.7 36.7 97.7z" fill="#fff" stroke="#000" stroke-width="1.2"/><path d="M39 109.7Q33.9 104.9 31.3 112.4Q38 116.7 39 109.7z" fill="#000"/><path d="M43.2 127.2Q48.5 119.7 38.4 116.2Q34.1 126 43.2 127.2z" fill="#fff" stroke="#000" stroke-width="1.2"/><path d="M38.6 137.2Q34.2 132.9 29.9 138.8Q36 142.8 38.6 137.2z" fill="#fff" stroke="#000" stroke-width="1.2"/><path d="M44.2 146Q48.6 140.5 41.1 137.2Q37.2 144.4 44.2 146z" fill="#fff" stroke="#000" stroke-width="1.2"/><path d="M42.1 162.7Q49.3 159.7 45.1 151.3Q37.3 156.5 42.1 162.7z" fill="#fff" stroke="#000" stroke-width="1.2"/><path d="M58.2 1.5Q56.4 10.1 66.9 10.8Q66.9 0.3 58.2 1.5z" fill="#fff" stroke="#000" stroke-width="1.2"/><path d="M53.3 19.3Q51.3 11.6 41.9 14Q46.2 22.7 53.3 19.3z" fill="#fff" stroke="#000" stroke-width="1.2"/><path d="M57.9 33.1Q60 25.8 51 23.5Q50.3 32.7 57.9 33.1z" fill="#000"/><path d="M50.6 44.2Q56.4 38.1 48.2 32.4Q42.9 40.9 50.6 44.2z" fill="#fff" stroke="#000" stroke-width="1.2"/><path d="M50.7 58.1Q47.5 49.2 38.2 55.1Q43.9 64.6 50.7 58.1z" fill="#fff" stroke="#000" stroke-width="1.2"/><path d="M56.9 63.8Q47.9 63.5 49.7 74.1Q60.2 72.3 56.9 63.8z" fill="#fff" stroke="#000" stroke-width="1.2"/><path d="M49.3 77.1Q44.5 70.1 38.6 77.9Q45.6 84.7 49.3 77.1z" fill="#fff" stroke="#000" stroke-width="1.2"/><path d="M48.7 93Q44.4 99 52.6 100.3Q56.1 92.9 48.7 93z" fill="#000"/><path d="M52 104.7Q49.1 99 43.4 103.8Q48 109.8 52 104.7z" fill="#fff" stroke="#000" stroke-width="1.2"/><path d="M56.2 117.3Q51.3 109.6 44.8 117.8Q52 125.3 56.2 117.3z" fill="#fff" stroke="#000" stroke-width="1.2"/><path d="M58.6 121.1Q51.4 123 56.4 129.9Q64.1 126.3 58.6 121.1z" fill="#fff" stroke="#000" stroke-width="1.2"/><path d="M56.3 139Q55.1 130.4 46.4 135.1Q49.6 144.4 56.3 139z" fill="#fff" stroke="#000" stroke-width="1.2"/><path d="M51.8 148.2Q46.4 154.3 54.7 159.2Q59.5 150.8 51.8 148.2z" fill="#000"/><path d="M57.6 166.5Q52.5 172.5 60.8 176.6Q65.3 168.5 57.6 166.5z" fill="#fff" stroke="#000" stroke-width="1.2"/><path d="M66.2 6Q71.2 10.2 76.4 4Q69.3 0.3 66.2 6z" fill="#000"/><path d="M65.9 16.9Q60.8 10.5 54 17.5Q61.5 23.8 65.9 16.9z" fill="#fff" stroke="#000" stroke-width="1.2"/><path d="M67.8 25.2Q73.6 30.1 78.1 22.4Q70.3 18.1 67.8 25.2z" fill="#fff" stroke="#000" stroke-width="1.2"/><path d="M70.3 39.4Q64.4 36.1 60.8 43.6Q68.7 46 70.3 39.4z" fill="#fff" stroke="#000" stroke-width="1.2"/><path d="M69.2 58.1Q65.1 64.1 72.9 67.8Q76.2 59.9 69.2 58.1z" fill="#fff" stroke="#000" stroke-width="1.2"/><path d="M67 70.3Q69.5 77.3 75.5 71.6Q71.3 64.3 67 70.3z" fill="#000"/><path d="M62.5 74.8Q55 74.7 55.4 83.8Q64.4 82.1 62.5 74.8z" fill="#fff" stroke="#000" stroke-width="1.2"/><path d="M67.1 85.4Q62.8 79.8 55.4 84.7Q62 90.5 67.1 85.4z" fill="#fff" stroke="#000" stroke-width="1.2"/><path d="M63.1 98.4Q55.6 96.9 55.5 105.9Q64.5 105.9 63.1 98.4z" fill="#fff" stroke="#000" stroke-width="1.2"/><path d="M64.8 113.9Q66.6 107.5 58.9 107.4Q58.3 115.1 64.8 113.9z" fill="#fff" stroke="#000" stroke-width="1.2"/><path d="M67.3 125.9Q75 126.2 74.3 116.9Q65.2 118.4 67.3 125.9z" fill="#000"/><path d="M62.9 140.1Q53.9 141.4 58 151.1Q68 147.6 62.9 140.1z" fill="#fff" stroke="#000" stroke-width="1.2"/><path d="M63.8 154Q71.7 157.7 70.7 148.1Q61.3 145.6 63.8 154z" fill="#fff" stroke="#000" stroke-width="1.2"/><path d="M61.8 158.6Q62.3 166 71.4 165.3Q68.9 156.5 61.8 158.6z" fill="#fff" stroke="#000" stroke-width="1.2"/><path d="M81.3 5.1Q74.3 3.5 71.5 12Q80.5 12.3 81.3 5.1z" fill="#fff" stroke="#000" stroke-width="1.2"/><path d="M79.7 12.7Q86.5 16.8 87.4 8Q79 4.9 79.7 12.7z" fill="#fff" stroke="#000" stroke-width="1.2"/><path d="M82.8 25.8Q78.7 18.4 72.2 25.6Q78.4 33 82.8 25.8z" fill="#fff" stroke="#000" stroke-width="1.2"/><path d="M79.7 38.5Q81.7 44.3 87.8 40.4Q84.2 34.2 79.7 38.5z" fill="#000"/><path d="M78.3 54Q75 60.1 82.6 63.9Q85 55.8 78.3 54z" fill="#fff" stroke="#000" stroke-width="1.2"/><path d="M74.5 69.4Q74.4 78.8 85.2 76.7Q83.2 65.9 74.5 69.4z" fill="#fff" stroke="#000" stroke-width="1.2"/><path d="M73 82.6Q64.6 82.8 68.2 91.7Q77.6 89.6 73 82.6z" fill="#fff" stroke="#000" stroke-width="1.2"/><path d="M77.4 89.8Q80.8 97 87.5 90.7Q82 83.4 77.4 89.8z" fill="#fff" stroke="#000" stroke-width="1.2"/><path d="M79.9 105.3Q85.5 101.5 79.3 96.6Q73.8 102.3 79.9 105.3z" fill="#000"/><path d="M76.7 110.3Q79.6 117.2 85.5 111.2Q80.8 104.1 76.7 110.3z" fill="#fff" stroke="#000" stroke-width="1.2"/><path d="M82 128.8Q84.3 120.2 74 120.4Q73.3 130.7 82 128.8z" fill="#fff" stroke="#000" stroke-width="1.2"/><path d="M76.7 138.6Q85.6 137.3 80.2 128.7Q70.6 131.9 76.7 138.6z" fill="#fff" stroke="#000" stroke-width="1.2"/><path d="M75.1 153.9Q83.7 152.5 79.8 143.1Q70.2 146.7 75.1 153.9z" fill="#fff" stroke="#000" stroke-width="1.2"/><path d="M76.7 165.7Q83.6 161.8 78 154.2Q70.9 160.4 76.7 165.7z" fill="#000"/><path d="M92.5 5Q85.6 6 86.2 14.7Q94.4 11.7 92.5 5z" fill="#fff" stroke="#000" stroke-width="1.2"/><path d="M89.3 12.7Q91.1 5.6 82.6 6Q82.3 14.5 89.3 12.7z" fill="#000"/><path d="M86.8 34.7Q89.4 27.6 80.7 25.1Q79.3 34.1 86.8 34.7z" fill="#fff" stroke="#000" stroke-width="1.2"/><path d="M90.4 42.2Q94.2 34.1 84.2 34.5Q81.7 44.1 90.4 42.2z" fill="#fff" stroke="#000" stroke-width="1.2"/><path d="M91.8 56.6Q91.3 49.4 82.2 48.1Q84.6 57 91.8 56.6z" fill="#fff" stroke="#000" stroke-width="1.2"/><path d="M92.2 63.1Q88.7 68.6 95.6 72.6Q98.4 65.2 92.2 63.1z" fill="#fff" stroke="#000" stroke-width="1.2"/><path d="M88.3 73.4Q87 65.8 79.8 70.6Q82.8 78.8 88.3 73.4z" fill="#000"/><path d="M89.8 94.7Q93 86.2 82.7 86.4Q80.9 96.6 89.8 94.7z" fill="#fff" stroke="#000" stroke-width="1.2"/><path d="M93 97.1Q95.2 105.3 103.6 100.1Q99.3 91.3 93 97.1z" fill="#fff" stroke="#000" stroke-width="1.2"/><path d="M94.3 109.9Q90 104.5 84 110.2Q90.3 115.6 94.3 109.9z" fill="#fff" stroke="#000" stroke-width="1.2"/><path d="M90.9 120.8Q86.9 113.8 78.3 118.7Q84.8 126.1 90.9 120.8z" fill="#fff" stroke="#000" stroke-width="1.2"/><path d="M90.7 136.1Q89.7 128.8 82.2 132.7Q85 140.6 90.7 136.1z" fill="#000"/><path d="M87.3 151.8Q82.4 155.7 87.6 161.3Q92.5 155.4 87.3 151.8z" fill="#fff" stroke="#000" stroke-width="1.2"/><path d="M84.8 157.7Q92.2 159.8 94.2 150.7Q84.8 150 84.8 157.7z" fill="#fff" stroke="#000" stroke-width="1.2"/><path d="M104.3 1.1Q105.5 10.5 115.9 6.9Q112.4 -3.6 104.3 1.1z" fill="#fff" stroke="#000" stroke-width="1.2"/><path d="M106 17.2Q98.3 21.6 106.4 27.6Q114.1 21 106 17.2z" fill="#fff" stroke="#000" stroke-width="1.2"/><path d="M101.9 34.6Q107.3 40.3 113.4 33.1Q105.6 27.6 101.9 34.6z" fill="#fff" stroke="#000" stroke-width="1.2"/><path d="M105 43Q99.9 37.3 96.8 45.3Q103.6 50.5 105 43z" fill="#fff" stroke="#000" stroke-width="1.2"/><path d="M98.4 49Q92.8 45.5 89 52.5Q96.5 55.3 98.4 49z" fill="#000"/><path d="M103.4 65.3Q96.9 61.2 95.3 69.8Q103.5 73 103.4 65.3z" fill="#fff" stroke="#000" stroke-width="1.2"/><path d="M104.6 78.1Q111.9 72.1 103.3 65.1Q96.3 73.7 104.6 78.1z" fill="#fff" stroke="#000" stroke-width="1.2"/><path d="M98.8 85.5Q100.5 76.8 90 76.7Q90.1 87.2 98.8 85.5z" fill="#fff" stroke="#000" stroke-width="1.2"/><path d="M100.1 99.2Q99.9 91.1 90.5 93Q92.6 102.3 100.1 99.2z" fill="#fff" stroke="#000" stroke-width="1.2"/><path d="M103.1 116.3Q107.2 121.3 111.8 115.2Q105.8 110.4 103.1 116.3z" fill="#000"/><path d="M106.1 129.6Q100.5 132.2 105 137.8Q110.8 133.6 106.1 129.6z" fill="#fff" stroke="#000" stroke-width="1.2"/><path d="M100.8 138.8Q101 146.3 108.5 142.6Q106.8 134.4 100.8 138.8z" fill="#fff" stroke="#000" stroke-width="1.2"/><path d="M97.2 151.4Q89.2 149.6 89.7 159.1Q99.1 159.3 97.2 151.4z" fill="#fff" stroke="#000" stroke-width="1.2"/><path d="M101.4 158.3Q109.6 158.8 106.5 150.1Q97.3 151.2 101.4 158.3z" fill="#fff" stroke="#000" stroke-width="1.2"/><path d="M109 1.9Q116.4 -2.1 110.4 -10.1Q102.8 -3.7 109 1.9z" fill="#fff" stroke="#000" stroke-width="1.2"/><path d="M110.5 17.1Q102.5 14.8 104.2 23.9Q113.4 24.9 110.5 17.1z" fill="#fff" stroke="#000" stroke-width="1.2"/><path d="M115.2 35.2Q121.3 31.3 115 25.9Q109.1 31.6 115.2 35.2z" fill="#000"/><path d="M118.1 41.1Q124.6 42 125.1 34.1Q117.2 34.5 118.1 41.1z" fill="#fff" stroke="#000" stroke-width="1.2"/><path d="M109.1 49.3Q113.3 42.8 104.8 39.4Q101.4 47.9 109.1 49.3z" fill="#fff" stroke="#000" stroke-width="1.2"/><path d="M111.4 68.7Q114.5 62.9 107 61.6Q104.9 68.8 111.4 68.7z" fill="#fff" stroke="#000" stroke-width="1.2"/><path d="M109.1 75.6Q101.2 78.7 106.7 87Q115.1 81.6 109.1 75.6z" fill="#fff" stroke="#000" stroke-width="1.2"/><path d="M109.8 88.1Q109.1 95.3 117.8 95.5Q116.8 86.8 109.8 88.1z" fill="#000"/><path d="M115.8 102.4Q124.2 106.5 126.6 95.9Q116.1 93.1 115.8 102.4z" fill="#fff" stroke="#000" stroke-width="1.2"/><path d="M112.9 116.9Q106.3 114.3 105.2 122.5Q113.4 123.9 112.9 116.9z" fill="#fff" stroke="#000" stroke-width="1.2"/><path d="M118.3 129.8Q111.3 128.5 112.1 136.7Q120.4 136.6 118.3 129.8z" fill="#fff" stroke="#000" stroke-width="1.2"/><path d="M112.1 136.4Q110.6 129.7 103 132.5Q106.3 140 112.1 136.4z" fill="#fff" stroke="#000" stroke-width="1.2"/><path d="M116.8 149.9Q113.3 156.7 121.8 160.1Q124.3 151.2 116.8 149.9z" fill="#000"/><path d="M116.4 165.5Q113.1 160.1 107 164.6Q112.1 170.2 116.4 165.5z" fill="#fff" stroke="#000" stroke-width="1.2"/><path d="M126 6.7Q133.6 4.3 130 -4.5Q121.7 0.1 126 6.7z" fill="#000"/><path d="M120.9 18.4Q122.4 25.4 131.3 24.3Q127.6 16.2 120.9 18.4z" fill="#fff" stroke="#000" stroke-width="1.2"/><path d="M128.1 34.2Q124.8 41.1 133.3 40.8Q135.6 32.6 128.1 34.2z" fill="#fff" stroke="#000" stroke-width="1.2"/><path d="M128.2 43.5Q134.2 40.3 129.1 34.3Q122.9 39.2 128.2 43.5z" fill="#fff" stroke="#000" stroke-width="1.2"/><path d="M125.8 56.7Q130.9 61.8 135.6 54.7Q128.5 50 125.8 56.7z" fill="#fff" stroke="#000" stroke-width="1.2"/><path d="M127.4 65.7Q132.6 60.1 124.8 55.9Q120.1 63.5 127.4 65.7z" fill="#000"/><path d="M130 76.8Q138.5 77.1 137.4 67.1Q127.4 68.7 130 76.8z" fill="#fff" stroke="#000" stroke-width="1.2"/><path d="M128.8 93.3Q131.8 84.4 120.9 83.7Q119.6 94.4 128.8 93.3z" fill="#fff" stroke="#000" stroke-width="1.2"/><path d="M125.8 103.9Q118.6 100.7 115.3 109.7Q124.6 111.7 125.8 103.9z" fill="#fff" stroke="#000" stroke-width="1.2"/><path d="M121.7 116.2Q119 123.7 128.2 127.4Q129.6 117.7 121.7 116.2z" fill="#fff" stroke="#000" stroke-width="1.2"/><path d="M122.4 124.7Q123.3 132.5 130.9 128.1Q128.3 119.6 122.4 124.7z" fill="#000"/><path d="M123.5 133.4Q118.8 140.6 128.3 143.5Q132 134.3 123.5 133.4z" fill="#fff" stroke="#000" stroke-width="1.2"/><path d="M120.8 149Q123.3 157.5 131.5 151.5Q126.8 142.5 120.8 149z" fill="#fff" stroke="#000" stroke-width="1.2"/><path d="M121.3 158Q126.2 153.3 119.5 149.1Q115 155.6 121.3 158z" fill="#fff" stroke="#000" stroke-width="1.2"/><path d="M138.5 3Q135 8.9 142.7 10.9Q145.4 3.4 138.5 3z" fill="#fff" stroke="#000" stroke-width="1.2"/><path d="M140.3 15.9Q135.1 9.1 129.6 17.3Q137 23.9 140.3 15.9z" fill="#fff" stroke="#000" stroke-width="1.2"/><path d="M134.9 34.1Q131.9 26.8 122.9 30.4Q128.4 38.3 134.9 34.1z" fill="#fff" stroke="#000" stroke-width="1.2"/><path d="M142.4 41.7Q147.4 45.3 150.8 38.8Q144.1 35.7 142.4 41.7z" fill="#000"/><path d="M140.8 52.6Q133.6 55.8 139.1 63.1Q146.6 57.8 140.8 52.6z" fill="#fff" stroke="#000" stroke-width="1.2"/><path d="M142.8 67.5Q138.3 63.1 133.7 69Q140 73 142.8 67.5z" fill="#fff" stroke="#000" stroke-width="1.2"/><path d="M136.1 80.9Q133 88.5 142.5 90.6Q144.4 81 136.1 80.9z" fill="#fff" stroke="#000" stroke-width="1.2"/><path d="M133.8 87.8Q130.9 79.8 124.6 86.8Q129.3 95 133.8 87.8z" fill="#fff" stroke="#000" stroke-width="1.2"/><path d="M139 106.9Q136.2 113.4 144.3 114.3Q146 106.3 139 106.9z" fill="#000"/><path d="M140.4 108.2Q149.3 107.2 145.7 97.3Q135.8 100.6 140.4 108.2z" fill="#fff" stroke="#000" stroke-width="1.2"/><path d="M133 123.1Q127.8 118.4 121.5 124.5Q129.1 128.9 133 123.1z" fill="#fff" stroke="#000" stroke-width="1.2"/><path d="M137.2 142.4Q128.6 144 133.6 152.7Q142.9 149 137.2 142.4z" fill="#fff" stroke="#000" stroke-width="1.2"/><path d="M140.6 148.6Q147.6 146.5 146.4 137.4Q138.3 141.7 140.6 148.6z" fill="#fff" stroke="#000" stroke-width="1.2"/><path d="M134.4 161.9Q141 161 139.3 153.1Q131.7 155.8 134.4 161.9z" fill="#000"/><path d="M147.4 3.9Q142.9 -1.2 139.2 5.7Q145.4 10.4 147.4 3.9z" fill="#fff" stroke="#000" stroke-width="1.2"/><path d="M151.8 16.4Q145.2 15 143.3 23.1Q151.6 23.2 151.8 16.4z" fill="#000"/><path d="M149.1 34.9Q153.4 42.2 161.2 35.9Q154.4 28.4 149.1 34.9z" fill="#fff" stroke="#000" stroke-width="1.2"/><path d="M148.1 44.1Q142.9 38.6 139.3 46.5Q146.3 51.5 148.1 44.1z" fill="#fff" stroke="#000" stroke-width="1.2"/><path d="M144.2 59.1Q144.4 51.7 135.3 51.1Q136.9 60.1 144.2 59.1z" fill="#fff" stroke="#000" stroke-width="1.2"/><path d="M147.2 64.4Q139.9 65 141.6 73.6Q150 71.2 147.2 64.4z" fill="#fff" stroke="#000" stroke-width="1.2"/><path d="M148.3 79.5Q153.2 75.3 147.3 70.6Q142.5 76.6 148.3 79.5z" fill="#000"/><path d="M147.6 94.5Q139.3 94.7 142.3 103.9Q151.8 101.8 147.6 94.5z" fill="#fff" stroke="#000" stroke-width="1.2"/><path d="M153 97.2Q156.2 91.8 149.2 89.4Q146.7 96.4 153 97.2z" fill="#fff" stroke="#000" stroke-width="1.2"/><path d="M151.7 110.1Q152.5 101.7 143.3 104.6Q144.2 114.2 151.7 110.1z" fill="#fff" stroke="#000" stroke-width="1.2"/><path d="M145.1 122.6Q139.2 120.1 137.7 127.5Q145.1 129 145.1 122.6z" fill="#fff" stroke="#000" stroke-width="1.2"/><path d="M144.9 142Q147.3 135.3 139 134.3Q137.7 142.6 144.9 142z" fill="#000"/><path d="M152.3 152.9Q145.8 149.9 143.9 158.1Q152.1 160.1 152.3 152.9z" fill="#fff" stroke="#000" stroke-width="1.2"/><path d="M144.2 160.4Q153.1 157.9 147.1 149.2Q137.7 153.9 144.2 160.4z" fill="#fff" stroke="#000" stroke-width="1.2"/><path d="M163.1 7.1Q156.4 6.6 158.7 13.9Q166.4 13.1 163.1 7.1z" fill="#fff" stroke="#000" stroke-width="1.2"/><path d="M163 13.7Q170.3 11.4 165.4 4.1Q157.7 8.3 163 13.7z" fill="#fff" stroke="#000" stroke-width="1.2"/><path d="M164.9 31.1Q172 35.1 172.1 26.1Q163.6 23.1 164.9 31.1z" fill="#fff" stroke="#000" stroke-width="1.2"/><path d="M161.9 40.3Q166.3 34.9 159.5 30Q155.7 37.4 161.9 40.3z" fill="#fff" stroke="#000" stroke-width="1.2"/><path d="M166.7 54Q161.8 60.3 170.2 64.2Q174.4 55.9 166.7 54z" fill="#000"/><path d="M166.2 67.1Q161.1 70.9 166.5 76.1Q171.6 70.5 166.2 67.1z" fill="#fff" stroke="#000" stroke-width="1.2"/><path d="M162.2 79.8Q153.8 77.8 156 87.2Q165.7 87.8 162.2 79.8z" fill="#fff" stroke="#000" stroke-width="1.2"/><path d="M161 85.6Q168.3 87.2 171.6 78.3Q162.2 78.3 161 85.6z" fill="#fff" stroke="#000" stroke-width="1.2"/><path d="M161.9 102.3Q168.7 104.8 171 96.5Q162.4 95.1 161.9 102.3z" fill="#fff" stroke="#000" stroke-width="1.2"/><path d="M166.7 117Q173.3 115.7 171.4 107.7Q163.9 110.9 166.7 117z" fill="#000"/><path d="M159.1 129.8Q166.8 129.9 163.6 121.8Q155.1 123.3 159.1 129.8z" fill="#fff" stroke="#000" stroke-width="1.2"/><path d="M158 138Q154.9 143.2 161.6 145.6Q164.1 138.9 158 138z" fill="#fff" stroke="#000" stroke-width="1.2"/><path d="M166.7 154.2Q169.7 147.4 161.3 144.3Q159.3 153 166.7 154.2z" fill="#fff" stroke="#000" stroke-width="1.2"/><path d="M164 160.1Q167.6 168 174.9 161.3Q169.1 153.2 164 160.1z" fill="#fff" stroke="#000" stroke-width="1.2"/><path d="M33.4 78.3q-14.3 -4.5 4.2 -19.6" fill="none" stroke="#000" stroke-width="1"/><path d="M87 44.1q2.7 -6.7 8.5 -27.7" fill="none" stroke="#000" stroke-width="1"/><path d="M112.3 24.2q18.4 4 -1.8 -5.3" fill="none" stroke="#000" stroke-width="1"/><path d="M104.4 115.4q10.3 10.1 -0.9 29.7" fill="none" stroke="#000" stroke-width="1"/><path d="M140.3 143.1q-3.6 -2.6 4 24.3" fill="none" stroke="#000" stroke-width="1"/><path d="M88 87.9q-2.7 16.2 -10.8 -26.7" fill="none" stroke="#000" stroke-width="1"/><path d="M121.5 150.7q9.3 3.9 15.1 -11.7" fill="none" stroke="#000" stroke-width="1"/><path d="M99.3 11.7q-15 -2.1 0.2 -6.2" fill="none" stroke="#000" stroke-width="1"/><path d="M8.7 116.3q1 -10.4 -11.6 -6.3" fill="none" stroke="#000" stroke-width="1"/><path d="M39.5 11.5q16.5 18.7 9.9 22" fill="none" stroke="#000" stroke-width="1"/><path d="M70.5 134.8q-11.1 9.9 4 24.2" fill="none" stroke="#000" stroke-width="1"/><path d="M16.5 132.6q-15 1.5 27.1 -30" fill="none" stroke="#000" stroke-width="1"/><path d="M40.8 50.1q-7 -17.5 23.7 18.9" fill="none" stroke="#000" stroke-width="1"/><path d="M66.5 59.7q3.4 -18.2 -28.1 23.9" fill="none" stroke="#000" stroke-width="1"/><path d="M102.2 120.7L84.8 132.9L97 150.3L77.8 141.3L68.8 160.5L66.9 139.4L45.8 141.3L63.2 129.1L51 111.7L70.2 120.7L79.2 101.5L81.1 122.6z" fill="#000"/><path d="M74 133Q78.2 139 86.8 135.3Q80 128.8 74 133zM74 133Q72.7 140.2 81.5 143.6Q81.2 134.3 74 133zM74 133Q68 137.2 71.7 145.8Q78.2 139 74 133zM74 133Q66.8 131.7 63.4 140.5Q72.7 140.2 74 133zM74 133Q69.8 127 61.2 130.7Q68 137.2 74 133zM74 133Q75.3 125.8 66.5 122.4Q66.8 131.7 74 133zM74 133Q80 128.8 76.3 120.2Q69.8 127 74 133zM74 133Q81.2 134.3 84.6 125.5Q75.3 125.8 74 133z" fill="#fff"/><circle cx="74" cy="133" r="3" fill="#000"/><path d="M92.8 99.4L82.8 100.2L83.8 110.2L78.1 101.9L70 107.7L74.3 98.7L65.2 94.6L75.2 93.8L74.2 83.8L79.9 92.1L88 86.3L83.7 95.3z" fill="#000"/><circle cx="79" cy="97" r="2.2" fill="#fff"/><path d="M123 101L115.7 101.2L121.5 105.6L114.8 102.7L118.1 109.2L113.4 103.6L113.5 110.9L111.7 103.8L108.6 110.5L110 103.3L104.4 108L108.8 102.1L101.7 103.9L108.2 100.5L101 99L108.3 98.8L102.5 94.4L109.2 97.3L105.9 90.8L110.6 96.4L110.5 89.1L112.3 96.2L115.4 89.5L114 96.7L119.6 92L115.2 97.9L122.3 96.1L115.8 99.5z" fill="#000"/><path d="M120 134L112 134.3L118.3 139.1L111 135.9L114.6 143L109.5 136.9L109.6 144.9L107.6 137.2L104.3 144.4L105.9 136.6L99.7 141.7L104.5 135.3L96.8 137.2L103.8 133.6L96 132L104 131.7L97.7 126.9L105 130.1L101.4 123L106.5 129.1L106.4 121.1L108.4 128.8L111.7 121.6L110.1 129.4L116.3 124.3L111.5 130.7L119.2 128.8L112.2 132.4z" fill="#000"/><circle cx="43.1" cy="65.9" r="3.300" fill="#000"/><circle cx="42.3" cy="65.1" r="1.100" fill="#fff"/><circle cx="65.6" cy="81.3" r="3.300" fill="#000"/><circle cx="64.8" cy="80.5" r="1.100" fill="#fff"/><circle cx="49" cy="56.6" r="3.300" fill="#000"/><circle cx="48.2" cy="55.8" r="1.100" fill="#fff"/><circle cx="42.6" cy="79.5" r="3.300" fill="#000"/><circle cx="41.8" cy="78.7" r="1.100" fill="#fff"/><circle cx="64.3" cy="56.3" r="3.300" fill="#000"/><circle cx="63.5" cy="55.5" r="1.100" fill="#fff"/><circle cx="62.2" cy="61.3" r="3.300" fill="#000"/><circle cx="61.4" cy="60.5" r="1.100" fill="#fff"/><circle cx="49" cy="55.5" r="3.300" fill="#000"/><circle cx="48.2" cy="54.7" r="1.100" fill="#fff"/><circle cx="63.7" cy="81.9" r="3.300" fill="#000"/><circle cx="62.9" cy="81.1" r="1.100" fill="#fff"/><circle cx="39.3" cy="70.2" r="3.300" fill="#000"/><circle cx="38.5" cy="69.4" r="1.100" fill="#fff"/><circle cx="38.9" cy="78.2" r="3.300" fill="#000"/><circle cx="38.1" cy="77.4" r="1.100" fill="#fff"/><circle cx="33.8" cy="53.4" r="3.300" fill="#000"/><circle cx="33" cy="52.6" r="1.100" fill="#fff"/><circle cx="58.1" cy="60" r="3.300" fill="#000"/><circle cx="57.3" cy="59.2" r="1.100" fill="#fff"/><circle cx="64.4" cy="77.8" r="3.300" fill="#000"/><circle cx="63.6" cy="77" r="1.100" fill="#fff"/><circle cx="57.7" cy="54.3" r="3.300" fill="#000"/><circle cx="56.9" cy="53.5" r="1.100" fill="#fff"/><circle cx="57.1" cy="80" r="3.300" fill="#000"/><circle cx="56.3" cy="79.2" r="1.100" fill="#fff"/><circle cx="48" cy="52.5" r="3.300" fill="#000"/><circle cx="47.2" cy="51.7" r="1.100" fill="#fff"/><circle cx="40" cy="59.8" r="3.300" fill="#000"/><circle cx="39.2" cy="59" r="1.100" fill="#fff"/><circle cx="57.6" cy="56.3" r="3.300" fill="#000"/><circle cx="56.8" cy="55.5" r="1.100" fill="#fff"/><circle cx="38.5" cy="57.5" r="3.300" fill="#000"/><circle cx="37.7" cy="56.7" r="1.100" fill="#fff"/><circle cx="55.9" cy="75.3" r="3.300" fill="#000"/><circle cx="55.1" cy="74.5" r="1.100" fill="#fff"/><circle cx="45.4" cy="71.2" r="3.300" fill="#000"/><circle cx="44.6" cy="70.4" r="1.100" fill="#fff"/><circle cx="63.8" cy="68.9" r="3.300" fill="#000"/><circle cx="63" cy="68.1" r="1.100" fill="#fff"/><ellipse cx="52" cy="42" rx="9" ry="13" fill="#000" transform="rotate(-15 52 42)"/><ellipse cx="52" cy="42" rx="3.500" ry="5" fill="#fff"/><ellipse cx="52" cy="43" rx="1.800" ry="2.500" fill="#000"/><ellipse cx="69" cy="40" rx="7" ry="12" fill="#000" transform="rotate(15 69 40)"/><ellipse cx="69" cy="39" rx="3" ry="4.500" fill="#fff"/><ellipse cx="69" cy="40" rx="1.500" ry="2.200" fill="#000"/><path d="M30 0C36 8 48 16 52 30C44 28 34 22 30 10z" fill="#000"/><path d="M46 0C52 6 56 16 52 30" fill="none" stroke="#000" stroke-width="4"/><path d="M20 52C34 60 36 76 26 84C14 82 10 66 20 52z" fill="#000"/><path d="M22 66C28 68 30 76 26 80C20 78 19 72 22 66z" fill="#aaa"/><path d="M0 70C8 72 12 80 8 88H0z" fill="#000"/><path d="M44 82C60 96 58 116 50 122C52 106 48 94 44 82z" fill="#000"/><path d="M30 104C40 116 54 122 66 122C54 126 38 122 30 104z" fill="#000"/><ellipse cx="76" cy="8" rx="4" ry="3.200" fill="#000"/><ellipse cx="84" cy="4" rx="4" ry="3.200" fill="#000"/><ellipse cx="90" cy="12" rx="4" ry="3.200" fill="#000"/><ellipse cx="80" cy="18" rx="4" ry="3.200" fill="#000"/><ellipse cx="98" cy="6" rx="4" ry="3.200" fill="#000"/><ellipse cx="106" cy="12" rx="4" ry="3.200" fill="#000"/><ellipse cx="112" cy="4" rx="4" ry="3.200" fill="#000"/><ellipse cx="118" cy="14" rx="4" ry="3.200" fill="#000"/><ellipse cx="124" cy="6" rx="4" ry="3.200" fill="#000"/><ellipse cx="116" cy="24" rx="4" ry="3.200" fill="#000"/><ellipse cx="78" cy="28" rx="4" ry="3.200" fill="#000"/><path d="M90 26C100 20 112 28 122 44C134 62 150 82 160 92L156 96C140 84 120 72 106 58C98 50 94 38 90 26z" fill="#fff" stroke="#000" stroke-width="1.300"/><path d="M102 30C112 32 126 50 134 62C122 58 108 48 102 30z" fill="#000"/><path d="M106 34l20 22M110 33l18 22M103 36l18 20" stroke="#fff" stroke-width=".7"/><path d="M118 84C126 70 140 72 142 82C136 92 126 94 118 84z" fill="#000"/><path d="M140 82C150 76 158 80 160 86C152 96 146 92 140 82z" fill="#000"/><path d="M138 88C146 96 150 104 140 108C136 100 136 94 138 88z" fill="#000"/><path d="M167 10C150 30 130 34 124 36" fill="none" stroke="#000" stroke-width="2"/><path d="M10 140C20 146 26 156 22 166C14 160 10 150 10 140z" fill="#000"/><path d="M100 150C108 156 110 164 106 168H100z" fill="#000"/><path d="M124 148C130 156 130 164 128 168" fill="none" stroke="#000" stroke-width="3"/><path d="M158 142C166 148 168 160 164 166C158 160 156 150 158 142z" fill="#000"/></g></g></svg><div class="lb"><em></em><span style="letter-spacing:0.39px">1dd6e1075f8d73a2517e82...</span></div></div>
<div class="tile" style="left:903.6px;top:329.4px"><svg width="210" height="210" viewBox="0 0 210 210" font-family="DejaVu Sans, Liberation Sans, sans-serif">
<rect width="210" height="210" fill="#fff"/>
<path d="M55.500 16.500H210M55.500 54.500H198M55.500 102.500H210M55.500 16.500V102.500M197.600 16.500V102.500" stroke="#ccc" stroke-width="1" fill="none"/>
<g fill="#1f3fa8" font-weight="bold" font-size="7.500" text-anchor="middle" text-decoration="underline">
<text x="125.500" y="26.500" textLength="38" lengthAdjust="spacingAndGlyphs">Sketchup</text>
<text x="125.500" y="63.500" textLength="125" lengthAdjust="spacingAndGlyphs">28 Excellent Free Mac Apps for</text>
<text x="125.500" y="74.500" textLength="110" lengthAdjust="spacingAndGlyphs">Graphic and Web designers</text>
</g>
<g fill="#666" font-size="5.600">
<text x="58" y="85.500" textLength="119" lengthAdjust="spacingAndGlyphs">scroll a third way down on the page to see</text>
<text x="58" y="96.500" textLength="82" lengthAdjust="spacingAndGlyphs">some 3D rendering tools etc.</text>
<text x="198.500" y="47" font-size="5">fc</text><text x="198.500" y="58" font-size="5">rr</text>
</g>
<text x="6" y="121.700" fill="#1f3fa8" font-weight="bold" font-size="7.500" textLength="187" lengthAdjust="spacingAndGlyphs">25 Tutorials To Get You Started With Blender</text>
<g fill="#777" font-size="7.200">
<text x="6" y="133.300" textLength="198" lengthAdjust="spacingAndGlyphs">If you are an aspiring Graphic designer you should be</text>
<text x="6" y="144.500" textLength="196" lengthAdjust="spacingAndGlyphs">about being a game developer or a graphic designer ;</text>
<text x="6" y="155.700" textLength="198" lengthAdjust="spacingAndGlyphs">open source choice but also rivals all commercial 3d i</text>
<text x="6" y="166.700" textLength="198" lengthAdjust="spacingAndGlyphs">comparison <tspan fill="#1f3fa8" text-decoration="underline">here</tspan> and <tspan fill="#1f3fa8" text-decoration="underline">here</tspan>. Blender is the only free 3c</text>
<text x="6" y="177.700" textLength="198" lengthAdjust="spacingAndGlyphs">favorites like 3d max (which costs around $5000+) ar</text>
<text x="6" y="188.700" textLength="68" lengthAdjust="spacingAndGlyphs">operating system.</text>
</g>
<rect x="6.500" y="191" width="140" height="13" fill="#222" opacity=".75"/>
</svg>
<div class="lb ov"><em></em><span style="letter-spacing:0.27px">3D Art and Design</span></div></div>
<div class="tile" style="left:1125.2px;top:329.4px"><svg width="210" height="210" viewBox="0 0 210 210"><rect width="210" height="210" fill="#b79c98"/><polygon points="113.1,0.0 209.8,0.0 209.8,37.5 157.6,55.5" fill="#e5f2d7"/><polygon points="0.0,139.3 0.0,209.6 72.1,209.6 65.1,195.5" fill="#e5f2d7"/><polygon points="196.2,176.8 209.8,172.1 209.8,209.6 182.2,209.6" fill="#e5f2d7"/><polygon points="0.0,0.0 7.7,0.0 25.3,23.4 0.0,32.8" fill="#fdecd2"/><polygon points="35.8,0.0 86.2,0.0 87.3,2.3 49.2,16.4" fill="#fdecd2"/><polygon points="31.1,51.5 106.8,25.1 133.5,61.6 57.6,88.3" fill="#fdecd2"/><polygon points="4.2,60.9 24.1,54.6 24.1,72.6 53.4,115.9 51.0,122.5 0.0,72.6 0.0,64.4" fill="#fdecd2"/><polygon points="0.0,106.5 24.1,98.3 30.0,104.2 0.0,113.1" fill="#fdecd2"/><polygon points="18.3,134.6 118.9,100.7 168.1,158.0 72.1,193.2" fill="#fdecd2"/><polygon points="140.0,118.2 209.8,95.3 209.8,146.3 170.9,158.5" fill="#fdecd2"/><polygon points="126.0,101.4 138.1,97.2 138.1,115.9" fill="#fdecd2"/><polygon points="18.3,32.8 107.2,1.2 107.2,25.1 31.1,51.5 30.0,50.3" fill="#b79c98"/><polygon points="107.2,1.2 156.4,55.5 135.3,62.5 107.2,25.1" fill="#c6aca8"/><polygon points="25.3,52.7 58.1,89.0 58.1,115.9 24.1,72.6" fill="#9a807c"/><polygon points="58.1,89.0 129.5,64.4 129.5,92.5 58.1,115.9" fill="#b79c98"/><polygon points="129.5,64.4 209.8,37.5 209.8,66.7 129.5,92.5" fill="#c6aca8"/><polygon points="32.3,106.5 65.1,121.8 65.1,146.3 45.2,148.7 32.3,132.3" fill="#9a807c"/><polygon points="80.3,118.2 117.8,104.2 117.8,124.1 80.3,137.4" fill="#b79c98"/><polygon points="117.8,101.8 166.9,156.9 166.9,162.7 144.7,144.0 117.8,124.1" fill="#9a807c"/><polygon points="138.1,97.2 205.6,71.4 209.8,71.4 209.8,95.3 140.0,118.2" fill="#b79c98"/><polygon points="0.0,115.9 72.1,193.2 72.1,209.6 0.0,144.0" fill="#9a807c"/><polygon points="72.1,193.2 209.8,146.3 209.8,174.4 88.5,209.6 72.1,209.6" fill="#b79c98"/><polygon points="0.0,36.3 18.3,31.6 30.0,50.3 24.1,54.6 4.2,60.9 0.0,62.0" fill="#b79c98"/><polygon points="8.9,0.0 35.8,0.0 49.2,16.4 25.3,23.4" fill="#9a807c"/><polygon points="0.0,78.4 11.2,76.1 22.9,97.2 0.0,105.4" fill="#b79c98"/><polygon points="109.1,7.7 135.8,40.5 135.8,53.1 109.1,19.9" fill="#a9dcea"/><polygon points="122.5,182.6 156.4,171.4 156.4,184.3 122.5,193.6" fill="#a9dcea"/><polygon points="176.3,165.1 209.8,153.4 209.8,167.9 176.3,177.9" fill="#a9dcea"/><polygon points="97.9,191.3 110.7,187.5 110.7,196.0 97.9,198.8" fill="#a9dcea"/><polyline points="0.0,36.8 18.3,31.6 107.2,0.7" fill="none" stroke="#4d4545" stroke-width="2.8" stroke-linejoin="round"/><polyline points="107.2,0.7 156.4,55.5 209.8,37.5" fill="none" stroke="#4d4545" stroke-width="2.8" stroke-linejoin="round"/><polyline points="18.3,31.6 30.0,50.3 58.1,89.0 133.0,62.5" fill="none" stroke="#4d4545" stroke-width="2.8" stroke-linejoin="round"/><polyline points="121.3,100.0 204.4,68.6 209.8,71.4" fill="none" stroke="#4d4545" stroke-width="2.8" stroke-linejoin="round"/><polyline points="0.0,112.4 31.1,103.0 52.2,121.8 121.3,100.0 168.1,158.0 209.8,145.9" fill="none" stroke="#4d4545" stroke-width="2.8" stroke-linejoin="round"/><polyline points="0.0,114.7 72.1,193.2 168.1,158.0" fill="none" stroke="#4d4545" stroke-width="2.8" stroke-linejoin="round"/><polyline points="0.0,64.4 11.2,76.1 0.0,79.6" fill="none" stroke="#4d4545" stroke-width="2.8" stroke-linejoin="round"/><polyline points="8.9,0.0 25.3,23.4 86.2,0.7" fill="none" stroke="#4d4545" stroke-width="2.8" stroke-linejoin="round"/><polyline points="35.8,0.0 49.2,16.4" fill="none" stroke="#4d4545" stroke-width="2.8" stroke-linejoin="round"/><polyline points="0.0,71.4 25.3,97.2" fill="none" stroke="#4d4545" stroke-width="2.2" stroke-linejoin="round"/></svg><div class="lb ov"><em></em><span style="letter-spacing:0.44px">3d floor plan illustrator thu...</span></div></div>
<div class="tile" style="left:17.2px;top:551.0px"><svg width="210" height="210" viewBox="0 0 210 210" font-family="Liberation Sans, sans-serif" font-weight="bold">
<defs>
<radialGradient id="lt1" cx=".5" cy=".5" r=".5"><stop offset="0" stop-color="#4a2430" stop-opacity=".95"/><stop offset="1" stop-color="#4a2430" stop-opacity="0"/></radialGradient>
<radialGradient id="lt2" cx=".5" cy=".5" r=".5"><stop offset="0" stop-color="#17383c" stop-opacity=".9"/><stop offset="1" stop-color="#17383c" stop-opacity="0"/></radialGradient>
<radialGradient id="lt3" cx=".5" cy=".5" r=".5"><stop offset="0" stop-color="#2a1630" stop-opacity=".9"/><stop offset="1" stop-color="#2a1630" stop-opacity="0"/></radialGradient>
<filter id="ltb" x="-10%" y="-10%" width="120%" height="120%"><feGaussianBlur stdDeviation="1.600"/></filter>
<g id="ltt" fill="none">
<text transform="matrix(1.04 .1 -.1 1.3 8 73)" font-size="27" textLength="172" lengthAdjust="spacingAndGlyphs"><tspan font-size="24">T</tspan><tspan font-size="26">R</tspan><tspan font-size="29">A</tspan><tspan font-size="32">N</tspan><tspan font-size="37">S</tspan></text>
<text transform="matrix(1.04 .15 -.1 1.4 15 96)" font-size="22" textLength="163" lengthAdjust="spacingAndGlyphs"><tspan font-size="20">FU</tspan><tspan font-size="22">CH</tspan><tspan font-size="25">SI</tspan><tspan font-size="29">AN</tspan></text>
<text transform="matrix(1.04 .2 -.1 1.45 18 120)" font-size="23" textLength="163" lengthAdjust="spacingAndGlyphs"><tspan font-size="21">IN </tspan><tspan font-size="25">SP</tspan><tspan font-size="30">A</tspan><tspan font-size="34">CE</tspan></text>
</g>
</defs>
<rect width="210" height="210" fill="#090506"/>
<ellipse cx="120" cy="70" rx="95" ry="70" fill="url(#lt1)"/>
<ellipse cx="195" cy="95" rx="45" ry="75" fill="url(#lt2)"/>
<ellipse cx="40" cy="150" rx="70" ry="60" fill="url(#lt3)"/>
<ellipse cx="150" cy="160" rx="60" ry="40" fill="url(#lt1)" opacity=".6"/>
<g stroke="#c8a8a0" stroke-width=".5" opacity=".28">
<use href="#ltt" transform="translate(5 -2)"/><use href="#ltt" transform="translate(10 -4)"/><use href="#ltt" transform="translate(15 -6)"/><use href="#ltt" transform="translate(20 -8)"/><use href="#ltt" transform="translate(25 -10)"/>
</g>
<use href="#ltt" stroke="#e8c8c0" stroke-width="3" opacity=".42" filter="url(#ltb)"/>
<use href="#ltt" stroke="#ecd8d0" stroke-width=".8"/>
<circle cx="32" cy="52" r="2" fill="#fff" filter="url(#ltb)"/><circle cx="138" cy="64" r="2.500" fill="#fff" filter="url(#ltb)"/><circle cx="84" cy="90" r="2" fill="#fff" filter="url(#ltb)"/>
</svg>
<div class="lb ov"><em></em><span style="letter-spacing:0.49px">3D lighted text.jpg</span></div></div>
<div class="tile" style="left:238.8px;top:551.0px"><svg width="210" height="210" viewBox="0 0 210 210" font-family="Liberation Sans, sans-serif">
<defs><linearGradient id="ps1" x1="1" y1="0" x2="0" y2="1"><stop offset="0" stop-color="#dcdaee"/><stop offset=".6" stop-color="#ecebf6"/><stop offset="1" stop-color="#f6f5fa"/></linearGradient>
<filter id="psb"><feGaussianBlur stdDeviation=".5"/></filter></defs>
<rect width="210" height="210" fill="url(#ps1)"/>
<rect width="210" height="29.500" fill="#9c9c9f"/>
<text x="14" y="2.500" font-size="9" font-weight="bold" fill="#b868a8" textLength="84" lengthAdjust="spacingAndGlyphs">Three-Dimensional</text>
<text x="28" y="21.800" font-size="21.500" font-weight="bold" fill="#fff" textLength="168" lengthAdjust="spacingAndGlyphs" stroke="#9c9c9f" stroke-width=".5">Photo Structures</text>
<rect x="183" y="25" width="14" height="1.500" fill="#444"/>
<rect y="29.500" width="210" height="5.200" fill="#8a8a8c"/>
<path d="M1 32.100H210" stroke="#f4f4f4" stroke-width="2.600" stroke-dasharray="2.600 2"/>
<text x="75" y="64.500" font-size="28" font-weight="bold" fill="#2b3a9c" textLength="15" lengthAdjust="spacingAndGlyphs">P</text>
<g stroke="#7880b8" stroke-width="1.700" stroke-dasharray="9 1.300 5 1.300 12 1.300 4 1.300" opacity=".55">
<path d="M92 45.500H190M92 51.400H188M92 57.200H187M92 63.100H190M75 69H188M75 74.800H182"/>
<path d="M75 86.500H193M75 92.400H192M75 98.200H193M75 104.100H190" stroke-dashoffset="7"/>
</g>
<g stroke="#b03878" stroke-width="1.500"><path d="M75 119.500H108M75 157.800H107M138 157.800H178"/></g>
<g stroke="#555a66" stroke-width="1.300" stroke-dasharray="7 1 4 1 9 1 3 1" opacity=".5">
<path d="M75 123.800H132M75 128H133M75 132.200H130M75 136.400H133M75 140.600H131M75 144.800H133M75 149H128"/>
<path d="M138 119.600H195M138 123.800H194M138 128H196M138 132.200H193M138 136.400H195M138 140.600H196M138 144.800H194M138 149H152" stroke-dashoffset="5"/>
<path d="M75 162H132M75 166.200H133M75 170.400H131M80 174.600H132M75 178.800H130M75 183H133M75 187.200H94M75 191.400H96"/>
<path d="M138 162H195M138 166.200H194M138 170.400H193M138 174.600H190M138 178.800H195M138 183H194M170 187.200H196M170 191.400H196M170 195.600H196" stroke-dashoffset="3"/>
</g>
<path d="M108 192.500H161" stroke="#333a88" stroke-width="1.500"/>
<!-- star sculpture -->
<g filter="url(#psb)">
<path d="M41 40L47 66L70 62L56 82L73 92L50 98L46 118L35 100L8 106L26 88L12 62L34 70z" fill="#8e94a8"/>
<path d="M41 40L44 70L34 70zM12 62L34 70L30 84zM70 62L56 82L46 76zM8 106L26 88L36 98zM46 118L35 100L48 94z" fill="#3a3e4c"/>
<path d="M47 66L70 62L52 76zM56 82L73 92L50 98zM26 88L34 70L44 84z" fill="#c8ccd8"/>
<path d="M30 84L48 94L44 70z" fill="#5a6074"/>
<path d="M36 100L52 96L46 112z" fill="#d8dae2"/>
<!-- lower sculpture -->
<path d="M28 128L40 134L48 146L62 150L64 176L70 190L66 210H14L20 186L16 162L26 150z" fill="#3c5aa8"/>
<path d="M28 128L34 150L22 170L16 160zM40 160L58 168L50 190L38 186zM22 186L34 196L30 210H14z" fill="#1c2238"/>
<path d="M34 134L46 146L40 158L32 150zM50 174L62 178L60 196L52 192z" fill="#e4e6ee"/>
<path d="M26 168L38 172L34 188L24 184z" fill="#7a92d0"/>
<path d="M40 196L56 200L52 210H38z" fill="#c84848" opacity=".6"/>
</g>
<text x="40" y="114" font-size="3" fill="#666">Artist: Unknown,</text>
</svg>
<div class="lb ov"><em></em><span style="letter-spacing:0.24px">3DPhotoStructures001.jpg</span></div></div>
<div class="tile" style="left:460.4px;top:551.0px"><svg width="210" height="210" viewBox="0 0 210 210"><defs><filter id="p2b"><feGaussianBlur stdDeviation=".6"/></filter><linearGradient id="p2g" x1="0" y1="0" x2="1" y2="0"><stop offset="0" stop-color="#e4e2f0"/><stop offset="1" stop-color="#f0eff8"/></linearGradient></defs><rect width="210" height="210" fill="url(#p2g)"/><rect x="0.0" y="0.0" width="5.6" height="64.4" fill="#8e8e90"/><rect x="0.0" y="64.4" width="5.6" height="70.2" fill="#c8c6d0" opacity=".6"/><g filter="url(#p2b)"><rect x="7.7" y="0.0" width="77.3" height="14.0" fill="#2a2022"/><ellipse cx="21.8" cy="3.5" rx="5.2" ry="3.3" fill="#e8e8f0"/><rect x="62.7" y="1.2" width="22.2" height="12.9" fill="#7a7078"/><ellipse cx="69.8" cy="8.2" rx="4.2" ry="4.2" fill="#d8c0b0"/><polygon points="5.4,16.4 88.5,16.4 88.5,51.5 5.4,50.3" fill="#2a2022"/><ellipse cx="26.5" cy="35.1" rx="10.5" ry="10.5" fill="#f4f4f8"/><ellipse cx="56.2" cy="29.3" rx="8.9" ry="8.0" fill="#6a4a3a"/><polygon points="53.4,41.0 65.1,31.6 87.3,33.9 87.3,51.5 53.4,51.5" fill="#dfe6f2"/><polygon points="11.2,53.9 80.3,53.9 80.3,80.8 11.2,81.2" fill="#2a2022"/><ellipse cx="33.5" cy="62.5" rx="5.2" ry="8.0" fill="#f0f0f6"/><polygon points="17.1,81.2 54.6,70.2 54.6,81.2" fill="#eeeef4"/><rect x="65.1" y="53.9" width="15.2" height="27.4" fill="#a89890"/><rect x="70.9" y="55.5" width="5.9" height="22.9" fill="#e4dcd8"/><polygon points="8.4,82.7 85.0,80.8 85.0,108.9 8.4,108.9" fill="#4a3428"/><ellipse cx="19.4" cy="92.5" rx="8.9" ry="8.0" fill="#d8b49c"/><polygon points="8.4,99.5 39.3,97.2 39.3,108.9 8.4,108.9" fill="#e8e4e4"/><ellipse cx="42.8" cy="93.7" rx="7.0" ry="7.0" fill="#f2f2f6"/><rect x="53.4" y="83.1" width="31.6" height="24.6" fill="#3a2820"/><polygon points="13.6,110.0 76.8,108.9 76.8,132.3 13.6,133.5" fill="#2a2022"/><polygon points="22.9,131.1 51.0,112.4 51.0,131.1" fill="#ecebf2"/><rect x="59.2" y="110.0" width="16.4" height="22.2" fill="#8a7a78"/><ellipse cx="67.4" cy="118.2" rx="4.2" ry="4.2" fill="#d8c0b0"/><polygon points="11.2,133.9 79.6,133.5 79.6,155.7 11.2,155.7" fill="#3a2c2a"/><ellipse cx="42.8" cy="144.0" rx="7.0" ry="8.0" fill="#e0b498"/><ellipse cx="65.1" cy="144.0" rx="7.0" ry="7.0" fill="#d8d0d0"/><ellipse cx="65.1" cy="144.0" rx="3.7" ry="3.7" fill="#3a2c2a"/><rect x="13.6" y="137.0" width="18.7" height="16.4" fill="#5a4a48"/><polygon points="57.6,155.7 72.1,155.7 70.9,170.9 63.9,168.6" fill="#d8c850"/><path d="M140.0 209.8C144.7 186.1 158.7 172.1 172.8 175.6C182.2 179.1 189.2 190.8 200.9 185.0C198.5 197.8 182.2 204.9 172.8 209.8z" fill="#15141a"/><polygon points="156.4,181.5 168.1,179.1 170.5,190.8 158.7,193.2" fill="#5a5058"/></g><rect x="138.8" y="0" width="58.5" height="56.2" rx="3" fill="#d2ccee"/><path d="M147.5 2.3H193.9M147.5 7.0H193.9M147.5 11.7H193.9M147.5 16.4H193.9M147.5 21.5H193.9M147.5 26.2H193.9M147.5 30.9H193.9M147.5 36.3H193.9M147.5 41.0H193.9M147.5 45.7H193.9" stroke="#4a4a98" stroke-width="1.4" stroke-dasharray="8 1 5 1 10 1" opacity="0.6" fill="none"/><ellipse cx="143.8" cy="2.3" rx="0.9" ry="0.9" fill="#4a4a98"/><ellipse cx="143.8" cy="7.0" rx="0.9" ry="0.9" fill="#4a4a98"/><ellipse cx="143.8" cy="11.7" rx="0.9" ry="0.9" fill="#4a4a98"/><ellipse cx="143.8" cy="16.4" rx="0.9" ry="0.9" fill="#4a4a98"/><ellipse cx="143.8" cy="21.5" rx="0.9" ry="0.9" fill="#4a4a98"/><ellipse cx="143.8" cy="36.3" rx="0.9" ry="0.9" fill="#4a4a98"/><path d="M89.7 4.0H133.0M89.7 8.2H133.0M89.7 12.4H133.0M89.7 16.6H133.0M89.7 20.8H133.0M89.7 25.1H133.0M89.7 29.3H133.0M89.7 33.5H133.0M89.7 37.7H133.0M89.7 41.9H133.0M89.7 46.1H133.0M89.7 50.3H133.0M89.7 54.6H133.0M89.7 58.8H133.0M89.7 63.0H133.0M89.7 67.2H133.0M89.7 71.4H133.0M89.7 75.6H133.0" stroke="#4a4650" stroke-width="1.2" stroke-dasharray="6 1 3 1 8 1 4 1" opacity="0.5" fill="none"/><path d="M89.7 83.8H118.9M89.7 88.3H118.9" stroke="#c03088" stroke-width="1.5" stroke-dasharray="30 0" opacity="0.9" fill="none"/><path d="M92.7 92.5H131.8M92.7 96.7H131.8M92.7 100.9H131.8M92.7 105.1H131.8M92.7 109.3H131.8M92.7 113.6H131.8M92.7 117.8H131.8M92.7 122.0H131.8M92.7 126.2H131.8M92.7 130.4H131.8M92.7 134.6H131.8M92.7 138.8H131.8M92.7 143.1H131.8M92.7 147.3H131.8M92.7 151.5H131.8M92.7 155.7H131.8M92.7 159.9H131.8" stroke="#4a4650" stroke-width="1.2" stroke-dasharray="6 1 3 1 8 1 4 1" opacity="0.5" fill="none"/><path d="M85.0 169.0H129.5" stroke="#c03088" stroke-width="1.5" stroke-dasharray="50 0" opacity="0.9" fill="none"/><path d="M74.5 173.3H133.5M74.5 177.5H133.5M74.5 181.7H133.5M74.5 185.9H133.5M74.5 190.1H133.5" stroke="#4a4650" stroke-width="1.2" stroke-dasharray="6 1 3 1 8 1 4 1" opacity="0.5" fill="none"/><path d="M11.2 173.3H72.1M11.2 177.5H72.1M11.2 181.7H72.1M11.2 185.9H72.1M11.2 190.1H72.1" stroke="#4a4650" stroke-width="1.2" stroke-dasharray="6 1 3 1 8 1 4 1" opacity="0.5" fill="none"/><path d="M11.2 161.1H41.7" stroke="#777" stroke-width="0.8" stroke-dasharray="6 1 3 1 8 1 4 1" opacity="0.5" fill="none"/><path d="M138.8 68.6H197.4M138.8 72.3H197.4M138.8 76.1H197.4M138.8 79.8H197.4M138.8 83.6H197.4M138.8 87.3H197.4M138.8 91.1H197.4M138.8 94.4H197.4" stroke="#666070" stroke-width="1" stroke-dasharray="6 1 3 1 8 1 4 1" opacity="0.6" fill="none"/><rect x="138.8" y="100.2" width="58.8" height="4.4" fill="#c87cb4"/><rect x="138.8" y="133.9" width="58.8" height="4.2" fill="#c87cb4"/><path d="M148.2 102.6H189.2" stroke="#fff" stroke-width="1" stroke-dasharray="2 1.5" opacity="0.9" fill="none"/><path d="M158.7 136.0H179.8" stroke="#fff" stroke-width="1" stroke-dasharray="2 1.5" opacity="0.9" fill="none"/><path d="M138.8 107.5H196.2M138.8 111.7H196.2M138.8 115.9H196.2M138.8 120.1H196.2M138.8 124.3H196.2M138.8 128.1H196.2" stroke="#555060" stroke-width="1.1" stroke-dasharray="6 1 3 1 8 1 4 1" opacity="0.5" fill="none"/><path d="M138.8 141.7H169.3" stroke="#555060" stroke-width="1" stroke-dasharray="6 1 3 1 8 1 4 1" opacity="0.5" fill="none"/></svg><div class="lb ov"><em></em><span style="letter-spacing:0.24px">3DPhotoStructures002.jpg</span></div></div>
<div class="tile" style="left:682.0px;top:551.0px"><svg width="210" height="210" viewBox="0 0 210 210" font-family="Liberation Sans, sans-serif">
<defs><linearGradient id="v3g" x1="0" y1="0" x2="0" y2="1"><stop offset="0" stop-color="#79c24c"/><stop offset="1" stop-color="#93d270"/></linearGradient></defs>
<rect width="210" height="210" fill="#fff"/>
<rect width="210" height="14.200" fill="url(#v3g)"/>
<text x="-2.500" y="29.300" font-size="13.500" font-weight="bold" fill="#c4161c" textLength="163" lengthAdjust="spacingAndGlyphs">e SketchUp Teacher Guide</text>
<text x="-1" y="40.500" font-size="6.300" font-weight="bold" fill="#111" textLength="200" lengthAdjust="spacingAndGlyphs">s you can use in your classroom, using FREE Google SketchUp</text>
<text x="-1" y="69.200" font-size="6.300" fill="#222" textLength="210" lengthAdjust="spacingAndGlyphs">ect shown below, you can view project details in HTML or PDF format.</text>
<rect y="85" width="210" height="7.200" fill="#b4f4f6"/>
<text x="2" y="90.800" font-size="6" font-style="italic" fill="#222" textLength="145" lengthAdjust="spacingAndGlyphs">these projects assembled in one large PDF, <tspan fill="#1a3ad0" text-decoration="underline">click here</tspan>.</text>
<g fill="#1a2cc0" text-decoration="underline">
<text x="-2" y="114" font-size="7.800" font-weight="bold" textLength="46.500" lengthAdjust="spacingAndGlyphs">sign Projects</text>
<text x="103.700" y="114" font-size="7.800" font-weight="bold" textLength="48.500" lengthAdjust="spacingAndGlyphs">Math Projects</text>
<g font-size="6.300" fill="#2a3cd0">
<text x="-1" y="126" textLength="49.500" lengthAdjust="spacingAndGlyphs">n: Grades 1 - 5</text>
<text x="98.300" y="126" textLength="57.500" lengthAdjust="spacingAndGlyphs">Math: Grades 1 - 5</text>
<text x="-1" y="138" textLength="49.500" lengthAdjust="spacingAndGlyphs">n: Grades 6 - 9</text>
<text x="98.300" y="138" textLength="57.500" lengthAdjust="spacingAndGlyphs">Math: Grades 6 - 9</text>
<text x="-1" y="150" textLength="52.500" lengthAdjust="spacingAndGlyphs">: Grades 10 - 12</text>
<text x="94.800" y="150" textLength="64" lengthAdjust="spacingAndGlyphs">Math: Grades 10 - 12</text>
<text x="207" y="126">S</text><text x="206" y="150">G</text>
<text x="10" y="205" textLength="34" lengthAdjust="spacingAndGlyphs">Grades 1 - 5</text>
</g></g>
<text x="-1.500" y="192.700" font-size="8.600" font-weight="bold" fill="#d01c24" textLength="118" lengthAdjust="spacingAndGlyphs">SketchUp Design Projects</text>
</svg>
<div class="lb ov"><em></em><span style="letter-spacing:0.16px">3DVinci.png</span></div></div>
<div class="tile" style="left:903.6px;top:551.0px"><svg width="210" height="210" viewBox="0 0 210 210" font-family="Liberation Sans, sans-serif"><defs><radialGradient id="ck1" cx=".45" cy=".45" r=".6"><stop offset="0" stop-color="#fff"/><stop offset=".6" stop-color="#f2f2f2"/><stop offset="1" stop-color="#c4c4c4"/></radialGradient><linearGradient id="ck2" x1="1" y1="0" x2="0" y2="1"><stop offset="0" stop-color="#f0f0f0"/><stop offset=".5" stop-color="#b8b8b8"/><stop offset="1" stop-color="#7a7a7a"/></linearGradient><linearGradient id="ck3" x1="1" y1="0" x2="0" y2="1"><stop offset="0" stop-color="#8a8a8a"/><stop offset="1" stop-color="#d0d0d0"/></linearGradient><linearGradient id="ck4" x1="0" y1="0" x2="0" y2="1"><stop offset="0" stop-color="#8c8c8c"/><stop offset=".2" stop-color="#c4c4c4"/><stop offset="1" stop-color="#e6e6e6"/></linearGradient><filter id="ckb" x="-20%" y="-20%" width="140%" height="140%"><feGaussianBlur stdDeviation="2"/></filter></defs><rect width="210" height="210" fill="#fff"/><circle cx="129.5" cy="120" r="103" fill="#888" opacity=".5" filter="url(#ckb)"/><circle cx="129.5" cy="116" r="102" fill="url(#ck2)"/><circle cx="129.5" cy="116" r="90" fill="url(#ck3)"/><circle cx="129.5" cy="116" r="83" fill="url(#ck1)"/><circle cx="129.5" cy="116" r="85.500" fill="none" stroke="#5a5a5a" stroke-width="2.600" opacity=".55"/><path d="M161.0 61.4L167.0 51.0" stroke="#aaa" stroke-width="1.500"/><path d="M184.1 84.5L194.5 78.5" stroke="#aaa" stroke-width="1.500"/><path d="M184.1 147.5L194.5 153.5" stroke="#aaa" stroke-width="1.500"/><path d="M161.0 170.6L167.0 181.0" stroke="#aaa" stroke-width="1.500"/><path d="M98.0 170.6L92.0 181.0" stroke="#aaa" stroke-width="1.500"/><path d="M74.9 147.5L64.5 153.5" stroke="#aaa" stroke-width="1.500"/><path d="M74.9 84.5L64.5 78.5" stroke="#aaa" stroke-width="1.500"/><path d="M98.0 61.4L92.0 51.0" stroke="#aaa" stroke-width="1.500"/><text x="128.300" y="66" font-size="24" font-weight="bold" text-anchor="middle" fill="#0a0a0a" stroke="#0a0a0a" stroke-width=".7">12</text><text x="191" y="123.500" font-size="24" font-weight="bold" text-anchor="middle" fill="#0a0a0a" stroke="#0a0a0a" stroke-width=".7">3</text><text x="129.500" y="185.500" font-size="24" font-weight="bold" text-anchor="middle" fill="#0a0a0a" stroke="#0a0a0a" stroke-width=".7">6</text><path d="M138.8 119.4L170.5 131.1" stroke="#a0a6aa" stroke-width="7" stroke-linecap="round"/><path d="M94.4 155.2L104.4 145.9" stroke="#c01828" stroke-width="2.200"/><path d="M87.3 76.1L99.0 84.3" stroke="#555" stroke-width="4"/><rect x="88.5" y="78.4" width="81.9" height="77.3" fill="none" stroke="#bbb" stroke-width=".5"/><rect x="144.7" y="98.3" width="23.4" height="21.1" rx="2" fill="#a8a8a8"/><path d="M152.2 103.0L162.3 108.9L152.2 114.7z" fill="#fff"/><rect width="210" height="27" fill="url(#ck4)"/><rect width="210" height="4" fill="#8a8a8a"/><rect y="14" width="210" height="9" fill="#ececec"/><path d="M0 26.500H210" stroke="#999" stroke-width=".6" stroke-dasharray="1 2"/><path d="M1.9 3.0H30.0" stroke="#333" stroke-width="1.6" stroke-dasharray="4 2 6 2 3 2" opacity="0.7" fill="none"/><path d="M1.9 8.7H205.6" stroke="#555" stroke-width="2" stroke-dasharray="3 2 5 3 2 4" opacity="0.6" fill="none"/><path d="M4.2 16.4H65.1" stroke="#3a6ac0" stroke-width="2.5" stroke-dasharray="3 2" opacity="0.6" fill="none"/><path d="M90.8 16.4H107.2" stroke="#3a6ac0" stroke-width="2.5" stroke-dasharray="12 2" opacity="0.6" fill="none"/><path d="M116.6 16.4H205.6" stroke="#555" stroke-width="3" stroke-dasharray="2 1.5 4 1.5" opacity="0.6" fill="none"/><rect x="0" y="7" width="4" height="6" fill="#e0a020"/><rect x="36.3" y="4.0" width="51.5" height="132.5" fill="#555" opacity=".35" filter="url(#ckb)"/><rect x="35.8" y="3.5" width="51.5" height="132.3" fill="#f4f4f4" opacity=".96"/><path d="M40.5 7.5H65.1M40.5 12.4H65.1M40.5 19.4H65.1M40.5 38.2H65.1M40.5 50.3H65.1M40.5 59.2H65.1M40.5 63.9H65.1M40.5 80.8H65.1M40.5 97.2H65.1M40.5 101.8H65.1M40.5 106.5H65.1M40.5 111.2H65.1M40.5 119.2H65.1M40.5 123.9H65.1M40.5 128.5H65.1M40.5 133.2H65.1" stroke="#222" stroke-width="1.2" stroke-dasharray="100 0" opacity="0.85" fill="none"/><path d="M40.5 59.7H76.8M40.5 69.1H76.8" stroke="#222" stroke-width="1.2" stroke-dasharray="100 0" opacity="0.85" fill="none"/><path d="M40.5 24.1H58.1M40.5 28.8H58.1M40.5 33.5H58.1M40.5 42.8H58.1M40.5 55.0H58.1M40.5 73.8H58.1" stroke="#aaa" stroke-width="1.1" stroke-dasharray="100 0" opacity="0.9" fill="none"/><path d="M78.0 19.4H85.0M78.0 24.1H85.0M78.0 33.5H85.0M78.0 42.8H85.0" stroke="#999" stroke-width="1.1" stroke-dasharray="100 0" opacity="0.9" fill="none"/><rect x="35.8" y="86.6" width="51.5" height="4.7" fill="#5a5a5a"/><path d="M40.5 89.0H53.4" stroke="#fff" stroke-width="1.2" stroke-dasharray="100 0" opacity="0.9" fill="none"/><rect x="89.0" y="85.9" width="49.6" height="59.9" fill="#555" opacity=".35" filter="url(#ckb)"/><rect x="88.5" y="85.5" width="49.6" height="59.7" fill="#f6f6f6" opacity=".97"/><path d="M92.7 89.0H107.2M92.7 93.7H107.2M92.7 100.7H107.2" stroke="#222" stroke-width="1.2" stroke-dasharray="100 0" opacity="0.85" fill="none"/><path d="M92.7 112.9H128.3M92.7 117.5H128.3M92.7 122.2H128.3M92.7 126.9H128.3" stroke="#222" stroke-width="1.2" stroke-dasharray="100 0" opacity="0.85" fill="none"/><path d="M92.7 134.6H116.6M92.7 142.4H116.6" stroke="#222" stroke-width="1.2" stroke-dasharray="100 0" opacity="0.85" fill="none"/><rect x="88.5" y="103.5" width="49.6" height="3.7" fill="#5a5a5a"/><path d="M92.7 105.4H114.3" stroke="#fff" stroke-width="1.2" stroke-dasharray="100 0" opacity="0.9" fill="none"/></svg><div class="lb ov"><em></em><span style="letter-spacing:0.14px">003_Alarm_Clock.png</span></div></div>
<div class="tile" style="left:1125.2px;top:551.0px"><svg width="210" height="210" viewBox="0 0 210 210"><defs><linearGradient id="a1" x1="0" y1="0" x2="0" y2="1"><stop offset="0" stop-color="#9cc0ea"/><stop offset="1" stop-color="#d4e4f4"/></linearGradient><linearGradient id="a2" x1="0" y1="0" x2="0" y2="1"><stop offset="0" stop-color="#4c90d8"/><stop offset="1" stop-color="#a8cdec"/></linearGradient><linearGradient id="a3" x1="0" y1="0" x2="0" y2="1"><stop offset="0" stop-color="#e8d898"/><stop offset=".5" stop-color="#d8c078"/><stop offset="1" stop-color="#7a5a28"/></linearGradient><radialGradient id="a4" cx=".45" cy=".3" r=".55"><stop offset="0" stop-color="#e4f0f6"/><stop offset=".75" stop-color="#cfe0ea"/><stop offset="1" stop-color="#8e9294"/></radialGradient><filter id="ab"><feGaussianBlur stdDeviation=".8"/></filter><clipPath id="ac1"><rect x="0" y="0" width="109" height="96"/></clipPath><clipPath id="ac2"><rect x="113.500" y="0" width="96.500" height="103.700"/></clipPath><clipPath id="ac3"><rect x="0" y="100.700" width="109" height="109.300"/></clipPath><clipPath id="ac4"><rect x="113.500" y="108.900" width="96.500" height="101.100"/></clipPath></defs><rect width="210" height="210" fill="#fff"/><g clip-path="url(#ac1)"><rect width="109" height="96" fill="url(#a1)"/><g filter="url(#ab)"><ellipse cx="59.7" cy="18.7" rx="8.2" ry="4.7" fill="#fff" opacity=".9"/><ellipse cx="29.3" cy="43.3" rx="12.9" ry="5.9" fill="#fff" opacity=".85"/><ellipse cx="100.6" cy="35.1" rx="10.5" ry="12.9" fill="#fff" opacity=".75"/><ellipse cx="35.1" cy="12.9" rx="7.0" ry="2.9" fill="#fff" opacity=".6"/><ellipse cx="38.6" cy="3.5" rx="10.5" ry="2.3" fill="#fff" opacity=".6"/><ellipse cx="14.0" cy="33.9" rx="7.0" ry="3.5" fill="#fff" opacity=".6"/><polygon points="0.0,3.5 8.2,7.0 12.9,23.4 7.0,35.1 14.0,44.5 17.6,56.2 30.4,55.0 35.1,65.5 0.0,67.9" fill="#3f5a2c"/><ellipse cx="7.0" cy="23.4" rx="5.9" ry="8.2" fill="#58743a"/><ellipse cx="23.4" cy="58.5" rx="7.0" ry="4.7" fill="#4a6a34"/><ellipse cx="106.5" cy="63.2" rx="3.5" ry="7.0" fill="#4a6a34"/><polygon points="0.0,65.5 110.0,63.2 110.0,95.4 0.0,95.4" fill="#4a4238"/></g><path d="M48.0 29.3V80.7M82.5 26.3V76.1" stroke="#6e3e2a" stroke-width="1.800"/><path d="M70.2 7.0V56.2M90.7 19.9V46.8" stroke="#4a4038" stroke-width=".8"/><g filter="url(#ab)"><ellipse cx="70.6" cy="21.1" rx="6.4" ry="9.4" fill="#7c7468"/><ellipse cx="48.4" cy="27.9" rx="3.5" ry="4.9" fill="#8a7458"/><ellipse cx="82.6" cy="24.0" rx="3.5" ry="4.2" fill="#9a9088"/><ellipse cx="70.2" cy="7.6" rx="0.9" ry="1.2" fill="#3a4a5a"/><ellipse cx="48.0" cy="18.7" rx="1.4" ry="1.2" fill="#3a4a5a"/><ellipse cx="81.9" cy="14.6" rx="1.4" ry="1.2" fill="#3a4a5a"/><ellipse cx="52.6" cy="51.0" rx="3.2" ry="2.4" fill="#3a2c26"/><ellipse cx="98.9" cy="44.9" rx="3.9" ry="1.9" fill="#d8d0c8"/><ellipse cx="64.1" cy="48.0" rx="2.0" ry="2.9" fill="#3a2c26"/><ellipse cx="95.1" cy="51.1" rx="2.8" ry="3.3" fill="#2a201c"/><ellipse cx="92.5" cy="48.9" rx="1.9" ry="2.2" fill="#4a3a30"/><ellipse cx="82.3" cy="49.8" rx="3.8" ry="1.7" fill="#5a3028"/><ellipse cx="95.4" cy="44.3" rx="3.0" ry="2.2" fill="#4a3a30"/><ellipse cx="51.8" cy="50.3" rx="2.9" ry="3.0" fill="#2a201c"/><ellipse cx="87.1" cy="37.5" rx="3.9" ry="3.1" fill="#2a201c"/><ellipse cx="74.8" cy="47.3" rx="2.7" ry="2.2" fill="#3a2c26"/><ellipse cx="93.2" cy="43.1" rx="2.6" ry="2.4" fill="#4a3a30"/><ellipse cx="61.2" cy="45.2" rx="2.4" ry="3.0" fill="#3a2c26"/><ellipse cx="71.2" cy="45.4" rx="3.0" ry="2.9" fill="#3a2c26"/><ellipse cx="75.4" cy="40.5" rx="3.9" ry="1.8" fill="#5a3028"/><ellipse cx="52.9" cy="41.4" rx="3.8" ry="2.2" fill="#d8d0c8"/><ellipse cx="53.1" cy="43.6" rx="2.2" ry="1.7" fill="#d8d0c8"/><ellipse cx="66.2" cy="59.4" rx="3.9" ry="2.6" fill="#1c1614"/><ellipse cx="70.9" cy="42.1" rx="2.4" ry="3.1" fill="#3a2c26"/><ellipse cx="74.9" cy="43.9" rx="2.7" ry="2.9" fill="#2a201c"/><ellipse cx="57.8" cy="39.7" rx="2.8" ry="1.9" fill="#2a201c"/><ellipse cx="92.2" cy="49.7" rx="2.2" ry="1.9" fill="#5a3028"/><ellipse cx="70.2" cy="38.7" rx="3.9" ry="2.5" fill="#5a3028"/><ellipse cx="70.2" cy="58.4" rx="3.8" ry="2.2" fill="#3a2c26"/><ellipse cx="92.8" cy="48.5" rx="2.8" ry="2.6" fill="#2a201c"/><ellipse cx="70.1" cy="35.5" rx="3.1" ry="1.9" fill="#5a3028"/><ellipse cx="76.6" cy="49.7" rx="3.7" ry="2.6" fill="#1c1614"/><ellipse cx="81.7" cy="52.7" rx="3.6" ry="1.9" fill="#3a2c26"/><ellipse cx="44.7" cy="44.1" rx="2.2" ry="3.1" fill="#5a3028"/><ellipse cx="59.1" cy="40.1" rx="3.9" ry="2.3" fill="#3a2c26"/><ellipse cx="78.2" cy="36.7" rx="3.7" ry="2.0" fill="#5a3028"/><ellipse cx="74.2" cy="32.9" rx="3.4" ry="3.1" fill="#2a201c"/><ellipse cx="65.1" cy="55.9" rx="2.7" ry="2.6" fill="#2a201c"/><ellipse cx="83.3" cy="38.7" rx="3.3" ry="2.2" fill="#2a201c"/><ellipse cx="57.0" cy="36.0" rx="3.4" ry="3.3" fill="#2a201c"/><ellipse cx="71.6" cy="47.0" rx="3.9" ry="1.8" fill="#d8d0c8"/><ellipse cx="46.7" cy="48.3" rx="2.6" ry="2.5" fill="#1c1614"/><ellipse cx="82.6" cy="46.4" rx="3.1" ry="1.7" fill="#2a201c"/><ellipse cx="61.6" cy="37.3" rx="2.0" ry="2.7" fill="#4a3a30"/><ellipse cx="86.0" cy="44.2" rx="3.2" ry="1.7" fill="#5a3028"/><ellipse cx="82.9" cy="44.8" rx="3.0" ry="3.1" fill="#2a201c"/><ellipse cx="67.7" cy="38.5" rx="3.4" ry="3.0" fill="#5a3028"/><ellipse cx="67.3" cy="54.0" rx="2.7" ry="2.2" fill="#3a2c26"/><ellipse cx="78.8" cy="58.6" rx="2.1" ry="2.4" fill="#4a3a30"/><ellipse cx="64.3" cy="48.6" rx="2.3" ry="2.4" fill="#5a3028"/><ellipse cx="85.9" cy="50.4" rx="3.7" ry="2.8" fill="#5a3028"/><ellipse cx="58.0" cy="45.1" rx="2.9" ry="2.1" fill="#4a3a30"/><ellipse cx="60.9" cy="40.4" rx="2.7" ry="1.9" fill="#d8d0c8"/><ellipse cx="53.1" cy="46.3" rx="3.2" ry="2.3" fill="#5a3028"/><ellipse cx="69.3" cy="34.6" rx="3.9" ry="2.8" fill="#3a2c26"/><ellipse cx="81.4" cy="42.0" rx="3.1" ry="1.9" fill="#2a201c"/><ellipse cx="96.7" cy="40.6" rx="2.4" ry="3.0" fill="#3a2c26"/><ellipse cx="93.8" cy="45.8" rx="2.4" ry="2.8" fill="#5a3028"/><ellipse cx="64.6" cy="58.0" rx="2.9" ry="2.4" fill="#d8d0c8"/><ellipse cx="80.7" cy="50.4" rx="3.3" ry="2.7" fill="#2a201c"/><ellipse cx="95.8" cy="51.4" rx="1.9" ry="2.5" fill="#2a201c"/><ellipse cx="65.7" cy="44.0" rx="2.8" ry="3.3" fill="#d8d0c8"/><ellipse cx="54.0" cy="42.0" rx="1.9" ry="1.9" fill="#d8d0c8"/><ellipse cx="87.8" cy="54.7" rx="3.0" ry="1.7" fill="#3a2c26"/><ellipse cx="66.7" cy="56.4" rx="2.4" ry="2.6" fill="#2a201c"/><ellipse cx="76.0" cy="33.9" rx="3.8" ry="2.9" fill="#2a201c"/><ellipse cx="80.3" cy="35.9" rx="2.9" ry="2.5" fill="#d8d0c8"/><ellipse cx="78.1" cy="44.8" rx="3.6" ry="2.2" fill="#1c1614"/><ellipse cx="51.9" cy="39.7" rx="3.2" ry="1.7" fill="#2a201c"/><ellipse cx="72.0" cy="50.6" rx="2.3" ry="2.1" fill="#2a201c"/><ellipse cx="52.4" cy="48.0" rx="2.5" ry="2.9" fill="#4a3a30"/><ellipse cx="95.6" cy="46.7" rx="2.7" ry="2.8" fill="#5a3028"/><ellipse cx="96.9" cy="43.5" rx="2.6" ry="2.0" fill="#d8d0c8"/><ellipse cx="45.6" cy="41.5" rx="3.0" ry="2.7" fill="#3a2c26"/><ellipse cx="44.5" cy="41.9" rx="2.9" ry="3.1" fill="#4a3a30"/><ellipse cx="81.5" cy="37.7" rx="3.5" ry="3.1" fill="#d8d0c8"/><ellipse cx="77.2" cy="34.7" rx="2.5" ry="2.0" fill="#4a3a30"/><ellipse cx="43.9" cy="41.5" rx="3.2" ry="2.6" fill="#2a201c"/><ellipse cx="64.4" cy="52.6" rx="2.3" ry="3.2" fill="#d8d0c8"/><ellipse cx="99.4" cy="47.2" rx="3.5" ry="2.9" fill="#1c1614"/><ellipse cx="77.0" cy="41.5" rx="3.3" ry="3.1" fill="#d8d0c8"/><ellipse cx="67.1" cy="47.9" rx="1.9" ry="2.7" fill="#3a2c26"/><ellipse cx="85.0" cy="37.6" rx="3.0" ry="2.2" fill="#d8d0c8"/><ellipse cx="59.9" cy="36.1" rx="3.3" ry="2.6" fill="#4a3a30"/><ellipse cx="86.6" cy="52.7" rx="3.2" ry="2.1" fill="#4a3a30"/><ellipse cx="89.8" cy="37.8" rx="2.9" ry="1.7" fill="#2a201c"/><ellipse cx="69.1" cy="32.6" rx="3.6" ry="2.6" fill="#2a201c"/><ellipse cx="60.3" cy="35.5" rx="2.3" ry="1.9" fill="#3a2c26"/><ellipse cx="65.4" cy="31.7" rx="3.3" ry="2.6" fill="#d8d0c8"/><ellipse cx="90.1" cy="44.5" rx="2.9" ry="3.1" fill="#d8d0c8"/><ellipse cx="88.9" cy="45.2" rx="2.0" ry="2.2" fill="#2a201c"/><ellipse cx="50.7" cy="41.0" rx="2.6" ry="2.6" fill="#4a3a30"/><ellipse cx="76.9" cy="51.1" rx="3.7" ry="2.9" fill="#1c1614"/><ellipse cx="80.1" cy="52.2" rx="2.8" ry="1.8" fill="#3a2c26"/><ellipse cx="76.7" cy="41.0" rx="3.7" ry="2.9" fill="#3a2c26"/><ellipse cx="78.9" cy="35.7" rx="3.6" ry="2.1" fill="#5a3028"/><ellipse cx="78.0" cy="49.7" rx="3.0" ry="1.9" fill="#2a201c"/><ellipse cx="83.4" cy="37.7" rx="3.3" ry="2.2" fill="#5a3028"/><ellipse cx="72.7" cy="31.9" rx="3.6" ry="2.1" fill="#1c1614"/><ellipse cx="82.4" cy="43.2" rx="2.1" ry="3.1" fill="#5a3028"/><ellipse cx="72.0" cy="59.6" rx="2.4" ry="2.8" fill="#4a3a30"/><ellipse cx="71.4" cy="58.6" rx="2.7" ry="2.7" fill="#5a3028"/><ellipse cx="65.9" cy="44.1" rx="3.2" ry="2.8" fill="#d8d0c8"/><ellipse cx="55.9" cy="53.8" rx="1.9" ry="2.7" fill="#4a3a30"/><ellipse cx="90.7" cy="53.4" rx="3.8" ry="2.9" fill="#1c1614"/><ellipse cx="70.8" cy="36.2" rx="3.6" ry="2.2" fill="#1c1614"/><ellipse cx="60.1" cy="58.7" rx="2.8" ry="2.0" fill="#2a201c"/><ellipse cx="78.4" cy="55.4" rx="2.3" ry="1.8" fill="#d8d0c8"/><ellipse cx="79.4" cy="49.3" rx="2.1" ry="1.8" fill="#5a3028"/><ellipse cx="82.6" cy="46.7" rx="2.1" ry="2.0" fill="#d8d0c8"/><ellipse cx="75.2" cy="38.5" rx="2.8" ry="2.9" fill="#d8d0c8"/><ellipse cx="82.5" cy="54.4" rx="2.7" ry="3.2" fill="#2a201c"/><ellipse cx="94.6" cy="41.6" rx="3.5" ry="1.7" fill="#4a3a30"/><ellipse cx="45.9" cy="42.9" rx="3.6" ry="2.4" fill="#2a201c"/><ellipse cx="83.7" cy="46.5" rx="2.2" ry="2.2" fill="#5a3028"/><ellipse cx="70.9" cy="39.0" rx="3.8" ry="2.1" fill="#2a201c"/><ellipse cx="59.4" cy="34.1" rx="2.6" ry="2.9" fill="#2a201c"/><ellipse cx="83.8" cy="40.4" rx="2.7" ry="2.1" fill="#5a3028"/><ellipse cx="68.2" cy="38.1" rx="2.7" ry="3.1" fill="#4a3a30"/><ellipse cx="72.1" cy="34.6" rx="3.9" ry="2.0" fill="#1c1614"/><ellipse cx="84.1" cy="32.9" rx="3.2" ry="2.6" fill="#4a3a30"/><ellipse cx="67.2" cy="37.2" rx="1.9" ry="2.0" fill="#2a201c"/><ellipse cx="86.8" cy="55.5" rx="3.9" ry="2.0" fill="#1c1614"/><ellipse cx="73.0" cy="42.1" rx="2.5" ry="2.6" fill="#2a201c"/><ellipse cx="53.5" cy="42.0" rx="2.2" ry="2.2" fill="#2a201c"/><ellipse cx="79.9" cy="39.7" rx="3.5" ry="2.8" fill="#5a3028"/><ellipse cx="61.7" cy="42.3" rx="3.9" ry="1.9" fill="#4a3a30"/><ellipse cx="44.9" cy="47.8" rx="3.8" ry="2.0" fill="#d8d0c8"/><ellipse cx="86.4" cy="38.1" rx="2.1" ry="1.7" fill="#3a2c26"/><ellipse cx="71.3" cy="51.3" rx="3.0" ry="3.2" fill="#5a3028"/><ellipse cx="94.0" cy="42.3" rx="3.8" ry="2.9" fill="#d8d0c8"/><ellipse cx="65.0" cy="35.4" rx="1.9" ry="1.8" fill="#4a3a30"/><ellipse cx="49.5" cy="44.9" rx="2.0" ry="2.2" fill="#3a2c26"/><ellipse cx="72.0" cy="39.9" rx="2.8" ry="2.8" fill="#4a3a30"/><ellipse cx="74.4" cy="39.4" rx="1.9" ry="2.3" fill="#2a201c"/><ellipse cx="78.4" cy="40.4" rx="3.4" ry="3.0" fill="#3a2c26"/><ellipse cx="15.8" cy="48.0" rx="1.1" ry="1.4" fill="#4a4440"/><ellipse cx="22.2" cy="46.2" rx="1.1" ry="1.4" fill="#4a4440"/><ellipse cx="28.7" cy="43.9" rx="1.1" ry="1.4" fill="#4a4440"/><ellipse cx="35.1" cy="40.4" rx="1.1" ry="1.4" fill="#4a4440"/><ellipse cx="39.2" cy="48.0" rx="1.1" ry="1.4" fill="#4a4440"/><ellipse cx="90.7" cy="21.1" rx="1.1" ry="1.4" fill="#4a4440"/><ellipse cx="99.5" cy="25.7" rx="1.1" ry="1.4" fill="#4a4440"/><ellipse cx="101.8" cy="33.9" rx="1.1" ry="1.4" fill="#4a4440"/><ellipse cx="96.0" cy="30.4" rx="1.1" ry="1.4" fill="#4a4440"/><ellipse cx="36.5" cy="67.3" rx="7.3" ry="8.8" fill="#6a6860"/><ellipse cx="36.5" cy="67.3" rx="4.4" ry="5.6" fill="#4a4a40"/><ellipse cx="72.6" cy="73.7" rx="7.0" ry="10.5" fill="#8a8a88"/><ellipse cx="72.6" cy="73.7" rx="2.9" ry="4.7" fill="#5a5a58"/><ellipse cx="95.4" cy="67.3" rx="6.4" ry="7.6" fill="#7a7a70"/><ellipse cx="58.5" cy="63.2" rx="7.0" ry="5.9" fill="#c8c8c4"/><polygon points="0.0,65.5 29.3,63.2 30.4,80.7 0.0,81.9" fill="#3a2e2a"/><ellipse cx="7.0" cy="65.5" rx="7.0" ry="2.9" fill="#5a5248"/><ellipse cx="84.3" cy="88.9" rx="11.7" ry="5.6" fill="#e8e6e0"/><ellipse cx="45.6" cy="87.8" rx="9.4" ry="4.7" fill="#b8b4a8"/><ellipse cx="103.0" cy="86.0" rx="5.9" ry="3.5" fill="#dcdcd4"/><ellipse cx="15.2" cy="87.2" rx="15.2" ry="4.1" fill="#7a8470"/><ellipse cx="103.0" cy="73.7" rx="5.9" ry="3.5" fill="#a83838"/><ellipse cx="63.2" cy="88.9" rx="7.0" ry="3.5" fill="#6a5040"/><polygon points="0.0,92.5 110.0,91.3 110.0,95.4 0.0,95.4" fill="#4e6030"/></g></g><g clip-path="url(#ac2)"><rect x="113.500" width="96.500" height="103.700" fill="url(#a2)"/><g filter="url(#ab)"><polygon points="113.3,14.0 119.2,7.0 125.0,0.9 129.7,8.2 140.2,12.9 159.0,23.4 184.7,31.0 209.9,21.1 209.9,39.8 113.3,39.8" fill="#a9b4c0"/><polygon points="116.8,17.6 125.0,3.5 130.9,11.1 148.4,19.9 164.8,25.2 184.7,30.7 175.3,31.0 154.3,26.9 139.1,21.1 127.4,16.4 120.3,22.2" fill="#f4f6f8"/><polygon points="164.8,21.1 175.3,20.5 184.7,30.7 173.0,28.1" fill="#fbfbfc"/><polygon points="184.7,23.4 198.7,20.5 209.9,22.8 209.9,27.5 191.7,29.3" fill="#cfd6e0"/><polygon points="113.3,29.3 159.0,33.9 159.0,40.4 113.3,40.4" fill="#8e9aa6"/><polygon points="113.3,39.8 150.2,39.8 160.1,46.8 174.8,56.2 170.7,62.6 156.6,70.2 125.0,74.9 113.3,84.8" fill="#2668b8"/><polygon points="113.3,41.0 148.4,41.0 156.6,49.2 139.1,55.0 123.8,70.2 113.3,65.5" fill="#7f9ec8" opacity=".75"/><polygon points="130.9,49.2 148.4,44.5 159.0,50.3 139.1,55.0" fill="#dfe6f0" opacity=".8"/><polygon points="113.3,65.5 128.5,60.9 125.0,74.9 113.3,84.8" fill="#1d4c98"/><polygon points="149.6,40.4 164.8,43.3 185.9,49.2 184.7,55.0 173.6,56.2 160.1,46.8" fill="#2a4622"/><polygon points="142.6,38.6 209.9,27.2 209.9,103.6 113.3,103.6 113.3,84.8 125.0,74.9 156.6,70.2 170.7,62.6 180.0,55.0 185.9,49.2 164.8,43.3" fill="#9a8c72"/><polygon points="113.3,84.8 125.0,74.9 156.6,70.2 157.2,103.6 113.3,103.6" fill="#365630"/><polygon points="169.5,86.6 180.0,74.9 190.5,77.2 191.7,103.6 168.3,103.6" fill="#2e4a2c"/><polygon points="201.1,81.9 209.9,72.6 209.9,103.6 199.9,103.6" fill="#2a3c28"/><polygon points="182.4,76.1 189.4,74.9 191.7,93.6 184.7,88.9" fill="#1a1a16"/><ellipse cx="184.5" cy="77.7" rx="1.4" ry="2.0" fill="#6a5a44"/><ellipse cx="199.7" cy="50.6" rx="1.5" ry="1.6" fill="#b09878"/><ellipse cx="158.9" cy="87.7" rx="1.4" ry="2.5" fill="#c8b494"/><ellipse cx="198.9" cy="43.0" rx="1.3" ry="2.5" fill="#b88878"/><ellipse cx="194.4" cy="74.5" rx="1.1" ry="1.9" fill="#c8a060"/><ellipse cx="172.9" cy="48.8" rx="1.1" ry="2.3" fill="#b88878"/><ellipse cx="198.5" cy="51.9" rx="1.6" ry="1.7" fill="#b09878"/><ellipse cx="179.4" cy="93.9" rx="1.6" ry="1.8" fill="#dccab0"/><ellipse cx="180.9" cy="80.7" rx="1.5" ry="1.9" fill="#4a3c2c"/><ellipse cx="176.7" cy="65.8" rx="1.6" ry="2.5" fill="#6a5a44"/><ellipse cx="199.6" cy="96.4" rx="1.4" ry="1.7" fill="#b88878"/><ellipse cx="164.1" cy="76.5" rx="1.4" ry="1.7" fill="#dccab0"/><ellipse cx="208.4" cy="93.1" rx="1.5" ry="2.4" fill="#b09878"/><ellipse cx="196.8" cy="46.7" rx="1.0" ry="3.1" fill="#6a5a44"/><ellipse cx="205.0" cy="77.9" rx="1.3" ry="2.9" fill="#dccab0"/><ellipse cx="184.9" cy="38.8" rx="1.3" ry="1.7" fill="#c8b494"/><ellipse cx="190.4" cy="94.9" rx="1.3" ry="2.4" fill="#4a3c2c"/><ellipse cx="200.7" cy="78.2" rx="1.3" ry="2.9" fill="#c8a060"/><ellipse cx="186.7" cy="53.4" rx="1.4" ry="2.4" fill="#dccab0"/><ellipse cx="196.2" cy="76.3" rx="1.6" ry="2.1" fill="#c8a060"/><ellipse cx="166.1" cy="69.7" rx="1.6" ry="1.9" fill="#c8a060"/><ellipse cx="166.4" cy="90.8" rx="1.3" ry="2.6" fill="#b09878"/><ellipse cx="169.7" cy="49.1" rx="1.5" ry="2.7" fill="#c8a060"/><ellipse cx="204.6" cy="91.9" rx="1.3" ry="1.7" fill="#4a3c2c"/><ellipse cx="197.1" cy="67.2" rx="1.5" ry="2.7" fill="#c8a060"/><ellipse cx="179.3" cy="60.9" rx="1.4" ry="2.7" fill="#b09878"/><ellipse cx="189.1" cy="43.5" rx="1.1" ry="2.8" fill="#dccab0"/><ellipse cx="178.6" cy="95.1" rx="1.4" ry="2.1" fill="#c8a060"/><ellipse cx="189.8" cy="92.6" rx="1.3" ry="2.6" fill="#6a5a44"/><ellipse cx="192.4" cy="99.8" rx="1.1" ry="1.9" fill="#b09878"/><ellipse cx="191.1" cy="96.2" rx="1.1" ry="2.6" fill="#b09878"/><ellipse cx="187.9" cy="82.8" rx="1.4" ry="1.8" fill="#c8b494"/><ellipse cx="201.3" cy="65.3" rx="1.5" ry="2.6" fill="#6a5a44"/><ellipse cx="207.2" cy="57.8" rx="1.1" ry="2.9" fill="#6a5a44"/><ellipse cx="164.3" cy="98.4" rx="1.2" ry="2.7" fill="#6a5a44"/><ellipse cx="177.9" cy="100.3" rx="1.2" ry="2.7" fill="#6a5a44"/><ellipse cx="190.5" cy="90.6" rx="1.0" ry="3.2" fill="#c8b494"/><ellipse cx="191.0" cy="70.3" rx="1.5" ry="2.4" fill="#c8b494"/><ellipse cx="199.4" cy="96.8" rx="1.0" ry="2.9" fill="#4a3c2c"/><ellipse cx="186.9" cy="41.1" rx="1.3" ry="1.8" fill="#b88878"/><ellipse cx="191.2" cy="89.6" rx="1.5" ry="3.1" fill="#b88878"/><ellipse cx="159.6" cy="48.1" rx="1.6" ry="2.9" fill="#c8a060"/><ellipse cx="193.9" cy="49.7" rx="1.3" ry="2.1" fill="#b88878"/><ellipse cx="186.1" cy="47.3" rx="1.6" ry="2.8" fill="#dccab0"/><ellipse cx="206.4" cy="96.1" rx="1.1" ry="2.2" fill="#b88878"/><ellipse cx="171.6" cy="90.2" rx="1.4" ry="1.7" fill="#c8a060"/><ellipse cx="191.6" cy="96.3" rx="1.6" ry="2.4" fill="#b88878"/><ellipse cx="201.0" cy="61.1" rx="1.2" ry="2.5" fill="#c8b494"/><ellipse cx="197.8" cy="40.6" rx="1.3" ry="3.2" fill="#6a5a44"/><ellipse cx="176.2" cy="59.8" rx="1.3" ry="3.2" fill="#dccab0"/><ellipse cx="182.5" cy="96.0" rx="1.5" ry="1.9" fill="#b88878"/><ellipse cx="189.1" cy="99.1" rx="1.4" ry="3.2" fill="#6a5a44"/><ellipse cx="178.5" cy="46.9" rx="1.1" ry="2.0" fill="#6a5a44"/><ellipse cx="190.8" cy="45.1" rx="1.2" ry="2.3" fill="#c8a060"/><ellipse cx="195.3" cy="71.6" rx="1.6" ry="2.1" fill="#c8b494"/><ellipse cx="200.1" cy="96.9" rx="1.6" ry="2.9" fill="#c8b494"/></g></g><g clip-path="url(#ac3)"><rect y="100.700" width="109" height="109.300" fill="#e6d89c"/><g filter="url(#ab)"><polygon points="0.0,100.0 108.3,100.0 81.9,109.9 56.2,125.7 0.0,123.4" fill="#efe6ba"/><ellipse cx="29.3" cy="112.9" rx="11.1" ry="7.0" fill="#fffdf0"/><polygon points="0.0,123.4 56.2,125.7 56.2,156.2 0.0,155.0" fill="#e2d290"/><polygon points="18.7,135.1 39.8,135.1 39.8,149.7 18.7,149.7" fill="#fffef6"/><polygon points="50.3,135.1 58.5,133.9 58.5,145.6 50.3,146.2" fill="#f6eecc"/><polygon points="0.0,135.1 14.0,135.1 14.0,149.2 0.0,149.2" fill="#eadc9c"/><polygon points="15.0,133.9 18.7,133.9 18.7,146.8 15.0,146.8" fill="#6a5a30"/><polygon points="40.4,135.1 43.1,135.1 43.1,146.8 40.4,146.8" fill="#8a7a48"/><polygon points="59.7,133.9 69.0,132.8 69.0,145.6 59.7,146.2" fill="#d8c478"/><polygon points="56.2,125.7 81.9,109.9 108.3,100.0 108.3,192.5 74.9,192.5 55.0,168.5" fill="#e0ce8c"/><polygon points="84.3,149.2 108.3,144.5 108.3,192.5 81.9,192.5" fill="#d4bc74"/><polygon points="81.9,142.4 93.3,141.0 91.3,162.0 81.9,159.7" fill="#2c3a30"/><polygon points="71.4,129.3 76.1,128.7 76.1,137.4 71.4,137.7" fill="#4a3c28"/><polygon points="0.0,155.0 46.8,155.0 46.8,169.0 0.0,170.2" fill="#bcb870"/><polygon points="0.0,153.2 46.8,153.2 46.8,156.2 0.0,157.3" fill="#8a7840"/><polygon points="19.9,169.0 49.7,167.6 74.9,192.5 0.0,192.5 0.0,184.3 18.7,181.9" fill="#6e5628"/><polygon points="0.0,158.5 17.6,158.5 18.7,181.9 0.0,184.8" fill="#d0cc90"/><polygon points="48.0,156.2 55.0,157.6 55.0,176.7 48.0,170.2" fill="#2a241c"/><polygon points="60.9,152.1 71.4,151.5 71.4,158.5 60.9,159.1" fill="#3a3428"/></g><path d="M0 102.6L81.9 109.9Q84.5 110.5 83.7 113.5L76.1 155.0" fill="none" stroke="#5e4c2c" stroke-width="1.300"/><path d="M0 180.7C11.7 190.1 25.7 193.6 35.1 185.4S52.7 180.7 60.9 193.6M0.0 190.1C7.0 192.5 14.0 190.1 17.6 186.6" fill="none" stroke="#e6d8a8" stroke-width="2.200"/><path d="M56.2 174.9L71.4 157.3M58.5 181.9L74.9 165.5M55.0 165.5L74.9 181.9M70.2 156.2V184.3" fill="none" stroke="#e2d4a0" stroke-width="1.400"/></g><g clip-path="url(#ac4)"><rect x="113.500" y="108.900" width="96.500" height="101.100" fill="#8b918f"/><g filter="url(#ab)"><ellipse cx="175.3" cy="145.1" rx="45.1" ry="45.1" fill="#d3e3ec"/><ellipse cx="164.8" cy="135.1" rx="23.4" ry="23.4" fill="#e6f0f5" opacity=".8"/><polygon points="113.3,161.4 209.9,161.4 209.9,210.0 113.3,210.0" fill="#8a8c88"/><polygon points="132.0,162.6 148.4,159.1 156.6,145.1 168.3,138.6 166.0,134.2 180.0,129.8 181.2,119.9 187.0,113.5 198.7,111.7 204.6,118.7 209.9,122.2 209.9,165.5 132.0,165.5" fill="#6f7371"/><polygon points="113.3,170.2 144.9,165.5 125.0,192.5 113.3,193.6" fill="#6e716d"/></g><rect x="113.3" y="108.8" width="17.6" height="51.1" fill="#0a0a0a"/><g filter="url(#ab)"><polygon points="191.7,134.5 202.3,146.8 209.9,160.9 209.9,193.6 125.0,192.5 144.9,176.1 166.0,157.3 180.0,144.5" fill="#8c7c70"/><ellipse cx="173.4" cy="171.9" rx="1.9" ry="1.2" fill="#f0f0e8"/><ellipse cx="199.7" cy="166.0" rx="1.6" ry="1.7" fill="#786858"/><ellipse cx="183.3" cy="162.9" rx="1.4" ry="1.5" fill="#c83838"/><ellipse cx="176.6" cy="178.0" rx="1.5" ry="1.6" fill="#f4f4f4"/><ellipse cx="172.2" cy="174.8" rx="1.2" ry="1.0" fill="#1a1a1a"/><ellipse cx="209.5" cy="193.1" rx="1.1" ry="1.2" fill="#f0f0e8"/><ellipse cx="199.1" cy="178.7" rx="1.6" ry="1.0" fill="#3858a8"/><ellipse cx="154.6" cy="185.8" rx="1.8" ry="1.3" fill="#786858"/><ellipse cx="170.7" cy="180.9" rx="1.4" ry="1.0" fill="#a87848"/><ellipse cx="157.2" cy="179.3" rx="1.4" ry="1.5" fill="#e8c838"/><ellipse cx="200.4" cy="176.0" rx="1.2" ry="1.3" fill="#786858"/><ellipse cx="166.0" cy="175.4" rx="2.0" ry="1.7" fill="#1a1a1a"/><ellipse cx="199.4" cy="191.4" rx="1.6" ry="1.0" fill="#48a858"/><ellipse cx="152.0" cy="191.1" rx="1.2" ry="1.7" fill="#2a2a2a"/><ellipse cx="152.1" cy="190.8" rx="2.0" ry="1.1" fill="#2a2a2a"/><ellipse cx="207.0" cy="183.7" rx="1.5" ry="1.6" fill="#f0f0e8"/><ellipse cx="198.7" cy="178.9" rx="1.7" ry="1.4" fill="#2a2a2a"/><ellipse cx="178.0" cy="177.1" rx="1.3" ry="1.0" fill="#1a1a1a"/><ellipse cx="135.0" cy="185.5" rx="1.3" ry="1.4" fill="#c83838"/><ellipse cx="203.6" cy="180.1" rx="1.7" ry="1.8" fill="#f0f0e8"/><ellipse cx="156.5" cy="185.3" rx="1.2" ry="1.0" fill="#c83838"/><ellipse cx="194.1" cy="142.7" rx="1.1" ry="1.0" fill="#88b8d8"/><ellipse cx="182.4" cy="154.3" rx="1.1" ry="1.7" fill="#a87848"/><ellipse cx="198.6" cy="191.7" rx="1.8" ry="1.6" fill="#e8e0d0"/><ellipse cx="193.3" cy="163.9" rx="1.4" ry="1.2" fill="#d86898"/><ellipse cx="192.9" cy="166.7" rx="1.5" ry="1.5" fill="#e8c838"/><ellipse cx="187.5" cy="148.6" rx="1.7" ry="1.6" fill="#a87848"/><ellipse cx="148.9" cy="177.4" rx="1.3" ry="1.0" fill="#3858a8"/><ellipse cx="140.9" cy="190.5" rx="1.5" ry="1.1" fill="#48a858"/><ellipse cx="192.4" cy="165.0" rx="1.9" ry="1.3" fill="#88b8d8"/><ellipse cx="199.9" cy="159.9" rx="1.9" ry="1.2" fill="#2a2a2a"/><ellipse cx="161.9" cy="169.2" rx="1.8" ry="1.2" fill="#a87848"/><ellipse cx="189.3" cy="140.3" rx="1.2" ry="1.4" fill="#3858a8"/><ellipse cx="202.9" cy="168.2" rx="1.1" ry="1.7" fill="#c83838"/><ellipse cx="201.3" cy="165.9" rx="1.5" ry="1.4" fill="#88b8d8"/><ellipse cx="207.0" cy="160.6" rx="1.3" ry="1.6" fill="#3858a8"/><ellipse cx="170.8" cy="166.7" rx="1.4" ry="1.3" fill="#f0f0e8"/><ellipse cx="150.9" cy="185.3" rx="1.4" ry="1.6" fill="#1a1a1a"/><ellipse cx="199.3" cy="182.1" rx="1.3" ry="1.3" fill="#e8c838"/><ellipse cx="183.7" cy="146.2" rx="1.5" ry="1.1" fill="#2a2a2a"/><ellipse cx="148.8" cy="183.2" rx="1.7" ry="1.4" fill="#786858"/><ellipse cx="152.9" cy="172.9" rx="1.4" ry="1.2" fill="#c83838"/><ellipse cx="142.5" cy="184.7" rx="1.4" ry="1.6" fill="#d86898"/><ellipse cx="151.9" cy="187.9" rx="1.5" ry="1.4" fill="#f4f4f4"/><ellipse cx="193.0" cy="155.3" rx="2.1" ry="1.4" fill="#d86898"/><ellipse cx="171.7" cy="178.2" rx="1.8" ry="1.1" fill="#1a1a1a"/><ellipse cx="206.6" cy="176.8" rx="1.2" ry="1.1" fill="#88b8d8"/><ellipse cx="193.1" cy="155.3" rx="1.8" ry="1.2" fill="#f0f0e8"/><ellipse cx="175.0" cy="152.9" rx="1.7" ry="1.0" fill="#d86898"/><ellipse cx="187.1" cy="185.1" rx="1.2" ry="1.1" fill="#a87848"/><ellipse cx="180.8" cy="158.9" rx="1.2" ry="1.4" fill="#1a1a1a"/><ellipse cx="175.3" cy="159.9" rx="2.0" ry="1.5" fill="#a87848"/><ellipse cx="153.6" cy="177.3" rx="2.1" ry="1.2" fill="#88b8d8"/><ellipse cx="186.4" cy="144.7" rx="1.3" ry="1.5" fill="#c83838"/><ellipse cx="201.7" cy="169.6" rx="1.6" ry="1.3" fill="#e8e0d0"/><ellipse cx="193.1" cy="156.1" rx="1.9" ry="1.7" fill="#e8c838"/><ellipse cx="202.2" cy="175.4" rx="1.6" ry="1.2" fill="#f0f0e8"/><ellipse cx="152.2" cy="183.6" rx="1.8" ry="1.4" fill="#f0f0e8"/><ellipse cx="171.8" cy="183.7" rx="1.3" ry="1.6" fill="#e8e0d0"/><ellipse cx="194.3" cy="143.6" rx="1.3" ry="1.6" fill="#c83838"/><ellipse cx="209.1" cy="173.0" rx="1.5" ry="1.6" fill="#2a2a2a"/><ellipse cx="130.3" cy="190.5" rx="1.7" ry="1.5" fill="#e8e0d0"/><ellipse cx="200.2" cy="147.7" rx="1.2" ry="1.2" fill="#3858a8"/><ellipse cx="186.2" cy="184.9" rx="1.7" ry="1.3" fill="#88b8d8"/><ellipse cx="191.4" cy="163.7" rx="1.1" ry="1.3" fill="#88b8d8"/><ellipse cx="175.5" cy="184.9" rx="1.6" ry="1.3" fill="#3858a8"/><ellipse cx="184.6" cy="182.9" rx="2.0" ry="1.6" fill="#d86898"/><ellipse cx="180.4" cy="152.8" rx="1.1" ry="1.6" fill="#e8c838"/><ellipse cx="172.4" cy="183.1" rx="1.7" ry="1.6" fill="#786858"/><ellipse cx="194.3" cy="181.3" rx="2.1" ry="1.0" fill="#f0f0e8"/><ellipse cx="158.4" cy="169.5" rx="1.4" ry="1.4" fill="#786858"/><ellipse cx="161.2" cy="188.7" rx="2.0" ry="0.9" fill="#e8e0d0"/><ellipse cx="207.9" cy="189.4" rx="1.7" ry="1.0" fill="#f4f4f4"/><ellipse cx="190.7" cy="160.6" rx="1.4" ry="1.7" fill="#e8e0d0"/><ellipse cx="189.1" cy="188.9" rx="1.4" ry="1.1" fill="#3858a8"/><ellipse cx="161.5" cy="193.1" rx="1.2" ry="1.6" fill="#2a2a2a"/><ellipse cx="200.9" cy="190.3" rx="1.9" ry="1.2" fill="#c83838"/><ellipse cx="191.6" cy="169.1" rx="1.8" ry="1.0" fill="#a87848"/><ellipse cx="188.5" cy="140.2" rx="1.4" ry="1.5" fill="#e8e0d0"/><ellipse cx="163.6" cy="161.7" rx="2.1" ry="1.7" fill="#e8e0d0"/><ellipse cx="193.9" cy="177.8" rx="1.8" ry="1.3" fill="#f0f0e8"/><ellipse cx="164.5" cy="180.5" rx="1.5" ry="1.3" fill="#2a2a2a"/><ellipse cx="191.6" cy="167.7" rx="2.0" ry="1.7" fill="#2a2a2a"/><ellipse cx="174.2" cy="175.0" rx="2.0" ry="1.2" fill="#d86898"/><ellipse cx="184.6" cy="157.2" rx="1.6" ry="1.2" fill="#f0f0e8"/><ellipse cx="153.3" cy="192.6" rx="1.5" ry="1.4" fill="#e8e0d0"/><ellipse cx="147.3" cy="184.0" rx="1.4" ry="1.7" fill="#1a1a1a"/><ellipse cx="191.4" cy="146.1" rx="1.1" ry="1.2" fill="#c83838"/><ellipse cx="158.6" cy="179.8" rx="1.1" ry="1.2" fill="#f0f0e8"/><ellipse cx="198.5" cy="193.1" rx="2.0" ry="1.0" fill="#2a2a2a"/><ellipse cx="161.3" cy="169.4" rx="1.6" ry="1.7" fill="#3858a8"/><ellipse cx="178.3" cy="179.4" rx="1.8" ry="1.5" fill="#e8e0d0"/><ellipse cx="197.2" cy="186.0" rx="1.3" ry="1.5" fill="#e8c838"/><ellipse cx="153.5" cy="170.1" rx="1.9" ry="1.3" fill="#2a2a2a"/><ellipse cx="181.8" cy="166.0" rx="1.3" ry="1.5" fill="#1a1a1a"/><ellipse cx="164.5" cy="188.3" rx="1.3" ry="1.1" fill="#88b8d8"/><ellipse cx="207.0" cy="163.0" rx="2.0" ry="1.4" fill="#f0f0e8"/><ellipse cx="188.4" cy="175.4" rx="1.8" ry="1.0" fill="#88b8d8"/><ellipse cx="192.5" cy="176.1" rx="1.4" ry="1.2" fill="#786858"/><ellipse cx="201.8" cy="180.4" rx="1.2" ry="1.7" fill="#d86898"/><ellipse cx="163.8" cy="190.9" rx="1.7" ry="1.6" fill="#c83838"/><ellipse cx="197.9" cy="161.7" rx="1.2" ry="1.3" fill="#e8c838"/><ellipse cx="161.1" cy="183.1" rx="1.2" ry="1.3" fill="#f4f4f4"/><ellipse cx="163.2" cy="183.4" rx="1.4" ry="1.7" fill="#3858a8"/><ellipse cx="198.6" cy="185.0" rx="2.0" ry="1.3" fill="#e8e0d0"/><ellipse cx="194.9" cy="179.8" rx="1.8" ry="1.4" fill="#48a858"/><ellipse cx="144.0" cy="188.3" rx="1.9" ry="1.1" fill="#a87848"/><ellipse cx="166.9" cy="193.5" rx="1.4" ry="1.0" fill="#2a2a2a"/><ellipse cx="197.9" cy="158.2" rx="1.8" ry="1.1" fill="#3858a8"/><ellipse cx="150.7" cy="180.2" rx="1.4" ry="1.2" fill="#f4f4f4"/><ellipse cx="197.5" cy="161.1" rx="1.8" ry="1.5" fill="#2a2a2a"/><ellipse cx="187.4" cy="183.3" rx="1.4" ry="1.5" fill="#48a858"/><ellipse cx="201.5" cy="182.1" rx="1.6" ry="1.4" fill="#e8c838"/><ellipse cx="159.7" cy="187.5" rx="2.1" ry="1.6" fill="#c83838"/><ellipse cx="161.7" cy="180.2" rx="2.0" ry="1.3" fill="#2a2a2a"/><ellipse cx="155.6" cy="182.3" rx="1.5" ry="1.4" fill="#a87848"/><ellipse cx="158.1" cy="167.6" rx="1.9" ry="1.7" fill="#d86898"/><ellipse cx="150.8" cy="173.0" rx="1.6" ry="1.5" fill="#786858"/><ellipse cx="167.5" cy="186.7" rx="1.5" ry="1.2" fill="#e8c838"/><ellipse cx="180.1" cy="187.6" rx="1.2" ry="1.2" fill="#d86898"/><ellipse cx="188.0" cy="141.9" rx="1.6" ry="1.1" fill="#e8e0d0"/><ellipse cx="195.3" cy="181.7" rx="1.6" ry="1.0" fill="#2a2a2a"/><ellipse cx="173.8" cy="181.6" rx="1.8" ry="1.5" fill="#2a2a2a"/><ellipse cx="192.9" cy="174.1" rx="1.9" ry="1.4" fill="#d86898"/><ellipse cx="147.8" cy="177.4" rx="2.1" ry="1.4" fill="#e8c838"/><ellipse cx="195.1" cy="161.4" rx="1.2" ry="1.7" fill="#786858"/><ellipse cx="187.6" cy="145.2" rx="1.7" ry="1.1" fill="#f4f4f4"/><ellipse cx="200.2" cy="174.8" rx="2.0" ry="1.2" fill="#1a1a1a"/><ellipse cx="174.7" cy="174.8" rx="1.4" ry="1.1" fill="#786858"/><ellipse cx="202.3" cy="189.4" rx="1.9" ry="1.0" fill="#f0f0e8"/><ellipse cx="172.9" cy="161.9" rx="1.4" ry="1.0" fill="#1a1a1a"/><ellipse cx="158.6" cy="168.6" rx="1.6" ry="1.2" fill="#a87848"/><ellipse cx="208.1" cy="164.7" rx="1.2" ry="1.0" fill="#e8e0d0"/><ellipse cx="163.6" cy="168.8" rx="1.6" ry="1.4" fill="#f4f4f4"/><ellipse cx="154.4" cy="182.2" rx="1.6" ry="1.2" fill="#88b8d8"/><ellipse cx="180.0" cy="174.9" rx="1.1" ry="1.2" fill="#1a1a1a"/><ellipse cx="178.3" cy="153.4" rx="1.5" ry="1.7" fill="#88b8d8"/><ellipse cx="149.1" cy="175.8" rx="1.7" ry="1.6" fill="#f4f4f4"/><ellipse cx="147.1" cy="189.2" rx="1.3" ry="1.1" fill="#f4f4f4"/><ellipse cx="184.3" cy="179.6" rx="1.6" ry="1.3" fill="#c83838"/><ellipse cx="177.2" cy="182.4" rx="1.7" ry="1.2" fill="#e8e0d0"/><ellipse cx="147.5" cy="188.7" rx="1.9" ry="1.5" fill="#e8e0d0"/><ellipse cx="194.6" cy="143.9" rx="1.3" ry="1.1" fill="#c83838"/><ellipse cx="166.6" cy="187.7" rx="1.4" ry="1.0" fill="#88b8d8"/><ellipse cx="154.9" cy="185.3" rx="1.2" ry="1.3" fill="#c83838"/><ellipse cx="191.4" cy="145.2" rx="1.6" ry="1.5" fill="#3858a8"/><ellipse cx="194.9" cy="140.9" rx="1.4" ry="1.0" fill="#f0f0e8"/><ellipse cx="184.2" cy="170.2" rx="1.9" ry="1.2" fill="#f0f0e8"/><ellipse cx="137.7" cy="190.9" rx="1.7" ry="1.7" fill="#d86898"/><ellipse cx="186.9" cy="174.5" rx="1.1" ry="1.1" fill="#e8c838"/><ellipse cx="169.3" cy="184.5" rx="1.9" ry="1.7" fill="#f4f4f4"/><ellipse cx="197.1" cy="151.2" rx="2.0" ry="1.0" fill="#1a1a1a"/><ellipse cx="137.5" cy="187.4" rx="1.6" ry="1.1" fill="#88b8d8"/><ellipse cx="203.8" cy="175.6" rx="1.7" ry="1.2" fill="#e8c838"/><ellipse cx="163.0" cy="190.8" rx="1.8" ry="0.9" fill="#f0f0e8"/><ellipse cx="184.8" cy="190.6" rx="1.8" ry="1.3" fill="#a87848"/><ellipse cx="192.6" cy="181.5" rx="1.7" ry="1.2" fill="#1a1a1a"/><ellipse cx="189.9" cy="148.4" rx="1.5" ry="1.1" fill="#88b8d8"/><ellipse cx="158.2" cy="180.1" rx="1.1" ry="1.4" fill="#d86898"/><ellipse cx="137.9" cy="186.3" rx="1.3" ry="1.5" fill="#f0f0e8"/><ellipse cx="134.5" cy="187.6" rx="1.8" ry="1.6" fill="#f0f0e8"/><ellipse cx="186.2" cy="148.0" rx="1.1" ry="1.4" fill="#786858"/><ellipse cx="145.8" cy="182.0" rx="1.6" ry="1.2" fill="#f0f0e8"/><ellipse cx="189.9" cy="160.2" rx="1.5" ry="1.5" fill="#786858"/><ellipse cx="207.4" cy="174.1" rx="1.9" ry="1.2" fill="#a87848"/><ellipse cx="168.3" cy="191.0" rx="1.1" ry="1.1" fill="#48a858"/><ellipse cx="147.7" cy="189.3" rx="1.1" ry="1.2" fill="#c83838"/><ellipse cx="174.5" cy="154.8" rx="1.2" ry="1.3" fill="#88b8d8"/><ellipse cx="164.4" cy="170.4" rx="1.8" ry="1.1" fill="#c83838"/><ellipse cx="178.6" cy="191.0" rx="1.4" ry="1.1" fill="#48a858"/><ellipse cx="203.5" cy="152.2" rx="1.8" ry="1.5" fill="#a87848"/><ellipse cx="157.0" cy="180.9" rx="2.0" ry="1.7" fill="#786858"/><ellipse cx="208.9" cy="159.8" rx="2.1" ry="1.7" fill="#f4f4f4"/><ellipse cx="178.2" cy="171.8" rx="1.4" ry="1.6" fill="#e8c838"/><ellipse cx="184.7" cy="186.1" rx="1.2" ry="1.3" fill="#48a858"/><ellipse cx="173.6" cy="182.5" rx="1.4" ry="1.5" fill="#48a858"/><ellipse cx="180.3" cy="149.3" rx="1.4" ry="1.0" fill="#a87848"/><ellipse cx="166.7" cy="191.1" rx="1.9" ry="1.7" fill="#c83838"/><ellipse cx="166.7" cy="180.7" rx="2.0" ry="1.4" fill="#1a1a1a"/><ellipse cx="196.1" cy="186.9" rx="1.5" ry="1.0" fill="#1a1a1a"/><ellipse cx="157.2" cy="173.0" rx="1.7" ry="1.4" fill="#e8e0d0"/><ellipse cx="134.3" cy="190.4" rx="1.4" ry="1.4" fill="#e8e0d0"/><ellipse cx="169.0" cy="161.3" rx="2.0" ry="1.3" fill="#3858a8"/><ellipse cx="142.0" cy="184.7" rx="1.8" ry="1.6" fill="#a87848"/><ellipse cx="172.8" cy="155.3" rx="1.3" ry="1.1" fill="#48a858"/><ellipse cx="182.2" cy="159.5" rx="1.6" ry="1.0" fill="#d86898"/><ellipse cx="159.2" cy="185.1" rx="2.1" ry="1.6" fill="#f4f4f4"/><ellipse cx="203.7" cy="169.3" rx="1.5" ry="1.6" fill="#2a2a2a"/><ellipse cx="195.8" cy="186.1" rx="1.3" ry="1.6" fill="#e8c838"/><ellipse cx="195.7" cy="185.0" rx="1.1" ry="1.2" fill="#48a858"/><ellipse cx="191.6" cy="139.9" rx="1.7" ry="1.2" fill="#48a858"/><ellipse cx="208.6" cy="160.5" rx="1.6" ry="1.1" fill="#48a858"/><ellipse cx="137.5" cy="192.9" rx="1.1" ry="1.3" fill="#1a1a1a"/><ellipse cx="168.4" cy="191.9" rx="1.6" ry="1.0" fill="#f0f0e8"/><ellipse cx="209.2" cy="166.2" rx="1.7" ry="1.6" fill="#48a858"/><ellipse cx="196.3" cy="184.5" rx="1.7" ry="1.5" fill="#48a858"/><ellipse cx="202.8" cy="181.0" rx="1.4" ry="1.0" fill="#48a858"/><ellipse cx="198.5" cy="179.5" rx="2.0" ry="1.2" fill="#3858a8"/><ellipse cx="193.7" cy="165.5" rx="2.0" ry="1.5" fill="#d86898"/><ellipse cx="135.1" cy="191.7" rx="1.9" ry="1.6" fill="#48a858"/><ellipse cx="186.4" cy="145.8" rx="2.0" ry="1.1" fill="#3858a8"/><ellipse cx="148.3" cy="191.7" rx="2.0" ry="1.5" fill="#e8c838"/><ellipse cx="152.7" cy="170.8" rx="1.5" ry="1.2" fill="#1a1a1a"/><ellipse cx="194.4" cy="161.2" rx="1.7" ry="1.7" fill="#1a1a1a"/><ellipse cx="189.9" cy="138.9" rx="1.8" ry="1.0" fill="#d86898"/><ellipse cx="155.4" cy="178.6" rx="2.0" ry="1.7" fill="#48a858"/><ellipse cx="185.5" cy="153.7" rx="2.0" ry="1.3" fill="#e8e0d0"/><ellipse cx="186.8" cy="193.3" rx="1.3" ry="1.4" fill="#a87848"/><ellipse cx="170.4" cy="165.2" rx="1.3" ry="0.9" fill="#88b8d8"/><ellipse cx="206.5" cy="190.2" rx="1.2" ry="1.1" fill="#88b8d8"/><ellipse cx="205.4" cy="178.1" rx="1.9" ry="1.7" fill="#88b8d8"/><ellipse cx="142.9" cy="188.5" rx="2.1" ry="1.2" fill="#e8c838"/><ellipse cx="171.6" cy="155.5" rx="1.8" ry="1.4" fill="#a87848"/><ellipse cx="181.5" cy="176.8" rx="1.4" ry="1.2" fill="#a87848"/><ellipse cx="191.2" cy="180.8" rx="1.9" ry="1.6" fill="#f0f0e8"/><ellipse cx="209.7" cy="188.1" rx="1.3" ry="1.1" fill="#e8c838"/><ellipse cx="162.1" cy="188.0" rx="1.7" ry="0.9" fill="#f0f0e8"/><ellipse cx="193.6" cy="165.5" rx="1.2" ry="1.1" fill="#e8e0d0"/><ellipse cx="191.5" cy="146.2" rx="1.4" ry="1.7" fill="#e8e0d0"/><ellipse cx="184.8" cy="153.8" rx="1.8" ry="1.7" fill="#3858a8"/><ellipse cx="194.2" cy="161.5" rx="1.9" ry="1.1" fill="#88b8d8"/><ellipse cx="206.3" cy="181.8" rx="1.9" ry="1.6" fill="#f0f0e8"/><ellipse cx="147.7" cy="182.5" rx="2.0" ry="1.5" fill="#f4f4f4"/><polygon points="166.0,193.6 209.9,193.6 209.9,210.0 175.3,210.0" fill="#2c2c2c"/><polygon points="125.0,192.5 166.0,193.6 175.3,210.0 113.3,210.0 113.3,193.6" fill="#6a6c68"/></g></g></svg><div class="lb ov"><em></em><span style="letter-spacing:0.26px">7innovative artists.png</span></div></div>
<div class="tile" style="left:17.2px;top:772.6px"><svg width="210" height="210" viewBox="0 0 210 210"><defs><filter id="t0b"><feGaussianBlur stdDeviation=".5"/></filter><linearGradient id="t0g" x1="0" y1="0" x2="1" y2="0"><stop offset="0" stop-color="#66665b"/><stop offset="1" stop-color="#75756a"/></linearGradient></defs><rect width="210" height="210" fill="url(#t0g)"/><g filter="url(#t0b)"><polygon points="62.9,0.0 131.0,0.0 142.8,19.0 141.5,37.3 158.5,43.9 150.7,54.4 138.9,66.2 47.2,66.2 38.0,43.9 48.5,33.4 52.4,19.0" fill="#d99a82"/><polygon points="51.8,21.6 62.9,20.3 65.5,33.4 53.7,35.4" fill="#9a8a7c"/><polygon points="137.6,33.4 144.1,35.4 142.8,41.3 136.3,40.0" fill="#b0a49a"/><polygon points="43.2,0.0 62.9,0.0 53.1,17.0" fill="#55574c"/><polygon points="62.9,0.0 72.7,17.0 53.1,17.0" fill="#b87868"/><polygon points="62.9,0.0 82.5,0.0 72.7,17.0" fill="#e0a28a"/><polygon points="82.5,0.0 92.4,17.0 72.7,17.0" fill="#c4846e"/><polygon points="82.5,0.0 102.2,0.0 92.4,17.0" fill="#f0b8a0"/><polygon points="102.2,0.0 112.0,17.0 92.4,17.0" fill="#eab098"/><polygon points="102.2,0.0 121.9,0.0 112.0,17.0" fill="#e0a28a"/><polygon points="121.9,0.0 131.7,17.0 112.0,17.0" fill="#cc8c76"/><polygon points="121.9,0.0 141.5,0.0 131.7,17.0" fill="#b87868"/><polygon points="52.4,17.0 81.2,17.0 66.8,42.6" fill="#cc8c76"/><polygon points="81.2,17.0 95.6,42.6 66.8,42.6" fill="#f2c0aa"/><polygon points="81.2,17.0 110.1,17.0 95.6,42.6" fill="#eab098"/><polygon points="110.1,17.0 124.5,42.6 95.6,42.6" fill="#c4846e"/><polygon points="110.1,17.0 138.9,17.0 124.5,42.6" fill="#cc8c76"/><polygon points="138.9,17.0 153.3,42.6 124.5,42.6" fill="#e0a28a"/><polygon points="61.6,17.7 83.9,17.7 73.4,25.6" fill="#6a5a50"/><polygon points="83.9,17.7 99.6,17.7 91.7,24.2" fill="#7a5e54"/><polygon points="112.7,17.7 125.8,17.7 118.6,23.6" fill="#8a6a5e"/><polygon points="73.4,32.1 94.3,37.3 91.7,38.7 74.7,34.7" fill="#5a4038"/><polygon points="110.1,38.7 131.0,40.6 129.7,42.6 111.4,41.3" fill="#6a4a40"/><polygon points="38.0,43.9 65.5,43.2 56.3,54.4" fill="#e0a088"/><polygon points="43.2,44.5 65.5,43.6 61.6,50.4" fill="#6e6c60"/><polygon points="68.1,43.9 99.6,43.9 83.9,66.2" fill="#e8ac94"/><polygon points="91.7,43.9 117.9,43.9 104.8,60.9" fill="#d08e78"/><polygon points="112.7,43.9 131.0,43.9 121.9,57.0" fill="#f0bca6"/><polygon points="129.7,43.9 150.7,43.9 144.1,58.3" fill="#6c6c62"/><polygon points="141.5,43.9 158.5,43.9 152.0,54.4" fill="#e4a890"/><polygon points="99.6,51.8 131.0,51.8 117.9,66.2 104.8,66.2" fill="#dc9c84"/><polygon points="110.1,58.3 117.9,57.0 120.5,60.9 112.7,62.2" fill="#7a4a40"/><polygon points="47.2,54.4 73.4,66.2 47.2,66.2" fill="#cf8e78"/></g></svg></div>
<div class="tile" style="left:238.8px;top:772.6px"><svg width="210" height="210" viewBox="0 0 210 210" font-family="Liberation Sans, sans-serif"><defs><filter id="t1b"><feGaussianBlur stdDeviation=".4"/></filter></defs><rect width="210" height="210" fill="#ebe8e2"/><rect x="-0.9" y="-0.7" width="212.3" height="8.1" fill="#dcdce5"/><polygon points="0.0,7.5 122.2,9.8 130.1,17.7 211.3,13.8 211.3,7.5" fill="#e4e2e8"/><path d="M6.9 12.7H60.7" stroke="#444" stroke-width="1.600" stroke-dasharray="4 1 6 1.500 3 1"/><path d="M119.6 13.8Q143.2 10.5 208.7 12.4" stroke="#999" stroke-width=".8" fill="none"/><rect x="0.0" y="28.2" width="37.3" height="25.6" fill="#2e3033"/><rect x="91.5" y="24.2" width="30.1" height="30.1" fill="#2e3033"/><path d="M6.3 41.3Q18.7 31.4 31.2 41.3Q18.7 50.4 6.3 41.3z" fill="#f6f2ea"/><circle cx="18.7" cy="41.3" r="3.9" fill="#1a1a1a"/><circle cx="18.7" cy="41.3" r="1.4" fill="#f6f2ea"/><path d="M8.3 38.1L5.1 34.9M8.3 43.9L5.6 46.3M10.9 37.2L8.5 33.7M10.9 44.8L8.9 47.3M13.5 36.3L11.9 32.5M13.5 45.7L12.2 48.3M16.1 35.4L15.3 31.3M16.1 46.6L15.5 49.4M18.7 34.5L18.7 30.1M18.7 47.6L18.7 50.4M21.4 35.4L22.1 31.3M21.4 46.6L22.0 49.4M24.0 36.3L25.6 32.5M24.0 45.7L25.3 48.3M26.6 37.2L29.0 33.7M26.6 44.8L28.6 47.3M29.2 38.1L32.4 34.9M29.2 43.9L31.8 46.3" stroke="#f6f2ea" stroke-width="1"/><path d="M93.4 41.3Q105.9 31.4 118.3 41.3Q105.9 50.4 93.4 41.3z" fill="#f6f2ea"/><circle cx="105.9" cy="41.3" r="3.9" fill="#1a1a1a"/><circle cx="105.9" cy="41.3" r="1.4" fill="#f6f2ea"/><path d="M95.4 38.1L92.2 34.9M95.4 43.9L92.8 46.3M98.0 37.2L95.6 33.7M98.0 44.8L96.0 47.3M100.6 36.3L99.1 32.5M100.6 45.7L99.3 48.3M103.2 35.4L102.5 31.3M103.2 46.6L102.6 49.4M105.9 34.5L105.9 30.1M105.9 47.6L105.9 50.4M108.5 35.4L109.3 31.3M108.5 46.6L109.1 49.4M111.1 36.3L112.7 32.5M111.1 45.7L112.4 48.3M113.7 37.2L116.1 33.7M113.7 44.8L115.7 47.3M116.4 38.1L119.5 34.9M116.4 43.9L119.0 46.3" stroke="#f6f2ea" stroke-width="1"/><rect x="38.4" y="28.8" width="51.8" height="21.0" fill="#dcdcdc"/><text x="40.0" y="48.1" font-size="21" font-weight="bold" font-style="italic" fill="#16161c" textLength="48.5" lengthAdjust="spacingAndGlyphs">KUUK</text><path d="M38.4 55.9L48.9 53.1L48.2 55.0L67.2 51.8L66.6 53.7L88.2 49.4" stroke="#f4509c" stroke-width="1.600" fill="none"/><rect x="3.0" y="55.7" width="119.9" height="11.8" fill="#c6c6a2"/><rect x="4.3" y="57.0" width="59.0" height="10.5" fill="#e6dfb2"/><rect x="38.4" y="63.5" width="8.1" height="3.9" fill="#2a6e72"/><rect x="0.0" y="55.7" width="3.7" height="11.8" fill="#a8a8c8"/><path d="M135.4 25.6C143.2 20.3 151.1 24.2 149.8 29.5C138.0 33.4 135.4 42.6 140.6 51.8C143.2 58.3 147.1 62.2 149.8 67.5H124.9C122.2 58.3 130.1 51.8 127.5 43.9C126.2 36.0 130.1 29.5 135.4 25.6z" fill="#de9224"/><g filter="url(#t1b)"><path d="M139.9 38.7C143.2 28.2 162.9 26.9 170.7 38.7C176.0 49.1 166.8 60.9 151.1 60.3C141.9 57.0 138.0 47.8 139.9 38.7z" fill="#d6f2e0"/><polygon points="160.2,38.7 172.0,40.0 173.3,51.8 164.2,54.4" fill="#6cb87c" opacity=".7"/><polygon points="140.6,32.1 153.7,29.5 149.8,38.7" fill="#a8d8b8" opacity=".8"/></g><polygon points="160.2,17.7 162.6,21.0 165.0,17.7 167.3,21.0 169.7,17.7 172.0,21.0 174.4,17.7 176.8,21.0 179.1,17.7 181.5,21.0 183.8,17.7 186.2,21.0 188.5,17.7 190.9,21.0 193.3,17.7 195.6,21.0 198.0,17.7 200.3,21.0 202.7,17.7 205.1,21.0 207.4,17.7 209.8,21.0 212.1,17.7 211.3,17.7 211.3,51.8 177.3,51.8 168.1,37.3 161.6,25.6" fill="#b07e5e"/><text x="172.7" y="50.7" font-size="6" font-weight="bold" fill="#1a1a1a" textLength="38.0" lengthAdjust="spacingAndGlyphs">www.nubl</text><polygon points="161.6,52.0 203.5,51.5 200.9,62.2 157.0,62.0" fill="#e23454"/><polygon points="169.4,53.1 195.6,52.4 193.0,57.0 168.1,57.7" fill="#f06888" opacity=".6"/><circle cx="177.9" cy="65.5" r="5.0" fill="#3a3a40"/><circle cx="206.1" cy="60.3" r="5.2" fill="#e0a020"/></svg></div>
<div class="tile" style="left:460.4px;top:772.6px"><svg width="210" height="210" viewBox="0 0 210 210" font-family="Liberation Sans, sans-serif"><defs><filter id="t2n" x="0" y="0" width="100%" height="100%"><feTurbulence type="fractalNoise" baseFrequency=".09" numOctaves="2" seed="3"/><feColorMatrix values="0 0 0 0 .78  0 0 0 0 .6  0 0 0 0 .4  0 0 0 1.4 -.35"/></filter></defs><rect width="210" height="210" fill="#d2ac78"/><rect width="210" height="70" fill="#e8cfa0" filter="url(#t2n)" opacity=".0"/><ellipse cx="34.1" cy="63.4" rx="4.3" ry="3.6" fill="#e8d0a4" opacity=".8"/><ellipse cx="107.8" cy="57.3" rx="7.4" ry="3.6" fill="#e8d0a4" opacity=".8"/><ellipse cx="3.9" cy="4.3" rx="8.6" ry="3.0" fill="#e8d0a4" opacity=".8"/><ellipse cx="207.8" cy="29.7" rx="6.2" ry="3.3" fill="#c09058" opacity=".8"/><ellipse cx="113.3" cy="61.7" rx="6.8" ry="4.0" fill="#e8d0a4" opacity=".8"/><ellipse cx="116.6" cy="35.5" rx="4.4" ry="3.2" fill="#e4c898" opacity=".8"/><ellipse cx="125.2" cy="33.4" rx="5.9" ry="2.1" fill="#e4c898" opacity=".8"/><ellipse cx="17.4" cy="13.4" rx="7.9" ry="2.5" fill="#dcbc8c" opacity=".8"/><ellipse cx="181.9" cy="27.0" rx="5.5" ry="2.5" fill="#dcbc8c" opacity=".8"/><ellipse cx="76.3" cy="35.8" rx="8.1" ry="3.0" fill="#e8d0a4" opacity=".8"/><ellipse cx="80.0" cy="60.1" rx="4.2" ry="2.1" fill="#e4c898" opacity=".8"/><ellipse cx="89.7" cy="27.2" rx="7.9" ry="2.2" fill="#f0dcb8" opacity=".8"/><ellipse cx="46.3" cy="5.5" rx="5.4" ry="2.9" fill="#b08448" opacity=".8"/><ellipse cx="72.3" cy="44.6" rx="4.3" ry="2.9" fill="#c09058" opacity=".8"/><ellipse cx="71.3" cy="31.9" rx="7.5" ry="3.7" fill="#c09058" opacity=".8"/><ellipse cx="200.7" cy="11.7" rx="8.6" ry="2.7" fill="#c09058" opacity=".8"/><ellipse cx="161.0" cy="15.4" rx="7.0" ry="3.9" fill="#dcbc8c" opacity=".8"/><ellipse cx="37.7" cy="55.6" rx="6.5" ry="2.5" fill="#e8d0a4" opacity=".8"/><ellipse cx="206.6" cy="69.9" rx="6.5" ry="2.0" fill="#dcbc8c" opacity=".8"/><ellipse cx="185.2" cy="46.8" rx="5.4" ry="2.2" fill="#f0dcb8" opacity=".8"/><ellipse cx="105.5" cy="34.3" rx="5.8" ry="3.4" fill="#b08448" opacity=".8"/><ellipse cx="187.8" cy="11.4" rx="5.5" ry="3.7" fill="#dcbc8c" opacity=".8"/><ellipse cx="69.3" cy="60.4" rx="7.2" ry="2.9" fill="#c09058" opacity=".8"/><ellipse cx="154.1" cy="36.5" rx="4.1" ry="2.0" fill="#e8d0a4" opacity=".8"/><ellipse cx="27.7" cy="62.1" rx="6.1" ry="2.5" fill="#b08448" opacity=".8"/><ellipse cx="99.1" cy="4.1" rx="6.9" ry="3.4" fill="#dcbc8c" opacity=".8"/><ellipse cx="159.7" cy="29.2" rx="6.9" ry="3.8" fill="#c09058" opacity=".8"/><ellipse cx="121.8" cy="24.3" rx="5.8" ry="3.5" fill="#f0dcb8" opacity=".8"/><ellipse cx="33.8" cy="48.2" rx="4.8" ry="2.1" fill="#e8d0a4" opacity=".8"/><ellipse cx="188.5" cy="63.7" rx="6.7" ry="3.6" fill="#b08448" opacity=".8"/><ellipse cx="166.4" cy="49.7" rx="4.9" ry="2.5" fill="#e4c898" opacity=".8"/><ellipse cx="144.2" cy="34.4" rx="7.1" ry="2.4" fill="#f0dcb8" opacity=".8"/><ellipse cx="147.1" cy="27.6" rx="5.2" ry="2.8" fill="#dcbc8c" opacity=".8"/><ellipse cx="17.3" cy="23.3" rx="7.4" ry="3.4" fill="#dcbc8c" opacity=".8"/><ellipse cx="146.1" cy="53.2" rx="7.3" ry="3.9" fill="#dcbc8c" opacity=".8"/><ellipse cx="36.9" cy="14.6" rx="7.1" ry="3.0" fill="#e8d0a4" opacity=".8"/><ellipse cx="140.2" cy="23.9" rx="5.2" ry="2.7" fill="#c09058" opacity=".8"/><ellipse cx="1.6" cy="25.2" rx="5.4" ry="2.4" fill="#b08448" opacity=".8"/><ellipse cx="62.2" cy="36.1" rx="4.7" ry="3.8" fill="#dcbc8c" opacity=".8"/><ellipse cx="34.1" cy="32.5" rx="7.0" ry="3.7" fill="#c09058" opacity=".8"/><ellipse cx="96.6" cy="55.0" rx="4.2" ry="3.5" fill="#b08448" opacity=".8"/><ellipse cx="113.0" cy="53.3" rx="6.0" ry="3.3" fill="#e4c898" opacity=".8"/><ellipse cx="11.0" cy="7.4" rx="6.9" ry="2.6" fill="#e4c898" opacity=".8"/><ellipse cx="3.6" cy="54.3" rx="8.5" ry="3.3" fill="#c09058" opacity=".8"/><ellipse cx="28.5" cy="15.8" rx="6.7" ry="2.5" fill="#e8d0a4" opacity=".8"/><g transform="rotate(-4.400 0 18.800)"><rect x="-5" y="18.800" width="225" height="53.500" fill="#6c9c28"/><rect x="-5" y="18.800" width="225" height="2" fill="#86b440"/><g fill="#fff" font-weight="bold" font-size="21" stroke="#fff" stroke-width=".4"><text x="0" y="39" textLength="214" lengthAdjust="spacingAndGlyphs">simple things you can do</text><text x="1" y="62.500" textLength="228" lengthAdjust="spacingAndGlyphs">to change our food system</text></g></g><rect width="210" height="1.500" fill="#f4ecd8"/></svg></div>
<div class="tile" style="left:682.0px;top:772.6px"><svg width="210" height="210" viewBox="0 0 210 210"><defs><linearGradient id="t3a" x1="0" y1="0" x2="0" y2="66" gradientUnits="userSpaceOnUse"><stop offset="0" stop-color="#8fb8e4"/><stop offset="1" stop-color="#cfe0f2"/></linearGradient><linearGradient id="t3b" x1="170" y1="0" x2="140" y2="68" gradientUnits="userSpaceOnUse"><stop offset="0" stop-color="#587a80"/><stop offset=".42" stop-color="#7e948e"/><stop offset=".72" stop-color="#c8a888"/><stop offset="1" stop-color="#e8a56a"/></linearGradient><filter id="t3f"><feGaussianBlur stdDeviation="1.300"/></filter></defs><rect width="98.500" height="210" fill="url(#t3a)"/><g filter="url(#t3f)" fill="#fff"><ellipse cx="34.7" cy="37.3" rx="30.1" ry="7.9"/><ellipse cx="53.1" cy="19.0" rx="9.8" ry="6.3"/><ellipse cx="12.4" cy="41.3" rx="11.8" ry="5.2"/><ellipse cx="51.8" cy="34.7" rx="14.4" ry="5.9"/><ellipse cx="2.0" cy="13.8" rx="3.9" ry="3.9"/><ellipse cx="59.6" cy="24.2" rx="5.2" ry="3.3"/></g><polygon points="91.7,0.0 98.9,0.0 98.9,66.3 74.0,66.3 78.0,54.4 84.5,36.0" fill="#dfe2e2"/><polygon points="84.5,36.0 91.7,15.1 93.7,38.7 83.2,66.3 76.7,66.3" fill="#a9b0b4"/><polygon points="96.3,0.0 98.9,0.0 98.9,38.7 95.6,25.6" fill="#c4c8ca"/><polygon points="86.9,13.8 93.7,8.5 97.9,11.1 97.6,25.6 91.1,24.2" fill="#6a9a3c"/><polygon points="91.1,17.7 97.0,15.1 97.4,22.9 93.0,23.6" fill="#3e6a24"/><rect x="98.500" width="3.200" height="210" fill="#fff"/><rect x="101.600" width="108.400" height="210" fill="url(#t3b)"/><clipPath id="t3c"><polygon points="127.1,4.6 144.8,3.3 152.0,12.4 150.0,29.5 155.3,49.1 156.6,66.3 134.3,66.3 129.1,42.6 128.4,22.9" fill="#000"/><polygon points="161.2,13.8 178.9,12.2 181.7,24.2 178.9,42.6 185.4,66.3 156.6,66.3 161.8,42.6 159.9,28.2" fill="#000"/><polygon points="190.9,24.2 204.4,23.2 205.3,42.6 202.4,66.3 188.0,66.3 190.9,42.6" fill="#000"/></clipPath><polygon points="127.1,4.6 144.8,3.3 152.0,12.4 150.0,29.5 155.3,49.1 156.6,66.3 134.3,66.3 129.1,42.6 128.4,22.9" fill="#182a28"/><polygon points="161.2,13.8 178.9,12.2 181.7,24.2 178.9,42.6 185.4,66.3 156.6,66.3 161.8,42.6 159.9,28.2" fill="#182a28"/><polygon points="190.9,24.2 204.4,23.2 205.3,42.6 202.4,66.3 188.0,66.3 190.9,42.6" fill="#182a28"/><g clip-path="url(#t3c)"><rect x="176.1" y="50.0" width="2.3" height="1" fill="#c8e088" opacity=".85"/><rect x="129.4" y="32.6" width="2.5" height="1" fill="#b8d878" opacity=".85"/><rect x="197.9" y="10.4" width="1.9" height="1" fill="#d8e890" opacity=".85"/><rect x="157.0" y="9.7" width="1.5" height="1" fill="#d8e890" opacity=".85"/><rect x="159.2" y="14.8" width="2.4" height="1" fill="#a8c880" opacity=".85"/><rect x="139.6" y="53.5" width="1.4" height="1" fill="#e85048" opacity=".85"/><rect x="162.1" y="11.6" width="2.6" height="1" fill="#b8d878" opacity=".85"/><rect x="143.6" y="16.9" width="2.6" height="1" fill="#78a888" opacity=".85"/><rect x="149.8" y="63.9" width="2.0" height="1" fill="#d8e890" opacity=".85"/><rect x="141.4" y="64.3" width="1.5" height="1" fill="#a8c880" opacity=".85"/><rect x="150.6" y="26.0" width="1.4" height="1" fill="#78a888" opacity=".85"/><rect x="147.8" y="24.2" width="2.3" height="1" fill="#e85048" opacity=".85"/><rect x="127.4" y="46.0" width="1.7" height="1" fill="#9cc870" opacity=".85"/><rect x="155.0" y="22.6" width="2.2" height="1" fill="#78a888" opacity=".85"/><rect x="164.9" y="47.7" width="1.3" height="1" fill="#b8d878" opacity=".85"/><rect x="201.7" y="25.8" width="1.8" height="1" fill="#c8e088" opacity=".85"/><rect x="189.0" y="26.4" width="2.0" height="1" fill="#b8d878" opacity=".85"/><rect x="162.7" y="47.9" width="2.1" height="1" fill="#d8e890" opacity=".85"/><rect x="136.5" y="18.8" width="2.3" height="1" fill="#88b070" opacity=".85"/><rect x="154.2" y="25.6" width="1.9" height="1" fill="#88b070" opacity=".85"/><rect x="135.6" y="50.4" width="2.3" height="1" fill="#9cc870" opacity=".85"/><rect x="130.0" y="62.9" width="1.3" height="1" fill="#f0f4c0" opacity=".85"/><rect x="167.4" y="26.1" width="1.4" height="1" fill="#9cc870" opacity=".85"/><rect x="199.8" y="37.6" width="1.6" height="1" fill="#f0f4c0" opacity=".85"/><rect x="151.2" y="53.6" width="2.1" height="1" fill="#9cc870" opacity=".85"/><rect x="205.5" y="13.5" width="1.3" height="1" fill="#e85048" opacity=".85"/><rect x="169.0" y="28.9" width="1.5" height="1" fill="#e85048" opacity=".85"/><rect x="154.1" y="19.0" width="2.1" height="1" fill="#78a888" opacity=".85"/><rect x="131.5" y="61.0" width="1.2" height="1" fill="#88b070" opacity=".85"/><rect x="153.4" y="16.3" width="2.6" height="1" fill="#e85048" opacity=".85"/><rect x="201.8" y="43.0" width="2.3" height="1" fill="#e4f0a0" opacity=".85"/><rect x="140.4" y="26.8" width="1.3" height="1" fill="#a8c880" opacity=".85"/><rect x="150.3" y="31.8" width="2.6" height="1" fill="#78a888" opacity=".85"/><rect x="203.8" y="31.9" width="1.9" height="1" fill="#f0f4c0" opacity=".85"/><rect x="164.8" y="21.6" width="1.8" height="1" fill="#78a888" opacity=".85"/><rect x="135.9" y="55.1" width="1.9" height="1" fill="#78a888" opacity=".85"/><rect x="176.4" y="34.7" width="1.7" height="1" fill="#e4f0a0" opacity=".85"/><rect x="165.8" y="35.7" width="2.0" height="1" fill="#c8e088" opacity=".85"/><rect x="155.5" y="52.8" width="2.3" height="1" fill="#e85048" opacity=".85"/><rect x="179.3" y="51.2" width="1.7" height="1" fill="#9cc870" opacity=".85"/><rect x="192.8" y="20.0" width="2.6" height="1" fill="#9cc870" opacity=".85"/><rect x="202.3" y="24.7" width="1.5" height="1" fill="#b8d878" opacity=".85"/><rect x="164.4" y="52.0" width="1.7" height="1" fill="#9cc870" opacity=".85"/><rect x="163.5" y="54.7" width="2.1" height="1" fill="#f0f4c0" opacity=".85"/><rect x="154.4" y="43.9" width="2.2" height="1" fill="#a8c880" opacity=".85"/><rect x="154.6" y="56.4" width="2.4" height="1" fill="#88b070" opacity=".85"/><rect x="203.8" y="63.6" width="1.9" height="1" fill="#c8e088" opacity=".85"/><rect x="204.2" y="15.8" width="1.7" height="1" fill="#88b070" opacity=".85"/><rect x="149.3" y="8.2" width="2.1" height="1" fill="#a8c880" opacity=".85"/><rect x="140.6" y="52.5" width="2.0" height="1" fill="#a8c880" opacity=".85"/><rect x="150.9" y="38.1" width="2.4" height="1" fill="#9cc870" opacity=".85"/><rect x="183.7" y="5.0" width="1.4" height="1" fill="#88b070" opacity=".85"/><rect x="176.2" y="14.7" width="2.3" height="1" fill="#78a888" opacity=".85"/><rect x="176.7" y="5.9" width="1.9" height="1" fill="#d8e890" opacity=".85"/><rect x="140.1" y="59.5" width="1.4" height="1" fill="#78a888" opacity=".85"/><rect x="165.0" y="37.8" width="1.8" height="1" fill="#f0f4c0" opacity=".85"/><rect x="157.0" y="41.8" width="2.0" height="1" fill="#d8e890" opacity=".85"/><rect x="183.5" y="26.8" width="1.7" height="1" fill="#9cc870" opacity=".85"/><rect x="194.4" y="57.9" width="2.2" height="1" fill="#c8e088" opacity=".85"/><rect x="156.5" y="5.5" width="2.1" height="1" fill="#e4f0a0" opacity=".85"/><rect x="150.3" y="35.6" width="2.5" height="1" fill="#9cc870" opacity=".85"/><rect x="202.4" y="54.9" width="1.8" height="1" fill="#e85048" opacity=".85"/><rect x="177.6" y="26.6" width="1.4" height="1" fill="#e85048" opacity=".85"/><rect x="157.2" y="33.3" width="1.5" height="1" fill="#78a888" opacity=".85"/><rect x="174.9" y="25.4" width="2.5" height="1" fill="#b8d878" opacity=".85"/><rect x="157.1" y="23.8" width="2.5" height="1" fill="#c8e088" opacity=".85"/><rect x="138.2" y="42.9" width="2.4" height="1" fill="#a8c880" opacity=".85"/><rect x="160.8" y="64.8" width="1.9" height="1" fill="#88b070" opacity=".85"/><rect x="203.5" y="27.2" width="2.5" height="1" fill="#78a888" opacity=".85"/><rect x="173.9" y="19.7" width="2.6" height="1" fill="#88b070" opacity=".85"/><rect x="146.8" y="4.5" width="2.5" height="1" fill="#9cc870" opacity=".85"/><rect x="165.8" y="21.3" width="1.9" height="1" fill="#e4f0a0" opacity=".85"/><rect x="179.0" y="63.8" width="1.5" height="1" fill="#b8d878" opacity=".85"/><rect x="188.6" y="55.4" width="1.2" height="1" fill="#c8e088" opacity=".85"/><rect x="171.1" y="18.6" width="1.9" height="1" fill="#b8d878" opacity=".85"/><rect x="146.4" y="20.1" width="1.4" height="1" fill="#9cc870" opacity=".85"/><rect x="150.1" y="41.6" width="1.9" height="1" fill="#e85048" opacity=".85"/><rect x="196.3" y="59.7" width="1.2" height="1" fill="#78a888" opacity=".85"/><rect x="150.7" y="36.9" width="1.7" height="1" fill="#9cc870" opacity=".85"/><rect x="184.6" y="5.0" width="1.7" height="1" fill="#e85048" opacity=".85"/><rect x="137.5" y="3.5" width="2.0" height="1" fill="#e4f0a0" opacity=".85"/><rect x="196.9" y="37.7" width="1.2" height="1" fill="#a8c880" opacity=".85"/><rect x="173.9" y="46.7" width="2.5" height="1" fill="#88b070" opacity=".85"/><rect x="194.6" y="56.3" width="1.9" height="1" fill="#d8e890" opacity=".85"/><rect x="197.8" y="32.6" width="2.3" height="1" fill="#9cc870" opacity=".85"/><rect x="192.8" y="47.1" width="1.8" height="1" fill="#9cc870" opacity=".85"/><rect x="178.1" y="33.1" width="1.6" height="1" fill="#78a888" opacity=".85"/><rect x="164.7" y="37.9" width="1.9" height="1" fill="#f0f4c0" opacity=".85"/><rect x="169.4" y="30.1" width="2.0" height="1" fill="#b8d878" opacity=".85"/><rect x="132.5" y="17.8" width="2.3" height="1" fill="#e4f0a0" opacity=".85"/><rect x="179.3" y="4.9" width="2.2" height="1" fill="#e4f0a0" opacity=".85"/><rect x="205.6" y="47.5" width="1.3" height="1" fill="#e4f0a0" opacity=".85"/><rect x="144.3" y="44.0" width="2.5" height="1" fill="#78a888" opacity=".85"/><rect x="205.2" y="47.8" width="1.8" height="1" fill="#78a888" opacity=".85"/><rect x="175.1" y="29.4" width="1.4" height="1" fill="#e85048" opacity=".85"/><rect x="143.9" y="38.3" width="2.1" height="1" fill="#e4f0a0" opacity=".85"/><rect x="149.1" y="39.3" width="1.4" height="1" fill="#a8c880" opacity=".85"/><rect x="196.2" y="11.7" width="1.8" height="1" fill="#f0f4c0" opacity=".85"/><rect x="181.0" y="34.1" width="1.7" height="1" fill="#f0f4c0" opacity=".85"/><rect x="199.0" y="12.0" width="1.6" height="1" fill="#e85048" opacity=".85"/><rect x="176.7" y="35.2" width="2.5" height="1" fill="#c8e088" opacity=".85"/><rect x="170.3" y="17.2" width="1.3" height="1" fill="#d8e890" opacity=".85"/><rect x="147.1" y="50.6" width="1.9" height="1" fill="#78a888" opacity=".85"/><rect x="190.6" y="57.7" width="1.8" height="1" fill="#a8c880" opacity=".85"/><rect x="141.2" y="48.2" width="2.1" height="1" fill="#e4f0a0" opacity=".85"/><rect x="172.2" y="5.5" width="2.4" height="1" fill="#c8e088" opacity=".85"/><rect x="173.8" y="18.3" width="2.4" height="1" fill="#88b070" opacity=".85"/><rect x="202.8" y="10.1" width="1.9" height="1" fill="#c8e088" opacity=".85"/><rect x="184.1" y="6.7" width="1.4" height="1" fill="#a8c880" opacity=".85"/><rect x="180.6" y="17.3" width="1.4" height="1" fill="#88b070" opacity=".85"/><rect x="191.6" y="12.1" width="2.1" height="1" fill="#f0f4c0" opacity=".85"/><rect x="192.8" y="21.5" width="2.5" height="1" fill="#f0f4c0" opacity=".85"/><rect x="189.7" y="27.1" width="2.2" height="1" fill="#f0f4c0" opacity=".85"/><rect x="178.0" y="54.0" width="1.8" height="1" fill="#f0f4c0" opacity=".85"/><rect x="167.8" y="40.6" width="2.0" height="1" fill="#78a888" opacity=".85"/><rect x="158.2" y="9.4" width="1.2" height="1" fill="#d8e890" opacity=".85"/><rect x="142.5" y="34.2" width="2.5" height="1" fill="#f0f4c0" opacity=".85"/><rect x="127.1" y="32.9" width="2.4" height="1" fill="#e85048" opacity=".85"/><rect x="199.6" y="23.6" width="1.8" height="1" fill="#d8e890" opacity=".85"/><rect x="139.3" y="13.3" width="1.7" height="1" fill="#a8c880" opacity=".85"/><rect x="195.4" y="32.9" width="2.0" height="1" fill="#e4f0a0" opacity=".85"/><rect x="148.9" y="13.5" width="1.6" height="1" fill="#d8e890" opacity=".85"/><rect x="129.7" y="59.8" width="1.7" height="1" fill="#f0f4c0" opacity=".85"/><rect x="151.9" y="7.0" width="1.2" height="1" fill="#88b070" opacity=".85"/><rect x="164.2" y="62.9" width="1.4" height="1" fill="#f0f4c0" opacity=".85"/><rect x="150.0" y="45.8" width="2.2" height="1" fill="#78a888" opacity=".85"/><rect x="129.7" y="48.3" width="2.0" height="1" fill="#e4f0a0" opacity=".85"/><rect x="175.6" y="60.7" width="2.2" height="1" fill="#9cc870" opacity=".85"/><rect x="141.6" y="26.1" width="1.3" height="1" fill="#88b070" opacity=".85"/><rect x="139.9" y="18.4" width="2.1" height="1" fill="#b8d878" opacity=".85"/><rect x="177.9" y="30.4" width="2.6" height="1" fill="#b8d878" opacity=".85"/><rect x="163.4" y="31.8" width="2.2" height="1" fill="#78a888" opacity=".85"/><rect x="130.6" y="37.8" width="2.6" height="1" fill="#c8e088" opacity=".85"/><rect x="171.5" y="62.5" width="2.2" height="1" fill="#d8e890" opacity=".85"/><rect x="197.8" y="34.2" width="2.5" height="1" fill="#b8d878" opacity=".85"/><rect x="180.8" y="43.9" width="1.9" height="1" fill="#b8d878" opacity=".85"/><rect x="130.9" y="55.8" width="1.8" height="1" fill="#b8d878" opacity=".85"/><rect x="195.9" y="63.2" width="1.5" height="1" fill="#c8e088" opacity=".85"/><rect x="177.5" y="15.1" width="1.5" height="1" fill="#f0f4c0" opacity=".85"/><rect x="189.3" y="8.7" width="2.6" height="1" fill="#78a888" opacity=".85"/><rect x="174.1" y="57.3" width="1.5" height="1" fill="#b8d878" opacity=".85"/><rect x="161.8" y="25.8" width="1.8" height="1" fill="#a8c880" opacity=".85"/><rect x="168.2" y="11.6" width="1.2" height="1" fill="#9cc870" opacity=".85"/><rect x="181.2" y="59.5" width="2.6" height="1" fill="#c8e088" opacity=".85"/><rect x="136.2" y="22.9" width="1.3" height="1" fill="#9cc870" opacity=".85"/><rect x="191.5" y="23.0" width="1.4" height="1" fill="#e4f0a0" opacity=".85"/><rect x="164.2" y="47.2" width="2.3" height="1" fill="#e85048" opacity=".85"/><rect x="179.5" y="20.7" width="1.9" height="1" fill="#d8e890" opacity=".85"/><rect x="130.9" y="15.9" width="1.6" height="1" fill="#f0f4c0" opacity=".85"/><rect x="196.7" y="7.8" width="2.3" height="1" fill="#a8c880" opacity=".85"/><rect x="186.2" y="38.3" width="2.5" height="1" fill="#78a888" opacity=".85"/><rect x="172.3" y="31.1" width="2.3" height="1" fill="#b8d878" opacity=".85"/><rect x="184.3" y="47.5" width="1.6" height="1" fill="#a8c880" opacity=".85"/><rect x="171.3" y="23.5" width="1.6" height="1" fill="#78a888" opacity=".85"/><rect x="147.7" y="45.9" width="1.6" height="1" fill="#e4f0a0" opacity=".85"/><rect x="169.7" y="49.8" width="1.2" height="1" fill="#e4f0a0" opacity=".85"/><rect x="131.1" y="11.5" width="1.7" height="1" fill="#9cc870" opacity=".85"/><rect x="201.7" y="41.8" width="1.5" height="1" fill="#a8c880" opacity=".85"/><rect x="136.9" y="16.0" width="1.7" height="1" fill="#78a888" opacity=".85"/><rect x="173.0" y="55.4" width="2.2" height="1" fill="#e4f0a0" opacity=".85"/><rect x="148.2" y="41.5" width="2.1" height="1" fill="#78a888" opacity=".85"/><rect x="162.2" y="62.4" width="2.3" height="1" fill="#e4f0a0" opacity=".85"/><rect x="153.3" y="31.4" width="1.5" height="1" fill="#e85048" opacity=".85"/><rect x="161.2" y="31.1" width="2.3" height="1" fill="#78a888" opacity=".85"/><rect x="169.0" y="64.4" width="2.0" height="1" fill="#e4f0a0" opacity=".85"/><rect x="137.1" y="56.9" width="2.2" height="1" fill="#d8e890" opacity=".85"/><rect x="204.0" y="5.3" width="2.0" height="1" fill="#88b070" opacity=".85"/><rect x="182.5" y="25.6" width="1.8" height="1" fill="#d8e890" opacity=".85"/><rect x="148.9" y="16.0" width="2.0" height="1" fill="#f0f4c0" opacity=".85"/><rect x="187.2" y="52.8" width="1.7" height="1" fill="#d8e890" opacity=".85"/><rect x="191.1" y="45.1" width="2.5" height="1" fill="#b8d878" opacity=".85"/><rect x="175.7" y="28.5" width="1.4" height="1" fill="#d8e890" opacity=".85"/><rect x="165.6" y="5.7" width="1.4" height="1" fill="#e4f0a0" opacity=".85"/><rect x="186.3" y="21.0" width="2.5" height="1" fill="#f0f4c0" opacity=".85"/><rect x="164.6" y="32.9" width="1.9" height="1" fill="#e4f0a0" opacity=".85"/><rect x="190.0" y="27.0" width="1.2" height="1" fill="#c8e088" opacity=".85"/><rect x="174.7" y="42.4" width="2.3" height="1" fill="#b8d878" opacity=".85"/><rect x="152.0" y="5.0" width="1.6" height="1" fill="#a8c880" opacity=".85"/><rect x="166.5" y="37.7" width="2.2" height="1" fill="#88b070" opacity=".85"/><rect x="204.3" y="54.7" width="2.5" height="1" fill="#c8e088" opacity=".85"/><rect x="179.8" y="37.1" width="2.3" height="1" fill="#f0f4c0" opacity=".85"/><rect x="202.4" y="4.5" width="2.3" height="1" fill="#d8e890" opacity=".85"/><rect x="149.4" y="8.2" width="1.3" height="1" fill="#f0f4c0" opacity=".85"/><rect x="175.1" y="57.7" width="2.5" height="1" fill="#a8c880" opacity=".85"/><rect x="151.2" y="61.8" width="1.6" height="1" fill="#d8e890" opacity=".85"/><rect x="132.8" y="50.8" width="2.1" height="1" fill="#9cc870" opacity=".85"/><rect x="197.6" y="46.6" width="2.4" height="1" fill="#e85048" opacity=".85"/><rect x="175.1" y="16.4" width="1.9" height="1" fill="#e4f0a0" opacity=".85"/><rect x="145.9" y="64.7" width="2.0" height="1" fill="#a8c880" opacity=".85"/><rect x="203.3" y="45.6" width="1.7" height="1" fill="#c8e088" opacity=".85"/><rect x="197.8" y="60.6" width="2.1" height="1" fill="#a8c880" opacity=".85"/><rect x="152.6" y="56.4" width="2.4" height="1" fill="#f0f4c0" opacity=".85"/><rect x="146.7" y="9.6" width="1.6" height="1" fill="#9cc870" opacity=".85"/><rect x="189.8" y="8.2" width="2.5" height="1" fill="#e4f0a0" opacity=".85"/><rect x="176.8" y="51.6" width="1.5" height="1" fill="#e4f0a0" opacity=".85"/><rect x="171.9" y="42.8" width="2.1" height="1" fill="#c8e088" opacity=".85"/><rect x="184.3" y="29.5" width="1.8" height="1" fill="#c8e088" opacity=".85"/><rect x="174.0" y="18.7" width="1.8" height="1" fill="#e4f0a0" opacity=".85"/><rect x="174.7" y="64.2" width="1.5" height="1" fill="#b8d878" opacity=".85"/><rect x="138.8" y="21.9" width="2.0" height="1" fill="#e85048" opacity=".85"/><rect x="141.6" y="15.3" width="2.0" height="1" fill="#f0f4c0" opacity=".85"/><rect x="184.4" y="7.1" width="1.9" height="1" fill="#c8e088" opacity=".85"/><rect x="202.3" y="23.3" width="2.4" height="1" fill="#a8c880" opacity=".85"/><rect x="200.0" y="17.7" width="2.2" height="1" fill="#88b070" opacity=".85"/><rect x="193.1" y="3.4" width="2.1" height="1" fill="#e4f0a0" opacity=".85"/><rect x="134.4" y="12.9" width="2.1" height="1" fill="#e4f0a0" opacity=".85"/><rect x="172.3" y="31.1" width="1.7" height="1" fill="#78a888" opacity=".85"/><rect x="183.2" y="61.5" width="2.5" height="1" fill="#e4f0a0" opacity=".85"/><rect x="155.8" y="54.6" width="1.5" height="1" fill="#f0f4c0" opacity=".85"/><rect x="156.5" y="32.2" width="2.2" height="1" fill="#e4f0a0" opacity=".85"/><rect x="146.4" y="62.6" width="1.9" height="1" fill="#b8d878" opacity=".85"/><rect x="136.3" y="40.9" width="1.7" height="1" fill="#b8d878" opacity=".85"/><rect x="166.1" y="63.9" width="2.5" height="1" fill="#e4f0a0" opacity=".85"/><rect x="165.7" y="62.4" width="2.2" height="1" fill="#b8d878" opacity=".85"/><rect x="136.3" y="33.5" width="1.7" height="1" fill="#d8e890" opacity=".85"/><rect x="199.3" y="27.4" width="1.6" height="1" fill="#88b070" opacity=".85"/><rect x="177.6" y="51.6" width="1.3" height="1" fill="#e4f0a0" opacity=".85"/><rect x="150.4" y="24.5" width="2.4" height="1" fill="#c8e088" opacity=".85"/><rect x="161.1" y="17.2" width="2.6" height="1" fill="#9cc870" opacity=".85"/><rect x="179.5" y="7.9" width="1.6" height="1" fill="#e4f0a0" opacity=".85"/><rect x="170.6" y="30.5" width="1.5" height="1" fill="#a8c880" opacity=".85"/><rect x="194.4" y="18.7" width="1.8" height="1" fill="#78a888" opacity=".85"/><rect x="190.8" y="3.6" width="2.3" height="1" fill="#f0f4c0" opacity=".85"/><rect x="190.8" y="4.6" width="2.0" height="1" fill="#a8c880" opacity=".85"/><rect x="195.3" y="8.2" width="2.6" height="1" fill="#d8e890" opacity=".85"/><rect x="203.7" y="31.2" width="1.9" height="1" fill="#e4f0a0" opacity=".85"/><rect x="202.3" y="41.0" width="2.4" height="1" fill="#88b070" opacity=".85"/><rect x="167.0" y="6.6" width="1.7" height="1" fill="#c8e088" opacity=".85"/><rect x="161.3" y="40.7" width="2.5" height="1" fill="#e85048" opacity=".85"/><rect x="177.1" y="5.5" width="1.2" height="1" fill="#a8c880" opacity=".85"/><rect x="191.0" y="55.2" width="1.8" height="1" fill="#a8c880" opacity=".85"/><rect x="128.3" y="54.7" width="1.4" height="1" fill="#f0f4c0" opacity=".85"/><rect x="138.7" y="52.5" width="1.8" height="1" fill="#e4f0a0" opacity=".85"/><rect x="205.3" y="16.9" width="1.8" height="1" fill="#9cc870" opacity=".85"/><rect x="138.0" y="26.2" width="1.2" height="1" fill="#e4f0a0" opacity=".85"/><rect x="187.6" y="51.1" width="1.3" height="1" fill="#a8c880" opacity=".85"/><rect x="129.9" y="29.1" width="1.4" height="1" fill="#b8d878" opacity=".85"/><rect x="185.9" y="34.4" width="1.6" height="1" fill="#88b070" opacity=".85"/><rect x="137.8" y="18.2" width="2.5" height="1" fill="#e85048" opacity=".85"/><rect x="129.5" y="14.9" width="1.8" height="1" fill="#9cc870" opacity=".85"/><rect x="137.4" y="44.5" width="1.7" height="1" fill="#d8e890" opacity=".85"/><rect x="139.0" y="35.9" width="2.6" height="1" fill="#c8e088" opacity=".85"/><rect x="134.2" y="10.3" width="2.1" height="1" fill="#f0f4c0" opacity=".85"/><rect x="151.0" y="60.4" width="2.0" height="1" fill="#88b070" opacity=".85"/><rect x="203.0" y="18.5" width="2.0" height="1" fill="#9cc870" opacity=".85"/><rect x="128.5" y="4.1" width="1.7" height="1" fill="#d8e890" opacity=".85"/><rect x="164.9" y="47.8" width="1.2" height="1" fill="#d8e890" opacity=".85"/><rect x="160.0" y="35.1" width="2.1" height="1" fill="#9cc870" opacity=".85"/><rect x="131.5" y="34.8" width="1.3" height="1" fill="#a8c880" opacity=".85"/><rect x="196.6" y="52.2" width="2.0" height="1" fill="#88b070" opacity=".85"/><rect x="162.5" y="44.5" width="2.5" height="1" fill="#f0f4c0" opacity=".85"/><rect x="171.8" y="20.6" width="2.0" height="1" fill="#e85048" opacity=".85"/><rect x="201.8" y="65.5" width="1.6" height="1" fill="#78a888" opacity=".85"/><rect x="173.5" y="46.3" width="2.1" height="1" fill="#b8d878" opacity=".85"/><rect x="185.0" y="36.6" width="1.7" height="1" fill="#c8e088" opacity=".85"/><rect x="150.6" y="38.0" width="2.4" height="1" fill="#78a888" opacity=".85"/><rect x="163.0" y="7.3" width="1.2" height="1" fill="#e85048" opacity=".85"/><rect x="143.4" y="31.9" width="1.3" height="1" fill="#e4f0a0" opacity=".85"/><rect x="136.3" y="59.1" width="1.7" height="1" fill="#f0f4c0" opacity=".85"/><rect x="147.8" y="20.7" width="2.3" height="1" fill="#e4f0a0" opacity=".85"/><rect x="147.7" y="55.5" width="2.1" height="1" fill="#a8c880" opacity=".85"/><rect x="140.2" y="53.0" width="2.2" height="1" fill="#e85048" opacity=".85"/><rect x="196.0" y="30.9" width="2.5" height="1" fill="#78a888" opacity=".85"/><rect x="173.8" y="38.9" width="2.5" height="1" fill="#f0f4c0" opacity=".85"/><rect x="171.2" y="3.9" width="1.3" height="1" fill="#e85048" opacity=".85"/><rect x="166.0" y="58.2" width="1.3" height="1" fill="#e85048" opacity=".85"/><rect x="159.4" y="29.3" width="1.9" height="1" fill="#88b070" opacity=".85"/><rect x="175.2" y="17.2" width="2.5" height="1" fill="#e4f0a0" opacity=".85"/><rect x="182.6" y="48.6" width="2.0" height="1" fill="#b8d878" opacity=".85"/><rect x="132.4" y="32.3" width="2.1" height="1" fill="#c8e088" opacity=".85"/><rect x="183.8" y="7.6" width="2.1" height="1" fill="#9cc870" opacity=".85"/><rect x="136.6" y="50.8" width="1.6" height="1" fill="#9cc870" opacity=".85"/><rect x="150.6" y="58.7" width="1.7" height="1" fill="#88b070" opacity=".85"/><rect x="163.7" y="13.1" width="1.5" height="1" fill="#9cc870" opacity=".85"/><rect x="151.8" y="41.8" width="1.8" height="1" fill="#78a888" opacity=".85"/><rect x="154.8" y="8.3" width="1.8" height="1" fill="#e85048" opacity=".85"/><rect x="167.8" y="28.2" width="1.5" height="1" fill="#88b070" opacity=".85"/><rect x="140.4" y="34.9" width="2.5" height="1" fill="#f0f4c0" opacity=".85"/><rect x="198.8" y="12.4" width="1.6" height="1" fill="#88b070" opacity=".85"/><rect x="166.6" y="63.2" width="1.5" height="1" fill="#d8e890" opacity=".85"/><rect x="179.2" y="29.7" width="2.3" height="1" fill="#f0f4c0" opacity=".85"/><rect x="150.2" y="10.1" width="1.6" height="1" fill="#f0f4c0" opacity=".85"/><rect x="193.6" y="35.8" width="1.9" height="1" fill="#e4f0a0" opacity=".85"/><rect x="202.3" y="10.6" width="2.3" height="1" fill="#f0f4c0" opacity=".85"/><rect x="134.6" y="58.2" width="1.6" height="1" fill="#e85048" opacity=".85"/><rect x="141.2" y="52.2" width="2.0" height="1" fill="#78a888" opacity=".85"/><rect x="177.1" y="48.9" width="1.6" height="1" fill="#a8c880" opacity=".85"/><rect x="194.5" y="58.9" width="1.6" height="1" fill="#9cc870" opacity=".85"/><rect x="183.5" y="29.1" width="2.4" height="1" fill="#e4f0a0" opacity=".85"/><rect x="132.3" y="7.6" width="1.3" height="1" fill="#e4f0a0" opacity=".85"/><rect x="189.2" y="59.8" width="1.9" height="1" fill="#e4f0a0" opacity=".85"/><rect x="163.4" y="7.8" width="1.8" height="1" fill="#e85048" opacity=".85"/><rect x="169.6" y="44.3" width="2.2" height="1" fill="#f0f4c0" opacity=".85"/><rect x="200.5" y="62.9" width="1.9" height="1" fill="#e4f0a0" opacity=".85"/><rect x="140.5" y="18.8" width="2.1" height="1" fill="#e4f0a0" opacity=".85"/><rect x="133.7" y="65.5" width="2.0" height="1" fill="#a8c880" opacity=".85"/><rect x="136.1" y="22.6" width="1.8" height="1" fill="#a8c880" opacity=".85"/><rect x="130.2" y="58.9" width="2.6" height="1" fill="#78a888" opacity=".85"/><rect x="157.1" y="43.2" width="2.5" height="1" fill="#f0f4c0" opacity=".85"/><rect x="196.4" y="48.1" width="1.3" height="1" fill="#9cc870" opacity=".85"/><rect x="131.3" y="62.5" width="1.9" height="1" fill="#88b070" opacity=".85"/><rect x="170.6" y="53.6" width="2.1" height="1" fill="#9cc870" opacity=".85"/><rect x="149.4" y="50.2" width="1.6" height="1" fill="#88b070" opacity=".85"/><rect x="158.9" y="48.0" width="1.3" height="1" fill="#e85048" opacity=".85"/><rect x="143.0" y="47.1" width="2.2" height="1" fill="#e4f0a0" opacity=".85"/><rect x="162.1" y="18.0" width="1.5" height="1" fill="#e4f0a0" opacity=".85"/><rect x="183.6" y="19.5" width="1.8" height="1" fill="#78a888" opacity=".85"/><rect x="190.1" y="33.6" width="1.6" height="1" fill="#9cc870" opacity=".85"/><rect x="176.4" y="47.2" width="2.0" height="1" fill="#c8e088" opacity=".85"/><rect x="136.7" y="51.4" width="1.7" height="1" fill="#e85048" opacity=".85"/><rect x="164.9" y="56.4" width="2.4" height="1" fill="#c8e088" opacity=".85"/><rect x="199.4" y="21.1" width="1.7" height="1" fill="#9cc870" opacity=".85"/><rect x="137.5" y="29.7" width="1.8" height="1" fill="#78a888" opacity=".85"/><rect x="149.9" y="15.5" width="2.5" height="1" fill="#b8d878" opacity=".85"/><rect x="127.2" y="62.7" width="1.6" height="1" fill="#a8c880" opacity=".85"/><rect x="179.1" y="29.8" width="2.4" height="1" fill="#88b070" opacity=".85"/><rect x="153.8" y="49.4" width="1.9" height="1" fill="#e85048" opacity=".85"/><rect x="189.1" y="4.2" width="2.0" height="1" fill="#b8d878" opacity=".85"/><rect x="169.5" y="33.7" width="1.9" height="1" fill="#f0f4c0" opacity=".85"/><rect x="130.5" y="37.0" width="1.9" height="1" fill="#e4f0a0" opacity=".85"/><rect x="185.0" y="13.9" width="1.4" height="1" fill="#c8e088" opacity=".85"/><rect x="145.8" y="55.5" width="2.1" height="1" fill="#a8c880" opacity=".85"/><rect x="159.9" y="57.7" width="2.1" height="1" fill="#b8d878" opacity=".85"/><rect x="143.2" y="18.1" width="1.3" height="1" fill="#c8e088" opacity=".85"/><rect x="156.4" y="40.0" width="1.5" height="1" fill="#e4f0a0" opacity=".85"/><rect x="156.4" y="40.9" width="2.3" height="1" fill="#88b070" opacity=".85"/><rect x="188.8" y="49.1" width="2.4" height="1" fill="#c8e088" opacity=".85"/><rect x="193.2" y="12.6" width="1.3" height="1" fill="#b8d878" opacity=".85"/><rect x="142.0" y="15.2" width="1.4" height="1" fill="#88b070" opacity=".85"/><rect x="197.8" y="32.9" width="1.6" height="1" fill="#e4f0a0" opacity=".85"/><rect x="129.0" y="53.4" width="2.3" height="1" fill="#e85048" opacity=".85"/><rect x="163.7" y="42.3" width="2.0" height="1" fill="#e85048" opacity=".85"/><rect x="143.2" y="44.3" width="1.8" height="1" fill="#c8e088" opacity=".85"/><rect x="142.9" y="7.4" width="1.7" height="1" fill="#e4f0a0" opacity=".85"/><rect x="169.1" y="59.2" width="1.4" height="1" fill="#a8c880" opacity=".85"/><rect x="127.4" y="30.3" width="1.6" height="1" fill="#a8c880" opacity=".85"/><rect x="157.9" y="51.9" width="1.4" height="1" fill="#a8c880" opacity=".85"/><rect x="181.3" y="17.0" width="1.8" height="1" fill="#88b070" opacity=".85"/><rect x="138.7" y="63.8" width="1.6" height="1" fill="#c8e088" opacity=".85"/><rect x="187.4" y="47.0" width="2.4" height="1" fill="#9cc870" opacity=".85"/><rect x="187.1" y="58.2" width="2.5" height="1" fill="#a8c880" opacity=".85"/><rect x="191.9" y="60.0" width="2.0" height="1" fill="#88b070" opacity=".85"/><rect x="184.7" y="16.0" width="2.0" height="1" fill="#b8d878" opacity=".85"/><rect x="142.2" y="36.9" width="2.4" height="1" fill="#f0f4c0" opacity=".85"/><rect x="176.9" y="47.9" width="1.8" height="1" fill="#78a888" opacity=".85"/><rect x="176.4" y="14.8" width="2.0" height="1" fill="#a8c880" opacity=".85"/><rect x="201.6" y="50.1" width="2.2" height="1" fill="#88b070" opacity=".85"/><rect x="202.4" y="55.8" width="1.7" height="1" fill="#e4f0a0" opacity=".85"/><rect x="165.4" y="26.4" width="2.6" height="1" fill="#e85048" opacity=".85"/><rect x="156.2" y="59.1" width="1.6" height="1" fill="#e85048" opacity=".85"/><rect x="162.6" y="61.2" width="2.1" height="1" fill="#c8e088" opacity=".85"/><rect x="159.5" y="28.1" width="2.0" height="1" fill="#b8d878" opacity=".85"/><rect x="145.1" y="21.8" width="2.3" height="1" fill="#e4f0a0" opacity=".85"/><rect x="188.1" y="33.8" width="1.3" height="1" fill="#e85048" opacity=".85"/><rect x="151.8" y="8.4" width="1.7" height="1" fill="#78a888" opacity=".85"/><rect x="152.3" y="57.3" width="2.3" height="1" fill="#9cc870" opacity=".85"/><rect x="176.6" y="52.4" width="2.5" height="1" fill="#e4f0a0" opacity=".85"/><rect x="187.2" y="58.2" width="2.2" height="1" fill="#e4f0a0" opacity=".85"/><rect x="130.3" y="35.6" width="1.9" height="1" fill="#88b070" opacity=".85"/><rect x="151.0" y="30.0" width="2.1" height="1" fill="#e85048" opacity=".85"/><rect x="132.7" y="45.8" width="1.5" height="1" fill="#9cc870" opacity=".85"/><rect x="192.5" y="40.5" width="1.3" height="1" fill="#a8c880" opacity=".85"/><rect x="150.0" y="9.3" width="1.7" height="1" fill="#a8c880" opacity=".85"/><rect x="134.0" y="24.9" width="1.5" height="1" fill="#e4f0a0" opacity=".85"/><rect x="163.4" y="9.5" width="2.4" height="1" fill="#f0f4c0" opacity=".85"/><rect x="129.9" y="64.1" width="2.2" height="1" fill="#b8d878" opacity=".85"/><rect x="173.9" y="59.3" width="1.6" height="1" fill="#88b070" opacity=".85"/><rect x="191.7" y="34.9" width="1.7" height="1" fill="#c8e088" opacity=".85"/><rect x="134.4" y="35.4" width="2.4" height="1" fill="#a8c880" opacity=".85"/><rect x="178.7" y="42.0" width="1.8" height="1" fill="#a8c880" opacity=".85"/><rect x="136.8" y="7.3" width="1.7" height="1" fill="#b8d878" opacity=".85"/><rect x="151.2" y="26.3" width="2.0" height="1" fill="#e85048" opacity=".85"/><rect x="135.6" y="3.9" width="1.4" height="1" fill="#9cc870" opacity=".85"/><rect x="130.4" y="10.1" width="2.3" height="1" fill="#b8d878" opacity=".85"/><rect x="132.4" y="8.4" width="2.1" height="1" fill="#9cc870" opacity=".85"/><rect x="161.1" y="17.9" width="1.8" height="1" fill="#9cc870" opacity=".85"/><rect x="139.8" y="24.2" width="2.2" height="1" fill="#c8e088" opacity=".85"/><rect x="171.4" y="28.2" width="1.9" height="1" fill="#88b070" opacity=".85"/><rect x="193.7" y="14.5" width="1.9" height="1" fill="#f0f4c0" opacity=".85"/><rect x="193.9" y="8.9" width="1.8" height="1" fill="#9cc870" opacity=".85"/></g></svg></div>
<div class="tile" style="left:903.6px;top:772.6px"><svg width="210" height="210" viewBox="0 0 210 210"><rect width="210" height="210" fill="#585c63"/><rect x="15.4" y="-15.8" width="59.6" height="61.0" rx="24" fill="#fdfdfd"/><rect x="26.1" y="14.3" width="38.2" height="18.1" rx="9" fill="#585c63"/><rect x="34.8" y="-2.4" width="20.1" height="21.4" fill="#585c63"/><rect x="148.1" y="5.0" width="58.3" height="44.2" rx="24" fill="#fdfdfd"/><rect x="158.1" y="18.4" width="37.5" height="18.1" rx="9" fill="#585c63"/><rect x="164.2" y="-2.4" width="21.4" height="25.5" fill="#585c63"/><rect x="148.8" y="0.0" width="10.1" height="2.4" fill="#fdfdfd"/><rect x="82.4" y="3.6" width="57.0" height="13.4" fill="#fdfdfd"/><rect x="82.4" y="0.0" width="10.1" height="29.5" fill="#fdfdfd"/><rect x="82.4" y="37.8" width="57.0" height="7.0" fill="#fdfdfd"/><polygon points="139.4,44.8 139.4,51.2 108.5,66.2 90.5,66.2 123.3,44.8" fill="#fdfdfd"/><rect x="15.4" y="55.2" width="57.0" height="12.1" fill="#fdfdfd"/><rect x="148.8" y="57.9" width="15.0" height="9.4" fill="#fdfdfd"/><rect x="172.9" y="57.9" width="9.6" height="9.4" fill="#fdfdfd"/><rect x="193.0" y="57.9" width="13.4" height="9.4" fill="#fdfdfd"/><polygon points="0.0,0.0 7.0,0.0 2.7,7.0 0.0,8.3" fill="#fdfdfd"/><rect x="0.0" y="16.3" width="6.0" height="9.4" fill="#fdfdfd"/><rect x="0.0" y="31.1" width="6.4" height="6.7" fill="#fdfdfd"/><polygon points="0.0,47.2 7.4,44.5 4.7,59.2 0.0,61.9" fill="#fdfdfd"/></svg></div>
<div class="tile" style="left:1125.2px;top:772.6px"><svg width="210" height="210" viewBox="0 0 210 210" font-family="Liberation Sans, sans-serif"><defs><filter id="t5b"><feGaussianBlur stdDeviation=".7"/></filter></defs><rect width="210" height="210" fill="#14a4e6"/><g filter="url(#t5b)"><polygon points="148.5,0.0 151.8,0.0 146.9,66.3 157.3,66.3" fill="#5cc8f4" opacity=".7"/><polygon points="141.3,0.0 144.3,0.0 148.4,66.3 142.9,66.3" fill="#5cc8f4" opacity=".7"/><polygon points="167.1,0.0 169.2,0.0 173.0,66.3 163.7,66.3" fill="#0e60b8" opacity=".7"/><polygon points="137.5,0.0 139.1,0.0 131.7,66.3 136.0,66.3" fill="#0e60b8" opacity=".7"/><polygon points="168.3,0.0 171.5,0.0 180.7,66.3 176.1,66.3" fill="#5cc8f4" opacity=".7"/><polygon points="209.6,0.0 210.8,0.0 217.6,66.3 210.7,66.3" fill="#5cc8f4" opacity=".7"/><polygon points="157.4,0.0 160.1,0.0 164.0,66.3 164.9,66.3" fill="#1878cc" opacity=".7"/><polygon points="176.9,0.0 178.2,0.0 171.9,66.3 191.3,66.3" fill="#0e60b8" opacity=".7"/><polygon points="186.5,0.0 187.9,0.0 200.3,66.3 189.4,66.3" fill="#7ad8f8" opacity=".7"/><polygon points="200.8,0.0 202.5,0.0 203.1,66.3 213.6,66.3" fill="#1878cc" opacity=".7"/><polygon points="143.0,0.0 145.5,0.0 150.2,66.3 142.6,66.3" fill="#38b8f0" opacity=".7"/><polygon points="206.3,0.0 209.3,0.0 213.4,66.3 203.1,66.3" fill="#1878cc" opacity=".7"/><polygon points="158.8,0.0 160.5,0.0 168.2,66.3 170.0,66.3" fill="#7ad8f8" opacity=".7"/><polygon points="203.4,0.0 205.7,0.0 205.9,66.3 216.9,66.3" fill="#38b8f0" opacity=".7"/><polygon points="157.8,0.0 159.5,0.0 161.6,66.3 158.8,66.3" fill="#0e60b8" opacity=".7"/><polygon points="144.4,0.0 146.4,0.0 142.4,66.3 152.2,66.3" fill="#5cc8f4" opacity=".7"/><polygon points="146.5,0.0 149.4,0.0 148.6,66.3 139.0,66.3" fill="#0e60b8" opacity=".7"/><polygon points="157.7,0.0 159.1,0.0 161.6,66.3 155.3,66.3" fill="#0e60b8" opacity=".7"/><polygon points="175.5,0.0 177.5,0.0 171.5,66.3 169.2,66.3" fill="#5cc8f4" opacity=".7"/><polygon points="133.1,0.0 135.7,0.0 145.9,66.3 137.7,66.3" fill="#1878cc" opacity=".7"/><polygon points="194.9,0.0 197.2,0.0 206.0,66.3 210.2,66.3" fill="#5cc8f4" opacity=".7"/><polygon points="145.5,0.0 148.7,0.0 148.9,66.3 153.2,66.3" fill="#5cc8f4" opacity=".7"/><polygon points="189.8,0.0 191.7,0.0 206.6,66.3 182.0,66.3" fill="#0e60b8" opacity=".7"/><polygon points="147.2,0.0 150.3,0.0 143.2,66.3 162.1,66.3" fill="#7ad8f8" opacity=".7"/><polygon points="144.1,0.0 146.0,0.0 148.3,66.3 139.1,66.3" fill="#1878cc" opacity=".7"/><polygon points="178.8,0.0 181.0,0.0 184.3,66.3 174.5,66.3" fill="#5cc8f4" opacity=".7"/><polygon points="0.0,0.0 21.6,0.0 7.2,19.0 20.3,38.7 25.6,66.3 0.0,66.3" fill="#b21aa6"/><polygon points="0.0,11.1 5.9,20.3 11.1,51.8 7.2,66.3 0.0,66.3" fill="#4a1068"/><polygon points="21.6,0.0 72.7,0.0 88.4,9.8 93.7,32.1 91.1,42.6 97.0,54.4 91.1,66.3 25.6,66.3 19.0,38.7 7.2,19.0" fill="#1cacec"/><ellipse cx="49.1" cy="36.0" rx="19.7" ry="11.8" fill="#4cccf8" opacity=".8"/><ellipse cx="60.9" cy="13.8" rx="11.8" ry="6.6" fill="#46c8f6" opacity=".7"/><ellipse cx="80.6" cy="33.4" rx="6.6" ry="9.2" fill="#3cc0f4" opacity=".8"/><polygon points="7.2,19.0 19.0,38.7 25.6,66.3 15.1,66.3 11.1,42.6" fill="#1484d4"/><polygon points="50.4,0.0 84.5,0.0 78.0,5.9 60.9,4.6" fill="#9a20a4"/><polygon points="67.5,0.0 91.1,7.2 88.4,11.1 72.7,4.6" fill="#7a28b0"/><polygon points="32.8,17.0 45.2,13.1 48.5,15.7 36.0,21.0" fill="#8a2aa8"/><polygon points="77.3,21.0 83.2,19.0 84.5,21.6 79.3,23.6" fill="#8a2aa8"/><polygon points="76.0,47.8 83.2,41.3 91.1,42.6 89.8,47.8 80.6,51.1" fill="#a01c9c"/><polygon points="79.9,41.9 89.8,38.7 91.1,42.6 83.2,44.5" fill="#b8ecfc"/><polygon points="97.6,38.7 117.3,37.3 140.9,41.3 138.2,66.3 127.8,66.3 125.1,51.8 114.6,49.1 112.0,66.3 102.9,66.3" fill="#a41ca2"/><polygon points="114.6,42.6 130.4,43.9 129.1,51.8 117.3,49.1" fill="#2a1848" opacity=".7"/></g><polygon points="83.2,0.0 97.0,0.0 89.8,11.8" fill="#f8ec00"/><polygon points="194.6,0.0 211.6,0.0 211.6,21.6" fill="#f8ec00"/><ellipse cx="118.6" cy="17.7" rx="26.9" ry="17.7" fill="#f01020" transform="rotate(12 118.6 17.7)"/><polygon points="102.9,28.2 116.0,33.7 97.4,37.1" fill="#f01020"/><g transform="rotate(24 118.6 16.4)" fill="#fbe8e8" font-size="4.800" font-weight="bold" text-anchor="middle"><text x="119.2" y="11.8" textLength="34.1" lengthAdjust="spacingAndGlyphs">INSPIRATION</text><text x="116.6" y="18.3" textLength="26.2" lengthAdjust="spacingAndGlyphs">FOR YOUR</text><text x="114.6" y="24.9" textLength="13.1" lengthAdjust="spacingAndGlyphs">MIND</text></g><circle cx="65.5" cy="54.4" r="1.6" fill="#f0e820"/><circle cx="79.3" cy="57.0" r="1.0" fill="#f0e820"/><circle cx="92.4" cy="48.5" r="1.0" fill="#f0e820"/><circle cx="52.4" cy="44.5" r="0.8" fill="#f0e820"/><circle cx="74.0" cy="60.7" r="0.8" fill="#f0e820"/><circle cx="100.2" cy="45.2" r="0.8" fill="#f0e820"/></svg></div>

</div>
<div id="chat" class="abs">
 <i class="abs" style="left:13px;top:8.500px;width:11px;height:11px;border-radius:50%;background:radial-gradient(circle at 40% 35%,#6fdc6f,#18a02c)"></i>
 <span class="abs" style="left:30px;top:5px;font-size:14px;line-height:18px;color:#111;white-space:nowrap"><b>Chat</b> (0)</span>
 <i class="abs" style="left:88px;top:0;width:1px;height:28px;background:#c2c2c2"></i>
 <svg class="abs" style="left:96px;top:5.500px" width="16" height="17" viewBox="0 0 16 17"><path d="M3.200 1.200c1-.7 2-.6 2.500.3l1 2c.4.800.1 1.500-.6 2l-.8.600c.8 2 2 3.600 3.800 4.800l.8-.7c.7-.6 1.500-.6 2.100 0l1.500 1.500c.7.700.6 1.700-.2 2.400-1.300 1.200-3 1.300-4.800.3C5.700 12.800 3.300 9.800 2.100 6.300 1.500 4.300 1.900 2.300 3.200 1.200z" fill="#999"/></svg>
</div>
</body></html>
